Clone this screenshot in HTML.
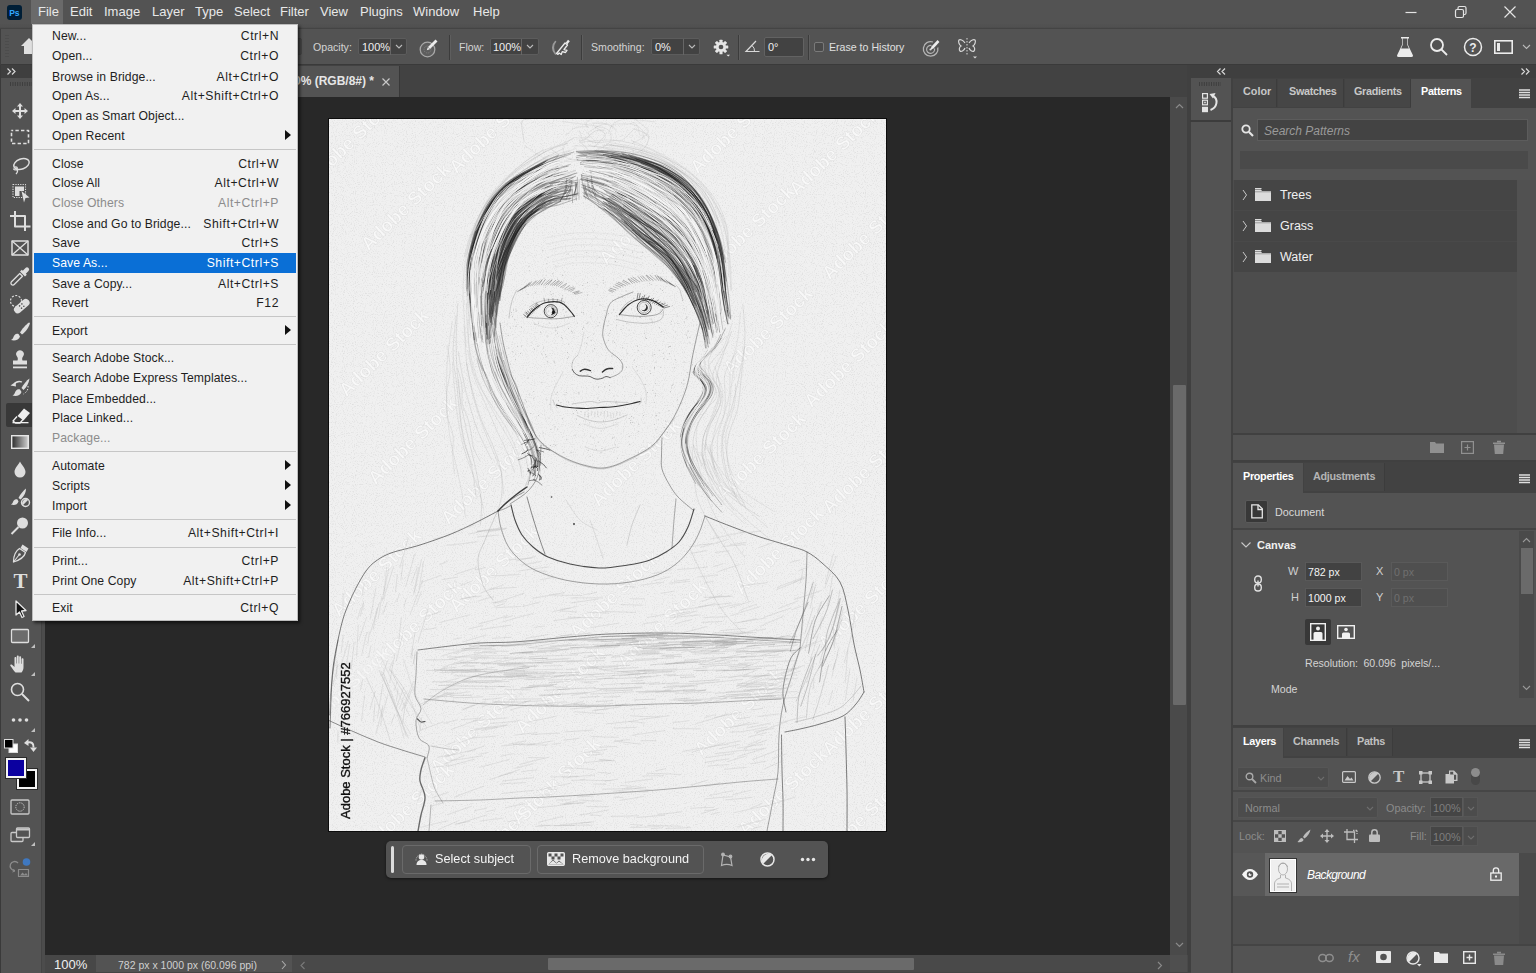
<!DOCTYPE html>
<html><head><meta charset="utf-8"><title>Photoshop</title>
<style>
*{box-sizing:border-box;margin:0;padding:0}
html,body{width:1536px;height:973px;overflow:hidden;background:#535353;font-family:"Liberation Sans",sans-serif;color:#ddd}
.a,#root div,#root span,#root svg{position:absolute}
#root{position:relative;width:1536px;height:973px;overflow:hidden;background:#535353}
.t{white-space:nowrap;font-size:11px;line-height:14px;color:#d4d4d4}
.b{font-weight:bold}
svg{overflow:visible}
/* menubar */
#menubar{left:0;top:0;width:1536px;height:24px;background:#535353}
#menubar .m{top:3px;font-size:13px;line-height:17px;color:#e8e8e8;white-space:nowrap}
#band{left:0;top:24px;width:1536px;height:6px;background:linear-gradient(#525252 0,#505050 55%,#444 70%,#444 100%)}
#optbar{left:0;top:29px;width:1536px;height:36px;background:#535353;border-bottom:1px solid #3a3a3a}
.inp{background:#424242;border:1px solid #5c5c5c;height:17px;border-radius:2px}
.vsep{width:1px;background:#3c3c3c;border-right:1px solid #5e5e5e;box-sizing:content-box}
/* doc area */
#tabrow{left:44px;top:65px;width:1144px;height:32px;background:#424242}
#canvas{left:45px;top:97px;width:1125px;height:858px;background:#282828}
#toolbar{left:0;top:78px;width:45px;height:895px;background:#535353}
#tbhead{left:0;top:65px;width:45px;height:13px;background:#3f3f3f}
/* file menu */
#fmenu{left:32px;top:24px;width:266px;height:597px;background:#f1f1f1;border:1px solid #bdbdbd;box-shadow:2px 2px 3px rgba(0,0,0,.6);font-size:12.2px;color:#1e1e1e}
#fmenu .r{left:1px;width:262px;height:20px;line-height:20px;white-space:nowrap}
#fmenu .r b{position:absolute;left:18px;font-weight:normal;letter-spacing:.08px}
#fmenu .r i{position:absolute;right:17px;font-style:normal;letter-spacing:.55px}
#fmenu .r.d{color:#8c8c8c}
#fmenu .r.h{background:#0a6fd6;color:#fff}
#fmenu .s{left:1px;width:262px;height:1px;background:#c6c6c6}
#fmenu .ar{right:5px;top:4px;width:0;height:0;border-left:6px solid #111;border-top:5.5px solid transparent;border-bottom:5.5px solid transparent}
</style></head><body><div id="root">
<div id="menubar">
<div style="left:31px;top:0;width:32px;height:24px;background:#6a6a6a"></div>
<svg style="left:7px;top:5px" width="15" height="15" viewBox="0 0 15 15"><rect width="15" height="15" rx="3" fill="#001e36"/><text x="2.2" y="11" font-family="Liberation Sans,sans-serif" font-size="8.5" font-weight="bold" fill="#31a8ff">Ps</text></svg>
<div class="m" style="left:38px">File</div><div class="m" style="left:70px">Edit</div><div class="m" style="left:104px">Image</div><div class="m" style="left:152px">Layer</div><div class="m" style="left:195px">Type</div><div class="m" style="left:234px">Select</div><div class="m" style="left:280px">Filter</div><div class="m" style="left:320px">View</div><div class="m" style="left:360px">Plugins</div><div class="m" style="left:413px">Window</div><div class="m" style="left:473px">Help</div>
<svg style="left:1400px;top:4px" width="124" height="16" viewBox="0 0 124 16" fill="none" stroke="#e4e4e4" stroke-width="1.2"><path d="M5.5 8.5h11"/><rect x="55.5" y="5.5" width="8" height="8" rx="1.5"/><path d="M58 5.5v-1.5a1.5 1.5 0 0 1 1.500-1.500h5a1.500 1.500 0 0 1 1.500 1.500v5a1.500 1.500 0 0 1-1.500 1.500h-1.500"/><path d="M104.500 2.500l11 11M115.500 2.500l-11 11"/></svg>
</div>
<div id="band"></div>
<div id="optbar">
<div style="left:0;top:0;width:1px;height:36px;background:#3e3e3e"></div>
<!-- grip + home -->
<svg style="left:5px;top:6px" width="4" height="24"><path d="M1 0v24M3 0v24" stroke="#474747" stroke-width="1" stroke-dasharray="1 2"/></svg>
<svg style="left:21px;top:9px" width="16" height="17" viewBox="0 0 16 17"><path d="M8 0L0 8h3v8h10V8h3z" fill="#e0e0e0"/></svg>
<div class="inp" style="left:291px;top:9px;width:11px;border-color:#444;background:#484848"></div>
<div class="t" style="left:313px;top:11px;font-size:10.6px">Opacity:</div>
<div class="inp" style="left:358px;top:9px;width:49px"></div><div style="left:390px;top:10px;width:1px;height:16px;background:#666"></div>
<div class="t" style="left:362px;top:11px;color:#f0f0f0;font-size:11px">100%</div>
<svg style="left:395px;top:15px" width="8" height="6" fill="none" stroke="#bbb" stroke-width="1.1"><path d="M1 1l3 3 3-3"/></svg>
<svg style="left:417px;top:8px" width="24" height="22" viewBox="417 37 24 22" fill="none"><circle cx="427.500" cy="49.500" r="7.300" stroke="#a8a8a8" stroke-width="1.300" fill="#5e5e5e"/><circle cx="427.500" cy="49.500" r="3.500" stroke="#8a8a8a" stroke-width=".8" stroke-dasharray="1 1"/><path d="M429 48l7.500-7.500" stroke="#ececec" stroke-width="2.800"/><path d="M426.800 50.200l1-3 2 2z" fill="#ececec"/></svg>
<div class="vsep" style="left:449px;top:6px;height:25px"></div>
<div class="t" style="left:459px;top:11px;font-size:10.6px">Flow:</div>
<div class="inp" style="left:490px;top:9px;width:49px"></div><div style="left:521px;top:10px;width:1px;height:16px;background:#666"></div>
<div class="t" style="left:493px;top:11px;color:#f0f0f0">100%</div>
<svg style="left:526px;top:15px" width="8" height="6" fill="none" stroke="#bbb" stroke-width="1.1"><path d="M1 1l3 3 3-3"/></svg>
<svg style="left:548px;top:8px" width="24" height="22" viewBox="548 37 24 22" fill="none"><path d="M555.500 41.500a8.500 8.500 0 0 0 0 12.500a10 10 0 0 1 0-12.500z" fill="#9a9a9a" stroke="#9a9a9a" stroke-width="1.600" stroke-linejoin="round"/><path d="M556.500 53.500l8.500-10.500 2.500 2-3.500 4.500 3 .8-1.500 2.200-3.300-.8-1 2.800-2-1.600-1.200 1.500z" stroke="#ececec" stroke-width="1.300" stroke-linejoin="round"/><path d="M565.500 43l2.500-3.200 1.800 1.500-2.300 3z" fill="#ececec"/></svg>
<div class="vsep" style="left:581px;top:6px;height:25px"></div>
<div class="t" style="left:591px;top:11px;font-size:10.6px">Smoothing:</div>
<div class="inp" style="left:651px;top:9px;width:49px"></div><div style="left:683px;top:10px;width:1px;height:16px;background:#666"></div>
<div class="t" style="left:655px;top:11px;color:#f0f0f0">0%</div>
<svg style="left:688px;top:15px" width="8" height="6" fill="none" stroke="#bbb" stroke-width="1.1"><path d="M1 1l3 3 3-3"/></svg>
<svg style="left:711px;top:8px" width="20" height="20" viewBox="-11 -11 22 22"><g fill="#e6e6e6"><circle r="5.600"/><rect x="-1.700" y="-8" width="3.400" height="16" rx=".6"/><rect transform="rotate(45)" x="-1.700" y="-8" width="3.400" height="16" rx=".6"/><rect transform="rotate(90)" x="-1.700" y="-8" width="3.400" height="16" rx=".6"/><rect transform="rotate(135)" x="-1.700" y="-8" width="3.400" height="16" rx=".6"/></g><circle r="2.600" fill="#535353"/><path d="M6 8.500h4l-2 2z" fill="#e6e6e6"/></svg>
<div class="vsep" style="left:738px;top:6px;height:25px"></div>
<svg style="left:745px;top:11px" width="15" height="13" viewBox="0 0 15 13" fill="none" stroke="#d8d8d8" stroke-width="1.2"><path d="M11 1L1 11.500h13.500"/><path d="M7 5.500a7 7 0 0 1 2.500 6" stroke-width="1"/></svg>
<div class="inp" style="left:764px;top:8px;width:40px;height:20px;border-color:#626262"></div>
<div class="t" style="left:768px;top:11px;color:#f0f0f0">0°</div>
<div class="vsep" style="left:808px;top:6px;height:25px"></div>
<div style="left:814px;top:13px;width:10px;height:10px;border:1px solid #7a7a7a;border-radius:2px;background:#4a4a4a"></div>
<div class="t" style="left:829px;top:11px;font-size:10.600px;color:#e0e0e0">Erase to History</div>
<svg style="left:920px;top:8px" width="24" height="22" viewBox="920 37 24 22" fill="none"><path d="M933 42a7.300 7.300 0 1 0 4.800 5.500" stroke="#b4b4b4" stroke-width="1.300"/><path d="M931.500 45.500a4 4 0 1 0 3 3" stroke="#b4b4b4" stroke-width="1.200"/><circle cx="930.500" cy="49.500" r="1.100" fill="#d8d8d8"/><path d="M932 48l6.500-7" stroke="#ececec" stroke-width="2.600"/><path d="M930.300 49.800l1-2.800 1.800 1.800z" fill="#ececec"/></svg>
<svg style="left:955px;top:7px" width="24" height="24" viewBox="0 0 24 24" fill="none" stroke="#d8d8d8" stroke-width="1.200"><path d="M10 7c-2-3-5-4-6-3s0 5 2 6c-2 1-2 4-1 5s4 0 5-3"/><path d="M14 7c2-3 5-4 6-3s0 5-2 6c2 1 2 4 1 5s-4 0-5-3"/><path d="M12 2v18" stroke-dasharray="1.500 1.500" stroke-width="1"/><path d="M18 20.500h4l-2 2z" fill="#d8d8d8" stroke="none"/></svg>
<!-- right icons -->
<svg style="left:1396px;top:7px" width="18" height="22" viewBox="0 0 18 22"><path d="M5 1h8v1.500h-1.200v6l5 10.500a1.500 1.500 0 0 1-1.400 2h-12.800a1.500 1.500 0 0 1-1.400-2l5-10.500v-6h-1.200z" fill="#ececec"/><path d="M6.800 2.500h4.400v6.300l1.700 3.700h-7.800l1.700-3.700z" fill="#535353"/></svg>
<svg style="left:1429px;top:8px" width="20" height="20" viewBox="0 0 20 20" fill="none" stroke="#ececec" stroke-width="1.800"><circle cx="8" cy="8" r="6"/><path d="M12.500 12.500l5.500 5.500"/></svg>
<svg style="left:1463px;top:8px" width="20" height="20" viewBox="0 0 20 20"><circle cx="10" cy="10" r="8.500" fill="none" stroke="#ececec" stroke-width="1.500"/><text x="10" y="14.500" text-anchor="middle" font-family="Liberation Sans,sans-serif" font-weight="bold" font-size="12" fill="#ececec">?</text></svg>
<svg style="left:1494px;top:11px" width="20" height="15" viewBox="0 0 20 15"><rect x=".8" y=".8" width="17.400" height="12.400" fill="none" stroke="#ececec" stroke-width="1.600"/><rect x="3" y="3" width="3" height="8" fill="#ececec"/></svg>
<svg style="left:1522px;top:15px" width="9" height="6" fill="none" stroke="#bbb" stroke-width="1.1"><path d="M1 1l3.500 3.500 3.500-3.500"/></svg>
</div>
<div id="tabrow">
<div style="left:0;top:1px;width:356px;height:31px;background:#535353;border-right:1px solid #383838"></div>
<div class="t b" style="right:814px;top:9px;font-size:12px;color:#e6e6e6">AdobeStock_766927552.jpeg @ 100% (RGB/8#) *</div>
<svg style="left:338px;top:13px" width="8" height="8" stroke="#c8c8c8" stroke-width="1.2"><path d="M.5.5l7 7M7.500.5l-7 7"/></svg>
</div>
<div id="canvas"></div>
<!-- v scrollbar -->
<div style="left:1170px;top:97px;width:17px;height:858px;background:#4a4a4a"></div>
<div style="left:1187px;top:65px;width:4px;height:908px;background:#404040"></div>
<svg style="left:1175px;top:103px" width="9" height="6" fill="none" stroke="#8a8a8a" stroke-width="1.2"><path d="M1 5l3.500-3.500 3.500 3.500"/></svg>
<svg style="left:1175px;top:942px" width="9" height="6" fill="none" stroke="#8a8a8a" stroke-width="1.2"><path d="M1 1l3.500 3.500 3.500-3.500"/></svg>
<div style="left:1173px;top:385px;width:13px;height:320px;background:#6a6a6a;border-radius:1px"></div>
<!-- status bar -->
<div style="left:45px;top:955px;width:1143px;height:18px;background:#494949"></div>
<div style="left:45px;top:955px;width:51px;height:18px;background:#474747"></div>
<div class="t" style="left:54px;top:957px;font-size:13px;line-height:16px;color:#f0f0f0">100%</div>
<div style="left:96px;top:955px;width:196px;height:18px;background:#535353"></div>
<div class="t" style="left:118px;top:958px;font-size:10.500px;color:#d0d0d0">782 px x 1000 px (60.096 ppi)</div>
<svg style="left:281px;top:960px" width="6" height="10" fill="none" stroke="#aaa" stroke-width="1.1"><path d="M1 1l3.500 4-3.500 4"/></svg>
<svg style="left:300px;top:961px" width="6" height="9" fill="none" stroke="#7a7a7a" stroke-width="1.1"><path d="M4.500 1l-3.500 3.500 3.500 3.500"/></svg>
<svg style="left:1157px;top:961px" width="6" height="9" fill="none" stroke="#8a8a8a" stroke-width="1.1"><path d="M1 1l3.500 3.500-3.500 3.500"/></svg>
<div style="left:548px;top:958px;width:366px;height:12px;background:#6a6a6a;border-radius:1px"></div>
<div style="left:1170px;top:955px;width:17px;height:18px;background:#4f4f4f"></div>
<div style="left:0;top:972px;width:1536px;height:1px;background:#444"></div>
<div style="left:328px;top:118px;width:559px;height:714px;background:#0c0c0c"></div>
<div id="doc" style="left:329px;top:119px;width:557px;height:712px;background:#f0f0f0;overflow:hidden">
<svg id="sk" style="left:0;top:0" width="557" height="712" viewBox="329 119 557 712">
<defs><filter id="gr" x="0" y="0" width="100%" height="100%"><feTurbulence type="fractalNoise" baseFrequency=".9" numOctaves="2" seed="3"/><feColorMatrix values="0 0 0 0 0  0 0 0 0 0  0 0 0 0 0  2 0 0 0 -1"/></filter></defs><rect x="329" y="119" width="557" height="712" filter="url(#gr)" opacity=".1"/>
<g font-family="Liberation Sans,sans-serif" font-weight="bold" font-size="19" fill="#f9f9f9" stroke="#dcdcdc" stroke-width=".45" text-anchor="middle" opacity=".85">
<text transform="translate(351.0 141.0) rotate(-44)" y="6">Adobe Stock</text>
<text transform="translate(406.0 207.0) rotate(-44)" y="6">Adobe Stock</text>
<text transform="translate(384.0 353.0) rotate(-44)" y="6">Adobe Stock</text>
<text transform="translate(413.0 441.0) rotate(-44)" y="6">Adobe Stock</text>
<text transform="translate(494.0 130.0) rotate(-44)" y="6">Adobe Stock</text>
<text transform="translate(486.0 481.0) rotate(-44)" y="6">Adobe Stock</text>
<text transform="translate(644.0 221.5) rotate(-44)" y="6">Adobe Stock</text>
<text transform="translate(750.0 229.0) rotate(-44)" y="6">Adobe Stock</text>
<text transform="translate(735.0 130.0) rotate(-44)" y="6">Adobe Stock</text>
<text transform="translate(834.0 152.0) rotate(-44)" y="6">Adobe Stock</text>
<text transform="translate(867.0 236.0) rotate(-44)" y="6">Adobe Stock</text>
<text transform="translate(768.0 331.0) rotate(-44)" y="6">Adobe Stock</text>
<text transform="translate(849.0 364.0) rotate(-44)" y="6">Adobe Stock</text>
<text transform="translate(761.0 456.0) rotate(-44)" y="6">Adobe Stock</text>
<text transform="translate(867.0 470.0) rotate(-44)" y="6">Adobe Stock</text>
<text transform="translate(636.0 463.0) rotate(-44)" y="6">Adobe Stock</text>
<text transform="translate(376.6 573.0) rotate(-44)" y="6">Adobe Stock</text>
<text transform="translate(417.0 624.0) rotate(-44)" y="6">Adobe Stock</text>
<text transform="translate(494.0 569.0) rotate(-44)" y="6">Adobe Stock</text>
<text transform="translate(475.0 730.0) rotate(-44)" y="6">Adobe Stock</text>
<text transform="translate(556.0 781.0) rotate(-44)" y="6">Adobe Stock</text>
<text transform="translate(614.5 595.0) rotate(-44)" y="6">Adobe Stock</text>
<text transform="translate(662.0 624.0) rotate(-44)" y="6">Adobe Stock</text>
<text transform="translate(739.0 712.0) rotate(-44)" y="6">Adobe Stock</text>
<text transform="translate(779.0 551.0) rotate(-44)" y="6">Adobe Stock</text>
<text transform="translate(863.0 606.0) rotate(-44)" y="6">Adobe Stock</text>
<text transform="translate(867.0 712.0) rotate(-44)" y="6">Adobe Stock</text>
<text transform="translate(783.0 792.0) rotate(-44)" y="6">Adobe Stock</text>
<text transform="translate(863.0 818.0) rotate(-44)" y="6">Adobe Stock</text>
<text transform="translate(409.5 807.0) rotate(-44)" y="6">Adobe Stock</text>
<text transform="translate(515.7 822.0) rotate(-44)" y="6">Adobe Stock</text>
<text transform="translate(345.0 690.0) rotate(-44)" y="6">Adobe Stock</text>
<text transform="translate(560.0 690.0) rotate(-44)" y="6">Adobe Stock</text>
</g>
<g fill="none" stroke-linecap="round">
<path stroke="#111" stroke-width="0.5" opacity="0.7" d="M548.2 174.7c-3.5 1.6-13 4.3-20.7 9.3c-7.7 5-18.4 12.1-25.3 20.5c-6.9 8.4-11.9 20.3-15.9 30c-4 9.7-6.3 18.8-8.1 28.2c-1.7 9.4-2.4 15.9-2.4 28.4c0 12.5 2.1 39 2.5 46.8M557.8 191.8c-2.2 .7-7.7 1.1-13.4 3.9c-5.6 2.8-14.1 6.8-20.5 12.9c-6.4 6.2-12.9 15.7-17.8 24c-4.9 8.2-8.6 17.8-11.3 25.7c-2.8 7.9-3.8 14.1-5 21.7c-1.3 7.6-2.2 19.8-2.6 23.7M575.4 176.2c-2.6 1.3-10.7 6.2-15.8 8.1c-5.1 1.8-9.2 .7-14.8 3.2c-5.6 2.6-12.7 5.9-18.7 11.8c-6 6-12.1 15.7-17.3 23.9c-5.2 8.3-10.8 17.7-14 25.7c-3.2 8.1-4.2 18.8-5.1 22.6M563 196.9c-2.1 .5-7.5 .5-12.5 2.8c-5 2.4-11.7 5.7-17.5 11.5c-5.7 5.8-12.3 14.6-17.1 23.2c-4.9 8.7-9.3 20.7-12.1 28.8c-2.8 8.2-3.5 13.4-4.9 20.2c-1.3 6.9-2.5 17.4-3 20.9M570.8 198.5c-2.7 .2-10.4 .1-15.7 1.5c-5.3 1.3-10.3 2-16.2 6.6c-6 4.7-14.2 12.3-19.6 21.2c-5.5 8.9-9.9 23.2-13.1 32.3c-3.2 9.1-4.1 15.1-6 22c-1.9 7-4.5 16.5-5.4 19.8M568.5 185.3c-2.9 .5-11.3 1.3-17.3 3.2c-6 1.9-12 3.3-18.9 8.1c-6.9 4.9-16.2 12.4-22.4 21.1c-6.1 8.7-11.1 21.7-14.5 31.1c-3.5 9.5-4.4 17-6 25.4c-1.5 8.4-2.8 20.8-3.4 25M546.2 164.8c-2.8 1.9-9.8 7-16.5 11.6c-6.7 4.5-16.7 9.2-23.6 15.6c-7 6.3-13.5 14.3-18.2 22.4c-4.7 8.1-7.7 17.3-10 26c-2.3 8.7-2.9 17.4-4 26.1c-1.1 8.6-2.2 21.6-2.6 25.9M576.8 173c-3.8 1.3-15.1 4.9-22.9 7.9c-7.9 3.1-15.7 3.5-24.4 10.3c-8.7 6.9-21 19.3-28.1 30.6c-7 11.3-10.9 25.6-14.2 37.2c-3.3 11.6-4.8 18.2-5.4 32.2c-.6 13.9 1.5 43 1.8 51.6M578 194c-2.5 .5-9.9 2.2-14.6 2.6c-4.8 .5-8.5-1.3-13.9 .3c-5.5 1.6-12.7 3.9-18.9 9.2c-6.3 5.2-13.6 13.6-18.7 22.2c-5.1 8.5-9.2 20.8-12 29.2c-2.8 8.4-4.1 17.4-4.9 20.9M560.6 201.5c-2.2 1.1-7.3 3.2-13.3 6.9c-5.9 3.7-15.9 7.2-22.4 15.1c-6.5 7.9-12.9 22.6-16.5 32.4c-3.5 9.9-3.1 18.9-4.9 26.7c-1.8 7.9-4.1 11.5-5.6 20.5c-1.5 8.9-2.9 27.6-3.4 33.1M609.5 161.5c3.9 .9 15.1 2.6 23.5 5.3c8.5 2.8 18.5 6.4 27.1 11c8.7 4.6 17.7 9.6 24.8 16.6c7.1 7 13.1 16.7 17.9 25.7c4.7 8.9 7.9 18.9 10.5 28.2c2.6 9.2 4.4 22.7 5.3 27.3M611.7 179.9c4.8 1.9 19.3 5.4 28.8 11.5c9.6 6.1 19.7 16.5 28.4 25c8.6 8.5 17.7 16.6 23.7 25.9c6 9.4 9.4 19.6 12.4 30.2c3 10.7 3.4 24.1 5.5 33.7c2.1 9.6 5.9 20.1 7.1 24.1M576.7 155.8c4.4-.5 16.7-3.9 26.4-3.3c9.8 .7 20.8 2.8 32 7.1c11.1 4.3 24.2 11.1 34.9 18.9c10.7 7.8 21.5 17.7 29.4 28.1c7.8 10.5 13.6 23 17.7 34.8c4.2 11.8 5.9 30.1 7.1 36.1M630.8 157.1c3.1 1 12.4 3.3 18.3 5.9c6 2.7 11.9 6.1 17.5 10.2c5.6 4 11.2 9.2 16.1 14.2c4.9 4.9 9.3 9.9 13.3 15.5c3.9 5.6 7.4 12.1 10.3 18.3c3 6.2 6.1 15.6 7.3 18.8M632.5 163.5c4.7 2.2 18.9 7.5 27.7 13.2c8.8 5.7 17.9 12.8 24.9 21.1c7 8.4 12.7 19.5 17.3 29c4.5 9.6 7.4 19 10.1 28.4c2.7 9.4 4.2 19.1 5.8 28.1c1.6 9.1 3.2 21.8 3.9 26.2M612 173.8c3 1.3 11.1 4.6 17.9 7.7c6.8 3 15.4 7.1 22.8 10.6c7.4 3.4 15 5.8 21.6 9.9c6.6 4.2 13.1 8.7 18.2 15c5.1 6.3 9.2 15.1 12.4 22.5c3.3 7.4 6 18.2 7.1 21.9M606.4 157.9c4.1 .1 15.7-.7 24.5 1.1c8.7 1.7 19 4.9 28 9.4c8.9 4.6 17.8 11.2 25.4 18.1c7.6 6.9 14.4 15.3 20.1 23.4c5.7 8.1 10.7 16.3 14.2 25c3.5 8.7 5.7 22.6 6.8 27.2M608 156.6c3.2 1 12.1 4 18.9 6.1c6.7 2 14.8 2.5 21.9 6.3c7 3.7 13.9 10.4 20.3 15.9c6.4 5.6 12.6 11 18.1 17.2c5.5 6.1 11.2 12 14.9 19.6c3.8 7.6 6.3 21.7 7.6 26M576.4 151.4c4.7-.1 18-1.3 28.5-.6c10.5 .6 22.5 1.1 34.4 4.5c12 3.5 26.2 8 37.2 16.2c10.9 8.1 21.2 20.9 28.4 32.7c7.3 11.9 11.6 25.6 15.2 38.4c3.6 12.8 5.3 32 6.3 38.4M577.1 159.8c4.8 .4 17.9 .6 28.7 2.6c10.8 2 23.4 4.3 36.1 9.4c12.6 5.2 28.8 11.6 39.8 21.5c10.9 9.8 19.6 24.6 25.8 37.7c6.3 13 8.8 27.2 11.6 40.6c2.9 13.4 4.6 33.1 5.5 39.7M592.7 159.9c4 .9 15.2 3.3 24.3 5.8c9.1 2.4 20.2 4.6 30.3 9c10.1 4.5 21.8 9.6 30.3 17.6c8.6 8 15.7 19.9 21.2 30.6c5.6 10.8 8.8 23.1 12 33.7c3.1 10.6 5.7 24.9 6.9 29.9M580.4 162.8c5.3 0 19.8-2.2 31.6-.4c11.8 1.8 26.3 5 39.2 11.5c12.9 6.4 28 15.8 38 27.4c10.1 11.5 17.1 28.4 22.5 42c5.3 13.7 6.8 27.3 9.7 39.8c2.9 12.5 6.4 29.4 7.7 35.2M606.4 204.5c3.9 3.1 14.9 11.5 23.6 18.6c8.6 7.2 19.5 16.4 28 24.4c8.6 7.9 17.3 15.4 23.5 23.5c6.3 8 10.2 15.5 13.8 24.6c3.7 9.1 6.2 21.6 8.4 30.2c2.1 8.6 3.8 17.7 4.6 21.3M625.1 173.8c2.9 1.4 11.5 5.2 17.2 8.4c5.7 3.3 11.7 7.3 17.2 11.1c5.5 3.8 11 7.5 15.8 12c4.7 4.5 9 9.5 12.8 15.2c3.9 5.6 7.2 12.5 10.1 18.6c3 6.1 6.3 14.8 7.6 17.7M631.3 198.2c3.8 2.3 15.9 9.2 23.2 13.6c7.3 4.5 14.6 7.5 20.7 13c6 5.5 11 13.3 15.5 20c4.5 6.7 8.4 13.6 11.4 20.2c3.1 6.6 5.2 12.5 7.2 19.6c2 7.2 3.9 19.6 4.7 23.5M617.7 211.5c4 3.1 17 13.1 24.3 19c7.4 6 13.6 10.8 19.9 16.7c6.2 5.9 12.8 12.4 17.8 18.9c5 6.4 8.7 13.1 11.9 19.9c3.2 6.8 5 13.9 7.3 20.8c2.4 6.9 5.8 17.2 7 20.7M581.2 178.7c3.7 .9 14.5 3.2 22.2 5.8c7.7 2.7 14.5 4.8 23.9 10c9.5 5.2 23.1 13.4 32.8 21.2c9.7 7.8 18.5 16.1 25.3 25.6c6.8 9.4 11.6 20.6 15.6 31c3.9 10.3 6.9 25.9 8.3 31.1M616.5 198.3c3.8 2 15.4 7.2 22.6 12.3c7.3 5 14.7 11.8 21 18.1c6.2 6.4 11.4 13.4 16.6 20c5.3 6.5 11 13 14.8 19.5c3.8 6.5 5.9 12.1 8 19.4c2.1 7.2 3.8 20.1 4.6 24.1M636.2 174.6c2.9 2.2 11.5 9.3 17.3 13c5.8 3.6 12.1 5 17.5 8.8c5.3 3.9 10.5 8.6 14.6 14.2c4.2 5.7 7 13.9 10.4 19.8c3.3 5.9 7.6 9.7 10 15.6c2.4 5.9 3.5 16.4 4.2 19.7M602 195.1c1.6 1.8 5.1 7.1 9.5 10.5c4.5 3.3 11.1 5.4 17.2 9.5c6.1 4.1 13.7 9.8 19.5 15c5.8 5.3 10 11.9 15.1 16.7c5.1 4.7 11.5 6.6 15.7 11.9c4.3 5.3 8.1 16.8 9.8 20.1M608.3 156.9c3.3 .8 12.8 2.7 19.8 5.1c7.1 2.4 15 5.4 22.5 9.2c7.4 3.8 15.4 8.4 22.3 13.7c6.8 5.3 13.3 11.1 18.6 18c5.3 7 9.6 15.9 13.2 23.9c3.6 7.9 7 19.8 8.5 23.7M612.1 184.9c2.2 1.1 8.3 3.9 13.5 6.6c5.3 2.6 12.2 6.2 18.1 9.3c5.8 3 11.6 6 17.1 9.2c5.5 3.1 11.1 5.5 15.8 9.6c4.6 4.1 8.6 9.6 12.3 15c3.6 5.4 7.9 14.7 9.5 17.6M576.9 183.3c-.2 .9-.4 3.5-.9 5.2c-.5 1.8-1.8 4.6-2.1 5.5M571.2 185.7c-.3 1.1-.7 4.6-1.5 6.9c-.9 2.2-3 5.5-3.5 6.6M576.1 183.6c-.1 1.1-.3 4.4-.7 6.6c-.4 2.1-1.4 5.3-1.6 6.3"/>
<path stroke="#333" stroke-width="0.5" opacity="0.65" d="M559.7 181.7c-2.4 .5-9 .6-14.1 3.1c-5.2 2.5-10.6 6.9-16.8 11.7c-6.3 4.7-14.6 9.8-20.6 16.7c-5.9 6.9-11.7 16.5-15.3 24.6c-3.6 8-4.7 16.1-6.4 23.7c-1.8 7.5-3.3 17.7-4 21.3M560.3 201.3c-1.6 .4-5.8 .5-9.9 2.4c-4.2 1.9-9.8 4.6-14.8 8.9c-5.1 4.3-11 9.7-15.6 16.8c-4.5 7.2-8.9 18.5-11.8 26.1c-2.9 7.5-4 13.3-5.5 19.3c-1.4 6-2.4 13.9-2.9 16.6M547.1 196.9c-3.2 2-13.1 6.2-19.4 12.2c-6.2 6-13 15.6-18.2 23.8c-5.2 8.3-9.6 18-12.8 25.8c-3.2 7.7-4.7 13.3-6.2 20.7c-1.5 7.4-2.4 13.5-2.7 23.5c-.3 10.1 .6 30.6 .8 36.7M532.4 180.7c-3.8 2.8-15.7 10.3-22.3 17.2c-6.7 6.9-13.4 15.4-17.8 24.1c-4.3 8.7-6.2 19.5-8.4 28.1c-2.2 8.6-3.8 14.9-4.9 23.3c-1.1 8.4-2.2 15.7-1.7 27.1c.6 11.5 4 34.5 4.8 41.4M571.2 189.8c-2.2 .4-9.2 1.7-13.2 2.1c-4 .5-6.7-.8-10.8 .7c-4.2 1.5-9.3 4.2-14.1 8.3c-4.8 4-10.3 9.5-14.8 15.9c-4.4 6.4-8.5 15.6-12 22.7c-3.4 7-7.3 16.5-8.7 19.8M570.6 190.9c-2.9 1.4-11.2 5-17.5 8.2c-6.3 3.2-13.2 4.5-20.3 10.8c-7.2 6.3-17 16.8-22.5 26.8c-5.5 10-8.4 23.1-10.5 33.1c-2.1 10-1.1 16.9-2 26.9c-.9 10.1-2.8 27.9-3.4 33.5M554.2 196.1c-1.4 .5-5.1 1-8.4 3c-3.2 2.1-7.1 5.6-11 9.1c-3.9 3.6-8.5 7.5-12.2 12.4c-3.8 4.9-7.1 11.3-10.3 17.1c-3.1 5.9-6.4 12.6-8.6 17.9c-2.3 5.3-4.2 11.6-5 14M557.5 157c-2.3 1.8-8.9 8-14 10.9c-5 3-10 3.6-16.3 6.9c-6.4 3.3-16.1 6.7-21.9 13c-5.9 6.2-8.8 17-13.2 24.4c-4.3 7.3-10 12.6-13 19.7c-3.1 7.1-4.4 19-5.2 22.8M576.4 198.8c-2.9 1-11.8 4.1-17.4 6c-5.6 1.8-9.5 .7-15.9 5.2c-6.5 4.5-16.6 12.5-22.8 21.8c-6.2 9.4-11.2 24.6-14.5 34.3c-3.3 9.8-3.6 15.9-5.1 24.3c-1.5 8.5-3.4 22.1-4.1 26.5M547.7 160.2c-2.6 1.4-9.6 5-15.8 8.7c-6.1 3.8-14.5 8.1-21.2 13.6c-6.7 5.5-13.6 12.2-18.8 19.5c-5.2 7.4-9.1 16.6-12.3 24.6c-3.2 8-5.1 15.6-6.8 23.4c-1.7 7.8-3 19.6-3.6 23.5M547.1 174.5c-2.1 1.5-7.3 5.7-12.4 9.2c-5.1 3.5-12.2 7.4-18.1 11.8c-6 4.4-12.5 8.6-17.3 14.7c-4.8 6.1-8.7 14.4-11.4 21.7c-2.8 7.3-3.4 15.3-5 22.1c-1.5 6.9-3.5 15.9-4.2 19M540.2 171.9c-2.4 1.3-8.8 4.7-14 7.8c-5.3 3.2-12.2 6.6-17.3 11.1c-5.2 4.5-9.7 10.1-13.7 15.9c-4 5.9-7.5 12.9-10.3 19c-2.9 6.1-5 11.8-6.9 17.7c-1.8 5.9-3.5 14.9-4.2 17.9M551.6 197.4c-2.4 1.3-9 4.1-14.7 7.7c-5.7 3.7-14 7.3-19.5 14.2c-5.5 6.8-10.5 18.4-13.6 26.9c-3.1 8.5-3.9 16.5-5 23.9c-1.2 7.5-.8 14-1.6 20.8c-.8 6.8-2.6 16.8-3.1 20.2M566.5 199c-2.7 .2-10-1.7-16.1 1.1c-6 2.7-13.3 8.2-20.2 15.4c-7 7.2-16 18.7-21.6 27.8c-5.6 9-9.5 17.6-11.8 26.4c-2.3 8.8-1.1 16.2-2.1 26.3c-1.1 10.2-3.6 28.7-4.3 34.5M571.7 180.4c-3.2 .5-13.1 1.3-19.6 3.3c-6.4 2-12.1 3.7-19.2 8.7c-7.1 5.1-16.5 12.9-23.2 21.7c-6.8 8.8-12.8 21.9-17.2 31.2c-4.3 9.3-6.7 15.9-8.8 24.7c-2.1 8.8-3 23.3-3.7 27.9M562.5 174.2c-3.3 1.2-12.1 3.2-19.8 7.3c-7.7 4.1-18.3 8.8-26.2 17c-7.9 8.3-16 21.9-21.2 32.5c-5.2 10.6-7.9 20.7-10.2 31c-2.4 10.2-3.5 17.7-3.9 30.6c-.3 13 1.4 39.3 1.7 47.1M572.9 177.3c-3.9 1-15.3 2.3-22.9 6c-7.7 3.7-15.2 8.2-23.2 16.2c-8.1 8.1-18.8 21.3-25 32.2c-6.3 10.9-10.2 22.1-12.6 33.3c-2.4 11.2-1.7 20.6-1.9 33.8c-.3 13.2 .4 37.8 .5 45.3M540.8 189.2c-1.7 .9-6.6 3.1-10.1 5.5c-3.4 2.3-7.3 5.2-10.7 8.5c-3.4 3.2-6.7 6.9-9.6 11c-3 4-5.8 8.7-8.4 13.2c-2.5 4.4-5.1 9.4-7 13.5c-1.9 4.2-3.7 9.5-4.4 11.4M628.5 186.6c3.5 1.9 14.2 7.7 20.8 11.7c6.6 4.1 12.8 7.8 18.6 12.3c5.9 4.5 11.8 9 16.5 14.7c4.8 5.7 8.6 13.1 12.1 19.6c3.4 6.4 6.1 12.9 8.4 19.1c2.4 6.3 4.6 15.4 5.5 18.5M581.6 176.8c3.5 1.1 13.9 3.9 21 6.5c7.2 2.7 13.2 4.6 22 9.3c8.7 4.7 21.2 12.4 30.5 19c9.3 6.6 18.1 12.4 25.4 20.6c7.2 8.1 13.4 19 18.1 28.2c4.6 9.3 8.2 22.7 9.8 27.2M605.1 202.7c1.6 .6 5.7-.1 10 3.3c4.2 3.4 10.2 12 15.6 17.3c5.5 5.3 11.6 10.7 17.1 14.5c5.5 3.8 11.4 4.1 15.9 8.5c4.5 4.4 7.5 12.1 11 17.8c3.5 5.8 8.3 13.9 9.9 16.6M589.3 187.3c3.4 2 12 6.8 20.2 12.4c8.2 5.6 19 14.1 28.8 21c9.9 6.9 21.8 11.9 30.3 20.5c8.5 8.6 15.5 21.1 20.7 31.1c5.2 10 7.3 19.4 10.5 28.9c3.2 9.5 7.4 23.5 8.9 28.2M599.4 187.3c3.2 1.7 10.9 5.3 19.5 10.5c8.5 5.1 22.2 13.6 32 20.3c9.8 6.7 19.4 11.3 26.8 19.7c7.4 8.4 13.1 21.1 17.7 30.7c4.7 9.6 7.3 17.7 10.2 26.9c2.9 9.2 6.2 23.6 7.4 28.3M621.7 184.2c3.2 2.1 13 8 19.5 12.4c6.4 4.4 13.4 9.2 19.5 13.9c6.1 4.7 12 8.7 17 14.4c5.1 5.6 9.4 12.6 13.1 19.2c3.8 6.5 7.2 13.5 9.6 20c2.5 6.6 4.4 16.1 5.3 19.3M630.3 193.3c4 2.1 16.7 8.2 24.1 12.8c7.3 4.6 14.1 9.3 20.2 15c6.1 5.6 11.8 12 16.5 18.8c4.7 6.7 8.7 14.6 11.7 21.8c3 7.1 4.3 13.9 6.3 21c1.9 7.2 4.6 18.3 5.6 22M582.4 173.1c3.5 1.1 13.9 4.2 21 6.3c7.2 2.2 13.4 2.3 21.9 6.6c8.5 4.3 20 12.4 29 19.2c8.9 6.7 17.5 13.4 24.6 21.5c7.2 8 13.7 17.9 18.4 26.7c4.8 8.8 8.4 21.7 10 26.1M623.9 223.8c3.2 3.1 13.5 13.5 19.4 18.7c5.8 5.2 10.6 8 15.6 12.6c5 4.7 10.1 9.6 14.3 15.2c4.2 5.5 7.7 12.9 10.8 18.3c3.1 5.3 5.2 9 7.7 13.9c2.5 4.9 6.1 12.8 7.3 15.4M585.8 188.9c2.6 1.5 10.8 7 16.1 9c5.2 2 8.6-.3 15.3 2.8c6.6 3.1 16.6 10.3 24.4 15.8c7.9 5.5 15.4 11.7 22.5 17.4c7 5.7 14.1 10.7 19.9 16.7c5.8 6.1 12.2 16.4 14.7 19.7M581.6 187.3c2.7 1.4 11.1 5.7 16.1 8.1c5 2.4 7.6 2.7 13.8 6.1c6.3 3.4 15.5 9 23.5 14.3c7.9 5.2 16.9 11.2 24.4 17.1c7.4 5.9 14.4 11.5 20.2 18.3c5.8 6.7 12.3 18.4 14.7 22.1M610.5 155.2c3.5 1 13.5 2.8 20.7 5.9c7.2 3 15.1 8.2 22.6 12.6c7.5 4.4 15.6 8.5 22.5 13.7c7 5.2 14 10.1 19.1 17.5c5.2 7.4 8.6 18.4 11.6 27.1c3 8.7 5.4 20.8 6.5 24.9M589.3 162.6c4.8 .6 18.2 .6 29.1 3.5c10.9 3 24.4 7.9 36 14.1c11.7 6.3 24.7 13.5 33.9 23.3c9.2 9.8 16.2 23.6 21.4 35.6c5.1 12.1 7 24.7 9.3 36.9c2.4 12.3 4.2 30.6 5 36.7M617.2 212.7c4.4 3 18.5 11.7 26.3 17.7c7.8 5.9 14.3 11.3 20.4 18.2c6.2 7 11.8 16.5 16.7 23.5c4.9 7 9.4 12 12.9 18.5c3.6 6.5 6.2 13.1 8.3 20.7c2 7.5 3.2 20.6 3.9 24.8M583.2 195.7c2.4 1.7 10.4 7 14.8 10.1c4.3 3.1 5.8 3.5 11.3 8.4c5.5 4.9 14.3 14.4 21.6 21c7.4 6.7 15.6 12.8 22.6 18.8c6.9 6 13.5 11.1 19.1 17.3c5.6 6.3 12.1 16.8 14.6 20.2M613.1 162.7c4.2 1.2 16.1 3.8 25 6.9c8.9 3.1 19.7 6.7 28.7 11.7c8.9 4.9 18 10.6 25 18.2c7 7.6 12.5 18.3 16.9 27.3c4.5 9.1 7.3 17.7 9.7 27.1c2.5 9.3 4.1 24.2 5 29M605.4 191.1c2.2 1.2 7.4 4.3 13.5 7.5c6.1 3.1 15.9 6.4 23 11.3c7.1 4.8 13.5 11.6 19.4 17.7c5.9 6 10.7 12.7 15.8 18.6c5.2 5.9 11.4 10.7 15.1 16.9c3.7 6.1 6 16.8 7.2 20.1M606.4 192.7c2.2 .7 7.6 1.9 13.3 4.1c5.7 2.3 14.2 6.1 20.9 9.5c6.6 3.3 13.3 6.6 19.3 10.7c6 4 11.7 8 16.7 13.5c4.9 5.4 9.2 12.9 12.9 19.2c3.8 6.4 7.9 15.6 9.5 18.7M598.2 206.9c1.7 .9 5.3 2.1 9.8 4.9c4.5 2.8 10.5 6.9 17 11.9c6.5 4.9 15.4 12.6 21.9 17.9c6.6 5.4 12.1 8.8 17.6 14.2c5.4 5.5 10.7 12.9 15.1 18.7c4.4 5.8 9.3 13.5 11.1 16.2M586.5 157.5c4 .5 15.5 1.3 24.3 3c8.7 1.8 18.3 3.8 28.1 7.5c9.8 3.6 21.2 8 30.7 14.3c9.4 6.2 19 14 25.9 23.2c6.9 9.2 11.5 21.5 15.5 32c3.9 10.4 6.8 25.4 8.2 30.5M586.3 159.7c5.2 .7 19.4 1.1 30.8 4c11.4 2.9 25.5 7.3 37.6 13.5c12.2 6.3 25.7 13.9 35.2 24.1c9.5 10.2 16.7 24.7 22 37.1c5.4 12.5 7.5 25.3 10.1 37.7c2.6 12.4 4.8 30.5 5.7 36.6M588.8 193.9c3.2 2.1 11.4 6.4 19.3 12.5c7.9 6.1 18.6 16.1 28 24.1c9.3 8 19.8 15.2 28.1 24c8.2 8.9 15.6 20 21.2 29.1c5.6 9.1 8.7 16.7 12.3 25.6c3.5 8.9 7.5 23 9 27.6M619.5 164.2c3.9 1.7 15.5 5.9 23.5 10.2c8 4.2 16.8 9.5 24.4 15.3c7.6 5.8 15.3 11.8 21.2 19.5c5.8 7.8 10.4 18 14.1 26.8c3.8 8.8 6.2 17.4 8.3 25.9c2.2 8.6 3.9 21.1 4.6 25.3M581 179.8c4 1.5 15.1 5.1 23.7 9c8.5 4 17.4 8.2 27.8 14.6c10.4 6.4 24.5 14.8 34.4 24c9.9 9.2 18.5 20.8 24.8 31.2c6.3 10.5 9.5 20.8 13 31.7c3.4 10.9 6.3 28.2 7.5 33.9M586.7 161c3.5 .4 13.9 .9 20.7 2.7c6.9 1.8 12.8 5.2 20.6 8.2c7.8 3 17.9 5.9 26.4 9.9c8.5 3.9 17.5 7.3 24.6 13.6c7.1 6.3 12.9 15.5 17.9 24c5 8.5 10.1 22.6 12.1 27.1M637.2 167.2c4 2.3 16.5 8.9 24.2 14.1c7.7 5.3 15.6 11.1 22.2 17.6c6.7 6.5 12.8 13.9 17.7 21.4c4.9 7.5 8.9 15.2 11.7 23.4c2.8 8.2 4.1 16.6 5.2 25.5c1.1 9 1.2 23.7 1.5 28.4M612.3 194.7c2.9 1.7 11.2 6.2 17.8 10.3c6.5 4.1 15 9.7 21.6 14.2c6.7 4.4 12.6 7.4 18.2 12.4c5.5 5.1 10.7 11.6 15.1 17.8c4.3 6.2 8.1 12.9 11.1 19.2c2.9 6.3 5.5 15.5 6.5 18.6M609.3 201.2c4 2.5 15.4 9.4 23.8 14.9c8.4 5.5 18.8 11.5 26.7 18c8 6.4 15.1 13.4 21.1 20.8c5.9 7.4 10.7 15.8 14.7 23.6c4 7.9 6.8 15.6 9.3 23.7c2.6 8.1 5 20.9 6 25.1M603.2 203.6c1.8 .6 5.5 1.3 10.8 3.9c5.2 2.5 14 6.6 20.7 11.3c6.6 4.8 12.9 12.7 19.2 17c6.2 4.3 13 4.6 18.5 9c5.5 4.4 10.5 11.4 14.4 17.5c3.8 6.1 7.2 16 8.6 19.2M583.9 183.7c.2 1.1 .5 4.4 1 6.6c.5 2.1 1.9 5.3 2.2 6.3M590.9 171.3c.3 2.1 .7 9 1.5 12.9c.9 3.9 3 8.9 3.6 10.6M485.3 372.2c.9 2.6 3.5 10.8 5.7 16c2.2 5.3 4.7 10.7 7.5 15.6c2.7 4.9 5.9 9.1 8.9 13.5c3 4.5 6.1 8.4 9.3 13.2c3.1 4.8 7.1 10.3 9.7 15.6c2.5 5.3 4.8 13.4 5.7 16.1M485.8 349.7c1 3.9 4 15.9 6.3 23.2c2.3 7.2 4.2 13.9 7.6 20.3c3.4 6.4 9.3 12.2 12.9 18.1c3.6 6 5.9 11.3 8.8 17.6c2.9 6.2 6.4 13.5 8.8 19.9c2.4 6.5 4.8 15.8 5.7 18.9M476.9 343.1c1.3 4.8 4.4 19.9 7.5 28.8c3.1 8.8 6.9 16.6 11 24.1c4.1 7.5 9.2 13.8 13.6 20.8c4.4 6.9 9.3 13.1 13 20.6c3.7 7.6 8.4 16.8 9.4 24.7c1 7.9-2.9 19-3.4 22.8M493.8 349.8c1 3.8 3.6 15.7 6.2 22.8c2.7 7.2 6.7 13.8 9.7 20.3c3 6.4 5.7 12.4 8.6 18.4c2.9 6 5.7 11.6 8.7 17.7c3 6 7.1 12.4 9.1 18.7c2 6.4 2.4 16.1 2.9 19.3M698.1 372.1c1.8 1.7 9 6.4 10.8 9.8c1.8 3.4 1.1 6.9 .1 10.6c-1.1 3.7-3.8 7.3-6.4 11.5c-2.6 4.2-6.3 9-9.1 13.8c-2.8 4.9-6.5 10.1-7.6 15.1c-1.2 5.1-.2 10.2 .7 15.3c.8 5 2.5 10 4.6 15.2c2.1 5.1 6.7 13 8.1 15.5M708.3 353.8c-1.5 1.5-7.5 5.7-8.9 8.9c-1.4 3.1-.9 6.6 .5 10.1c1.4 3.6 6.7 7.5 8 11.2c1.3 3.7 1.1 6.9-.2 10.8c-1.3 3.9-4.8 8-7.8 12.6c-3 4.7-7.5 10-10.2 15.2c-2.8 5.2-5.8 10.7-6.3 16c-.4 5.3 3.2 13.1 3.8 15.7M702.1 360.1c-.5 1.5-4.2 6.2-2.9 9.2c1.2 3 7.9 6 10.3 9c2.3 3 3.5 5.9 3.7 9.1c.1 3.2-1 6.7-2.9 10.1c-2 3.5-6.1 6.8-8.9 10.6c-2.8 3.8-5.8 8.2-8 12.4c-2.3 4.2-4.3 8.5-5.4 12.8c-1 4.3-.6 10.8-.7 13M725.3 328.7c-1.7 3.2-5.9 13.4-10.2 19.1c-4.4 5.8-14.8 9.7-15.6 15.1c-.8 5.5 9.6 11.7 10.9 17.9c1.3 6.2 .2 12.2-3.1 19.4c-3.3 7.3-13.4 15.6-16.6 24c-3.3 8.4-4.7 17.4-2.9 26.2c1.8 8.9 7.9 17.7 13.5 26.7c5.7 9 17 23 20.4 27.5M720.8 334.4c-1.3 2.4-4.2 9.7-7.7 14.4c-3.4 4.6-11.7 8.6-13 13.5c-1.4 5 3.4 10.8 4.8 16.2c1.5 5.3 5.3 10.3 3.7 16.2c-1.6 5.9-9.5 12.1-13.1 19.3c-3.7 7.1-8.1 15.8-8.8 23.8c-.8 8 1.3 16 4.2 24c2.9 8 10.9 20 13 24M705.5 355.4c-.7 .7-1.8 1.3-3.8 4.2c-2 2.8-8.5 8.9-8.3 12.9c.3 4 7.8 7.3 9.8 11c2 3.8 4.1 7.2 2.2 11.6c-1.9 4.3-9.8 8.9-13.4 14.4c-3.6 5.5-6.9 12.4-8.4 18.6c-1.4 6.2-.8 12.1-.2 18.5c.5 6.3 2.9 16.5 3.5 19.8"/>
<path stroke="#222" stroke-width="0.4" opacity="0.7" d="M555.4 189c-2 1-7 3.2-12 6.2c-4.9 3-11.8 6.7-17.7 11.7c-5.9 5-12.5 11.4-17.5 18.2c-5 6.9-9.6 15.7-12.6 22.8c-3 7.1-4.3 13-5.6 19.8c-1.3 6.8-1.8 17.4-2.1 20.9M563.7 158.3c-2.9 1.1-11.6 4.4-17.3 6.5c-5.8 2.2-10.4 3.3-17.3 6.5c-6.9 3.1-17.3 6.9-24.3 12.6c-7.1 5.7-13.3 13.7-18.1 21.7c-4.8 8-8 17.6-10.7 26.2c-2.7 8.6-4.6 21.2-5.5 25.4M544.1 182c-3.4 2.4-13.6 7.7-20.1 14.2c-6.5 6.5-13.3 16.4-18.9 24.8c-5.6 8.3-11.6 16.7-14.9 25.2c-3.4 8.6-4.3 17.2-5.1 25.9c-.9 8.7 .4 15.7 0 26.4c-.5 10.7-2.2 31.7-2.7 38M541.8 194.3c-3 2-12.8 6-18 12.1c-5.2 6.1-8.9 16.6-13.2 24.5c-4.2 7.8-9.5 15.7-12.2 22.7c-2.8 7-3.5 12.6-4.2 19.5c-.7 6.8 .8 14.3 0 21.6c-.7 7.2-3.9 18.2-4.7 21.8M572.1 189.8c-3.3 .7-12.9 1.7-20 4.5c-7 2.8-14.8 4.9-22.4 12.1c-7.7 7.2-17.5 20.8-23.4 31.1c-5.9 10.4-9.1 21.3-12.2 31c-3.1 9.7-5.1 15.3-6.3 27.3c-1.3 11.9-1 36.8-1.2 44.2M565.4 181.2c-3.2 .7-11.8 1.1-19.2 3.9c-7.4 2.7-17.5 5.6-25.4 12.7c-7.8 7.1-16.4 19.4-21.8 29.9c-5.4 10.4-8 22.5-10.3 32.8c-2.4 10.3-3.3 17.2-3.8 29c-.6 11.8 .3 34.8 .3 41.8M540.3 194.5c-2.7 2.5-11 8.8-16.1 14.8c-5 6-10.1 13.9-14.1 21.4c-4 7.6-7.3 17.1-9.9 24.1c-2.6 6.9-4.1 11.8-5.6 17.7c-1.6 5.8-3 10.8-3.8 17.4c-.9 6.6-1 18.4-1.2 22.1M545.1 184.7c-2.3 .9-8.8 3-13.9 5.7c-5.1 2.7-11.8 5.9-16.9 10.4c-5.1 4.6-9.7 10.7-13.6 16.9c-3.9 6.2-7.2 14.2-9.8 20.5c-2.6 6.2-4 11.4-5.8 17c-1.7 5.5-3.7 13.7-4.5 16.4M578.2 193.1c-2.2 .6-9 2.5-13.3 3.6c-4.3 1.2-8.1 1.4-12.7 3.1c-4.7 1.6-9.7 2.9-15.4 6.8c-5.7 4-13.4 9.3-18.8 16.7c-5.4 7.3-10.2 19.3-13.6 27.4c-3.4 8.2-5.6 17.8-6.7 21.4M551.7 168.5c-2.2 .5-8.6 .6-13.5 3.1c-4.9 2.5-10.3 7-15.7 11.8c-5.3 4.8-11.2 11-16.3 16.9c-5.2 6-10.3 12.5-14.3 18.8c-4.1 6.3-7.8 12.3-10 19.2c-2.1 7-2.4 18.7-2.8 22.4M551.4 195.1c-1.4 .5-5.1 1.4-8.7 3c-3.7 1.7-8.7 4.1-12.9 7c-4.3 3-8.8 6.2-12.7 10.6c-3.9 4.5-7.6 10.5-10.8 15.9c-3.2 5.4-6.1 11.5-8.3 16.4c-2.3 4.9-4.4 10.9-5.3 13.1M556.8 200.2c-2.3 .4-8.6-.5-13.8 2.5c-5.1 2.9-11.9 8.4-17.3 15.2c-5.4 6.9-10.9 17.6-15.1 25.7c-4.2 8-8.2 15.3-10.1 22.7c-1.9 7.3-.6 14.6-1.5 21.2c-.9 6.6-3.2 15.5-3.8 18.5M547.4 171.5c-1.6 .8-5.7 2.4-9.3 4.7c-3.7 2.3-8.2 5.7-12.7 9c-4.5 3.2-10 6.7-14.4 10.7c-4.4 4-8.5 8.1-12.1 13.1c-3.6 5-7 11.5-9.5 17.2c-2.5 5.6-4.4 14.1-5.2 16.9M538.5 184.4c-3.5 2.4-14.8 8.1-21.3 14.3c-6.4 6.3-12.7 14.9-17.5 23c-4.9 8-8.8 17.2-11.6 25.3c-2.8 8.1-4 15.4-5.2 23.2c-1.3 7.7-2.1 13.2-2.3 23.4c-.3 10.2 .8 31.4 1 37.7M573.9 152.1c-2.9 .8-11.9 3-17.5 4.9c-5.6 1.9-10.4 3.6-16.2 6.5c-5.9 2.9-12.1 6.2-18.8 10.8c-6.7 4.7-15.2 10.2-21.4 16.9c-6.2 6.7-11.3 15.4-15.6 23.2c-4.3 7.8-8.4 19.8-10.1 23.8M533.2 171.8c-2.9 1.5-11.8 5.2-17.5 8.7c-5.8 3.5-12.1 7.2-17 12.5c-4.8 5.2-8.7 12.5-12.2 18.8c-3.4 6.2-6.1 12.7-8.6 18.7c-2.6 6-4.9 11.3-6.7 17.1c-1.8 5.8-3.6 14.8-4.4 17.8M538.4 175.6c-2.6 1.2-10.4 3.8-15.7 7.1c-5.4 3.2-11.9 7-16.5 12.4c-4.6 5.3-7.4 13.6-11 19.6c-3.7 6-8.4 10.3-10.9 16.3c-2.5 5.9-2.8 13.2-4.1 19.4c-1.3 6.2-2.9 14.9-3.5 17.9M607.6 157.1c4.8 1 18.8 2.8 29 6.2c10.2 3.4 22.2 7.8 32.1 14.3c9.9 6.5 19.9 15 27.4 24.6c7.4 9.5 13 21.8 17.2 32.6c4.3 10.8 6.5 21.3 8.3 32.4c1.8 11 2.2 28.3 2.7 33.9M609.7 196c2.2 1 8 2.9 13.2 6.4c5.3 3.5 12.6 9.5 18.3 14.4c5.7 4.8 10.9 10.5 16 14.9c5.1 4.3 10.2 6.8 14.7 11.3c4.5 4.5 9 10 12.3 15.8c3.4 5.8 6.4 15.7 7.6 18.9M582.1 162.3c4.8 .4 18.2-.1 28.4 2.6c10.3 2.6 21.8 7.3 33.1 13.4c11.4 6.1 25.1 13.8 35.1 23.1c10.1 9.3 18.7 21.4 25.1 32.4c6.4 11 10.2 21.8 13.3 33.6c3.2 11.8 4.7 31.1 5.6 37.4M585.4 179.9c4 1.2 14.9 3.6 23.8 7.3c9 3.7 19.4 8.9 29.8 14.9c10.4 5.9 23.2 12.4 32.6 20.9c9.4 8.5 17.7 20 23.8 30.1c6 10.1 9.1 20 12.5 30.5c3.3 10.6 6.2 27.3 7.4 32.8M609.2 176.4c3.7 1 14 3 22.3 6.3c8.4 3.3 19.1 8.3 27.8 13.5c8.7 5.2 17.5 10.2 24.4 17.6c6.8 7.3 12.2 17.8 16.6 26.5c4.4 8.8 7.3 17.4 9.8 26.2c2.5 8.8 4.4 22.3 5.3 26.7M585.9 163c3.8 .4 15 .1 22.6 2.1c7.6 2.1 14.6 6.5 23.3 10.4c8.7 3.8 19.8 7.8 29.1 12.7c9.3 4.9 19.3 9 26.5 16.7c7.3 7.7 12.8 19.8 17.1 29.7c4.3 9.8 7.3 24.4 8.8 29.3M607.8 177.8c2.3 .8 8.7 2.2 14.2 4.7c5.5 2.5 12.4 6.6 18.6 10.3c6.3 3.6 13 7.7 19 11.8c6 4 12.2 7.7 17.3 12.6c5.1 4.9 9.5 10.8 13.6 16.7c4 5.8 9.1 15.1 10.9 18.1M618.9 208c3.9 2.4 16 10.2 23.3 14.8c7.4 4.6 14.2 7.9 20.5 12.7c6.2 4.9 12 10.2 17 16.3c5.1 6 9.6 13.9 13.2 20.1c3.6 6.3 5.9 11.1 8.4 17.4c2.5 6.3 5.7 17.1 6.8 20.5M607.3 208.1c2.6 1.8 9.8 5.2 16 10.4c6.3 5.2 14.9 14.8 21.3 20.8c6.4 6.1 11.5 10.1 17 15.3c5.6 5.2 11.9 10.4 16.5 15.9c4.6 5.6 8.4 11.1 11.3 17.3c2.9 6.1 5.1 16.4 6.1 19.6M612.5 162.1c2.9 .5 11.2 1.3 17.6 3.3c6.3 1.9 13.6 5.3 20.3 8.4c6.6 3 13.2 6.2 19.6 10c6.3 3.7 13.1 7.2 18.5 12.4c5.4 5.1 9.9 11.9 13.8 18.5c3.9 6.7 8 17.8 9.6 21.4M580.4 164.4c3.2 .5 13 1.9 19.3 2.7c6.4 .8 11.6 .8 18.9 2.3c7.3 1.6 16.5 3.4 24.7 6.8c8.2 3.4 17.1 8.2 24.7 13.7c7.7 5.4 15.1 11.6 21.1 18.9c6.1 7.3 12.7 20.8 15.2 25M629.7 155.4c4.4 1.5 17.7 4.6 26.5 8.6c8.7 4 18.2 8.9 26 15.3c7.8 6.3 15.1 14.2 20.7 22.8c5.6 8.5 9.6 19.1 12.9 28.4c3.3 9.4 5.4 18 7 27.4c1.5 9.4 1.9 24.2 2.3 29.1M583.7 196.2c2.4 1.3 10.2 5.4 14.4 7.5c4.2 2.1 6 1.7 11.1 5c5 3.4 12.3 9.4 19.3 15c7 5.5 16 13 23 18.6c6.9 5.6 12.6 9.4 18.5 15c5.8 5.6 13.6 15.5 16.4 18.6M580.5 179.4c3.7 .8 14.7 2 22.3 4.7c7.7 2.7 14.2 5.8 23.7 11.4c9.5 5.6 23.3 14.7 33.4 22.2c10 7.4 20 13.5 27 22.7c7 9.3 10.9 22.3 14.9 32.9c4.1 10.6 7.8 25.5 9.4 30.6M611.6 173.7c3.3 .4 12.4 .2 19.4 2.5c7.1 2.3 15.5 7.1 22.7 11.3c7.2 4.1 14 9.1 20.6 13.7c6.5 4.6 13.6 7.5 18.7 13.9c5 6.5 8.1 17.6 11.5 25c3.4 7.4 7.5 16 9 19.2M612.4 194.1c2.1 1.2 7.6 4.8 12.8 6.9c5.2 2 12.9 2.5 18.6 5.6c5.6 3.1 10 9.7 15.1 13c5.1 3.2 10.8 3.5 15.6 6.7c4.8 3.1 9.6 7 13.2 12.1c3.6 5.1 7 15.2 8.3 18.2M576.3 157.7c3.1-.6 11.9-3.7 18.7-3.4c6.8 .3 14.2 3 22.1 5c7.9 2.1 16.4 4.4 25.3 7.2c8.9 2.7 19.3 4.3 27.9 9.4c8.5 5.2 16.8 13.3 23.3 21.5c6.5 8.1 13 22.8 15.6 27.3M601.4 162.2c4.6 1.3 17.4 4 27.6 8c10.3 4.1 23.3 9.8 33.8 16.4c10.5 6.6 21.4 13.6 29.2 23.2c7.7 9.7 13.1 23.5 17.4 34.9c4.2 11.5 6 22.8 8.1 33.8c2.1 11.1 3.8 27.2 4.5 32.6M632.9 166.5c4.6 2.3 18.9 8.2 27.7 13.8c8.9 5.5 18.4 11.6 25.4 19.8c7.1 8.1 12.5 19.4 17 29c4.4 9.7 7.1 19.2 9.5 28.8c2.5 9.5 3.9 19.2 5.3 28.5c1.4 9.3 2.4 22.8 2.9 27.4M597.1 165.9c4.2 1.3 15.7 3.5 25.4 7.7c9.7 4.2 22.5 10.6 32.8 17.5c10.3 6.8 20.8 14.1 28.9 23.5c8 9.4 14.6 22.1 19.3 33c4.7 10.8 6.6 21.2 8.8 32.2c2.3 11 3.9 28.2 4.7 33.8M596.7 157.8c4.4 .7 16.7 1.6 26.5 4.5c9.8 2.9 21.8 7.5 32.2 13.1c10.5 5.6 21.9 12 30.6 20.5c8.6 8.5 15.8 20.3 21.2 30.7c5.5 10.4 8.6 20.8 11.3 31.6c2.7 10.9 4.2 27.9 5 33.4M604.1 183.8c3 1.2 11 3 18.2 7.4c7.2 4.4 17.2 12.9 25 19c7.8 6.2 15.2 11.4 21.9 18.1c6.7 6.7 13.5 14.4 18.4 22.2c4.9 7.8 8.4 16.3 11.2 24.5c2.9 8.2 5.1 20.6 6.1 24.7M588.8 155.2c3.2 .5 12.8 1.6 19.5 3.2c6.7 1.6 13.3 3.6 20.8 6.2c7.4 2.7 16.2 5.6 23.9 9.7c7.7 4.1 15.5 8.9 22.4 14.8c6.8 6 13.4 13.2 18.6 20.8c5.2 7.6 10.5 20.6 12.6 24.7M625.4 162.4c3 .9 11.7 3.7 18 5.3c6.2 1.5 13.2 1.2 19.3 3.9c6.1 2.8 11.7 8.2 17.2 12.4c5.5 4.2 11 8.1 15.8 12.7c4.7 4.6 9.4 8.9 12.7 14.9c3.3 6.1 5.9 17.7 7.1 21.2M638 167.8c4.2 2.8 17.3 11 25.5 16.8c8.2 5.9 16.7 11.2 23.7 18.1c6.9 6.9 13.7 14.6 18.1 23.3c4.5 8.7 6.6 19.4 8.7 29c2.2 9.7 2.4 20.4 4 29.1c1.6 8.7 4.5 19.3 5.5 23.1M591.8 182.7c.4 .9 .9 3.7 2.1 5.6c1.1 1.9 4 4.7 4.7 5.7M581.6 174.6c.2 1.8 .6 7.6 1.3 11c.8 3.4 2.7 7.8 3.3 9.3M587 177.7c.3 1.7 .8 7.3 1.7 10.6c.9 3.2 3.3 7.5 3.9 9M571.7 180.9c-.3 1.4-.8 5.6-1.7 8.2c-1 2.6-3.4 6.2-4 7.4M497.2 349.3c1.1 3.6 4.5 14.8 7 21.6c2.5 6.9 5.4 13.1 8 19.2c2.7 6.2 5.2 11.9 7.9 17.6c2.7 5.7 5.5 11 8.2 16.8c2.7 5.8 5.9 12.2 8 18.1c2.1 5.8 3.8 14.3 4.6 17.2M488.8 314.1c.7 5.1 2.5 21.2 4.2 30.7c1.8 9.4 3.6 17.9 6.1 26.1c2.6 8.1 5.8 15.5 9.3 22.7c3.4 7.1 7.7 13.5 11.4 20.1c3.8 6.6 7.8 12.8 11.1 19.6c3.2 6.8 6.9 17.8 8.3 21.4M484.3 331.6c.7 4.5 2.4 19 4.2 27c1.7 8.1 3.8 14.5 6.4 21.1c2.6 6.7 5.8 12.7 9 18.8c3.2 6 6.7 11.7 10.2 17.4c3.5 5.7 7.3 10.9 10.7 16.8c3.4 5.9 7.9 15.4 9.4 18.5M496.3 359.8c1.2 3 4.9 12.4 7.1 18.1c2.2 5.7 3.5 10.6 5.9 15.8c2.4 5.2 5.8 10.2 8.4 15.1c2.6 5 5.1 9.8 7.3 14.8c2.3 5.1 3.8 10.3 6.1 15.5c2.3 5.1 6.3 12.8 7.6 15.4M474.5 304.1c-.2 4.7-2.1 18.8-1.4 28c.7 9.1 3.5 19 5.8 26.8c2.3 7.8 5.8 13.5 8.2 19.9c2.4 6.3 3 12.6 6 18.5c3.1 5.8 8.5 11.3 12.3 16.6c3.8 5.2 8.9 12.4 10.6 14.8M500.6 365c1.1 2.9 4.3 11.7 6.5 17.1c2.3 5.4 4.7 10.4 7 15.4c2.3 4.9 4.7 9.5 6.9 14.4c2.3 4.9 4.4 9.7 6.7 14.8c2.3 5 5.1 10.4 7.1 15.5c2 5.1 4.1 12.5 4.9 15M493.2 317.4c.9 5.3 3.1 21.9 5.3 31.6c2.1 9.8 4.8 18.8 7.7 27.1c2.8 8.3 6.3 15.3 9.5 22.8c3.2 7.5 6.4 14.7 9.6 22.2c3.2 7.4 7 15.3 9.5 22.6c2.6 7.4 4.7 18.1 5.7 21.7M710 351.2c-.9 1-3.1 3.2-5.4 6.1c-2.2 2.9-8.1 7.3-8.2 11.2c-.2 3.9 5.6 8.3 7.5 12.2c1.8 3.8 4.2 6.9 3.8 10.8c-.5 3.9-3.3 7.8-6.5 12.5c-3.1 4.8-9.6 10.4-12.7 15.9c-3 5.6-4.9 11.7-5.4 17.5c-.4 5.8 2.4 14.4 2.8 17.3M696.8 373.4c1.3 2.1 6.9 8.4 8 12.5c1 4.2 .5 7.7-1.6 12.4c-2.2 4.8-7.9 10.2-11.4 16.2c-3.4 5.9-8.1 13-9.4 19.4c-1.2 6.4 .2 12.5 2.1 19.1c1.9 6.6 5.9 13.7 9.4 20.4c3.4 6.7 6.7 13.2 11.4 19.6c4.7 6.5 13.8 16.1 16.6 19.3M701.5 360.2c-.7 1.3-5 5.3-4.2 8.1c.8 2.9 6.8 6 8.9 9c2.2 3 3.5 6 4 9c.5 3 .2 5.7-1 8.9c-1.2 3.2-3.9 6.6-6.3 10.2c-2.3 3.6-5.3 7.6-7.8 11.7c-2.5 4.1-5.5 8.5-7 12.7c-1.5 4.3-1.7 10.8-2.1 12.9M706.4 355.4c-1.3 1.4-6.5 5.3-7.9 8.3c-1.3 3-1.6 6.7-.2 9.8c1.4 3.1 6.9 6 8.6 9.1c1.8 3.1 2.5 6 1.8 9.3c-.6 3.4-3.2 6.9-5.8 10.8c-2.6 3.8-7.1 7.8-9.8 12.3c-2.8 4.5-5.5 9.9-6.8 14.6c-1.2 4.7-.8 11.5-1 13.8"/>
<path stroke="#777" stroke-width="0.5" opacity="0.55" d="M549 160.9c-1.8 1.3-6.7 4.8-10.8 7.7c-4.1 3-8.7 6.3-14 9.8c-5.3 3.4-12.2 6.8-17.7 10.9c-5.4 4.2-10.5 8.8-14.8 14.2c-4.2 5.3-8 11.6-10.6 18c-2.7 6.3-4.6 16.6-5.5 20M575 171.1c-3.7 1.3-14.6 5.2-22.2 8.1c-7.6 3-14.6 3.7-23.4 9.5c-8.8 5.7-21.8 14.9-29.4 24.9c-7.5 10.1-12.5 23.8-15.9 35.2c-3.4 11.4-4.3 19.6-4.6 33.4c-.4 13.7 2.3 40.8 2.7 49M545.9 185.6c-2.9 1.9-11.1 6.5-17.4 11.4c-6.3 4.9-14.4 10.8-20.3 18c-6 7.1-11.3 17.2-15.3 24.9c-3.9 7.7-6.6 13.8-8.6 21.1c-2 7.3-3 13.5-3.4 22.6c-.5 9.2 .6 26.9 .7 32.3M548.6 187.2c-3.1 1.4-11.8 4.4-18.3 8.9c-6.5 4.6-14.8 10.7-20.8 18.4c-6 7.7-11.5 19.2-15.1 27.8c-3.6 8.5-5 15.8-6.7 23.6c-1.7 7.7-3 13.5-3.5 22.9c-.5 9.3 .2 27.7 .2 33.3M562.8 193.7c-2.3 .7-8.3 1.8-13.6 4.4c-5.3 2.6-12.2 5.4-18.3 11.3c-6.1 6-13.3 15.4-18.3 24.3c-4.9 8.9-8.8 20.5-11.3 29c-2.5 8.5-2.6 14.7-3.7 22.1c-1.1 7.4-2.5 18.4-3 22M545 179.9c-2.1 .8-7.7 2.5-12.2 5.1c-4.5 2.5-10.1 6.3-14.8 10.2c-4.7 3.8-9.3 8.2-13.5 12.9c-4.2 4.8-8.4 10.2-11.7 15.5c-3.4 5.3-6.3 10.8-8.4 16.1c-2.2 5.3-3.7 13.3-4.4 15.9M562.9 167.1c-2 1.4-8.3 6.6-12.5 8.3c-4.2 1.8-7.9 .1-12.7 2.1c-4.9 2-11.2 5.3-16.4 9.9c-5.1 4.5-9.7 11.7-14.6 17.3c-5 5.6-11.3 10.1-15 16.4c-3.6 6.3-5.9 17.9-7 21.4M551.4 188.9c-2.1 1.5-7.3 5.1-12.1 9.2c-4.8 4.1-11.6 9.3-16.9 15.5c-5.2 6.1-10.5 14.1-14.7 21.4c-4.1 7.2-8 15.1-10.2 22.1c-2.2 7-2.5 13.1-3 19.8c-.6 6.7-.1 17.1-.1 20.5M563 186.3c-2.4 .9-8.9 2.9-14.4 5.6c-5.4 2.8-11.9 5.2-18.2 10.7c-6.2 5.4-14 13.3-19.4 22c-5.4 8.7-9.8 21.1-12.8 29.9c-2.9 8.8-3.8 15.3-5 22.9c-1.3 7.5-2.2 18.6-2.6 22.4M570.6 191.8c-3 .8-11.8 2.1-18 5.1c-6.2 3.1-11.7 7-18.9 13.3c-7.2 6.3-18.5 14.8-24.3 24.5c-5.8 9.6-8.4 23.4-10.8 33.4c-2.3 9.9-1.8 16.3-3.2 26.2c-1.5 9.8-4.7 27.4-5.6 32.9M540 179.5c-2.5 2.1-9.8 8.4-15.3 12.6c-5.6 4.2-12.7 7.3-17.9 12.9c-5.2 5.5-10.1 13.1-13.4 20.3c-3.3 7.2-5.1 15.6-6.6 22.8c-1.4 7.3-1 14.4-2 20.8c-1 6.3-3.2 14.2-3.9 17.1M556.5 200.6c-1.8 .2-6.4-.2-10.6 1.6c-4.2 1.7-9.9 4.8-14.7 8.8c-4.7 4.1-9.8 9.3-13.9 15.7c-4.2 6.3-7.9 15.8-10.9 22.5c-2.9 6.6-5 12.2-6.9 17.5c-1.9 5.3-3.7 11.9-4.4 14.3M548.6 187.9c-1.9 .6-7.3 1.3-11.8 3.5c-4.6 2.2-10.7 5.2-15.4 9.5c-4.7 4.3-8.8 10.5-12.8 16.3c-4.1 5.7-8.4 12.5-11.6 18.2c-3.2 5.8-5.9 10.8-7.6 16.3c-1.7 5.6-2 14.1-2.4 17M560.4 157.4c-2.4 1.4-9.9 5.3-14.5 8.4c-4.5 3.1-7.4 6.5-12.7 10.3c-5.3 3.8-12.8 7.7-19 12.6c-6.1 4.8-12.7 10.1-17.8 16.4c-5 6.4-9.3 14.2-12.3 21.5c-3 7.3-4.9 18.7-5.8 22.4M553.6 159.7c-3.5 1.8-12.6 5.7-21.2 10.9c-8.5 5.1-21.7 11.5-30.1 20.3c-8.4 8.7-15.4 21.2-20.3 32c-4.9 10.9-7.4 21.9-9.2 33.2c-1.9 11.4-2.3 20.2-1.8 34.8c.5 14.7 3.9 44.1 4.7 53M575.7 170.3c-2.5 .9-10.3 3.3-15.2 5c-5 1.7-9.3 2.9-14.5 5.3c-5.3 2.4-10.9 4.8-17 9.2c-6.1 4.4-14 10-19.6 17.3c-5.6 7.2-10.3 18-14 26.3c-3.8 8.2-7 19.2-8.4 23.1M557.4 204.3c-2.4 .8-8.5 1.3-14.4 5.1c-5.8 3.8-14.8 9.4-20.7 17.7c-5.9 8.4-11.3 23.2-14.6 32.3c-3.3 9.1-3.6 15.2-5.1 22.4c-1.6 7.2-3.2 12-4.4 20.6c-1.3 8.6-2.6 25.8-3.1 30.9M530.6 170.7c-3.9 2.3-16.4 8.1-23.3 13.9c-6.9 5.9-13.2 13.7-18.3 21.3c-5.2 7.7-9.3 16.4-12.4 24.6c-3.1 8.2-5 16.4-6.5 24.6c-1.5 8.3-2.4 14.2-2.4 25c0 10.8 2.1 33.3 2.6 39.9M547.4 174.9c-1.7 1.2-5.9 4.5-9.8 7.1c-3.9 2.5-8.9 4.9-13.6 8.1c-4.8 3.2-11 6-15.1 11c-4 4.9-6.2 12.9-9.4 18.8c-3.1 5.8-6.9 11-9.4 16.4c-2.4 5.4-4.3 13.2-5.1 15.9M539.3 174.4c-3.2 1.7-12.9 5.5-19.3 10.2c-6.4 4.7-13.9 10.8-19.2 17.9c-5.3 7-8.9 16.8-12.5 24.5c-3.6 7.6-7 14.2-9.2 21.4c-2.3 7.1-3.5 13.9-4.1 21.7c-.7 7.7 .1 20.7 .1 24.9M589.2 165.8c3 .8 11.7 2.7 17.6 4.6c6 1.9 11.2 3.5 18 6.8c6.7 3.3 15.3 8.2 22.5 12.9c7.3 4.7 14.7 9.7 21.1 15.3c6.4 5.6 12.2 11.2 17.2 18.3c5 7.1 10.8 20.1 13 24.1M612 195.5c4 2.6 16 9.9 24.3 15.5c8.2 5.6 17.5 11.7 25.2 18c7.7 6.3 15 12.5 21 19.8c5.9 7.3 10.8 16.2 14.6 23.9c3.9 7.7 6.1 14.3 8.6 22.3c2.5 8 5.3 21.2 6.4 25.5M633.5 170.5c3.8 1.3 15.7 4.4 23 7.9c7.3 3.6 14.4 8 20.7 13.2c6.3 5.3 12.1 11.5 17.1 18.3c5 6.7 9.2 15 12.8 22c3.6 7 6.3 13.3 8.7 19.9c2.5 6.7 4.9 16.7 5.9 20M589.9 160.8c3.4 .3 13 .8 20.2 1.9c7.2 1.2 14.6 2.5 22.9 5c8.3 2.5 18.3 5.6 26.9 9.8c8.6 4.2 17.5 9.1 24.7 15.5c7.2 6.4 13.3 14.7 18.3 23c5 8.2 9.6 22.1 11.5 26.5M586.6 197.8c2.6 2 11 8 15.9 11.9c4.9 3.9 6.9 6 13.4 11.6c6.6 5.7 18 16.1 26 22.4c7.9 6.4 14.9 9.6 21.5 15.8c6.6 6.2 13.1 14.5 18 21.2c4.9 6.7 9.4 15.9 11.2 19.1M611.1 156.3c3.6 .8 14 2.6 21.6 4.8c7.6 2.2 16.4 4.8 24.2 8.6c7.8 3.9 15.9 8.6 22.8 14.5c6.8 5.9 13.3 13 18.2 20.9c5 8 8.5 18.2 11.6 26.7c3.1 8.6 6 20.4 7.2 24.5M586.4 171.4c3.1 .9 12.4 3.5 18.6 5.5c6.1 1.9 11.1 3.2 18.4 6.3c7.3 3 17.3 7.2 25.4 11.8c8.2 4.6 16.5 9.6 23.4 15.7c6.9 6.2 12.9 13.7 18.1 21.2c5.2 7.5 10.8 19.9 13 23.8M628.9 196c4.6 3 19 11.8 27.4 17.9c8.4 6.2 16.1 12 22.8 19.2c6.8 7.3 12.8 16.7 17.6 24.3c4.7 7.6 8.1 13.6 11.1 21.5c2.9 8 4.8 17.6 6.5 26.1c1.7 8.5 2.9 20.7 3.5 24.8M578 159.1c4.2 .1 16-.4 24.9 .6c8.9 .9 18.1 2 28.6 5.2c10.4 3.1 23.5 7.6 34.2 13.8c10.7 6.2 22 13.8 30 23.3c8.1 9.4 13.7 22 18.1 33.3c4.3 11.3 6.9 28.7 8.2 34.4M607.1 205.4c2 .9 6.7 2.6 11.9 5.4c5.2 2.8 13.3 7.4 19.4 11.3c6 3.9 11.5 8.1 16.8 12.1c5.3 3.9 10.2 7.4 15 11.6c4.8 4.1 9.7 8.8 13.9 13.5c4.1 4.6 9 11.8 10.8 14.2M607.8 198.7c4 2.1 15.4 7 24.1 12.6c8.6 5.6 19.7 13.3 27.8 21.1c8.1 7.9 14.9 17.4 20.8 25.9c5.9 8.5 10.5 17 14.6 25.1c4.1 8.1 7.3 15.4 10 23.5c2.7 8.2 5.1 21.1 6.2 25.4M625.5 169.1c3.7 1.4 15 5.4 22.3 8.7c7.3 3.3 15.1 6.4 21.8 11.2c6.6 4.7 13 10.3 18.1 17.1c5.1 6.8 9 16 12.6 23.7c3.7 7.7 6.7 15.3 9.3 22.4c2.5 7.1 5.2 16.7 6.2 20.1M586.7 195.9c2.6 2.3 10.8 9.8 15.2 13.6c4.5 3.8 5.7 4.1 11.6 9.2c6 5 17 14.7 24.3 21.2c7.2 6.6 13 12.2 19.4 18c6.4 5.8 13.6 10.6 18.7 16.7c5.2 6.2 10.2 16.9 12.2 20.3M610.2 164.2c3.8 .8 14.7 1.9 22.7 5c8 3.1 17.1 8.5 25.3 13.6c8.2 5.1 16.8 10.5 23.9 17c7.1 6.4 13.8 13.6 18.8 21.7c5 8.2 8.5 18.2 11.2 27.2c2.6 9.1 4.1 22.5 4.9 26.9M623.9 222.3c3.1 2.2 13.1 9.5 19.1 13.4c5.9 3.9 11.3 6.3 16.3 10.2c5.1 3.8 9.6 8.2 13.9 13c4.3 4.8 8.4 10.8 11.8 15.5c3.5 4.7 6.5 8.1 9.1 12.6c2.5 4.5 5.2 12.1 6.2 14.5M586.7 180.2c.3 1.7 .6 6.8 1.4 9.8c.7 3 2.6 7.1 3.1 8.5M584.9 181.5c.1 1.1 .3 4.5 .8 6.7c.4 2.2 1.5 5.3 1.8 6.4M572.8 179.8c-.2 1.9-.6 8.1-1.2 11.6c-.7 3.6-2.4 8.2-2.9 9.8M491.3 317.6c1.2 5.5 4.4 23 7.1 33c2.8 9.9 6.7 18.5 9.6 26.7c2.8 8.2 4.6 15.3 7.5 22.7c2.9 7.4 6.2 14.5 9.8 21.7c3.5 7.2 8.9 14.3 11.6 21.5c2.7 7.3 3.8 18.2 4.6 21.8M499.5 336c.9 3.7 3.8 15.1 5.6 21.9c1.9 6.8 3.7 13.1 5.6 19.1c1.8 5.9 3.5 11.3 5.6 16.7c2.1 5.5 4.5 10.6 7 15.9c2.5 5.3 5.4 10.4 7.8 15.7c2.3 5.3 5.2 13.4 6.2 16.1M495.1 372.1c1 2.7 3.5 11 5.8 16c2.2 4.9 5.1 9.3 7.6 14c2.5 4.6 5.1 9.4 7.4 14c2.3 4.5 4.2 8.5 6.6 13.2c2.4 4.6 5.8 9.7 7.9 14.7c2.2 5.1 4 12.9 4.8 15.5M494.6 318.5c.7 5.2 2.2 21.5 4.2 31.2c2.1 9.8 5.1 18.9 8.1 27.3c3 8.5 6.6 15.8 9.8 23.4c3.2 7.7 6.3 14.9 9.3 22.5c3 7.6 6.6 15.5 8.7 23.2c2.1 7.7 3.3 19.3 4 23.1M702.4 358c-1.3 2.1-8.5 8.4-8.1 12.6c.4 4.2 8.8 8.3 10.5 12.5c1.8 4.3 2.3 8 .2 13c-2.1 5.1-9.2 11-12.9 17.3c-3.7 6.3-8.1 13.8-9.4 20.7c-1.2 7-.3 13.8 1.9 20.9c2.1 7.1 6.8 14.4 11.1 21.6c4.2 7.1 12 17.6 14.4 21.1"/>
<path stroke="#444" stroke-width="0.6" opacity="0.55" d="M552.7 184.7c-3 1.4-11.3 3.6-18.3 8.4c-7 4.8-17.3 11.5-23.7 20.4c-6.4 8.9-11.2 23.1-14.7 33.1c-3.4 10-4.5 18.2-6 26.9c-1.6 8.6-3 14.2-3.5 25.1c-.5 11 .5 33.8 .6 40.5M552.1 174.9c-1.8 .8-6.6 2.9-11.1 5.1c-4.4 2.2-10 4.6-15.6 8c-5.5 3.3-12.8 6.9-17.9 12.2c-5 5.2-9.2 12.7-12.6 19.5c-3.4 6.8-5.9 14.7-8 21.4c-2.1 6.7-3.7 15.8-4.4 18.9M557.9 166.4c-2.6 1.5-9.6 5.4-15.3 9.1c-5.8 3.6-12.6 7.5-19.5 12.8c-6.8 5.2-15.7 11.3-21.7 18.8c-6.1 7.5-11 17.4-14.6 26c-3.6 8.6-5.6 17.1-6.9 25.6c-1.4 8.5-1 21.3-1.2 25.5M559.1 192.3c-2.4 .9-8.3 1.8-14.1 5.2c-5.7 3.3-14 7.8-20.3 14.7c-6.3 7-13.1 17.8-17.6 26.7c-4.5 8.9-7.2 18.5-9.3 26.8c-2.2 8.3-2.5 14.8-3.6 23c-1 8.1-2.3 21.5-2.7 25.8M545.8 165.5c-1.8 .6-6.7 1.7-10.9 3.3c-4.2 1.6-9.3 3.6-14.3 6.3c-5 2.8-11 6.4-15.8 10.3c-4.8 4-9.3 8.5-12.9 13.5c-3.7 5-6.4 11.1-9.1 16.7c-2.6 5.6-5.5 14.1-6.6 17M550.5 193.4c-1.5 .3-5.5 .5-8.9 2c-3.3 1.5-7.5 4.1-11.3 7c-3.8 2.8-7.7 6.5-11.4 10.3c-3.6 3.8-7.1 7.9-10.4 12.4c-3.2 4.5-6.6 9.8-9 14.6c-2.4 4.9-4.3 12.1-5.2 14.5M556.1 177.6c-2.1 .8-7.6 2.4-12.5 4.5c-5 2.2-11 4.8-17.2 8.5c-6.1 3.7-13.9 7.9-19.6 13.8c-5.7 5.8-10.7 14.3-14.6 21.4c-3.9 7.2-6.5 14.3-8.6 21.5c-2.2 7.2-3.5 17.9-4.2 21.5M570.8 154c-4 1.5-15.9 5.6-24.3 9c-8.4 3.4-17 4.9-26.1 11.3c-9.1 6.5-20.8 17.1-28.3 27.3c-7.5 10.1-12.4 22.7-16.7 33.6c-4.2 11-8 18.6-8.7 32.4c-.8 13.7 3.7 41.9 4.5 50.2M564.9 189.8c-2.8 .7-10.2 1.1-16.9 3.9c-6.6 2.8-15.6 5.9-22.9 12.8c-7.3 7-15.6 19.3-21 29c-5.3 9.7-8.4 20.1-11.1 29.2c-2.7 9.1-4 15.1-5.1 25.6c-1.1 10.6-1.1 31.5-1.3 37.8M532.4 169.5c-3.5 2-14.5 7.1-21.1 12.2c-6.7 5.1-13.7 11.7-19 18.4c-5.4 6.7-9.6 14.4-13.1 21.9c-3.5 7.6-6.2 15.6-8.1 23.3c-1.9 7.8-2.9 14.7-3.5 23.1c-.5 8.5 .2 22.9 .3 27.4M567.6 170.9c-3.2 1-12.9 2.5-18.8 5.7c-5.9 3.2-9.9 8.1-16.7 13.4c-6.7 5.3-16.9 10.3-23.6 18.1c-6.8 7.8-13.2 19.3-16.8 28.9c-3.7 9.5-3.6 19.4-5.1 28.4c-1.4 8.9-2.8 21-3.4 25.3M552.9 195.4c-2.3 1.2-8.2 3.8-13.8 6.9c-5.6 3.1-14.1 5.4-19.8 11.5c-5.7 6.1-10.8 16.7-14.4 24.9c-3.6 8.3-5 17.4-7 24.5c-2.1 7.2-3.6 12.2-5.1 18.3c-1.5 6.1-3.3 15.3-3.9 18.4M567.8 185.1c-2.9 1.3-10.5 5.3-17.4 8.2c-6.9 3-16.2 3.4-23.9 9.7c-7.7 6.2-17 17.7-22.4 27.9c-5.4 10.2-7.2 23.6-10 33.3c-2.9 9.6-5.4 14.1-6.9 24.7c-1.5 10.7-1.7 32.6-2.1 39.1M540.3 165c-1.9 1-7 3.5-11.2 6c-4.2 2.4-9.3 5.8-14 8.9c-4.8 3-10.2 5.7-14.6 9.5c-4.3 3.7-8.3 8-11.5 12.8c-3.3 4.9-5.8 11.1-8.1 16.3c-2.3 5.2-5 12.6-6 15.1M541.1 183.5c-2.5 1.3-10 4.3-15.1 7.9c-5.1 3.5-11.2 7.5-15.5 13.2c-4.3 5.6-7.4 14-10.6 20.8c-3.1 6.7-6 13.8-8.3 19.8c-2.3 5.9-4.1 10.4-5.5 15.8c-1.4 5.5-2.3 14.1-2.8 16.9M530.9 170.3c-3.3 1.5-13.5 4.9-19.4 9.2c-6 4.2-11.5 10.4-16.3 16.4c-4.9 5.9-9.1 12.9-12.7 19.3c-3.6 6.4-6.7 12.3-8.8 19c-2.1 6.7-3.1 14.5-4.1 21.3c-1 6.8-1.7 16.2-2.1 19.4M546.9 173.3c-2.8 1.3-10.4 4.3-17.2 8c-6.7 3.8-16.3 8.4-23.2 14.5c-7 6.1-13.4 14.5-18.3 22.1c-4.9 7.7-8.4 15.7-11.1 23.8c-2.7 8-4.3 15.8-5.1 24.6c-.9 8.8-.2 23.6-.2 28.3M539.2 165.1c-3.2 2.1-12.2 7.7-19.1 12.4c-6.9 4.7-16 9.5-22.3 15.9c-6.3 6.4-11.4 14.7-15.3 22.6c-4 8-6.2 17.3-8.5 25.3c-2.4 8.1-4.3 15-5.5 23.2c-1.2 8.3-1.4 22.1-1.7 26.5M551.8 200.6c-2.2 .9-8.4 2.3-13.3 5.3c-4.9 3-11.7 6.5-16.2 12.6c-4.4 6.2-7.6 16.4-10.6 24.2c-3 7.7-5.3 16.2-7.3 22.5c-1.9 6.3-3 10.2-4.3 15.3c-1.3 5-2.8 12.6-3.3 15.1M576.8 184.3c-2.5 .8-10.2 3.2-14.7 4.6c-4.4 1.4-7.7 1.7-12.1 3.8c-4.4 2.2-9 4.8-14.5 8.8c-5.5 4.1-13.1 8.7-18.3 15.5c-5.3 6.9-10 17.4-13.4 25.5c-3.3 8-5.8 19-7 22.8M591.7 173.8c3.5 1.4 12.8 4.9 20.8 8.5c8 3.6 17.6 8.6 27.1 13.3c9.5 4.7 21.3 7.6 29.9 14.7c8.6 7.1 15.8 18.7 21.7 28c5.8 9.4 9.8 19.2 13.6 28.1c3.9 9 7.9 21.5 9.5 25.8M605.9 161.2c5.2 1.1 20 1.9 30.9 6.4c10.9 4.4 24.3 12 34.5 20.3c10.2 8.4 19.5 19.1 26.6 29.8c7 10.7 12.2 22.2 15.7 34.4c3.5 12.1 3.4 27 5.1 38.6c1.8 11.5 4.5 25.8 5.4 30.9M626.1 175.3c2.8 .9 11.3 3.1 17 5c5.8 1.8 12 3.4 17.3 6.3c5.4 2.8 10.2 6.9 14.9 10.8c4.8 3.9 9.4 8.1 13.6 12.4c4.3 4.3 8.5 8.5 11.9 13.5c3.4 4.9 7 13.3 8.4 15.9M623 209.5c2.7 1.4 11 4.7 15.9 8c5 3.3 9.5 7.5 13.5 11.6c4.1 4.1 7.3 9.2 11 12.9c3.6 3.7 7.6 5.9 11.1 9.5c3.5 3.6 7.3 7.6 9.8 12.3c2.6 4.8 4.5 13.6 5.4 16.3M627.4 169.1c3.8 1.4 15.2 4.8 22.5 8.5c7.2 3.6 14.5 8.5 21.2 13.2c6.6 4.7 13.3 9 18.7 15c5.4 6 10.2 13.6 13.9 21c3.7 7.3 6.1 15.9 8.5 23.2c2.3 7.3 4.7 17.3 5.6 20.7M630.7 187.1c4.5 2.8 18.7 11 27 16.7c8.4 5.6 16.4 9.8 23 17c6.7 7.1 12.6 17.1 16.9 25.8c4.3 8.7 6.4 17.7 8.8 26.4c2.5 8.8 4 18 5.8 26.3c1.8 8.2 4.3 19.3 5.1 23.1M623.3 207c3.8 2.7 15.9 11.1 23 16.1c7.1 4.9 13.7 8.5 19.6 13.8c6 5.3 11.3 11.7 16 18c4.8 6.2 9.3 13.1 12.6 19.5c3.3 6.4 4.9 12.1 7.1 18.7c2.2 6.6 5 17.5 6 20.9M602.4 203.1c1.6 .9 5.1 2.2 9.4 5.4c4.4 3.2 10.7 8.9 16.8 13.9c6.1 5 13.8 11.4 19.8 16c5.9 4.6 10.9 6.9 15.9 11.6c5 4.7 10 10.9 14.2 16.5c4.1 5.5 8.9 14.2 10.6 17M578.7 152.9c5.2 .4 20.1-.1 31.3 2.7c11.2 2.8 23.5 7.9 35.7 14c12.1 6.1 26.7 13 37.2 22.5c10.5 9.5 19.7 22.4 26 34.7c6.2 12.2 9.1 25.3 11.5 38.8c2.4 13.6 2.4 35.2 2.8 42.3M603.1 207.8c3 2.2 10.2 6.9 18 13.2c7.8 6.3 20.4 16.8 28.9 24.6c8.5 7.8 15.7 14.5 22.2 22.2c6.5 7.7 12.2 16.1 16.7 24.1c4.6 8 7.9 15.8 10.6 24.1c2.8 8.4 4.8 21.6 5.8 25.9M628.1 203.7c2.3 1.6 9 6.6 13.4 9.5c4.4 3 8.9 5.5 13 8.1c4.1 2.6 8.2 4.8 11.8 7.7c3.6 3 6.7 6.5 9.9 10c3.2 3.6 6.5 7.3 9.3 11.3c2.8 4 6.4 10.5 7.6 12.6M589.3 181.3c2.8 .9 11 3.6 16.4 5.2c5.5 1.7 9.7 1.1 16.2 4.7c6.6 3.5 15.6 11.6 23.2 16.7c7.6 5.1 15.5 8.7 22.3 13.9c6.8 5.2 13.4 10.3 18.4 17.2c5.1 7 9.9 20.4 11.8 24.5M578.8 155.7c4 .2 15.6 .2 23.9 1.5c8.4 1.4 17 3.3 26.5 6.8c9.4 3.4 20.7 7.9 30.3 13.9c9.7 6 20 13.2 27.6 22.2c7.6 8.9 13.6 21.1 18.3 31.5c4.6 10.5 7.9 26 9.5 31.2M595.1 150.6c5.7 1.2 21.4 4.4 33.8 7.3c12.4 3 28.5 3.7 40.8 10.6c12.2 6.9 24.7 18.5 32.8 30.8c8.1 12.3 11.7 29.4 15.7 43c4.1 13.7 6.4 26.2 8.5 38.7c2.1 12.5 3.5 30.3 4.1 36.4M615.7 190.7c4.7 2.6 19.4 9.4 28.7 15.4c9.2 5.9 19 12 26.5 20.4c7.6 8.4 13.7 20.2 18.6 29.9c4.8 9.6 7.4 19.2 10.6 28.2c3.2 9.1 6.4 17.7 8.7 26c2.2 8.3 4.1 19.9 4.9 23.8M608.6 173c2.4 .7 9 2 14.4 4.2c5.3 2.2 11.6 5.7 17.6 8.9c6.1 3.2 12.6 6.7 18.6 10.2c5.9 3.5 11.9 6.4 17 10.7c5.1 4.3 9.6 9.5 13.7 15.2c4 5.6 8.9 15.6 10.6 18.8M630.3 161.9c4.5 1.9 18.6 6.3 27.4 11.2c8.8 5 17.8 11.3 25.4 18.5c7.5 7.3 14.4 16.5 19.7 25.2c5.3 8.7 9.3 17.9 12.3 27.1c3 9.1 4.4 18.1 5.7 27.8c1.2 9.7 1.7 25.2 2 30.2M599.5 167.1c3.3 .9 12.5 2.8 20 5.4c7.5 2.6 16.5 5.9 24.8 10.3c8.3 4.4 17.5 9.7 24.9 16.2c7.4 6.6 14.1 14.8 19.5 23.3c5.5 8.5 9.7 19.2 13.3 27.7c3.6 8.6 6.8 19.8 8.2 23.8M584.2 192.5c2.6 1.5 11.4 5.5 16 8.9c4.5 3.3 5.7 5.9 11.2 11.2c5.4 5.3 14.2 14.4 21.6 20.3c7.3 5.9 15.7 9.8 22.5 15.1c6.8 5.3 13.1 10 18.2 16.8c5.1 6.8 10.2 20 12.2 23.9M581.7 161.1c3.4 0 13.6-.7 20.7 .3c7 1 13.8 2.6 21.6 5.6c7.8 3.1 16.7 7.9 25.1 12.7c8.4 4.7 17.5 9.7 25.2 15.6c7.8 5.9 15.6 12.2 21.4 19.9c5.9 7.7 11.4 21.8 13.7 26.1M606.2 181.1c3.6 1.8 13.2 5.3 21.4 10.6c8.2 5.2 19 14.3 27.6 21c8.6 6.7 17.2 11.2 23.9 19.3c6.7 8 12.1 19.9 16.2 29.1c4.2 9.2 6 17.2 8.6 25.9c2.6 8.7 5.7 22 6.9 26.4M582.8 192.7c3.2 1.9 13.2 7.5 19.3 11.6c6 4.1 9.1 7 17.2 12.9c8.1 5.8 22 15.1 31.3 22.2c9.3 7 17.8 12.3 24.7 20.1c6.9 7.9 12.2 18.1 16.6 27c4.5 8.8 8.5 21.7 10.2 26.1M606.5 157.1c5.1 1.4 19.6 3.9 30.4 8.2c10.8 4.3 24.1 10 34.4 17.6c10.2 7.6 20.3 17.3 27.3 28c7.1 10.7 11.4 24 15 35.9c3.6 11.9 5 23.9 6.8 35.4c1.8 11.5 3.3 28 3.9 33.6M602.6 198.3c3.1 1.6 10.4 4.5 18.7 9.4c8.3 4.8 21.9 13.1 31.1 19.8c9.3 6.8 17.4 12.7 24.5 20.4c7.1 7.8 13.5 17.6 18.2 26c4.8 8.4 7.5 15.7 10.3 24.5c2.8 8.8 5.5 23.6 6.7 28.3M572.5 189.7c0 1.1 0 4.4 0 6.6c0 2.1 0 5.3 0 6.4M588 181.8c.3 1.1 .9 4.5 2.1 6.7c1.3 2.2 4.3 5.4 5.2 6.5M590.9 179.4c.4 2.1 1 8.7 2.3 12.6c1.3 3.8 4.5 8.6 5.4 10.4M577.4 177.5c0 1.4 0 6 0 8.8c0 2.8 0 6.6 0 7.9M585.3 186.1c.2 1 .5 4.2 1.1 6.2c.5 2.1 2 5.2 2.4 6.2M575.6 182.4c0 1.6 .1 6.5 .2 9.4c.2 3 .5 6.9 .6 8.3M493.7 323.8c1.1 3.9 4.6 16.4 6.3 23.6c1.6 7.3 1.6 13.5 3.6 19.8c1.9 6.2 5.4 12.1 8.1 17.6c2.7 5.5 5.8 10.3 7.9 15.5c2.1 5.1 2.6 10.3 4.9 15.4c2.2 5 7.2 12.5 8.7 15M502.5 350.2c.9 3.2 2.7 13 5.1 19c2.4 6.1 7.3 11.9 9.2 17.3c2 5.3 .9 9.8 2.7 14.8c1.7 5 5.5 9.9 7.9 15c2.5 5.1 5.1 10.3 6.8 15.6c1.7 5.3 2.8 13.4 3.3 16.1M483 317.1c1 6.3 3.2 26.9 5.8 37.8c2.6 10.8 6.2 18.9 9.9 27.4c3.8 8.5 8.6 16.1 12.6 23.7c4 7.6 7.7 14.3 11.5 22.2c3.8 7.8 9.2 17.1 11.3 25.1c2.1 8 1.2 19.1 1.4 22.9M495.1 354.8c.7 2.7 2.4 11.3 4 16.5c1.6 5.3 3.5 10.3 5.6 15c2.1 4.8 4.9 8.9 7.1 13.4c2.2 4.4 4.2 9 6.1 13.4c2 4.3 3.5 8.4 5.7 12.7c2.1 4.4 6.1 11.4 7.3 13.6M695.2 370.6c1.3 1.5 5.9 6.1 7.8 9.2c1.9 3.1 3.5 6 3.6 9.2c.1 3.2-1.1 6.1-3.1 9.7c-2.1 3.7-6.4 7.7-9.2 12.1c-2.8 4.4-5.8 9.4-7.6 14.1c-1.9 4.8-3.3 9.7-3.7 14.5c-.3 4.9 .3 9.5 1.8 14.5c1.4 5 5.9 12.8 7.1 15.4M721.5 338.1c-1.8 2.4-6.5 9.5-10.6 14.5c-4 5.1-13.9 10.4-13.8 15.6c.1 5.2 13 10.2 14.4 15.8c1.4 5.7-2.4 11.5-5.9 18.1c-3.4 6.6-12.1 14.1-15.1 21.7c-3 7.6-4 15.9-2.8 23.9c1.1 8 5.4 16.2 9.6 24.2c4.2 8.1 13.1 20 15.7 24M717 345.5c-1.4 1.5-4.9 5.7-8.1 8.9c-3.2 3.3-10.5 7.1-11.1 10.7c-.6 3.6 5.1 7.3 7.5 10.9c2.3 3.6 5.9 6.7 6.5 10.5c.5 3.8-.7 7.9-3 12.2c-2.3 4.2-7.5 8.3-10.7 13.1c-3.3 4.8-6.9 10.6-8.8 15.8c-2 5.2-2.2 13-2.7 15.6M696.6 367.2c1.7 1.7 7.4 6.8 10.1 10.4c2.6 3.5 6 7 5.9 11c-.1 3.9-3.6 8-6.6 12.5c-3 4.5-8.7 9.3-11.6 14.4c-2.8 5.2-4.3 11-5.4 16.4c-1.1 5.4-1.9 10.6-1.4 16c.5 5.5 1.6 11.3 4.1 16.8c2.6 5.4 9.3 13.4 11.2 16.1"/>
<path stroke="#999" stroke-width="0.6" opacity="0.5" d="M574.8 197.3c-2.6 .8-10.8 3.6-15.8 4.8c-5 1.2-8.7-.8-14.2 2.5c-5.5 3.2-12.9 9.7-18.9 17.2c-6 7.6-12.9 19.2-17 27.9c-4.1 8.7-6.1 16.7-7.8 24.5c-1.7 7.7-1.9 18.5-2.2 22.2M562.7 166.1c-3 1.5-11.5 5.2-18.2 8.7c-6.6 3.5-14.3 6.5-21.7 12.4c-7.5 5.8-17 13.6-23.1 22.7c-6.1 9-10.4 21.5-13.5 31.5c-3.1 10-3.8 19-5 28.4c-1.1 9.5-1.6 23.6-2 28.3M578.7 195.2c-2.4 .6-9.8 2.8-14.4 3.7c-4.5 .9-7.8 0-12.9 1.9c-5.1 1.8-11.6 4.2-17.6 9.1c-6 4.9-13.2 12.1-18.4 20.1c-5.3 8.1-9.8 20-13 28.1c-3.1 8.1-4.9 17.1-5.9 20.6M569.8 171.4c-3.2 1.2-12.9 4.2-19 7c-6.1 2.8-10.7 4.9-17.6 9.8c-6.8 5-17 11.5-23.6 19.9c-6.6 8.5-12 21.3-16.1 30.7c-4 9.4-6.1 17.1-8.2 25.6c-2 8.6-3.2 21.4-3.8 25.6M538.2 178.7c-2.2 1.1-8.5 4-13.2 6.7c-4.7 2.7-10.6 5.7-15.1 9.5c-4.5 3.8-8.4 8.3-12 13.2c-3.6 4.9-6.9 11.1-9.6 16.3c-2.8 5.2-5.1 10.1-7.1 14.9c-1.9 4.9-4 12-4.8 14.3M550.3 180.8c-3.1 1.4-11.5 3.9-18.7 8.5c-7.2 4.5-17.6 10.7-24.6 18.6c-7 8-13 19.8-17.3 29c-4.3 9.2-6.4 17.3-8.4 26.1c-1.9 8.8-2.9 15-3.1 26.7c-.2 11.8 1.7 36.6 2 43.9M558.3 167.7c-2.2 1-8.4 3.9-13.3 5.9c-4.9 1.9-10 2.8-16.1 5.9c-6.1 3.1-14.7 6.8-20.5 12.7c-5.7 5.9-10.1 14.6-13.8 22.6c-3.7 7.9-6 17.7-8.5 25.1c-2.4 7.5-5.2 16.2-6.3 19.5M538.8 185.7c-3.7 2.4-15.4 8-22.1 14.3c-6.6 6.4-12.9 15.8-17.9 24c-5 8.1-9.2 16.9-12.1 25c-3 8.1-4.2 15.2-5.4 23.4c-1.1 8.1-1.6 14.6-1.7 25.6c-.1 11 1 33.6 1.2 40.3M576.3 180.6c-3.5 1.2-14 4.2-21.1 7.2c-7 2.9-13.4 4.2-21.2 10.6c-7.9 6.5-19.1 17.4-25.8 28.1c-6.7 10.7-11.3 25-14.4 35.9c-3.1 11-3.3 17.6-4.2 29.9c-.9 12.3-.9 36.5-1.1 43.9M561.5 164.7c-3.2 1.2-11.8 3.9-19 7.1c-7.1 3.2-15.9 6-23.7 12.1c-7.8 6.1-17.1 14.9-23 24.4c-5.9 9.4-9.8 22-12.5 32.4c-2.8 10.4-3.3 19.8-4.2 29.9c-.8 10.1-.7 25.4-.8 30.5M559 201.7c-1.4 .7-4.7 2.5-8.3 4.1c-3.6 1.5-8.2 2.9-13.2 5.4c-5 2.5-12 4.3-16.6 9.7c-4.5 5.3-7.7 15.3-10.8 22.4c-3.1 7-5.3 14.7-7.6 20.1c-2.3 5.4-5.2 10.2-6.2 12.2M570.9 159.4c-3.8 1.3-15.4 4.1-22.7 7.7c-7.3 3.6-13 7.5-21 13.7c-8 6.2-19.7 14.1-27 23.4c-7.3 9.2-13 21.3-16.8 32c-3.8 10.6-4.8 20.7-5.9 31.9c-1.2 11.1-.9 29.1-1 35M603.5 202.9c2.7 1.9 8.9 5.6 16 11.5c7 5.9 18.3 16.6 26.2 23.8c7.9 7.1 14.8 12.1 21.4 19.2c6.5 7.1 13 16.2 17.7 23.4c4.7 7.2 7.4 12.7 10.5 20c3.2 7.2 7.1 19.7 8.5 23.6M631.4 196.1c2.7 2.3 11 10.1 16.3 14.2c5.3 4.1 10.4 7.4 15.5 10.5c5 3.2 10.5 4.2 14.6 8.6c4.2 4.4 7 12.1 10.1 17.8c3.1 5.7 5.9 11.7 8.6 16.3c2.7 4.7 6.3 9.7 7.6 11.7M605.5 154.4c3.9 .9 15.1 3.3 23.5 5.5c8.4 2.2 17.8 4.5 26.9 7.7c9 3.3 19.3 6 27.3 11.7c8 5.6 15.3 13.5 20.8 22.1c5.5 8.6 8.9 20.1 12.1 29.4c3.2 9.3 5.8 22.1 7 26.6M605.6 165.2c3.6 1.1 13.6 3.3 21.4 6.8c7.8 3.5 17.3 8.9 25.5 14.3c8.2 5.3 16.7 11.1 23.7 17.9c7.1 6.8 13.4 14.7 18.6 22.9c5.1 8.3 9.2 17.8 12.3 26.6c3 8.8 4.8 22 5.8 26.4M631 163c2.6 1 10.2 4 15.3 6.2c5.1 2.3 10.3 4.5 15.2 7.3c5 2.8 9.9 5.8 14.4 9.3c4.5 3.6 9 7.6 12.8 11.9c3.9 4.3 7.4 9 10.5 14.1c3.1 5.2 6.6 13.8 8 16.6M604.9 166.1c2.8 .9 10.4 2.7 16.6 5.1c6.1 2.4 13.2 5.8 20.2 9.4c7 3.6 14.9 7.7 21.7 12c6.8 4.4 13.3 8.5 19 14.1c5.7 5.6 10.9 12.6 15.2 19.3c4.3 6.8 8.7 17.6 10.5 21.1M583.2 178.3c3.9 1.2 15.2 3.8 23.8 6.9c8.5 3.2 17.4 6.6 27.6 12.1c10.2 5.5 23.9 12.5 33.6 20.9c9.7 8.3 18.4 18.8 24.7 29c6.3 10.2 9.8 20.9 13 32c3.3 11.1 5.5 29 6.6 34.8M613 167.8c3.5 .7 13.4 1.9 21 4c7.6 2 17 4.5 24.9 8.1c7.9 3.7 15.8 8.1 22.5 13.7c6.7 5.7 12.6 13.1 17.6 20.4c4.9 7.3 8.7 15.9 12.1 23.4c3.4 7.5 6.7 17.8 8.1 21.4M597 193c2.3 .8 8.3 .8 13.9 4.4c5.6 3.6 12.6 11.2 19.7 17.4c7 6.2 15.3 14.1 22.4 19.8c7.2 5.6 14.8 7.6 20.5 14.1c5.8 6.5 10.3 17.2 13.9 25c3.5 7.8 6.3 17.9 7.6 21.5M586.6 192.8c3.3 2.2 12.1 6.8 19.5 12.8c7.3 6 15.7 15.6 24.8 23.2c9.1 7.6 20.9 14.6 29.9 22.4c9 7.8 17.9 16 24 24.4c6.1 8.5 9.4 16.4 12.7 26.1c3.4 9.7 6.2 26.7 7.5 32.1M628.7 179.6c2.4 1.4 9.8 5.6 14.6 8.4c4.8 2.8 9.9 5.4 14.4 8.5c4.5 3.2 8.8 6.5 12.8 10.2c3.9 3.8 7.6 7.8 10.9 12.4c3.4 4.6 6.4 9.9 9 15.2c2.7 5.3 5.8 13.9 7 16.6M614.2 218.4c3.5 2.8 14.3 12.1 20.9 17.1c6.6 5.1 13.2 8.3 18.8 13.1c5.7 4.9 10.6 10.1 15.2 15.8c4.7 5.7 9.1 13 12.8 18.4c3.7 5.4 6.9 8.6 9.6 13.9c2.7 5.3 5.5 14.8 6.7 17.7M600.5 203.8c2.4 1.6 7.4 4.4 14.5 9.4c7 5 19.3 14.3 28 20.6c8.6 6.3 16.8 10 24 16.9c7.1 7 13.9 17.1 18.9 24.8c4.9 7.7 7.4 13.9 10.7 21.6c3.2 7.8 7.3 20.9 8.8 25M619.7 218.8c4.3 3.7 18.1 15.7 25.7 22.4c7.6 6.7 13.8 11.3 20 17.7c6.2 6.5 12.4 14.7 17.3 21.2c4.8 6.4 8.3 11.1 11.8 17.5c3.6 6.4 7.1 13.7 9.5 20.6c2.4 7 4.1 17.6 4.9 21.1M625.9 187.5c4.5 2.6 18.4 11 27.2 16c8.8 5 18.1 7.7 25.5 14c7.3 6.3 13.6 15.7 18.5 23.9c5 8.2 8 17.1 11.1 25.4c3.1 8.4 5.8 16.2 7.7 24.7c1.9 8.5 2.9 22 3.5 26.4M606.1 188.3c3.9 2.1 14.3 7 23.3 12.7c9 5.8 21.6 14 30.7 21.8c9.1 7.7 17.5 15.8 24 24.8c6.5 9.1 11.3 19.7 15.2 29.4c3.9 9.8 5.8 19.6 8.1 29.1c2.2 9.5 4.6 23.1 5.5 27.7M590.9 179.7c.2 1.6 .6 6.9 1.5 10.1c.8 3.1 2.8 7.3 3.4 8.7M566.9 185.1c-.3 1-.7 4.1-1.7 6.1c-.9 2.1-3.3 5.1-3.9 6.1M478.7 358.4c1.7 4 6.8 16.4 10.1 23.9c3.3 7.6 6.1 14.7 9.6 21.2c3.5 6.6 7.2 11.9 11.4 18.2c4.2 6.3 10.3 12.7 13.9 19.8c3.7 7.2 7.5 15.6 7.8 23.2c.2 7.5-5.2 18.4-6.3 22.1M493.3 331.7c1 5.1 3.5 21.5 5.9 30.8c2.4 9.4 5.1 17.4 8.6 25.3c3.4 7.8 8.6 14.6 12.2 21.9c3.6 7.2 6.4 14.1 9.4 21.5c3 7.4 6.7 15.9 8.5 23.1c1.8 7.1 2 16.6 2.4 19.9M483 311.2c.6 5.6 1.4 23.5 3.1 33.6c1.8 10.1 4.4 18.7 7.4 26.9c3.1 8.3 7.2 15.5 11 22.5c3.9 7.1 8.5 13.3 12.4 19.9c3.8 6.7 7.4 12.8 10.6 19.8c3.1 7.1 6.9 18.9 8.2 22.7M491.9 370.8c1.3 3.1 5.1 12.8 7.9 18.6c2.8 5.8 5.9 11.1 8.9 16.4c2.9 5.3 5.7 10.2 8.6 15.5c2.9 5.4 6 10.9 8.7 16.7c2.7 5.8 6.3 12.1 7.6 18c1.4 5.9 .5 14.6 .6 17.5M501.4 366.6c1.2 2.6 4.6 10.8 6.8 15.7c2.1 4.9 4.3 9.2 6.3 13.7c2 4.5 3.7 8.9 5.6 13.3c1.8 4.4 3.6 8.7 5.7 13.2c2.1 4.4 4.8 8.8 6.9 13.4c2.1 4.6 4.8 11.7 5.7 14M485.4 354.6c1 3.7 3.7 15.1 6.3 22c2.7 6.9 6.3 13.2 9.7 19.4c3.4 6.2 7.4 12 10.9 17.7c3.4 5.7 6.6 10.6 9.8 16.6c3.2 6 7.3 12.8 9.3 19.4c2 6.6 2.3 16.6 2.7 20M476.9 358.1c.6 2.3 2.2 9.2 3.6 13.5c1.4 4.4 3 8.4 4.9 12.5c1.9 4 4.3 8.1 6.5 11.9c2.2 3.8 4.4 7.4 6.7 10.9c2.3 3.5 4.8 6.8 7.1 10.1c2.2 3.3 5.4 8.2 6.5 9.8M499.4 349.9c.6 2.3 2.4 9.4 3.9 13.9c1.6 4.6 3.7 9.3 5.2 13.5c1.6 4.3 3.1 8.2 4.3 12.1c1.2 3.9 1.7 7.6 2.9 11.3c1.1 3.8 2.3 7.4 3.8 11.1c1.6 3.7 4.7 9.3 5.6 11.2M499.1 371.5c1.1 2.9 3.9 11.6 6.7 17c2.8 5.4 7.2 10.4 10 15.5c2.7 5.1 4.5 9.8 6.5 14.8c1.9 5.1 2.7 10.5 5.1 15.7c2.4 5.2 6.9 10.6 9 15.7c2.1 5 3 12.1 3.6 14.5M697.6 364.9c0 1.6-1.2 6.4 .3 9.3c1.4 3 6.5 5.6 8.3 8.4c1.8 2.8 2.9 5.4 2.3 8.4c-.5 3-3 5.9-5.4 9.4c-2.5 3.4-6.7 7.4-9.2 11.4c-2.5 3.9-4.2 8.1-5.9 12.4c-1.7 4.4-3.6 9.1-4.4 13.5c-.7 4.4 .1 10.7 .1 12.8M695.8 367.2c1.4 1.9 6.3 7.4 8.6 11.2c2.3 3.9 5.6 7.5 5.1 11.8c-.4 4.2-4.4 8.7-7.8 13.8c-3.3 5.1-9.1 10.9-12.2 16.7c-3.2 5.9-5.8 12.2-6.5 18.3c-.6 6.1 .4 12.1 2.5 18.4c2 6.2 6.1 13.1 9.9 19.3c3.8 6.2 10.7 14.8 12.9 17.7M717.4 343.5c-1.5 1.8-5.7 6.6-9.1 10.9c-3.4 4.3-11.7 9.8-11.4 14.7c.3 5 11.7 9.8 13.3 15c1.6 5.1-.9 9.9-3.9 16c-3 6.1-10.8 13.2-14 20.3c-3.3 7.2-5.7 15.2-5.4 22.7c.2 7.5 3.3 14.8 6.8 22.2c3.5 7.5 11.8 18.9 14.1 22.6M713.5 349.5c-1.5 1.5-6.5 5.6-8.9 8.7c-2.4 3.2-6.2 6.6-5.4 10.3c.7 3.7 8 8.3 10 12.1c2 3.8 2.8 6.9 2.2 10.8c-.6 3.9-2.8 8.2-5.8 12.7c-2.9 4.5-8.6 9.2-11.7 14.3c-3.2 5.2-6.4 11-7.3 16.4c-.9 5.3 1.4 13.2 1.7 15.8M705.6 355c-1.1 1-4.7 2.9-6.3 6.2c-1.5 3.2-4.1 9.1-3.1 13.4c1 4.4 8.5 8.1 9.2 12.7c.7 4.5-1.9 9.1-5 14.7c-3 5.6-10.3 12.3-13.5 19c-3.1 6.7-5.4 13.8-5.4 21c0 7.3 2.3 15.2 5.3 22.6c3 7.3 10.5 18.2 12.6 21.8"/>
<path stroke="#555" stroke-width="0.5" opacity="0.6" d="M548.1 196.4c-1.4 .7-5 2.3-8.1 4.3c-3.1 2-7 4.9-10.7 7.6c-3.6 2.7-7.6 5.1-11 8.4c-3.4 3.4-6.6 7.1-9.4 11.6c-2.8 4.5-5.3 10.6-7.4 15.4c-2 4.7-4 10.9-4.8 13.1M557.1 189.2c-2.1 .5-7.5 .5-12.8 3c-5.3 2.6-12.9 6.9-19 12.3c-6.2 5.5-12.7 12.8-17.7 20.5c-5.1 7.7-9.6 17.8-12.5 25.6c-2.9 7.8-3.5 14.3-5 21.2c-1.4 7-3.2 17.1-3.8 20.5M555.5 198.5c-1.2 .8-3.8 3.1-6.9 4.7c-3 1.6-7.4 2.4-11.5 5c-4.1 2.6-9.4 5.9-13 10.8c-3.7 4.9-5.9 12.3-8.7 18.5c-2.9 6.2-6.3 13.1-8.5 18.5c-2.2 5.5-4 11.8-4.8 14.1M559 189.2c-2.6 .5-9.4 .2-15.8 3.2c-6.4 2.9-16.3 6.6-22.6 14.4c-6.4 7.8-11.1 22.8-15.4 32.5c-4.3 9.8-7.7 17.8-10.4 25.8c-2.7 8-5.1 13.1-5.8 22.2c-.6 9.2 1.5 27.2 1.8 32.6M571.4 175.3c-3.1 1-12.6 4-18.8 6.3c-6.2 2.4-11.4 3.2-18.5 7.9c-7.1 4.6-17.2 11.3-24 19.8c-6.8 8.4-12.6 21.4-16.6 30.9c-4 9.6-5.7 17.8-7.5 26.6c-1.8 8.8-2.8 21.8-3.4 26.2M570.6 182c-2.9 1-11.9 3.7-17.5 5.9c-5.6 2.2-9.6 3.1-16 7.4c-6.5 4.3-16.2 10.2-22.6 18.3c-6.4 8.2-12 21.2-15.9 30.4c-3.9 9.2-5.6 16.8-7.4 24.9c-1.9 8.2-3 20.1-3.6 24.1M540.2 165.8c-3.5 2.2-13.4 7.8-20.9 13.3c-7.5 5.4-17.5 11.8-24.1 19.5c-6.6 7.7-11.5 17.7-15.4 26.8c-3.8 9.1-5.8 18.6-7.7 27.6c-1.9 9.1-3.4 14.9-3.5 26.6c-.1 11.6 2.5 36.1 3 43.4M576.4 185.7c-2.9 .4-12.4 .8-17.6 2.4c-5.2 1.7-8 3.5-13.7 7.2c-5.7 3.8-13.9 8.6-20.7 15.2c-6.8 6.7-15.3 15.7-19.9 24.7c-4.6 9-6 20.6-7.8 29.4c-1.8 8.8-2.7 19.5-3.2 23.4M570.3 187.3c-2.2 .9-8.9 4.2-13 5.5c-4.2 1.3-7.1 .5-11.9 2.2c-4.8 1.7-11.3 4-17 8.1c-5.7 4.1-12.3 9.4-17 16.4c-4.8 7-8.5 18-11.2 25.8c-2.7 7.9-4.2 17.9-5 21.5M546.5 183.2c-1.8 .9-6.7 3.3-10.7 5.9c-3.9 2.7-8.6 6.6-13.3 10c-4.7 3.3-11 5.2-15 10.1c-4 5-6.1 13.8-9.1 19.6c-2.9 5.8-6 10.5-8.4 15.3c-2.4 4.9-4.7 11.4-5.7 13.7M577 180.2c-2.3 .5-9 1.7-13.5 2.8c-4.6 1.1-9.1 2.1-13.8 3.8c-4.6 1.7-8.5 2.9-14.2 6.3c-5.6 3.3-13.7 7.8-19.6 13.7c-6 5.9-11.4 14.5-15.8 21.8c-4.4 7.3-8.8 18.2-10.6 21.9M558.9 202c-2 .9-6.7 2.9-12.3 5.7c-5.5 2.8-15.2 4.1-21.2 10.9c-5.9 6.8-11.2 20.3-14.6 29.8c-3.4 9.4-3.9 19.6-5.8 27c-2 7.4-4.5 10.7-6 17.5c-1.6 6.8-2.7 19.3-3.2 23.1M558.7 170c-2.3 .9-8.8 2.9-13.8 5.2c-4.9 2.4-10 5-16 8.7c-6.1 3.7-14.3 8-20.3 13.7c-6.1 5.7-11.4 13.4-16 20.3c-4.6 6.9-8.5 14.1-11.6 21c-3 7-5.7 17.3-6.8 20.7M559 173.1c-2.5 1-9.3 3.1-15 5.9c-5.7 2.8-12.6 5.8-19.2 10.8c-6.5 5-14.5 11.6-20.3 19.2c-5.8 7.6-10.9 18-14.4 26.4c-3.5 8.4-5 16.3-6.7 24.2c-1.7 7.9-3.1 19.1-3.7 23M570.5 164.3c-3.7 1.2-14.5 4.3-21.8 7.6c-7.3 3.4-13.8 6.2-21.8 12.2c-8.1 6-19.3 14.6-26.6 23.9c-7.3 9.3-13 21.6-17.1 31.8c-4.1 10.2-6.2 18.5-7.6 29.6c-1.4 11.2-.6 30.9-.8 37.1M556.4 194c-1.4 .5-5 1.1-8.3 2.8c-3.2 1.6-7.3 3.9-11.4 7c-4.1 3.1-9 6.9-13 11.7c-4.1 4.8-8 10.9-11.2 17.2c-3.2 6.2-6.1 14-8.1 20.1c-2 6.1-3.3 13.7-4 16.4M548 171.4c-2.8 1.4-10.3 4.6-16.8 8.6c-6.5 4-15.7 9-22.2 15.6c-6.5 6.6-12.2 15.9-16.8 24c-4.6 8.2-7.9 16.8-10.6 24.9c-2.7 8.1-4.7 15.4-5.9 23.6c-1.2 8.3-1.1 21.5-1.3 25.8M544.8 202.8c-2.5 1.7-10.6 5.4-15.4 9.9c-4.7 4.4-9.3 9.9-13.2 16.7c-4 6.7-7.7 16.8-10.3 23.7c-2.5 7-3.8 12.4-5.1 17.9c-1.4 5.5-2.1 10.2-2.9 15.3c-.9 5.1-2 12.7-2.4 15.3M569.8 186c-3.1 1.1-12.1 3.4-18.7 6.3c-6.6 2.9-13.9 4.8-21 11.3c-7.2 6.5-16.2 17.8-21.9 27.9c-5.7 10.1-9.4 22.8-12.2 32.6c-2.8 9.8-3.5 15.7-4.5 26c-1 10.3-1.3 29.8-1.5 35.8M552.8 168.8c-2.6 1.3-9.3 4-15.5 7.5c-6.2 3.4-14.7 7.6-21.7 13.1c-7 5.6-14.5 12.5-20.1 20c-5.6 7.6-10.1 16.9-13.5 25.2c-3.3 8.3-5.2 16.5-6.7 24.8c-1.4 8.2-1.6 20.5-1.9 24.6M564.8 155.6c-3.5 1.4-13.9 4.7-21.1 8.4c-7.3 3.7-14.5 7.4-22.4 13.6c-7.9 6.2-18.1 14.3-24.8 23.4c-6.8 9.2-11.8 21.1-15.6 31.2c-3.8 10.2-5.8 19.4-7.1 29.7c-1.4 10.2-.8 26.6-.9 32M595.6 185.2c3.5 1.4 12.2 3.3 20.7 8.4c8.6 5 20.8 14.8 30.6 21.9c9.8 7.1 20.1 12.4 28.3 20.4c8.1 8.1 15.5 18.5 20.6 28c5.2 9.5 7.6 19 10.2 29.2c2.7 10.1 4.7 26.4 5.7 31.7M595.2 161.1c5.1 1.3 19.3 3.3 30.8 7.9c11.5 4.6 26.4 11.3 37.9 19.7c11.6 8.4 23.3 19.1 31.2 30.7c8 11.7 12.7 26 16.5 39.1c3.8 13.1 4.6 27.6 6.4 39.5c1.9 11.9 4 26.7 4.8 32M624.7 221c4.4 3.2 18.6 12.6 26.3 19.2c7.7 6.5 13.9 13 19.9 20.2c6 7.2 11.9 15.9 16.3 22.9c4.4 7 7.4 11.7 10.2 19.1c2.9 7.3 5.3 17.6 6.8 25.2c1.5 7.6 1.9 16.9 2.3 20.3M588 162.4c3.8 .3 14.7-.1 22.5 1.5c7.8 1.7 15.6 4.2 24.4 8.2c8.7 3.9 19.2 9.6 28.1 15.3c8.9 5.7 18 11.3 25.2 18.9c7.2 7.5 13.2 17.6 17.9 26.4c4.7 8.8 8.5 22.1 10.2 26.6M576.5 152.2c3.9 0 15.1-1 23.6 0c8.4 .9 17.3 2.8 27 5.5c9.7 2.7 21 6 31.2 10.9c10.1 4.8 21.5 10.3 29.9 18.3c8.4 8 15.3 19.3 20.4 29.8c5.2 10.5 8.7 27.7 10.5 33.2M613.7 193.5c3 1.6 11.7 5.7 18.2 9.3c6.6 3.7 14.8 8 21.3 12.5c6.5 4.6 12.5 9.3 17.8 14.8c5.3 5.5 9.9 12.4 14.2 18.3c4.4 6 8.9 11.6 12.1 17.4c3.1 5.8 5.7 14.4 6.9 17.3M609 196.8c3 2.5 10.9 9.9 18.1 15c7.3 5.1 17.6 10.5 25.3 15.5c7.7 5 15 7.9 21 14.5c6.1 6.5 11.1 17 15.3 24.6c4.1 7.5 6.5 14 9.6 20.7c3.1 6.7 7.5 16.4 9 19.7M598 203.8c2.8 2.2 8.2 6.3 16.3 12.8c8.2 6.5 22.8 18.3 32.7 26.4c9.8 8.1 18.8 14.3 26.3 22.1c7.6 7.9 13.8 16.5 19 25.1c5.1 8.6 8.9 17.8 11.8 26.7c2.9 8.9 4.7 22.3 5.6 26.8M601.1 150.7c5.7 1 22.1 2.3 34 6.2c12 3.9 26.4 8.8 37.7 17c11.3 8.3 22.5 20.5 30.1 32.5c7.7 12 12.3 26.1 15.8 39.4c3.5 13.2 3.6 27.8 5.2 40.2c1.5 12.4 3.4 28.6 4.1 34.3M600.2 158.9c3.8 .9 14.2 2.7 22.6 5.5c8.4 2.8 18.5 6.7 27.6 11.5c9.1 4.9 19.1 10.4 27.1 17.5c7.9 7.1 15.1 15.7 20.5 24.9c5.4 9.2 8.9 20.3 11.9 30.2c3 9.8 5 23.9 6 28.7M608.9 213.2c2.2 2.1 8.1 7.9 13.1 12.7c5.1 4.8 12.1 11.7 17.3 16.2c5.3 4.5 9.8 7 14.3 10.7c4.5 3.7 8.8 7.2 12.9 11.6c4.1 4.5 8.3 10.4 11.7 15.1c3.4 4.8 7.3 11.1 8.7 13.4M611.1 209.3c2 1.7 7.3 6.6 12 10.4c4.8 3.7 11.4 8.6 16.4 12.1c5.1 3.6 9.6 6 13.9 9.2c4.3 3.3 7.9 6.5 11.8 10.2c3.9 3.6 7.8 7.8 11.4 11.9c3.5 4 8.2 10.3 9.9 12.4M596.9 154c3.3 .8 12.9 2.7 20 4.6c7 2 14.6 3.9 22.4 7.2c7.7 3.3 16.2 7.5 23.9 12.6c7.7 5 15.7 11 22 17.8c6.4 6.9 11.6 15.1 15.9 23.2c4.4 8.1 8.6 21.2 10.3 25.4M622.3 194.2c4.7 2.5 19.3 10.1 28.2 15.3c8.8 5.2 17.8 9.2 25 16c7.3 6.7 13.6 16.3 18.6 24.4c5.1 8.1 8.5 16 11.7 24.2c3.1 8.3 5.2 17.1 7.2 25.4c2 8.3 4 20.5 4.8 24.6M629.1 163.5c4 1 16 2.8 23.6 6.2c7.6 3.5 15.1 8.9 22 14.3c6.9 5.4 13.7 11.5 19.3 18.1c5.6 6.6 10.2 14.2 14.1 21.3c4 7.2 7.4 13.8 9.6 21.6c2.3 7.7 3.4 20.8 4.1 25M610 203.7c2.5 1.7 9.3 6 15 10.3c5.8 4.2 13.7 10.7 19.7 15.3c6 4.6 11.3 7.8 16.5 12.1c5.1 4.3 9.9 8.7 14.3 13.8c4.4 5.2 8.8 11.8 12.2 17.2c3.4 5.4 6.8 12.7 8.1 15.2M577.9 152.6c3.6-.1 14.2-1.5 21.8-.8c7.6 .8 15.4 2.6 23.9 5.2c8.5 2.7 18 6.6 27.1 10.9c9.1 4.3 19.4 8.1 27.4 15c8 6.8 15.1 16.8 20.8 26.1c5.6 9.2 11 24.4 13.2 29.3M631.6 167.2c3.7 1.7 15.2 6.4 22.4 10.6c7.2 4.2 14.4 9.2 20.7 14.8c6.2 5.6 12.1 11.8 17 18.9c4.8 7.1 8.7 16.1 12 23.7c3.3 7.6 5.7 14.5 7.7 21.8c2.1 7.4 3.8 18.5 4.5 22.2M622 161.1c5.6 2.1 22.8 6.6 33.6 12.4c10.7 5.8 22.2 13.4 31.1 22.3c8.8 8.9 16.6 20.3 22.2 31c5.5 10.8 8.6 21.5 11 33.3c2.3 11.9 1.4 27.2 2.9 37.8c1.5 10.6 4.9 21.5 5.9 25.8M616.4 189.5c4.4 3.1 17.8 12.2 26.1 18.7c8.3 6.5 16.7 13.1 23.8 20.5c7.2 7.4 13.7 16.1 19.1 23.9c5.4 7.8 9.8 15.3 13.5 23c3.7 7.7 6.4 15.1 8.8 23.1c2.4 8 4.7 20.7 5.6 24.9M613.6 164c3.5 1.1 13.1 4.5 20.7 6.5c7.7 1.9 17.4 1.5 25.3 5c7.8 3.4 15.2 9.9 21.8 15.6c6.6 5.7 12.5 12.1 17.8 18.7c5.3 6.5 10.8 12.8 14.1 20.5c3.3 7.8 4.6 21.7 5.5 26M571.5 180.8c-.2 1.2-.7 5-1.5 7.4c-.8 2.3-2.9 5.7-3.5 6.9M583.6 185.2c.1 1.2 .3 4.8 .6 7.1c.2 2.3 1 5.6 1.2 6.7M579.1 179.6c0 1.8 0 7.4 0 10.7c-.1 3.3-.1 7.6-.1 9.2M502.6 373.2c1.4 2.8 5.4 11.7 8.2 17.3c2.8 5.6 6 10.9 8.6 16.2c2.5 5.3 4.4 10.3 6.5 15.6c2.1 5.3 4.1 10.8 6 16.4c2 5.5 4.4 11.5 5.7 16.9c1.4 5.4 2.1 12.7 2.5 15.3M471.9 315.8c.6 5.3 1.8 22.8 3.4 31.7c1.7 8.9 4.2 14.9 6.5 21.6c2.2 6.8 4.5 12.7 7 18.7c2.5 6 4.9 12 7.9 17.4c3 5.4 6.4 10 10.1 15c3.6 5.1 9.8 12.7 11.8 15.2M486.8 349.9c1 3.8 3.7 15.5 6.1 22.7c2.3 7.1 5 13.8 7.9 20.3c3 6.5 6.3 12.5 9.6 18.5c3.3 6 6.8 11.2 10.2 17.3c3.5 6 7.9 12.8 10.5 19.2c2.5 6.4 4.1 15.9 4.9 19M504.3 370.5c.8 1.8 3.8 7.1 4.9 10.5c1.2 3.3 .5 6.5 1.9 9.5c1.4 3 4.7 5.6 6.5 8.5c1.8 2.8 3.4 5.8 4.6 8.7c1.1 3 .9 6 2.3 9c1.5 3 5.3 7.5 6.3 9M489 317.2c.4 5 1.3 21 2.7 30.1c1.3 9.2 2.8 17.1 5.6 24.8c2.8 7.8 8 14.7 11.2 21.6c3.3 6.8 5.6 13 8.3 19.4c2.7 6.4 4.8 12.5 8.1 19.2c3.2 6.6 9.5 17.1 11.4 20.5M485.5 321.9c1.1 6.1 3.7 25.9 6.7 36.6c3.1 10.7 7.5 18.9 11.4 27.4c4 8.5 8.4 15.7 12.4 23.4c3.9 7.7 7.8 14.6 11.2 22.6c3.3 7.9 7.8 17 8.9 25.1c1.2 8.1-1.5 19.5-1.8 23.4M712.8 347.7c-1.3 1.5-4.4 4.9-7.4 8.7c-2.9 3.9-10.6 9.7-10.2 14.3c.4 4.6 11.2 8.4 12.7 13.2c1.5 4.8-.6 9.7-3.5 15.4c-2.8 5.7-10.1 12.1-13.5 18.8c-3.3 6.8-6.2 14.3-6.6 21.6c-.5 7.3 1.1 14.8 3.9 22.1c2.8 7.3 10.8 18.3 12.9 21.9M707.7 350c-.6 1-2.3 4.2-3.5 5.8c-1.2 1.6-2 1.8-3.6 4c-1.7 2.2-6.3 6-6.4 9.3c0 3.2 4.6 6.7 6.2 10.1c1.6 3.3 3.6 6.6 3.4 10c-.1 3.5-1.8 6.6-4.2 10.5c-2.3 3.9-7.2 8.1-10 13c-2.8 4.9-5.8 13.5-7 16.3M698.1 372.3c1.3 .9 5.6 3.5 7.8 5.4c2.3 1.9 4.6 3.8 5.8 5.8c1.2 2 1.5 4.1 1.3 6.4c-.2 2.3-.9 4.8-2.5 7.2c-1.6 2.4-4.6 4.7-7 7.3c-2.3 2.7-5.1 5.7-7.1 8.6c-2 2.9-3.6 5.7-4.8 8.7c-1.2 3-2 7.9-2.3 9.5M707.3 353.6c-1.9 2.2-10.6 8.3-11.5 12.8c-.9 4.4 4.5 9.4 6.2 14c1.7 4.6 5.2 8.4 3.9 13.6c-1.3 5.2-7.8 11-11.7 17.5c-3.8 6.6-9.4 14.6-11.3 21.9c-1.8 7.3-1.9 14.4 .2 22c2 7.6 7.4 16 12.1 23.6c4.8 7.6 13.6 18.5 16.4 22.2M700.8 361.1c-.3 2.2-3.5 9.1-1.9 13.2c1.6 4.1 10.3 7.2 11.3 11.5c1 4.2-2.3 8.9-5.2 13.8c-2.9 5-9.1 10.1-12.2 15.9c-3.1 5.9-5.1 12.9-6.4 19.1c-1.3 6.2-2.7 12-1.2 18.3c1.4 6.3 6 13.1 9.7 19.5c3.7 6.4 10.4 15.7 12.5 18.8M692.7 371.9c.6 .7 2.1 3 3.7 4.6c1.7 1.7 4.9 3.3 6 5.2c1 1.9-.1 4.4 .3 6.2c.4 1.8 2.3 2.9 2.1 4.8c-.2 2-1.5 4.3-3.2 6.7c-1.8 2.3-5.6 4.7-7.3 7.3c-1.7 2.5-1.4 5-3 7.9c-1.5 2.8-5.2 7.6-6.2 9.2"/>
<path stroke="#222" stroke-width="0.6" opacity="0.6" d="M570 198.8c-2.9 .6-10.7 .6-17.3 3.4c-6.7 2.7-15.4 5.6-22.7 13.2c-7.3 7.7-15.9 22.4-21.1 32.5c-5.2 10.1-7.6 19.3-10.2 28.3c-2.5 9.1-3.7 15.1-5.1 26.1c-1.4 11-2.8 33.3-3.3 40M550.7 202c-2.1 1.3-8.3 4.3-12.9 7.9c-4.6 3.7-10.2 8.2-14.9 13.9c-4.7 5.7-9.6 14-13.4 20.4c-3.8 6.5-7.2 12.7-9.4 18.2c-2.3 5.6-3.1 9.9-4.1 15.3c-1 5.4-1.8 14.4-2.1 17.2M541.2 168.9c-2 1.3-7.5 4.6-12.2 7.6c-4.6 3-10.7 6.6-15.7 10.5c-5 3.8-10.1 7.7-14.4 12.5c-4.2 4.8-7.7 10.7-11 16.2c-3.2 5.5-6.2 11.1-8.5 16.7c-2.2 5.7-4.2 14.1-5 17M546.3 206.9c-3.2 1.4-13.9 3-19.4 8.3c-5.6 5.3-9.9 15.5-13.9 23.6c-4 8.2-7.1 18.5-10 25.1c-2.8 6.7-5.8 9.1-7.2 14.9c-1.4 5.8-.8 12.2-1.3 19.8c-.5 7.6-1.5 21.5-1.8 25.8M557.3 185.1c-2.7 1-9.2 2.3-15.8 6.2c-6.6 3.8-16.8 8.9-23.8 16.7c-7 7.8-13.9 20.4-18.4 29.9c-4.6 9.5-6.8 18.4-8.9 27.1c-2.2 8.7-3.3 14.7-4.1 25c-.8 10.4-.6 30.9-.7 37.1M552.2 175.2c-1.6 .7-6.2 2.2-10 4.1c-3.9 1.9-8.4 4.2-13.1 7.3c-4.7 3.1-10.6 6.6-15.1 11.3c-4.5 4.7-8.6 10.9-12.1 17.1c-3.5 6.1-6.5 13.7-9 19.9c-2.5 6.1-4.8 13.9-5.8 16.7M551.4 188.4c-1.6 .4-6 .8-9.7 2.5c-3.8 1.8-8.4 5-13 8.1c-4.6 3-10.2 5.9-14.5 10.5c-4.4 4.5-8.2 10.8-11.5 16.6c-3.3 5.8-5.9 12.7-8.2 18.1c-2.4 5.4-4.8 11.8-5.7 14.2M576.3 194.3c-2.9 .6-11.9 2.3-17.3 3.7c-5.4 1.5-9.2 1.1-15.4 5c-6.1 3.9-15 10-21.3 18.4c-6.3 8.4-12.4 23-16.3 32.3c-3.9 9.4-5.2 16.2-7.3 23.8c-2.1 7.7-4.5 18.4-5.4 22.1M577.4 182.5c-2.7 .4-11.2 .7-16.2 2.1c-5 1.3-8.5 2.9-13.9 6c-5.4 3-11.8 7-18.4 12.2c-6.7 5.2-15.4 11.6-21.5 19c-6.2 7.4-11.9 17.2-15.5 25.4c-3.6 8.2-5 19.7-6 23.7M544.8 200.7c-1.4 1-5.4 3.4-8.2 5.7c-2.8 2.4-5.5 5.7-8.5 8.5c-3 2.7-7.1 4.2-9.6 8c-2.5 3.8-3.5 9.9-5.6 14.6c-2 4.7-4.7 9.4-6.5 13.4c-1.9 4-3.7 8.9-4.5 10.6M564.1 174.4c-2.7 .5-10.5 1.9-16.1 3.2c-5.7 1.3-11.3 1-17.8 4.6c-6.4 3.6-14.8 10.1-20.9 17.1c-6 7-10.9 17.1-15.5 24.9c-4.6 7.7-8.7 14.3-11.9 21.5c-3.2 7.2-6 18-7.2 21.6M552.3 203.2c-2.5 1.2-9.4 3.4-14.8 7.4c-5.3 4.1-12.5 9.5-17.5 16.7c-5.1 7.2-9.7 18.8-12.8 26.7c-3.1 7.8-4.5 14-5.9 20.4c-1.5 6.4-2 11.7-3 18c-.9 6.3-2.4 16.7-2.9 20M554.6 186.9c-1.6 .1-6.2-.7-9.7 .5c-3.5 1.2-7.1 3.5-11.3 6.5c-4.1 3-9.5 7.1-13.7 11.5c-4.2 4.4-7.8 9.5-11.5 14.7c-3.7 5.3-7.6 11.6-10.6 16.8c-3 5.2-6.2 12-7.5 14.5M568.2 166.1c-2.8 .7-11.6 2.4-17.1 4.1c-5.4 1.8-9.7 2.4-15.4 6.3c-5.7 3.9-12.7 10.6-18.7 17c-6 6.4-12.1 14.1-17.2 21.6c-5.1 7.4-10.5 15.4-13.5 23.3c-2.9 7.9-3.6 20.2-4.4 24.2M556.3 185.4c-2 1.2-7.3 3.8-12.3 7.1c-5.1 3.4-12.1 7.2-18.2 12.8c-6 5.5-13.7 12.1-18.2 20.5c-4.6 8.4-6.7 21.5-9.2 29.7c-2.4 8.3-4.1 12.8-5.5 19.6c-1.3 6.8-2.2 17.7-2.7 21.3M554.9 186.7c-1.4 .8-5.1 2.6-8.5 4.5c-3.3 1.8-7.5 3.6-11.8 6.5c-4.3 3-9.7 6.5-13.9 11.1c-4.1 4.7-7.6 10.6-10.9 16.7c-3.3 6-6.5 13.9-8.9 19.9c-2.4 6.1-4.4 13.7-5.3 16.4M566.2 193c-2.4 .6-8.9 2.1-14 4c-5.1 2-10.6 3.2-16.8 7.5c-6.2 4.2-14.6 10.2-20.2 18c-5.7 7.8-10.3 20.3-13.7 28.9c-3.3 8.5-4.6 15.1-6.4 22.2c-1.8 7.1-3.8 16.9-4.6 20.3M544.5 203.4c-3 1.9-12.5 5.9-18 11.6c-5.6 5.7-11 14.6-15.3 22.4c-4.3 7.7-7.9 16.8-10.3 23.9c-2.5 7.1-3.1 12.5-4.4 18.7c-1.2 6.1-2.3 10.8-3.2 18.3c-.9 7.4-1.9 22.1-2.3 26.5M525.2 210.3c-2 2.9-8.6 11-12.3 17.4c-3.6 6.4-7.1 14.7-9.7 21c-2.5 6.2-4.5 11.4-5.8 16.7c-1.3 5.4-1.5 10.2-2 15.5c-.6 5.2-.8 10.1-1.3 15.9c-.4 5.8-1.2 15.9-1.4 19M545.5 194.4c-2.8 1.3-11.1 4-16.6 8c-5.5 4-11.8 9.5-16.6 16.1c-4.8 6.7-9.2 16.7-12.4 23.9c-3.2 7.2-5 13.2-7 19.3c-2 6.1-3.5 11.1-4.7 17.2c-1.3 6-2.2 15.8-2.7 19M525.8 220.3c-1.4 2.2-6 7.9-8.6 12.8c-2.6 5-5.1 11.6-7.1 16.9c-2.1 5.3-3.8 10.4-5 14.9c-1.1 4.4-1.2 7.9-1.9 11.5c-.7 3.6-1.5 6.6-2.2 10.1c-.7 3.4-1.5 8.7-1.8 10.4M527.8 211.1c-2.5 3.2-10.7 12-15.1 19.2c-4.3 7.1-8.3 16.8-11.1 23.8c-2.8 6.9-4.1 12.2-5.6 18c-1.5 5.9-2.4 11-3.3 17.2c-1 6.2-1.9 11.7-2.5 20c-.5 8.2-.7 24.5-.9 29.4M529.5 207.3c-2.8 2.9-11.8 10.3-16.7 17.3c-4.8 7-9.4 17.6-12.5 24.9c-3.2 7.2-4.8 12.5-6.6 18.5c-1.7 6.1-2.8 11.3-4 17.7c-1.1 6.5-2.2 12.1-2.6 20.9c-.4 8.8 .1 26.7 .1 32M521.8 222.2c-1.6 2.4-7 9.1-9.5 14.6c-2.5 5.6-4.1 13.3-5.7 18.7c-1.5 5.3-2.5 9.6-3.7 13.6c-1.1 4-2.7 6.5-3.3 10.3c-.6 3.8-.1 8.5-.3 12.5c-.2 4.1-.8 9.8-1 11.7M516.7 223.1c-1.8 4-8.1 16.5-10.8 23.8c-2.7 7.3-4.2 13.9-5.6 19.8c-1.3 5.9-1.8 10.5-2.6 15.8c-.8 5.2-1.7 9.5-2.2 15.6c-.5 6-.6 13.3-.9 20.8c-.3 7.4-.7 19.8-.8 23.8M519.4 207.9c-1.9 2.3-8.6 8.1-11.7 13.8c-3.2 5.7-5.1 14.6-7.2 20.5c-2.1 5.9-4 9.9-5.5 14.6c-1.5 4.7-2.6 8.9-3.3 13.7c-.6 4.7-.3 10.3-.7 15c-.4 4.8-1.6 11.1-1.9 13.3M539.3 209.4c-2.3 1.9-9.7 6.2-14 11.2c-4.3 5-8.5 12.4-11.9 18.8c-3.4 6.4-6.6 14.1-8.8 19.9c-2.1 5.7-2.8 9.9-4.1 14.7c-1.2 4.7-2.2 9-3.2 13.7c-1 4.7-2.1 12.2-2.5 14.6M558.4 155.3c-2.6 1.1-10.4 3.9-15.7 6.7c-5.3 2.7-9.6 5.8-15.9 9.9c-6.2 4-15.3 8.5-21.6 14.4c-6.3 5.8-11.6 13.4-16.2 20.6c-4.6 7.2-8.3 14.9-11.3 22.5c-3 7.5-5.6 19.1-6.7 22.9M542.5 164.1c-2 1.1-7.1 3.8-11.7 6.8c-4.6 3-10.9 7-15.9 11.2c-5 4.1-9.9 8.4-14.2 13.7c-4.2 5.3-8 12-11.3 17.9c-3.4 5.9-6.2 12-8.5 17.7c-2.4 5.7-4.8 13.7-5.7 16.5M522 178.5c-2.6 1.9-11.1 6.7-15.6 11.1c-4.6 4.4-8.2 10-11.8 15.2c-3.7 5.2-7.1 10.4-10 15.8c-2.9 5.3-5.5 10.7-7.3 16.3c-1.8 5.5-2.3 11.5-3.5 17c-1.1 5.4-2.7 13-3.2 15.6M590.6 157.4c5.3 .4 20.3-1.3 31.6 2c11.4 3.3 24.6 10.6 36.3 17.9c11.7 7.2 24.9 15.2 33.9 25.8c9.1 10.5 16 24.4 20.4 37.6c4.4 13.2 4 28.9 6 41.5c2 12.7 5 28.9 6 34.6M580.7 153.2c4.3-.2 16.7-2.3 25.9-1.5c9.2 .8 19 3.1 29.1 6.3c10.2 3.3 21.8 7.4 32 13.2c10.2 5.9 21.2 13 29.1 22c7.9 9 14 21.2 18.5 32c4.4 10.9 7 27.7 8.4 33.3M603.5 175.5c3 1.5 10.6 5.3 17.8 8.9c7.2 3.7 16.9 8.8 25.3 13c8.4 4.1 17.7 6.3 24.9 12c7.2 5.7 13.3 14.1 18.4 22.2c5.1 8 8.8 18.4 12.4 26.1c3.7 7.6 7.9 16.6 9.4 19.9M581.6 175.2c4.6 1.1 16.7 2.8 27.1 6.7c10.5 4 23.5 9.9 35.4 16.9c11.9 7 26.1 14.7 36 25c9.9 10.3 17.7 24.4 23.3 36.9c5.5 12.4 7.3 25.8 10.1 37.7c2.7 11.9 5.1 28.2 6.1 33.8M594.6 195.4c3.2 1.5 10.4 3.8 19.3 8.7c8.9 4.9 23.6 13.6 34.1 20.7c10.6 7.1 21 13.2 29.1 22c8.1 8.9 14.4 20.9 19.3 31.3c4.9 10.4 7.3 21.1 10 31c2.8 9.9 5.5 23.7 6.6 28.4M614.4 160.2c4.6 1.1 18 3.4 27.5 6.9c9.6 3.6 21 7.9 30 14.2c9.1 6.2 17.9 14.3 24.6 23.4c6.6 9 11.3 20.8 15.1 31.1c3.9 10.2 5.9 20.2 7.8 30.4c1.9 10.1 3 25.4 3.6 30.5M640.1 166c3.1 1.4 12.8 5.2 18.9 8.5c6 3.2 12 6.9 17.5 11.1c5.6 4.3 11.3 8.8 15.7 14.4c4.4 5.5 7.7 12.5 10.9 18.9c3.3 6.4 6.1 13.1 8.4 19.5c2.3 6.4 4.5 15.7 5.4 18.8M584.8 166.9c4.3 .5 16.5 1.1 25.9 3.1c9.4 2 19.9 4.4 30.6 9c10.7 4.6 24 10.6 33.8 18.6c9.7 8 18.1 19.3 24.6 29.6c6.5 10.4 10.8 21.4 14.2 32.3c3.5 11 5.5 27.9 6.5 33.5M629.6 165.8c5.4 2.1 22.2 7.1 32.6 12.8c10.3 5.7 21.6 12.2 29.5 21.3c8 9 13.4 22.2 18 33.1c4.7 10.8 7.6 20.9 9.9 31.8c2.3 11 2.5 23.8 3.8 33.6c1.4 9.9 3.6 21.4 4.4 25.6M622.5 154.3c4.2 1.6 16.9 5.6 25.4 9.4c8.4 3.7 17.5 7.2 25.4 12.9c7.8 5.7 15.8 13 21.8 21.2c6 8.2 10.3 19.1 14.1 28.2c3.8 9 6.7 17.2 8.7 26.3c2 9.1 2.8 23.7 3.3 28.5M583.5 160c4 .4 15.5 .8 23.8 2.1c8.3 1.3 16.8 1.7 26 5.7c9.2 4 20.1 11.6 29.2 18.5c9.1 6.9 18.1 14.5 25.4 22.9c7.3 8.5 14.2 18 18.7 27.8c4.5 9.7 6.7 25.8 8.1 30.9M585 187.8c3.5 2 13.4 7.1 21.4 12.2c7.9 5 16.9 10.9 26.4 18.1c9.5 7.3 21.8 16 30.7 25.2c8.8 9.1 16.6 20.4 22.4 29.9c5.8 9.5 8.9 17.1 12.4 26.8c3.4 9.7 7 26.2 8.4 31.4M589.5 170.7c4.1 1.1 15.3 3 24.6 6.5c9.2 3.6 20.6 8.5 30.8 14.8c10.2 6.2 21.9 13.7 30.6 22.8c8.6 9.1 15.9 21.4 21.4 31.7c5.6 10.3 9 19.7 12 30.3c3 10.7 4.8 28.1 5.8 33.7M581.7 184.8c3.1 1.2 13 4.4 18.8 7.1c5.9 2.7 8.7 4.5 16.1 9c7.5 4.5 19.6 12.7 28.7 18.1c9 5.5 18.1 8.2 25.7 14.6c7.7 6.5 15.2 15.8 20.3 24.1c5.2 8.3 8.8 21.5 10.6 25.7M597 158.2c3 .6 12 2.2 18.4 4c6.5 1.7 13.1 3.7 20.3 6.6c7.2 2.9 15.4 6.4 22.7 10.7c7.4 4.3 15.1 9.1 21.3 15.1c6.2 6.1 11.5 13.7 16 21.4c4.4 7.7 8.8 20.8 10.6 24.9M622.2 190c2.4 1 9.8 3.3 14.7 5.8c4.9 2.6 9.9 6.7 14.6 9.3c4.8 2.7 9.6 4.3 14.1 6.8c4.6 2.5 9.4 4.6 13.2 8.1c3.9 3.5 6.6 8.9 9.8 13.1c3.2 4.1 7.8 9.8 9.4 11.8M621.4 152.8c3.8 1.5 14.9 6 22.7 9.1c7.7 3.2 16.3 5.2 23.9 9.6c7.7 4.4 16 9.7 22.1 16.8c6 7 10.1 17.4 14.3 25.6c4.2 8.2 8.1 15.5 10.8 23.5c2.7 8 4.6 20.5 5.5 24.6M581.1 156.6c4.1-.2 16-1.4 24.7-.9c8.7 .6 17.8 1.3 27.6 4.4c9.8 3 21.5 7.6 31.2 13.9c9.7 6.4 19.4 14.8 26.9 24.1c7.5 9.3 13.2 21.6 17.9 31.8c4.8 10.3 8.7 24.6 10.5 29.5M605.8 199.7c3.7 2.3 13.3 8.7 22 14.2c8.6 5.6 20.9 12.2 29.9 19.1c9 6.8 17.6 13.8 24.1 21.9c6.4 8.2 10.6 18.2 14.7 27c4.1 8.9 7.3 17.4 10 26.1c2.7 8.6 5 21.7 6 26.1M599.2 171.2c3.7 .7 13.3 1.5 21.8 4.2c8.5 2.8 20.2 6.7 29.3 12.4c9.1 5.7 17.8 13.9 25.4 21.9c7.5 8 14.4 17.4 20 26c5.6 8.5 10.5 16.1 13.6 25.5c3.1 9.3 4.2 25.5 5 30.7M637.7 230.8c3 2 12.4 7.8 18 11.6c5.5 3.9 10.4 7 15.3 11.6c4.9 4.7 9.9 11.1 13.8 16.2c3.9 5.2 6.7 9.8 9.4 14.9c2.7 5.1 4.6 10.2 6.7 15.8c2.1 5.5 4.7 14.7 5.7 17.7M614.4 208.5c3.7 2.7 14.8 11 21.8 16.6c7 5.7 14.1 11.4 20 17.3c6 6 11 11.8 15.7 18.4c4.7 6.6 9.1 14.9 12.6 21.2c3.5 6.3 5.9 10.7 8.7 16.6c2.8 6 6.5 15.9 7.8 19.1M623.7 191.5c4 2.6 16.2 10 23.8 15.3c7.5 5.2 15.2 10 21.5 16.2c6.3 6.3 11.7 13.8 16.4 21.2c4.7 7.5 8.7 16.3 11.9 23.6c3.2 7.3 5.2 13.2 7.3 20.4c2.1 7.3 4.3 19.2 5.2 23M635.2 232.8c3.5 2.9 14.3 11.4 20.8 17.4c6.5 6.1 12.9 12.2 18.1 18.7c5.2 6.5 9.5 13.8 13 20.3c3.6 6.5 5.9 12.2 8.5 18.9c2.6 6.7 5.4 14.7 7 21.4c1.7 6.6 2.5 15.4 3 18.5M604.1 190.4c3.2 2.2 11.3 7.4 19.1 13.3c7.9 5.9 19.5 15.1 28.1 22c8.6 6.8 17 11.4 23.6 19.3c6.7 7.8 12.2 19 16.4 27.8c4.2 8.9 6 17 8.7 25.5c2.7 8.5 6.2 21.5 7.5 25.8M633 229.3c3.5 2.8 14.7 11.2 20.9 17c6.2 5.7 11.6 11 16.5 17.5c5 6.4 9.4 14.8 12.9 21.2c3.6 6.4 5.6 11.2 8.4 17.2c2.8 6 6 12.7 8.2 18.9c2.1 6.3 3.9 15.4 4.7 18.5M640.8 202.9c3.1 1.9 12.5 7.9 18.3 11.6c5.9 3.8 11.7 6.8 16.9 11.1c5.2 4.2 10.2 9.4 14.4 14.5c4.3 5.1 8.1 10.6 11 16c3 5.4 5 10.5 6.8 16.4c1.8 5.9 3.6 15.7 4.3 18.8M624.3 201c4.6 3.2 19 13.1 27.5 19.5c8.5 6.3 16.5 11.3 23.3 18.5c6.8 7.3 13.1 16.8 17.7 24.8c4.6 7.9 7 14.7 9.9 22.9c2.8 8.1 5.5 17.9 7.3 26.1c1.8 8.3 2.9 19.4 3.5 23.3M615.5 191.4c4.1 3 16.3 12.1 24.4 18.1c8.1 6 16.9 11.5 24.1 17.9c7.3 6.4 14 12.9 19.5 20.5c5.4 7.7 9.8 17.1 13.1 25.4c3.3 8.4 4.6 16.4 6.7 24.7c2 8.2 4.5 20.8 5.4 24.9M644.3 228c2.3 1.8 9.3 7.3 13.6 10.7c4.4 3.4 8.7 5.7 12.6 9.4c4 3.8 7.9 8.4 11.1 12.9c3.3 4.6 5.8 10 8.3 14.4c2.4 4.3 4.5 7.6 6.4 11.7c1.9 4 4.2 10.3 5.1 12.4M641.2 216.9c2.6 1.9 10.7 7.6 15.5 11.3c4.8 3.8 9 6.6 13.1 11.1c4 4.5 7.5 10.7 11 15.7c3.5 5 7.3 9.7 9.9 14.5c2.7 4.8 4.2 9.6 5.9 14.5c1.7 4.9 3.6 12.5 4.4 15M643.7 239.1c2 1.7 8.3 7 12.2 10.5c3.8 3.5 7.4 6.5 11 10.3c3.5 3.8 7.2 8.2 10.3 12.5c3.1 4.2 6 8.9 8.2 12.9c2.3 4.1 3.7 7.3 5.3 11.3c1.6 4 3.5 10.4 4.2 12.5M621.4 194.4c3.1 1.8 12.4 6.9 18.5 10.4c6.2 3.5 12.5 7.2 18.3 10.8c5.7 3.6 11.3 6.4 16.3 10.7c5 4.3 9.6 9.8 13.6 15c4.1 5.3 7.6 11.2 10.5 16.5c2.8 5.3 5.6 12.9 6.7 15.5M644.3 212.4c3.2 2.6 13.3 10.2 19.4 15.2c6.1 5 12.1 8.7 17 14.8c4.9 6.2 9.1 15 12.2 22.1c3.2 7 4.7 13.9 6.9 20.4c2.2 6.5 4.7 12.1 6.5 18.5c1.9 6.3 4.1 16.4 4.9 19.6M628.4 154.5c5.6 1.9 22.7 5.8 33.4 11.4c10.7 5.5 22.4 12.5 30.9 21.7c8.5 9.1 15.1 21.9 20.1 33.2c5 11.2 7.8 22.7 9.9 34.5c2.1 11.7 1.5 25.3 2.8 35.9c1.4 10.6 4.3 23.2 5.1 27.9M634.7 157.4c4.8 1.7 19.6 5.2 28.9 10.2c9.3 4.9 19.5 11.5 27.1 19.4c7.5 8 13.3 18.9 18.1 28.5c4.8 9.7 8.1 19.4 10.6 29.4c2.6 10.1 3.4 20.9 4.6 30.9c1.2 10 2.3 24.3 2.8 29.1M638.8 157.9c4.3 1.6 17.4 5.2 25.8 9.6c8.4 4.3 17.5 9.8 24.5 16.6c7 6.8 12.8 15.8 17.6 24.3c4.8 8.5 8.2 17.9 11 26.8c2.9 8.9 4.9 17.5 6.2 26.6c1.3 9.1 1.4 23.2 1.7 27.8M620.4 160c4.2 1.4 17 5 25.7 8.6c8.7 3.5 18.4 7 26.6 12.7c8.1 5.7 15.9 13.3 22 21.6c6.2 8.3 10.8 19.3 14.7 28.2c3.9 8.9 6.8 16.1 8.8 25.2c2 9.2 2.5 24.8 3 29.8M648 168c3.6 1.9 14.7 6.7 21.6 11.1c6.9 4.5 14.3 9.2 20 15.4c5.6 6.2 9.8 14.2 13.8 21.7c4 7.4 7.5 15.3 10.1 22.8c2.6 7.4 4.4 14.3 5.7 21.9c1.4 7.5 2.1 19.6 2.5 23.5M644.7 160.5c2.8 .9 11.1 3.1 16.4 5.4c5.3 2.4 10.3 5.5 15.2 8.8c4.9 3.3 9.8 6.6 14.1 10.9c4.2 4.2 7.9 9.3 11.3 14.5c3.3 5.1 6.1 10.9 8.6 16.3c2.5 5.4 5.3 13.4 6.4 16M657.9 170.4c4.4 3 18.8 10.5 26.4 17.8c7.6 7.3 14.1 17 19.2 26.2c5.2 9.2 8.7 19.3 11.6 28.9c3 9.7 4.6 19.3 6 29c1.3 9.6 1.1 20.7 2.2 29.2c1.1 8.6 3.6 18.4 4.3 22M570.1 180.8c-.3 1.1-.7 4.4-1.5 6.6c-.9 2.1-2.9 5.3-3.5 6.3M567.1 185.2c-.3 1.3-.9 5.3-2 7.9c-1.1 2.5-3.9 6-4.7 7.2M566.9 178.5c-.4 2.1-.9 8.8-2.1 12.6c-1.2 3.9-4 8.7-4.8 10.4M503.6 360.4c.6 1.9 2.5 7.4 3.9 11c1.3 3.5 2.7 7 4.1 10.2c1.4 3.3 2.9 6.3 4.1 9.2c1.3 3 2.2 5.7 3.3 8.6c1 3 1.8 6.1 3 9c1.1 3 3.4 7.2 4 8.7M700.4 360.2c-1 1.5-5.9 6-6 9.2c0 3.3 4 7 5.7 10.3c1.7 3.3 4.4 6 4.6 9.4c.1 3.5-1.3 7-3.7 11.1c-2.4 4.2-7.9 8.8-10.9 13.7c-2.9 4.9-5.3 10.4-6.7 15.7c-1.4 5.3-2.2 10.4-1.7 16c.5 5.5 3.8 14.3 4.6 17.1"/>
<path stroke="#333" stroke-width="0.7" opacity="0.5" d="M518.4 214c-1.1 2.1-4.3 8.2-6.5 12.4c-2.3 4.2-4.9 9.2-7.2 13c-2.3 3.8-5.1 6.4-6.8 9.8c-1.8 3.3-2.9 6.9-3.8 10.4c-.9 3.5-.8 7.4-1.6 10.5c-.8 3.1-2.8 6.8-3.4 8.2M539 205c-1.7 1.4-7 5.5-10.6 8.6c-3.7 3.2-8.1 5.8-11.3 10.4c-3.2 4.7-5.5 11.8-7.8 17.3c-2.3 5.6-4.3 11.5-6 15.9c-1.8 4.5-3.6 7-4.6 10.9c-1 3.8-1 10.4-1.2 12.5M521.2 218.4c-1.6 3.5-7 14-9.8 21.1c-2.9 7.1-5.4 15.5-7.3 21.5c-1.9 6-2.9 9.7-4 14.5c-1.2 4.7-2.2 9.2-2.9 14.2c-.7 5-1 9.3-1.2 15.6c-.2 6.3 0 18.5 0 22.2M521.6 211c-1.7 2.4-7.4 8.9-10.7 14.4c-3.3 5.5-6.6 13.1-9.1 18.6c-2.4 5.5-4.1 9.9-5.7 14.5c-1.6 4.5-2.6 8.5-3.9 12.5c-1.3 4.1-2.9 7.7-4 11.9c-1.1 4.2-2.2 11.2-2.7 13.4M544.5 192.4c-2.6 1.4-10.2 4.3-15.5 8.2c-5.2 4-11.2 9.3-15.9 15.6c-4.7 6.2-9 15.1-12.3 22c-3.3 7-5.6 13.3-7.5 19.4c-1.8 6.2-2.7 11.8-3.8 17.6c-1.1 5.8-2.4 14.3-2.8 17.2M510.6 222.9c-1.3 2.2-5.7 8.8-8.1 13.1c-2.5 4.3-5.2 8.8-6.8 12.9c-1.7 4-2.3 7.5-3.2 11.3c-1 3.8-1.7 7.8-2.4 11.5c-.7 3.7-1.1 7-1.8 10.5c-.7 3.6-2.2 8.9-2.6 10.6M536.1 199.5c-3.1 2.4-12.9 8.3-18.2 14.7c-5.3 6.4-9.9 16-13.6 23.6c-3.6 7.5-6.4 15.1-8.5 21.9c-2.1 6.7-3 12.4-4.1 18.7c-1.1 6.3-2.1 11.3-2.6 19.2c-.5 7.8-.5 23.2-.6 27.9M541.8 195.5c-3 2.2-12.7 7.4-18.4 13.3c-5.8 5.8-11.6 14.1-16 21.9c-4.4 7.8-7.8 17.4-10.2 25c-2.4 7.6-3 13.7-4.1 20.6c-1 6.8-1.4 12.3-2 20.3c-.7 8-1.7 23.1-2 27.7M534.5 214.7c-2.2 2.5-9 8.9-13 14.9c-4.1 6-8.2 14.7-11.2 21.1c-3 6.5-5.3 12.4-7 17.8c-1.7 5.3-2.3 9.4-3.2 14.2c-.9 4.7-1.5 9-2.1 14.3c-.6 5.4-1.2 14.8-1.4 17.7M539.2 208.9c-1.9 1.3-7.7 4.8-11.2 8.2c-3.5 3.3-6.7 7.1-9.7 11.9c-3 4.9-6.1 11.6-8.5 17c-2.3 5.3-4.1 10.6-5.5 15.2c-1.4 4.5-2.1 8.1-2.9 12c-.8 3.9-1.6 9.5-1.9 11.4M533.1 211.7c-2.3 2.7-9.6 9.3-13.7 15.9c-4.2 6.5-8.3 16.6-11.2 23.4c-2.8 6.9-4.4 12.3-6.1 17.7c-1.7 5.4-3 9.8-4.3 14.7c-1.2 5-2.3 8.9-3.2 14.8c-.9 5.9-1.7 17.3-2.1 20.7M544.9 162.3c-3.1 1.7-11.2 5.5-18.4 10.1c-7.1 4.7-17.5 10.7-24.5 17.8c-7 7.1-12.8 16.3-17.4 24.8c-4.6 8.5-7.9 17.3-10.3 26.1c-2.5 8.8-3.8 17.1-4.5 26.9c-.8 9.7 0 26.1 0 31.4M533.1 172.8c-2.3 1.4-8.8 5.3-13.5 8.4c-4.6 3.1-10.2 6.3-14.4 10.2c-4.3 3.9-7.6 8.4-10.9 13.4c-3.3 4.9-6.3 11-8.9 16.2c-2.5 5.2-4.7 10.1-6.5 15c-1.8 4.9-3.5 12.1-4.2 14.5M524.6 172.1c-2.5 1.7-10.5 6.3-15.2 10.2c-4.7 3.9-9.1 8.3-13 13.1c-4 4.8-7.7 10.2-10.6 15.6c-3 5.4-5.3 11.4-7.3 16.8c-2.1 5.5-3.6 10.8-5 16.2c-1.3 5.3-2.8 13.3-3.4 15.9M520.1 177.9c-2.8 2-11.8 7.3-16.8 12c-4.9 4.6-9.4 10.3-13.2 15.9c-3.8 5.6-6.9 11.8-9.6 17.7c-2.6 5.9-4.4 11.9-6.2 17.8c-1.8 5.9-3.4 11.9-4.5 17.7c-1 5.9-1.6 14.6-1.9 17.5M537.2 170.3c-2.5 1.5-9.7 5.4-15 9.1c-5.3 3.6-11.8 7.7-16.9 12.7c-5 4.9-9.5 10.9-13.3 17c-3.8 6.1-6.8 13.2-9.3 19.5c-2.5 6.3-4.1 12.3-5.7 18.4c-1.7 6-3.4 15-4.1 18M528.9 174.7c-4 2.8-16.8 10.2-23.8 16.9c-7 6.8-13.5 15.1-18.1 23.6c-4.6 8.5-7.1 18.5-9.5 27.3c-2.4 8.8-3.8 16.5-5 25.5c-1.2 8.9-2.7 16.1-2.1 28.4c.7 12.2 5.1 37.4 6.1 44.9M537.4 166c-2.9 1.3-11.3 4.5-17.2 8.2c-6 3.8-13.1 8.9-18.6 14.5c-5.5 5.6-10.2 12.5-14.3 19c-4.1 6.5-7.8 13.1-10.5 19.9c-2.7 6.9-4.2 14.4-5.8 21.3c-1.5 6.8-2.9 16.6-3.5 19.9M513.8 179.9c-2.1 1.7-8.7 6.3-12.4 10c-3.7 3.8-6.8 8.1-9.8 12.5c-2.9 4.5-5.5 9.6-7.8 14.2c-2.3 4.7-4.3 9.2-6.1 13.7c-1.7 4.6-3 9.2-4.2 13.8c-1.2 4.5-2.4 11.3-2.9 13.6M545 161.7c-2.8 1.3-10.1 4.6-16.6 8.2c-6.6 3.7-15.8 8.1-22.4 13.8c-6.6 5.8-12.3 13.2-17.1 20.6c-4.9 7.3-8.9 15.7-12 23.7c-3 8-5 16.3-6.4 24.2c-1.4 8-1.8 19.7-2.2 23.6M645.5 234.6c3 2.5 12.5 9.1 18.2 14.9c5.7 5.7 11.5 13.1 16.1 19.5c4.5 6.4 7.9 12.6 11.1 18.6c3.2 6.1 5.4 11.5 7.8 17.8c2.4 6.3 5 13.8 6.6 20.1c1.5 6.3 2.3 14.8 2.7 17.7M636.1 210.6c2.4 1.4 9.8 5.7 14.4 8.3c4.6 2.6 9 4.7 13.2 7.3c4.3 2.5 8.5 5 12.3 8.2c3.8 3.3 7.5 7.2 10.7 11.2c3.2 4 6.1 8.8 8.6 12.9c2.4 4.1 5.1 9.8 6.1 11.8M636 237.3c2 1.7 8.2 7.1 11.8 10.3c3.7 3.2 6.9 5.8 10.2 8.9c3.2 3.2 6.2 6.4 9.2 9.8c3 3.5 6.1 7.6 9 11c2.8 3.5 5.7 6.7 8 9.9c2.2 3.1 4.5 7.6 5.5 9.1M609.4 206c3.9 2.2 15.3 7.8 23.3 13.3c8.1 5.4 17.6 12.9 25.1 19.5c7.6 6.5 14.2 12.8 20.2 19.6c6 6.7 12 13.5 16.1 20.9c4 7.4 5.5 15.6 8 23.6c2.4 7.9 5.4 20.2 6.5 24.3M621.5 220.7c3.5 2.4 14.5 10 20.8 14.6c6.2 4.7 11.2 8.5 16.5 13.2c5.2 4.6 10.2 9.7 14.9 14.7c4.6 5 9.5 10.1 13 15.3c3.4 5.1 5.4 9.9 7.7 15.4c2.3 5.6 5.1 14.8 6.1 17.8M610 186.9c3.3 1.5 12.3 5.1 19.7 9.1c7.3 4 16.8 10.1 24.4 15c7.7 5 15.1 8.8 21.4 14.9c6.4 6.1 11.9 14.5 16.5 21.7c4.6 7.3 8.1 14.5 11 21.9c3 7.3 5.6 18.5 6.7 22.2M630.1 213.8c2.4 2.2 10.2 9.3 14.7 13.3c4.5 4 8.5 6.9 12.4 10.6c3.8 3.8 7.3 7.6 10.7 11.9c3.4 4.4 6.5 9.4 9.4 14.1c3 4.6 6 9.4 8.2 13.9c2.3 4.4 4.5 10.6 5.4 12.7M632.2 202.4c2.7 1.9 11.4 7.8 16.6 11.4c5.3 3.6 10.2 6.6 14.8 10.1c4.7 3.6 9.1 6.8 13.2 11.1c4 4.3 7.9 9.8 11.2 14.7c3.3 4.9 6.1 9.8 8.5 14.4c2.5 4.7 5.2 11.4 6.2 13.7M624.4 202.8c2.9 1.5 12 5.8 17.4 9.1c5.5 3.3 10.5 6.7 15.1 10.5c4.6 3.8 8.6 8.4 12.7 12.4c4.2 4 8.7 7.4 12.4 11.8c3.8 4.4 7.5 9.5 10.1 14.6c2.7 5 5 13.3 6 15.9M608.4 186.6c2.9 1.7 10.5 5.9 17.5 9.9c7.1 4.1 17.2 9.6 24.9 14.3c7.7 4.7 15 7.9 21.3 14.1c6.3 6.1 12 15.1 16.6 22.7c4.6 7.6 8 15.7 11.1 22.7c3.1 7.1 6.4 16.3 7.7 19.6M641.5 228.4c1.7 1.7 6.7 7.2 10.1 10.2c3.3 2.9 7 4.3 10 7.4c3 3.1 5.5 7.3 8.1 11.1c2.7 3.7 5.4 7.5 7.8 11.2c2.4 3.7 4.9 7.4 6.7 11.1c1.9 3.7 3.7 9.2 4.5 11.1M646.1 239.2c2.6 1.9 10.6 7.1 15.6 11.5c4.9 4.5 10 9.8 14.1 15.1c4.2 5.3 7.9 11.3 11 16.5c3 5.2 4.9 9.5 7.1 14.7c2.2 5.1 4.1 10.6 5.9 16.2c1.8 5.5 4 14.1 4.8 16.9M611.6 195.5c3.6 2.3 14.3 8.8 22.1 14.2c7.8 5.4 17.3 11.9 24.7 18.1c7.4 6.2 13.9 12.1 19.7 19.3c5.8 7.1 11 16.2 14.9 23.6c4 7.4 6.2 13.4 8.8 20.8c2.7 7.5 5.9 19.9 7.1 23.8M608.3 203.3c3.6 2.8 13.9 11 22 17c8.1 6 18.5 12.7 26.5 18.9c8 6.3 15.7 11.2 21.7 18.5c5.9 7.3 10.1 17.5 14.1 25.5c4 7.9 7 14.3 9.8 22c2.8 7.7 5.9 20.1 7 24.1M655.9 169.3c2.8 1.5 11.8 5.3 17.2 8.8c5.5 3.5 11.1 7.5 15.7 12.4c4.6 4.8 8.4 11.1 12.1 16.9c3.6 5.7 7 11.7 9.7 17.5c2.7 5.8 4.8 11.3 6.6 17.2c1.7 5.8 3.3 15 3.9 18M643.4 163c3.4 1.4 13.7 5.1 20.5 8.6c6.7 3.4 14 7.1 19.9 12c6 5 11.3 11.4 15.7 17.8c4.5 6.4 8.1 13.9 11.2 20.7c3.2 6.9 5.6 13.4 7.6 20.4c1.9 7.1 3.4 18.2 4.1 21.8M611.5 156.9c4.5 1.3 17.6 4.2 27 8c9.3 3.7 20 8.5 29.1 14.4c9.2 6 18.7 12.8 25.7 21.4c7 8.6 12.3 20.4 16.4 30.5c4.2 10.1 6.4 19.9 8.5 30.3c2 10.3 3 26.3 3.6 31.6M641.3 163.4c4.1 1.7 16.6 5.9 24.4 10.3c7.8 4.4 16.2 9.6 22.6 16.1c6.5 6.5 11.6 14.9 16 23c4.4 8.1 7.8 17.3 10.6 25.7c2.8 8.3 4.6 16 6 24.5c1.4 8.4 2.1 21.8 2.5 26.2M641 163.5c3.4 1.6 13.7 5.8 20.4 9.5c6.6 3.7 13.7 7.8 19.6 12.7c6 4.9 11.5 10.4 16.1 16.7c4.7 6.2 8.6 13.9 11.9 20.8c3.3 7 5.7 13.7 7.6 20.7c2 7.1 3.6 17.9 4.3 21.4M612.1 153.7c3.9 .8 15.1 2.5 23 4.9c8 2.3 16.6 5.2 24.8 9.1c8.1 3.9 16.8 8.4 24 14.3c7.1 5.8 13.8 12.9 19 20.8c5.2 7.8 9 17.6 12.1 26.2c3.1 8.7 5.6 21.2 6.7 25.5M623.4 156.1c5.4 1.7 21.7 5.2 32.3 10.1c10.7 4.9 22.8 10.6 31.6 19.2c8.7 8.6 15.6 21.1 20.9 32.2c5.4 11.2 8.3 23.4 10.9 34.9c2.6 11.5 3.2 23.5 4.8 34.1c1.5 10.6 3.8 24.5 4.6 29.5M629.6 155.9c5.1 1.6 20.6 4.9 30.5 9.6c10 4.7 21 10.5 29.2 18.5c8.2 8 14.7 19.3 19.9 29.5c5.1 10.3 8.5 21.1 11 32c2.5 10.9 2.8 22.8 4 33.3c1.3 10.6 3 24.9 3.5 29.9M500.8 352.4c.6 2.2 2 9 3.5 13.4c1.5 4.5 3.9 9.2 5.6 13.4c1.7 4.1 3.1 7.8 4.6 11.5c1.5 3.7 2.7 7.1 4.4 10.9c1.7 3.7 3.9 7.7 5.6 11.3c1.8 3.7 4 9 4.8 10.8M491.5 324.9c.8 4 2.7 16.7 4.5 23.9c1.7 7.2 3.9 13.3 6 19.4c2.2 6.2 4.6 12 6.8 17.4c2.2 5.4 4.3 10.2 6.5 15.3c2.2 5 4.5 10.1 6.7 15.2c2.2 5 5.6 12.4 6.7 14.9M500.8 368.4c1.1 2.6 4.4 10.7 6.6 15.7c2.3 4.9 4.8 9.3 6.9 13.9c2.2 4.6 3.9 9.2 6 13.7c2.1 4.6 4.3 8.9 6.5 13.4c2.2 4.5 4.6 9 6.6 13.7c2 4.7 4.4 12.1 5.3 14.5M704.1 356.3c-1 1.2-5 4-6.2 7.3c-1.1 3.3-1.8 8.5-.8 12.7c.9 4.2 6.4 8 6.4 12.4c0 4.3-3.4 8.4-6.5 13.7c-3.1 5.4-9.3 11.9-12 18.3c-2.8 6.5-4.7 13.5-4.6 20.4c0 7 2.3 14.2 4.8 21.3c2.6 7.1 8.8 17.7 10.6 21.2"/>
<path stroke="#111" stroke-width="0.7" opacity="0.65" d="M538 209.3c-2 1.6-8.5 5.3-12.2 9.1c-3.8 3.7-7.1 8.4-10.4 13.4c-3.2 5.1-6.6 11.9-9.1 17c-2.5 5.2-4.1 9.7-5.7 13.9c-1.5 4.2-2.7 7.4-3.8 11.2c-1.1 3.9-2.4 9.9-2.8 11.9M526.4 199.7c-2.2 1.9-9.6 6.6-13.5 11.4c-4 4.8-6.9 11.8-10.1 17.4c-3.2 5.5-6.7 11-9.1 16.1c-2.4 5-3.9 9.3-5.2 14.1c-1.3 4.8-1.6 10.3-2.6 14.9c-1.1 4.7-2.9 10.8-3.4 13M536.2 211.7c-2.7 2-11.7 6.1-16.2 11.8c-4.6 5.6-8.2 15.2-11.2 22.1c-3 7-4.8 14.1-6.8 19.5c-2.1 5.5-4.2 8.7-5.7 13.5c-1.6 4.7-2.9 9.2-3.6 15c-.7 5.8-.5 16.6-.6 19.9M515.5 217.1c-1.9 3.5-8.1 14-11.4 20.5c-3.2 6.6-6.1 13-8.1 18.8c-2 5.8-2.8 10.7-4.1 15.9c-1.3 5.1-2.8 9.6-3.7 15.2c-.9 5.6-1.4 10.7-1.7 18.5c-.3 7.8-.1 23.6-.2 28.4M542 192.8c-1.9 1.6-7.3 6.3-11.5 9.7c-4.2 3.4-9.5 5.9-13.6 10.5c-4.1 4.6-8.2 10.8-11.1 17c-2.9 6.1-4.8 14-6.5 19.9c-1.7 6-2.5 10.9-3.7 15.7c-1.1 4.8-2.8 11-3.3 13.2M543.9 193.2c-2.5 1.4-9.9 4.5-14.9 8.1c-4.9 3.5-10.4 7.5-14.8 13.1c-4.4 5.5-8.3 13.7-11.5 20.1c-3.3 6.3-5.9 12.6-8 18.2c-2 5.7-3.1 10.6-4.4 15.8c-1.3 5.2-2.7 12.9-3.2 15.5M532.6 211.2c-1.7 2-6.6 7.6-9.9 12.1c-3.4 4.5-7.1 9.8-10.2 14.9c-3 5.2-6.1 10.8-7.9 15.8c-1.8 5.1-2.1 10.2-3 14.5c-.8 4.4-1.2 7.8-2.1 11.6c-.9 3.7-2.8 9-3.4 10.8M531.9 205.6c-2.7 2.4-11.4 8.2-15.9 14.4c-4.6 6.1-8.5 15.5-11.5 22.7c-3 7.2-4.7 14.3-6.5 20.4c-1.7 6.1-3 10.6-4 16c-1.1 5.5-2 10.2-2.5 16.7c-.5 6.4-.5 18.5-.6 22.2M514.7 220.3c-1.3 2.5-5.6 10.2-8.1 15c-2.5 4.9-4.9 10-6.9 14.2c-2 4.2-3.7 7.2-5 10.9c-1.4 3.8-2.2 7.7-3 11.6c-.8 3.8-1.1 7.8-1.7 11.5c-.7 3.8-1.8 9.1-2.1 10.9M525.7 223.9c-1.4 2.4-5.8 9.4-8.5 14.6c-2.6 5.1-5.5 11.3-7.6 16.1c-2.1 4.8-3.9 8.8-5 12.8c-1.2 3.9-1.4 7.3-2 11.1c-.5 3.7-1 7.7-1.5 11.4c-.4 3.7-1 8.9-1.2 10.7M521.3 218.9c-2.3 3.7-9.9 14.8-13.6 21.8c-3.7 7.1-6.6 14.5-8.6 20.8c-2.1 6.2-2.7 11.3-3.8 16.9c-1.1 5.6-1.9 10-2.7 16.5c-.7 6.6-1.3 14.5-1.8 22.7c-.5 8.1-1 21.7-1.2 26.1M541.1 194.9c-3.1 2.1-12.9 7.1-18.5 12.8c-5.6 5.7-10.9 13.7-15.2 21.3c-4.3 7.7-8.3 17.2-10.8 24.6c-2.5 7.4-3.2 13.3-4.3 19.9c-1.1 6.7-1.6 12.2-2.1 19.8c-.5 7.7-.7 21.7-.8 26M545.7 203.1c-2.2 1.8-8.9 6.4-13.3 10.7c-4.4 4.3-9.1 8.9-13.1 15.1c-4 6.3-8.1 15.4-10.7 22.3c-2.6 6.9-3.5 13.4-4.8 19c-1.3 5.6-2.3 9.7-3.1 14.5c-.8 4.8-1.6 12-1.9 14.4M513.2 180.7c-2.9 2.5-12.1 9.4-17 15.2c-4.9 5.9-9 13.3-12.4 20c-3.4 6.6-6 13.2-8.1 20c-2.1 6.7-3.6 13.8-4.7 20.5c-1.1 6.7-1.8 11.9-2 19.6c-.1 7.8 1 22.5 1.2 26.9M543.3 164.1c-3.1 1.7-11.7 5.6-18.7 10.2c-6.9 4.6-16.4 10.2-22.9 17.4c-6.5 7.1-11.5 16.9-16 25.3c-4.4 8.4-7.9 16.7-10.6 24.9c-2.7 8.3-4.2 15.8-5.3 24.8c-1.2 9-1.2 24.2-1.4 29.1M523.9 173.2c-3.8 2.8-16.4 9.9-23 16.9c-6.5 7-12 16.5-16.3 25c-4.4 8.5-7.6 17.6-10 26.2c-2.4 8.5-3.6 16.1-4.5 25.1c-.8 9-1.2 16.7-.4 28.9c.7 12.3 3.9 37.1 4.7 44.5M546.1 161.2c-2.9 1.6-10.6 5.2-17.5 9.5c-6.9 4.2-16.9 9.6-24 16c-7.1 6.4-13.5 14.5-18.5 22.6c-4.9 8-8.4 17-11.3 25.6c-2.9 8.6-4.6 17-5.9 25.9c-1.3 9-1.5 23.1-1.8 27.7M627.8 217.2c2.8 2.6 11.6 10.7 16.8 15.3c5.1 4.6 9.7 7.9 14.1 12.3c4.4 4.4 8.6 9 12.4 14.2c3.8 5.1 7.5 11.5 10.5 16.7c2.9 5.2 5.2 9.8 7.3 14.4c2.1 4.7 4.4 11.2 5.3 13.4M632 230.1c3.5 2.7 14.6 11.1 21.3 16.1c6.6 5 13 8.1 18.4 13.7c5.5 5.6 10.3 13.8 14.1 20.1c3.8 6.2 5.8 11.5 8.7 17.5c2.9 6.1 6.3 12.3 8.5 18.7c2.2 6.4 3.8 16.4 4.6 19.6M621.2 218.9c2.5 2.1 10.2 8.9 15 12.9c4.7 4 9.4 7.6 13.5 10.9c4.1 3.3 7.5 5.7 11.2 9.1c3.7 3.3 7.7 7 11.1 11c3.3 4 6.3 8.7 9 12.8c2.7 4.2 6 10.2 7.1 12.3M608.1 198.2c2.3 1.6 8.2 5.2 14.1 9.5c5.8 4.3 14.7 11.3 21.2 16.5c6.5 5.2 12.4 9.4 17.9 14.6c5.5 5.2 10.6 10.3 15 16.3c4.5 6 8.5 13.6 11.7 19.7c3.2 6.1 6.4 14 7.7 16.8M603.4 201.5c2.1 1.5 6.5 4.4 12.5 9.2c5.9 4.8 15.9 13.5 23.2 19.5c7.3 6 14.4 10.6 20.5 16.6c6.2 6 11.6 12.8 16.4 19.4c4.9 6.6 9.3 13.7 12.7 20.3c3.4 6.6 6.4 15.9 7.7 19.1M624.4 221.8c2.9 2.7 12.1 11.5 17.4 16.2c5.3 4.6 10 7.5 14.4 11.6c4.5 4.1 8.5 8 12.4 12.8c4 4.8 8.1 10.8 11.2 15.9c3.2 5.1 5.4 10 7.6 14.5c2.3 4.6 4.9 10.6 5.8 12.7M648.3 240.9c1.9 .9 7.7 3.1 11.2 5.2c3.5 2.2 6.7 4.8 10 7.9c3.2 3.1 6.5 7.3 9.4 10.8c3 3.5 5.7 7 8.1 9.9c2.5 3 4.7 5 6.7 7.8c1.9 2.8 4.3 7.5 5.2 9M629.6 215.6c3.6 2.2 15.1 9.1 21.9 13.5c6.7 4.3 12.8 7.4 18.4 12.7c5.7 5.3 11.2 12.8 15.5 18.9c4.3 6.2 7.5 12.1 10.5 18c3 5.9 5.3 11.3 7.6 17.4c2.4 6.1 5.4 16.1 6.5 19.3M623.6 205c2.8 2.2 11.3 8.9 16.5 13.4c5.2 4.6 10.3 9.5 15 13.7c4.6 4.2 8.9 7.1 12.9 11.6c4 4.5 7.7 10 11.1 15.3c3.3 5.3 6.4 11.5 8.8 16.6c2.4 5.1 4.7 11.9 5.6 14.3M614.7 190.5c4.7 2.8 19.2 10.8 28.5 16.7c9.3 6 19.2 11.8 27.3 19.2c8.1 7.4 15.6 16.8 21.3 25.4c5.7 8.5 9.6 16.8 12.9 25.9c3.4 9.1 5.3 19.5 7.4 28.6c2 9.1 4 21.7 4.8 26.1M604.7 208.9c2.7 2.3 9.3 7.7 16.4 13.9c7.2 6.2 18.4 16.3 26.2 23.2c7.7 6.9 14.2 11.5 20.4 18.4c6.1 6.9 12.1 16.1 16.5 23.2c4.3 7.1 6.6 12.4 9.7 19.4c3.1 7.1 7.4 19.2 8.9 23M617.6 192.7c2.7 1.4 10.5 5.1 16.2 8.3c5.6 3.2 12 7.2 17.6 10.7c5.5 3.5 10.8 6.6 15.7 10.2c5 3.7 9.7 7.3 13.9 11.9c4.1 4.6 7.9 10.4 11.2 15.5c3.4 5.1 7.2 12.4 8.6 14.9M656.7 166.7c2.9 1.7 11.9 6.6 17.5 10.5c5.5 3.9 11.2 8 15.9 12.8c4.8 4.7 9.1 9.8 12.8 15.7c3.6 6 6.7 13.3 9.1 19.8c2.5 6.4 4 12.9 5.6 18.9c1.7 6.1 3.5 14.7 4.2 17.6M620.5 156.1c5.3 1.9 21.5 5.9 32.1 10.9c10.5 4.9 22.2 10.6 31.2 18.9c8.9 8.3 17 20.1 22.7 30.9c5.7 10.8 8.9 22.4 11.6 33.8c2.7 11.3 3.1 23.5 4.6 34.4c1.6 10.9 3.8 25.7 4.5 30.9M603.2 154.4c3.5 .5 13.4 1.4 20.8 3c7.4 1.7 15.8 3.9 23.7 7.1c8 3.1 16.6 7 24 12c7.4 5 14.7 10.8 20.6 17.9c5.9 7.2 10.6 16.6 14.6 25c3.9 8.3 7.7 20.9 9.2 25.1M609.6 158.2c4.5 1.3 17.6 4.3 27.2 7.8c9.7 3.6 21.2 7.4 30.6 13.4c9.4 5.9 18.9 13.4 26.1 22.5c7.1 9 12.4 21.3 16.6 31.6c4.2 10.3 6.7 19.7 8.7 30.1c2 10.3 2.8 26.7 3.4 32M636.1 159c4.5 1.9 18.5 6.2 27.3 11c8.7 4.8 17.9 10.6 25.1 17.8c7.3 7.2 13.5 16.3 18.3 25.4c4.8 9 7.9 19.2 10.6 28.8c2.6 9.5 3.9 19.1 5.3 28.4c1.4 9.4 2.4 23 2.8 27.6M658.2 171.4c2.3 1 9.5 3.5 13.9 6.3c4.4 2.8 8.4 7.1 12.4 10.5c4.1 3.4 8.4 5.9 11.8 9.9c3.4 4 6.1 9.3 8.6 14.2c2.5 5 4.5 10.8 6.5 15.5c2 4.6 4.8 10.3 5.8 12.4M645.2 162.2c4.6 2.4 19 8.4 27.6 14.3c8.6 5.9 17.3 13 24 21.2c6.6 8.2 11.7 18.7 15.7 28c4.1 9.4 6.7 18.4 8.7 28.1c2 9.8 2.2 20.8 3.3 30.3c1.1 9.6 2.8 22.5 3.4 27M496.6 356.9c.9 2.6 3.6 10.8 5.5 15.8c1.9 5.1 3.9 9.8 6 14.3c2.1 4.5 4.4 8.6 6.4 12.8c2.1 4.1 4 8.2 6 12.3c2 4.1 4 8 6 12.2c2.1 4.1 5.1 10.6 6.1 12.7M495 347.1c.7 2.8 2.6 11.3 4.2 16.6c1.5 5.4 3.3 10.6 5.1 15.5c1.8 4.8 3.8 9.2 5.7 13.7c1.8 4.4 3.7 8.6 5.6 12.9c1.9 4.3 3.9 8.5 5.8 12.9c2 4.3 4.9 10.9 5.8 13.1M693.9 371.8c.8 1.1 3.4 4.4 5.1 6.6c1.6 2.1 3.9 4.2 4.8 6.3c.9 2.1 1.1 4 .7 6.3c-.4 2.3-1.4 4.7-3 7.2c-1.6 2.6-4.6 5.2-6.8 8.1c-2.2 2.9-4.6 5.9-6.4 9.2c-1.9 3.3-3.4 7.1-4.7 10.7c-1.3 3.5-2.5 8.7-3 10.5"/>
<path stroke="#f0f0f0" stroke-width="0.7" opacity="0.85" d="M564.9 181.5c-2.8 1.1-10.6 3.6-17.2 6.5c-6.5 2.8-15 4.2-22.2 10.6c-7.1 6.3-15.1 18-20.5 27.7c-5.5 9.7-9 21.3-12 30.5c-3.1 9.1-5.4 14.9-6.5 24.5c-1.1 9.5-.2 27.4-.2 32.9M572.7 166.2c-3.7 1.3-15.1 4.6-22.4 7.9c-7.3 3.3-13.3 5.9-21.4 11.8c-8.1 5.9-19.7 14.2-27 23.6c-7.3 9.4-12.8 22.1-16.7 32.8c-3.9 10.6-5.5 19.5-6.7 31.1c-1.1 11.6 0 31.9-.1 38.3M553.1 177.4c-2.5 .6-9.6 .5-15.4 3.4c-5.9 2.9-13.2 8.4-19.6 14c-6.4 5.5-13.4 11.9-18.8 19.1c-5.3 7.1-10.3 15.7-13.4 23.6c-3.1 7.8-3.5 15.9-5.2 23.3c-1.7 7.4-4 17.6-4.8 21.1M542.7 180c-1.8 .9-6.6 2.9-10.5 5.4c-3.9 2.5-8.9 5.9-12.8 9.6c-3.9 3.7-7.4 7.8-10.7 12.7c-3.3 4.9-6.4 11.3-9.1 16.7c-2.7 5.4-4.9 11.1-6.9 15.9c-2 4.8-4.3 10.7-5.2 12.8M562.7 167.2c-2.7 .3-10.7 .3-15.8 1.9c-5.1 1.6-9.2 3.5-14.7 7.5c-5.6 4-12.4 10.8-18.6 16.3c-6.2 5.5-13.4 10.3-18.5 16.9c-5 6.5-9.3 14.4-12 22.2c-2.6 7.8-3.2 20.5-3.9 24.6M535.5 183.7c-1.7 1.4-6.5 5.6-10.1 8.4c-3.6 2.8-7.9 5.5-11.5 8.7c-3.6 3.1-7.1 6.1-10.1 10.2c-3 4-5.8 9.1-8 13.9c-2.2 4.9-3.8 10.2-5 15.1c-1.3 4.9-2.1 11.9-2.5 14.2M533 173.3c-1.9 .9-7.2 3.5-11.3 5.5c-4.1 2-9.3 3.7-13.2 6.4c-4 2.7-7.4 5.9-10.5 9.7c-3.1 3.7-5.4 8.6-8 12.7c-2.7 4.1-5.6 8.1-7.9 11.9c-2.4 3.8-5.3 9.1-6.4 10.9M530.1 175.1c-2.1 1.7-8.3 6.3-12.2 10c-3.9 3.7-7.5 8.2-11.2 12.4c-3.7 4.2-7.5 8.4-10.9 12.7c-3.3 4.4-6.8 8.5-9.2 13.2c-2.4 4.8-3.9 10.2-5 15.4c-1.2 5.2-1.6 13.3-1.9 15.9M549.1 167.6c-3.3 1.5-12.2 4.4-20 9.2c-7.7 4.8-19 11.5-26.4 19.8c-7.5 8.2-13.6 20.2-18.2 29.9c-4.6 9.7-7.3 18.8-9.6 28.3c-2.3 9.5-3.8 15.6-4 28.5c-.2 12.8 2.3 40.6 2.8 48.7M567.8 161c-3.4 .7-14.2 1.2-20.7 4.3c-6.5 3.2-10.8 9-18.3 14.4c-7.4 5.4-18.9 10.5-26.2 18.2c-7.3 7.8-13.4 18.3-17.4 28.1c-4 9.9-4.4 21.7-6.4 31.1c-2.1 9.4-4.7 21.1-5.7 25.3M553.2 170.7c-2.6 1-9.3 3-15.4 6.1c-6.1 3.2-14.3 7.2-21 12.9c-6.7 5.7-13.8 13.3-19.1 21.1c-5.4 7.8-9.8 17.3-13.1 25.5c-3.2 8.2-4.8 15.8-6.4 23.7c-1.5 7.9-2.5 19.6-3 23.5M556.9 185.6c-2.1 .9-7.2 3.5-12.7 5.8c-5.6 2.4-14.6 2.9-20.8 8.1c-6.1 5.1-11.6 14.5-16.2 22.7c-4.7 8.3-8.5 19.3-11.8 26.8c-3.4 7.6-6.8 11.6-8.3 18.5c-1.5 6.9-.6 19.2-.8 23M573.3 162.1c-4 1-15.7 3.2-23.8 6c-8 2.8-15.5 4.9-24.5 10.9c-8.9 6-21.6 15.1-29.3 25.1c-7.6 10-12.7 23.4-16.5 34.8c-3.8 11.4-5.6 20.4-6.4 33.6c-.8 13.3 1.4 38.4 1.7 46M542.4 176.5c-2.3 1.6-8.9 5.8-14 9.7c-5.2 3.9-11.6 8.6-16.7 13.9c-5.2 5.4-10.4 11.4-14.2 18.3c-3.7 6.8-5.8 15.8-8.1 22.7c-2.2 6.8-3.9 12.3-5.3 18.3c-1.4 6.1-2.5 15-3 18M556.4 169.9c-3 1.6-10.6 5-18.1 9.4c-7.4 4.5-18.6 9.9-26.7 17.5c-8 7.6-15.8 18.8-21.4 28.2c-5.6 9.3-9.2 18.5-12.1 28c-3 9.5-5 16.1-5.5 28.9c-.5 12.9 2.2 40.1 2.6 48.2M540.7 171.8c-2.4 1.6-9.2 5.7-14.3 9.7c-5.2 3.9-11.7 8.9-16.7 14.2c-5.1 5.3-9.8 11.3-13.7 17.6c-3.9 6.3-7.3 13.4-9.7 20.1c-2.4 6.7-3.5 13.5-4.7 20c-1.1 6.5-1.8 15.9-2.2 19M560.5 185.5c-2 1.2-7.2 4.1-11.8 7.2c-4.5 3-9.8 6.5-15.5 11.1c-5.8 4.6-13.5 9.1-18.9 16.2c-5.4 7.2-10.6 18.2-13.6 26.5c-2.9 8.3-3.2 16.1-4.2 23.5c-1 7.4-1.5 17.4-1.8 20.9M554.8 169.2c-2 .8-7.7 2.7-12.4 4.7c-4.8 2-10.3 3.7-16.1 7.2c-5.7 3.5-13.2 7.7-18.4 13.7c-5.2 5.9-9.3 14.4-12.7 22.1c-3.4 7.6-5.6 16.4-7.7 23.6c-2.1 7.1-4 16.1-4.8 19.4M626.1 183.5c4.1 2.4 16.8 9 24.3 14.4c7.5 5.3 14.4 10.9 20.7 17.4c6.3 6.4 12 13.9 16.9 21.3c4.9 7.4 9.3 15.5 12.4 23.1c3.1 7.7 4.3 14.9 6.1 22.8c1.7 7.8 3.5 20.4 4.2 24.5M623.4 196.6c2.9 1.6 12.1 6.4 17.7 9.7c5.6 3.2 10.9 6.7 16 10c5.1 3.3 10.1 6 14.7 10c4.5 3.9 8.9 8.8 12.6 13.7c3.8 4.9 7.2 10.6 10 15.6c2.9 4.9 5.9 11.8 7.1 14.2M599.3 179c2.2 1.4 8.1 5.5 13.1 8.4c4.9 3 10.4 5.5 16.8 9.1c6.4 3.6 15 7.6 21.4 12.4c6.5 4.8 12.3 10.4 17.5 16.5c5.2 6 9.3 13.5 13.6 20c4.2 6.5 9.9 16 11.9 19.1M594.1 169.3c4 1 14.9 2.5 24 6.1c9.1 3.6 20.6 9.5 30.6 15.7c10 6.1 21 12.5 29.3 21.3c8.3 8.8 15.3 21 20.5 31.4c5.2 10.4 8 20.5 10.7 31c2.7 10.5 4.8 26.6 5.7 31.9M614.6 196.8c2.7 2.1 10.3 7.9 16.1 12.3c5.7 4.5 12.7 10 18.4 14.4c5.7 4.4 11 7.4 15.9 12c4.9 4.5 9.4 9.7 13.5 15.1c4 5.5 7.8 12.1 10.7 17.7c3 5.6 6 13.2 7.2 15.9M621.9 201.2c3.7 2.2 15.6 8.5 22.3 13.3c6.8 4.8 12.7 9.6 18.2 15.2c5.6 5.6 10.5 12.2 15.2 18.5c4.6 6.3 9.2 13.2 12.9 19.1c3.6 5.9 6.4 10.1 8.8 16.2c2.3 6.2 4.4 17.2 5.2 20.6M612.1 192.1c2.3 1.8 8.6 6.8 14 10.8c5.4 4 12.4 9.3 18.3 13.1c5.9 3.9 11.8 6.4 17.1 9.9c5.3 3.4 10.4 6.2 14.7 11.1c4.4 4.8 8 12 11.2 18c3.2 6.1 6.6 15.3 7.9 18.3M592.4 172.5c3.9 1.8 13.9 6.5 23 10.6c9.2 4.1 21.6 8.4 31.9 14.2c10.4 5.8 22 11.7 30.2 20.7c8.3 9 14.2 23.3 19.6 33.4c5.4 10.1 10.1 17 13 27.2c3 10.3 4 28.6 4.8 34.3M633.4 171.6c3 1 12.3 3.1 18 6c5.6 2.9 11 6.9 15.8 11.4c4.9 4.5 9.1 10.8 13.3 15.8c4.2 4.9 8.4 8.8 12 13.9c3.6 5 7.2 10.3 9.6 16.3c2.4 6.1 4.1 16.5 4.9 19.8M601 179.8c3.2 1.4 11.4 4.6 19.4 8.8c7.9 4.2 19.7 9.7 28.5 16.1c8.7 6.5 16.9 14.8 24 22.8c7.2 8 14 16.8 19 25.4c5 8.6 8.1 17 10.9 26.3c2.7 9.2 4.6 24.5 5.5 29.4M628.2 167.2c5 1.8 20.5 6.3 30.2 11c9.7 4.7 19.9 9.9 27.9 17.2c7.9 7.3 14.7 17.5 19.9 26.7c5.3 9.3 8.7 18.9 11.6 28.8c2.8 9.9 3.9 20.7 5.5 30.5c1.5 9.8 3.2 23.6 3.8 28.3M606.8 186.7c3.8 1.4 14.1 4.6 23.1 8.3c9 3.7 21.7 7.9 30.8 14.1c9.2 6.2 17.4 14.3 24 23c6.7 8.8 11.6 20.7 16 29.5c4.5 8.8 8 14.8 10.8 23.5c2.9 8.7 5.2 23.8 6.3 28.6M600.7 181.2c2.7 .7 9.5 1.3 16.2 4c6.7 2.6 16.1 7.5 24 12.1c7.9 4.5 16.1 9.8 23.4 15.2c7.3 5.4 14.4 10.5 20.3 17.2c6 6.6 11.2 15.2 15.2 22.8c4 7.5 7.5 18.8 9 22.5M607.5 163.9c5 1.4 19.5 4.4 30.3 8.4c10.8 3.9 24.3 8.3 34.5 15.3c10.2 7 20.1 16.4 27 26.8c6.9 10.5 11 24 14.4 36c3.3 12.1 3.8 25 5.6 36.2c1.9 11.2 4.7 25.9 5.6 31M590.3 166.8c3.4 .5 13.1 .7 20.4 2.6c7.4 1.9 15.3 4.6 23.6 8.9c8.4 4.3 18.3 11 26.7 16.7c8.4 5.8 16.9 10.4 23.6 17.7c6.8 7.3 12.5 17.1 16.8 26c4.3 9 7.5 23 9 27.6M616.1 165.6c4.9 1.7 19.6 5.7 29.5 10.4c9.8 4.7 21 10.3 29.8 17.8c8.8 7.4 16.8 17 22.8 26.7c6 9.6 10.1 20.8 13.4 31.1c3.3 10.3 4.7 20.5 6.5 30.5c1.8 10 3.6 24.5 4.3 29.4M601 174.1c3.6 1.8 13.2 5.4 21.9 10.7c8.7 5.3 20.9 13.9 30.3 21c9.4 7.2 18.6 13.3 26.1 21.7c7.4 8.5 13.9 19.6 18.7 29.1c4.7 9.5 7.3 18 9.7 27.9c2.4 10 3.8 26.6 4.6 31.9M578.2 166.7c3.3 .4 13 1.3 19.8 2.1c6.9 .9 13 .8 21.1 3c8.2 2.2 18.6 5.9 27.8 10.2c9.3 4.3 19.4 9.4 27.7 15.8c8.3 6.5 16 14.3 22 22.7c6.1 8.4 12.1 23.2 14.5 27.8M488.6 315c.6 4.6 1.8 18.9 3.5 27.4c1.6 8.5 3.9 16.4 6.4 23.8c2.5 7.4 5.7 14.2 8.5 20.6c2.9 6.4 5.8 11.9 8.4 17.8c2.7 5.9 4.7 11.8 7.5 17.8c2.7 5.9 7.6 15.1 9.1 18.2M488.1 352.1c.8 3.1 2.8 12.8 4.7 18.7c1.9 6 4.2 11.5 6.6 16.9c2.5 5.4 5.7 10.6 8.2 15.6c2.6 5 4.8 9.5 7.2 14.4c2.5 4.9 5 9.7 7.5 14.9c2.5 5.2 6.3 13.7 7.5 16.4M499.3 341.5c1.2 3.9 4.8 15.9 7.1 23.1c2.2 7.3 4.2 14.2 6.3 20.6c2.1 6.3 3.8 11.6 6.3 17.4c2.5 5.8 5.9 11.5 8.6 17.3c2.8 5.8 5.9 11.7 8.1 17.6c2.1 6 4 15.1 4.8 18.1M492.5 317.6c1.3 5.7 4.9 24 7.8 34.6c2.9 10.6 6.4 20.1 9.6 29c3.2 8.9 6 16.5 9.4 24.6c3.5 8.1 7.6 15.9 11.2 23.9c3.6 8 8.7 16.4 10.4 24.2c1.8 7.8 0 18.7-.1 22.5M490.5 323c.7 4 2 16.9 4.1 24.1c2 7.2 6.1 12.9 8.3 18.9c2.2 6 3.3 11.8 4.9 17.2c1.6 5.4 2.3 10.2 4.5 15.1c2.2 4.9 5.7 9.6 8.6 14.2c3 4.7 7.5 11.7 9 14M490.7 338.4c.8 4.1 2.8 17.3 4.8 24.9c1.9 7.6 4.2 14.3 6.9 20.8c2.7 6.6 6.3 12.5 9.2 18.4c3 6 5.8 11.6 8.6 17.5c2.7 5.9 5.4 11.7 8.1 18c2.7 6.2 6.5 16.2 7.8 19.5M501.2 347.8c1.1 3.8 4 15.7 6.2 22.8c2.2 7 4.5 13.3 7 19.6c2.4 6.3 5 12 7.5 18c2.5 6.1 4.8 12.3 7.3 18.5c2.5 6.2 5.9 12.4 7.8 18.5c1.9 6.2 3.2 15.3 3.8 18.3M697.6 364.7c-.1 1.7-1.9 7-.2 9.9c1.6 3 8.2 4.9 10.1 7.7c1.9 2.7 2.4 5.6 1.4 8.8c-.9 3.3-4.7 7-7.1 10.6c-2.5 3.7-5.3 7.4-7.6 11.6c-2.3 4.2-4.4 9.2-6.3 13.7c-1.9 4.5-4.7 8.8-5.2 13.3c-.4 4.6 2.2 11.5 2.6 13.8M709.7 351.8c-1.9 1.9-10 7.1-11.2 11.5c-1.1 4.3 2.7 9.7 4.3 14.7c1.6 4.9 6.7 9.5 5.5 14.9c-1.2 5.5-8.7 11.1-12.5 17.8c-3.8 6.8-8.9 15.1-10.5 22.7c-1.6 7.6-1.2 15.2 1.1 23c2.3 7.7 7.6 15.7 12.6 23.6c5 7.8 14.4 19.6 17.3 23.5M697.3 364.8c-.4 1.3-3 5.3-2.1 7.8c.9 2.5 5.4 4.8 7.5 7.1c2 2.3 4.1 4.5 4.6 6.9c.6 2.4-.4 4.9-1.4 7.6c-1.1 2.7-3.1 5.4-5 8.6c-2 3.1-4.6 6.8-7 10.3c-2.3 3.6-5.4 7.4-7 11.1c-1.6 3.8-2.3 9.7-2.8 11.6M710.7 345c-.3 1.1-1.1 4.7-2.1 6.6c-1.1 1.9-2 2.3-4 4.6c-2.1 2.3-6.9 5.7-8.3 9.1c-1.4 3.5-1.2 8-.1 11.6c1.1 3.7 5.7 6.8 6.7 10.2c1 3.4 1.1 6.2-.6 10.2c-1.7 4-6.5 8.8-9.6 13.8c-3 5.1-7.2 13.9-8.7 16.7M713.4 347.7c-1.1 1.3-3.9 4.7-6.8 8c-2.9 3.3-10.3 7.9-10.5 11.8c-.2 3.9 7.3 7.5 9.4 11.6c2.1 4.1 4.2 8.3 3.1 12.9c-1 4.6-6.1 9.1-9.2 14.4c-3.2 5.3-7.3 11.3-9.8 17.3c-2.5 6.1-5.1 12.5-5.1 18.8c-.1 6.4 4 16.2 4.8 19.4M710.9 346.6c-.8 1.4-2.9 5.2-5.2 8.2c-2.2 2.9-7.1 5.6-8.5 9.4c-1.4 3.8-1.1 9.1 .1 13.3c1.3 4.3 7.3 7.6 7.4 12.2c.1 4.5-3.8 9.5-6.8 15.2c-3 5.8-8.9 12.6-11.4 19.3c-2.5 6.7-4.1 13.8-3.6 20.9c.5 7.2 5.5 18.4 6.6 22.1M710.7 353c-2.1 2.1-12.2 8.6-12.4 12.6c-.2 4 8.2 7.4 11 11.4c2.7 4 5.9 8.1 5.5 12.6c-.4 4.6-4.5 9.4-7.8 14.6c-3.3 5.1-9 10.6-12.1 16.2c-3.1 5.5-5.8 11.3-6.5 17.1c-.6 5.8 .3 12 2.5 17.8c2.1 5.8 8.7 14.2 10.4 17M718.8 343.3c-1.6 1.9-7 7.3-10.1 11.5c-3.1 4.2-9.2 8.6-8.5 13.5c.7 4.9 11.4 10.4 12.7 15.7c1.2 5.3-2.3 10.5-5.2 16.4c-3 5.8-9.6 12.1-12.7 18.7c-3 6.7-5.3 14.1-5.6 21.1c-.2 7 1.7 13.7 4.2 20.8c2.5 7 9.2 17.8 11 21.3"/>
<path stroke="#f4f4f4" stroke-width="0.9" opacity="0.9" d="M551.8 168c-2.9 1.6-9.9 5.2-17 9.3c-7.2 4.2-18.3 8.5-25.8 15.5c-7.6 7.1-14.5 17.3-19.4 26.7c-4.9 9.3-7.9 19.8-9.9 29.4c-2.1 9.7-2.3 17.8-2.3 28.6c0 10.8 1.8 30.1 2.2 36.1M570.1 183.5c-3.4 .8-13.1 1.9-20.7 4.8c-7.6 3-16.9 5.5-25 12.9c-8.2 7.4-17.8 21-23.7 31.6c-5.9 10.6-9.1 21.7-11.9 32.1c-2.7 10.4-3.8 17.2-4.5 30c-.8 12.9 .1 39.2 .1 47.1M534.3 179.2c-3.8 2.3-15.8 7.9-22.7 13.6c-7 5.6-13.8 12.7-18.9 20.4c-5.1 7.6-8.8 17-11.6 25.3c-2.8 8.3-3.7 16.7-5.2 24.5c-1.4 7.9-3.1 12.4-3.5 22.8c-.4 10.4 1 33 1.2 39.5M549.2 165.6c-3.1 1.7-11.4 5.3-18.6 10.4c-7.3 5-17.8 11.6-24.9 19.8c-7 8.3-13 19.9-17.4 29.5c-4.5 9.5-7 18.6-9.3 27.8c-2.2 9.2-3.7 16.2-4 27.6c-.4 11.4 1.5 34 1.9 40.8M551.1 174.8c-1.7 .5-6.4 1.2-10.2 3c-3.7 1.8-7.6 4.9-12.3 7.8c-4.8 3-11.4 5.8-16.3 9.6c-4.9 3.8-9.4 8-13.2 13.2c-3.8 5.2-6.8 12.5-9.6 18.1c-2.8 5.7-6.1 13.3-7.3 16M548.6 175.2c-3.1 1.8-11.1 6.2-18.2 11c-7.1 4.9-17.8 10-24.5 18.1c-6.6 8-11.9 20.7-15.5 30.3c-3.7 9.6-4.5 18.5-6.2 27.2c-1.8 8.7-3.7 14.3-4.4 24.9c-.6 10.7 .5 32.6 .6 39.1M549.7 184.5c-2.3 1.2-8.6 3.9-14.1 7.5c-5.4 3.5-13 7.8-18.4 14c-5.4 6.2-10.1 15.4-14.1 23.1c-3.9 7.8-7.3 16.4-9.6 23.6c-2.3 7.3-3.1 13.4-4.1 20c-1 6.5-1.6 16.3-1.9 19.6M541.1 189.1c-1.9 1.2-7.3 4.4-11.3 7.2c-4 2.9-8.7 6-12.5 9.8c-3.8 3.9-7.3 8.3-10.4 13.4c-3 5.1-5.7 11.8-8.1 17.1c-2.3 5.4-4.5 10.4-6.1 15c-1.5 4.6-2.8 10.5-3.3 12.6M543.2 189.7c-1.7 .6-6.8 1.7-10.2 3.6c-3.5 1.9-7 4.9-10.4 7.7c-3.4 2.9-6.8 6.1-10 9.5c-3.3 3.4-6.8 6.6-9.4 10.8c-2.7 4.2-4.8 9.9-6.7 14.5c-2 4.5-4.2 10.5-5 12.6M563.1 176.4c-2.8 .8-11 2.2-17.1 5.2c-6 3-12.7 6.5-19.4 12.6c-6.7 6-14.9 14.9-20.7 23.7c-5.9 8.8-10.7 20.2-14.4 28.8c-3.7 8.7-5.9 15.1-7.8 23.2c-1.9 8.1-3 21.3-3.6 25.6M570.8 156.3c-4.3 1.4-16.8 4.2-25.8 8.3c-8.9 4.1-18.5 8.4-27.8 16.3c-9.2 7.8-20.7 19.8-27.9 30.9c-7.2 11.1-11.8 23.6-15.4 35.6c-3.5 11.9-5.5 20.1-5.8 36c-.2 15.9 3.7 49.4 4.4 59.3M544.3 169.1c-3.5 2.4-13.6 8.2-21.1 14.5c-7.6 6.4-17.3 14.9-24.2 23.6c-6.9 8.6-13.1 18.9-17.3 28.4c-4.2 9.4-6.6 18.1-7.8 28.3c-1.3 10.3-.5 19.8 .3 33.2c.8 13.4 3.9 39.5 4.7 47.3M557.2 185.9c-2.3 .8-8.1 2-13.7 4.7c-5.7 2.6-13.9 5.6-20.2 11.1c-6.3 5.5-12.8 13.7-17.8 21.7c-4.9 7.9-9 18.2-12 26.1c-3.1 7.9-4.6 14.1-6.2 21.3c-1.5 7.2-2.5 18-3 21.7M569.6 171.5c-3.5 1-13.7 3.3-20.8 6.3c-7.1 3-13.9 5.8-21.7 11.9c-7.9 6.1-18.6 15.3-25.2 24.8c-6.6 9.6-11 22.2-14.5 32.4c-3.6 10.1-5.4 17.7-6.7 28.4c-1.3 10.6-.9 29.5-1.1 35.4M563.1 175.7c-2.6 .6-10 2.2-15.6 4c-5.7 1.9-11.4 3.1-18.1 6.9c-6.8 3.8-16.3 8.6-22.4 15.8c-6.1 7.1-10.7 18.3-14.4 27.1c-3.7 8.7-5.6 17.4-7.9 25.3c-2.2 7.9-4.6 18.2-5.6 21.9M586 162.2c3.7 .4 14.7 1.1 22.6 2.8c7.8 1.7 15.3 3.6 24.2 7.2c9 3.6 20.3 9 29.4 14.5c9.1 5.6 18.1 11 25.4 18.7c7.2 7.8 13.4 18.5 18.1 27.7c4.7 9.2 8.5 22.8 10.3 27.3M596.9 169.5c3.3 .5 12.5 .2 19.8 3.1c7.3 2.9 15.8 8.9 23.9 14.3c8.1 5.5 17.1 12.3 24.9 18.4c7.8 6 15.8 10.4 21.8 18c6 7.7 10.8 18.7 14.2 27.8c3.4 9.1 5.2 22.5 6.2 27M613.3 177.6c3.7 1.5 14.5 4.4 22.4 8.7c7.9 4.4 17.3 11.4 24.9 17.3c7.6 6 14.7 11.6 21 18.5c6.3 6.8 12.4 14.8 16.8 22.6c4.4 7.7 7.2 15.2 9.5 23.7c2.3 8.5 3.6 22.7 4.4 27.3M614.9 190.3c3.1 1.6 12.1 5.6 18.7 9.3c6.5 3.7 14.2 8.4 20.6 12.9c6.5 4.5 12.6 8.6 18 14c5.3 5.4 10.1 12.1 14.1 18.5c4.1 6.4 7.4 13.6 10.4 19.8c2.9 6.1 6 14.4 7.2 17.3M583.2 181.5c3.9 1.3 14.8 4.6 23.2 8.2c8.4 3.6 17.1 7.7 27.2 13.2c10 5.6 23.4 12.4 33.2 20.3c9.8 8 18.9 17.8 25.5 27.3c6.6 9.5 10.5 19.1 14.2 29.6c3.8 10.4 6.8 27.5 8.2 33M587.6 155.3c5.4 .9 20.8 1.6 32.5 5.1c11.7 3.6 25.6 8.9 37.6 16.1c11.9 7.2 25.1 15.8 34 27.1c8.9 11.3 15.2 27.2 19.7 40.7c4.5 13.5 5.3 27.7 7.3 40.4c2.1 12.8 4.2 30.1 5 36.1M630.6 166.3c2.8 1 10.9 3.9 16.5 5.6c5.5 1.8 11.4 2.4 16.8 4.9c5.5 2.5 11 6.1 15.8 9.9c4.8 3.9 8.9 8.8 13 13.2c4.1 4.3 8.4 7.9 11.7 12.8c3.2 5 6.5 14.1 7.8 16.9M612.8 172.6c2.4 1.1 9 4 14.5 6.3c5.5 2.2 12.6 3.5 18.5 7.3c5.8 3.8 11.1 10.9 16.4 15.4c5.3 4.5 10.8 7.1 15.6 11.6c4.8 4.4 9.5 8.9 13 15.1c3.5 6.3 6.6 18.7 7.9 22.4M623.2 174.8c4.8 1.6 19.8 5 28.9 9.7c9.2 4.6 18.4 10.6 25.8 18.2c7.4 7.7 13.3 18.8 18.7 27.6c5.4 8.8 10.3 16.7 13.8 25.3c3.4 8.6 5.5 16.7 7 26.2c1.5 9.5 1.6 25.7 1.9 30.8M584.4 174c4.7 1 17.4 2 28.4 5.8c11.1 3.9 25.7 10.2 37.8 17.5c12.1 7.3 25.5 15.6 34.9 26.3c9.3 10.7 16.2 25 21.2 37.7c5.1 12.7 6.6 26.7 9.1 38.3c2.6 11.7 5.3 26.2 6.4 31.5M579.8 171.6c3 .8 12 2.8 17.9 4.4c5.9 1.6 10.9 2.1 17.5 5.1c6.5 3 14.4 7.6 22 12.7c7.7 5.1 16.6 11.6 23.8 17.9c7.2 6.3 13.9 12.5 19.6 19.9c5.7 7.4 12 20.6 14.4 24.7M591.6 173.5c4.6 1.5 16.9 3.8 27.6 9c10.7 5.2 25.5 13.8 36.8 22c11.3 8.3 22.9 16.8 31.1 27.4c8.2 10.6 13.8 24 18.1 36.4c4.3 12.3 5.8 26.5 7.8 37.8c2.1 11.3 3.9 25 4.7 30M636.8 172.5c4.8 2.3 20 8.3 29 14.1c8.9 5.8 17.8 12.6 24.7 20.8c6.9 8.1 12.4 18.7 16.8 28c4.4 9.2 7.3 17.9 9.6 27.6c2.2 9.7 2.4 21.1 3.8 30.4c1.4 9.4 3.8 21.2 4.6 25.5M589.5 162c3.2 0 12.5-.6 19 0c6.4 .7 12.4 1.7 19.7 3.8c7.4 2.1 16.4 5.4 24.2 8.8c7.9 3.5 15.8 7.4 23.1 12c7.2 4.6 14.7 9.2 20.5 15.7c5.8 6.6 11.7 19.8 14.1 23.8M631 175.3c4.9 3 20.3 11.4 29.4 18.4c9.2 7.1 18.3 14.8 25.3 23.9c7 9.1 12.4 20.8 16.8 30.6c4.4 9.7 7.1 17.9 9.4 27.9c2.3 10 3.3 22.3 4.4 31.9c1.1 9.5 2 21.2 2.4 25.4M581.9 162.5c4.3 .3 16.5 .2 25.7 1.5c9.1 1.3 19.2 1.6 29.2 6.2c10 4.7 21.3 14 30.9 21.8c9.6 7.8 19.3 15.6 26.6 24.8c7.3 9.3 13.4 19.7 17.1 30.9c3.7 11.2 4.2 30.2 5.1 36.3M608.9 185.7c4.2 1.9 16.3 5.6 25.3 11.4c9 5.9 20 15.9 28.6 23.8c8.6 7.9 16.6 15 23.1 23.4c6.4 8.4 12.1 17.1 15.7 26.7c3.7 9.7 4.3 21.8 6.2 31.5c2 9.6 4.5 22.1 5.4 26.5M627 197.7c4.7 3.6 19.7 15 28.2 21.9c8.5 6.9 16.1 12.1 22.9 19.5c6.8 7.3 13.7 16.4 18.2 24.7c4.5 8.2 6.4 15.8 8.8 24.9c2.3 9 3.7 20.9 5.2 29.2c1.5 8.4 3.2 17.5 3.9 21M599.6 171.2c2.7 .7 9.8 2.5 16 4.2c6.3 1.7 14 2.8 21.3 6c7.3 3.2 15.7 8.1 22.6 13.3c7 5.2 13.6 11.5 19.4 18c5.8 6.5 10.8 14.1 15.2 20.9c4.5 6.9 9.7 17 11.6 20.4M632 181.7c4.5 2.4 18.7 9.1 27.3 14.4c8.5 5.3 17.1 10.4 23.9 17.6c6.8 7.2 12.5 17 17.1 25.5c4.5 8.6 7.7 17 10.3 25.9c2.6 8.9 3.9 18.7 5.4 27.4c1.6 8.7 3.2 20.7 3.9 24.9M618.7 186.4c4.4 2 17.9 7.5 26.5 12.3c8.7 4.8 17.9 9.5 25.4 16.2c7.5 6.7 14.2 15.5 19.6 23.9c5.3 8.3 9.2 18.1 12.6 26.4c3.4 8.4 5.5 15.8 7.8 23.9c2.2 8.1 4.7 20.7 5.7 24.8M578.6 159.6c4.6 .1 17.5-.5 27.6 .8c10 1.4 21.1 3.4 32.7 7.4c11.6 3.9 26 8.7 36.8 16.6c10.8 7.9 21 19.5 28.2 30.7c7.2 11.2 11.6 24.1 15 36.6c3.3 12.6 4.3 32.3 5.2 38.7M492.7 335.1c.8 4.8 2.7 20 4.9 28.6c2.3 8.6 5.6 15.8 8.5 23.1c2.9 7.2 6.2 13.6 9.1 20.3c3 6.6 5.4 12.8 8.6 19.6c3.2 6.7 8.4 13.8 10.7 20.8c2.2 7 2.1 17.7 2.6 21.2M481.8 315.2c.5 5.4 1.4 23.2 2.8 32.7c1.4 9.6 3.2 16.8 5.8 24.4c2.7 7.6 6.5 14.7 10.3 21.4c3.7 6.7 8.3 12.6 12.2 18.8c4 6.2 8 11.7 11.7 18.1c3.6 6.5 8.4 17.1 10.1 20.5M476.5 308.2c.3 5.4 .3 22.6 1.4 32.2c1.2 9.7 2.8 17.9 5.6 25.6c2.7 7.8 7.9 14.3 11.1 21c3.2 6.6 5 13 8.2 18.9c3.1 5.9 6.8 10.8 10.8 16.6c4 5.8 10.9 15.2 13.1 18.2M482.8 343.1c.5 3.1 1.2 13.1 3 19c1.8 5.9 5.3 11.3 8 16.5c2.6 5.3 5.7 9.9 8 14.8c2.2 4.8 3.2 10 5.4 14.5c2.1 4.5 4.5 8.3 7.5 12.6c2.9 4.3 8.3 10.9 10 13.1M482.9 371.5c1 2.9 3.4 11.7 5.9 17.3c2.6 5.6 6 11.2 9.4 16.3c3.4 5.1 7.5 9.5 11.2 14.3c3.6 4.7 7.4 9 10.6 14.3c3.2 5.3 6.9 11.4 8.7 17.3c1.7 5.8 1.5 15 1.8 18M482.2 326.2c.7 4.8 2.3 20.5 4.1 28.9c1.9 8.4 4.6 14.7 6.9 21.4c2.4 6.7 4.5 13 7.2 19c2.8 6 6.2 11.7 9.5 17.2c3.3 5.6 7.3 10.3 10.5 16.3c3.1 6 7 16.4 8.5 19.7M480.8 325.6c.9 3.8 3.5 16.5 5 23.2c1.5 6.8 2.9 11.9 3.9 17.4c1.1 5.4 .9 10.4 2.3 15.3c1.4 4.9 3.6 9.7 6.2 14.3c2.7 4.6 6.7 9 9.7 13.2c3 4.2 6.8 10.2 8.2 12.3M703.1 358.5c-1.2 1.7-7.6 7-7.4 10.4c.1 3.5 6.4 6.9 8.4 10.3c2 3.4 3.9 6.6 3.7 10.2c-.2 3.7-2.4 7.6-4.9 11.9c-2.6 4.3-7.5 8.9-10.4 13.9c-2.9 5-5.7 10.6-7.1 15.9c-1.4 5.3-2.1 10.5-1.5 15.9c.7 5.5 4.7 13.8 5.6 16.6M709.7 347.7c-.8 1.4-3 5.5-5.1 8.3c-2.1 2.7-6.4 4.5-7.3 8.1c-1 3.6 .2 9.1 1.3 13.5c1.2 4.3 5.6 8 5.5 12.5c-.1 4.6-3 9-6.3 14.7c-3.2 5.7-10.4 12.6-13.2 19.3c-2.9 6.7-4.6 13.7-4 20.8c.6 7 6.4 18 7.7 21.7M699.2 362.5c.1 2.2-.7 8.8 .7 13c1.4 4.1 7.1 7.7 7.9 11.9c.8 4.2-.7 8.2-3.2 13.1c-2.5 4.9-8.6 10.5-12 16.3c-3.4 5.8-7.4 12.4-8.5 18.5c-1.2 6.1-.5 11.9 1.5 18.2c1.9 6.2 6.5 12.9 10 19.3c3.4 6.3 8.8 15.7 10.6 18.8"/>
<path stroke="#fff" stroke-width="0.6" opacity="0.8" d="M535.9 185c-1.6 1.1-5.9 4.6-9.6 6.4c-3.8 1.8-9.1 2.1-12.7 4.4c-3.7 2.3-6.9 5.5-9.4 9.5c-2.5 4.1-3.5 10.6-5.6 15c-2.1 4.5-4.7 8.2-7 11.6c-2.4 3.5-6 7.5-7.2 9M554.3 164.2c-2.9 1.4-10.6 4.4-17.3 8.3c-6.8 3.9-15.7 9.3-23.5 15.3c-7.7 6.1-16.8 12.9-22.8 21c-6 8-10.3 18.1-13.3 27.4c-3 9.3-3.6 19-5 28.5c-1.4 9.5-2.9 23.8-3.4 28.5M546.8 168.6c-2.9 1.7-10.1 6.1-17.4 10.2c-7.2 4-19.5 6.8-26.2 14c-6.8 7.2-10.2 20.1-14.5 29.1c-4.2 9-8.1 16.8-11 24.9c-2.9 8.2-6.1 14.4-6.6 24.2c-.5 9.7 3.1 28.7 3.7 34.4M573.4 159.9c-4.2 .8-16.4 2.1-24.7 5.1c-8.3 2.9-16.2 6-25 12.6c-8.8 6.7-20.6 16.8-28 27.3c-7.5 10.5-12.8 24.3-16.8 35.8c-3.9 11.5-5.9 19.2-7 32.9c-1.2 13.7 .1 40.9 .1 49.1M561.1 181.6c-2.6 1.6-9.1 5.5-15.6 9.3c-6.5 3.7-16.3 6.3-23.6 13.1c-7.2 6.9-15.3 18-20 28c-4.7 9.9-5.8 22.5-8.3 31.7c-2.4 9.3-5.2 13.9-6.4 23.7c-1.1 9.8-.4 29.3-.5 35.2M540.3 180.4c-2.4 1.8-9.1 7.3-14.3 11c-5.3 3.8-12.2 6.3-17.2 11.4c-4.9 5.1-9.4 12.4-12.6 19.4c-3.2 7.1-4.7 16-6.5 22.7c-1.9 6.7-3.2 11.9-4.7 17.5c-1.4 5.6-3.4 13.3-4 15.9M543.6 189.8c-2.1 2-8.1 7.9-13 11.9c-4.9 4-11.8 6.4-16.3 12c-4.6 5.6-8.2 14.4-11.1 21.7c-2.8 7.4-4.1 16.2-5.9 22.5c-1.8 6.2-3.7 9.5-4.8 14.8c-1.2 5.2-1.6 14.1-1.9 16.9M566.2 158.1c-3.8 1.3-15.3 3.4-22.9 7.7c-7.7 4.4-15 10.8-23 18.3c-8.1 7.5-18.6 17.3-25.6 26.9c-6.9 9.5-12.8 19.7-16 30.4c-3.3 10.6-3.4 20.7-3.5 33.5c-.1 12.8 2.5 36 3 43.2M535.5 171.2c-3.8 2.4-15.7 8.3-22.8 14.5c-7.1 6.2-14.4 14.3-19.8 22.6c-5.5 8.2-9.6 18.2-12.7 27c-3.2 8.9-5 17.3-6.3 26.1c-1.3 8.7-1.9 14.8-1.6 26.5c.3 11.7 2.8 36.5 3.3 43.8M548.8 183.9c-1.7 .9-6 2.9-9.9 5.4c-3.9 2.4-8.9 6.1-13.6 9.4c-4.8 3.3-10.6 5.8-14.8 10.5c-4.2 4.8-7.3 11.8-10.3 17.9c-3 6-5.2 13.1-7.5 18.4c-2.3 5.3-5.3 11.2-6.4 13.4M544.9 187.4c-1.4 1.1-5.2 3.8-8.4 6.2c-3.1 2.3-6.8 5.1-10.3 7.9c-3.6 2.8-7.7 5-10.9 8.8c-3.1 3.9-5.6 9.3-8.1 14.4c-2.5 5.1-4.7 11.5-6.7 16.3c-2 4.8-4.4 10.5-5.3 12.6M576.6 170.7c-3 .9-12.2 3.6-18.1 5.5c-5.9 1.8-10.7 2-17.3 5.7c-6.5 3.6-15 9.1-22.1 16.1c-7 7-14.8 16.8-20.2 25.9c-5.3 9.1-9.4 19.3-12 28.5c-2.5 9.3-2.7 22.5-3.2 27M584.9 170c4 1.2 15.2 4.4 23.5 7.5c8.3 3.1 16.8 6.7 26.6 11.2c9.9 4.6 23.3 8.5 32.5 16c9.3 7.4 16.6 18.9 23 28.6c6.5 9.7 11.6 19.8 15.7 29.5c4.1 9.7 7.3 24.1 8.7 29M623.9 199c3.3 1.4 13.5 5.5 19.9 8.8c6.3 3.2 12.5 6.9 18.1 10.7c5.6 3.9 10.8 7.7 15.6 12.4c4.7 4.7 9 10.6 13 15.7c4 5.1 7.9 9.9 10.8 14.8c2.9 5 5.5 12.4 6.6 14.9M599.8 169.3c3 .6 11 1.6 17.7 3.7c6.7 2.1 14.8 5.3 22.5 9.1c7.7 3.8 16.2 8.4 23.6 13.6c7.4 5.2 14.7 10.9 20.7 17.6c5.9 6.8 10.8 15.5 15 23.2c4.2 7.6 8.6 18.9 10.3 22.7M604.3 185.9c3.3 1.6 12.1 4.8 20.2 9.4c8.2 4.6 20 12.1 28.9 18.3c8.9 6.2 17.5 11.3 24.6 18.9c7 7.6 13.1 18.3 17.7 27c4.6 8.7 7.1 16.2 9.7 25.1c2.7 8.9 5.1 23.6 6.1 28.4M610 166.8c4 1.7 15.6 5.5 24.3 9.9c8.7 4.3 19.3 9.9 28 16.1c8.7 6.3 17.5 12.9 24.3 21.3c6.8 8.5 12.2 19.8 16.3 29.3c4.2 9.5 6.3 18.1 8.4 27.6c2.2 9.5 4 24.6 4.7 29.5M618.1 163.2c3.5 .5 14 1.1 21.1 2.9c7 1.9 14.5 4.5 21.3 8.4c6.9 3.9 13.8 9.4 19.8 14.9c5.9 5.5 11.2 11.9 16.1 18c4.9 6.2 9.7 12.6 13.3 19c3.6 6.5 7 16.4 8.4 19.7M604.5 184.3c2.6 1 9.2 2.7 15.9 6c6.6 3.3 16.4 8.6 24.1 13.6c7.6 5 15.2 10.6 21.8 16.4c6.6 5.7 12.5 11.4 17.8 18.2c5.3 6.7 10.5 15.1 14 22.3c3.6 7.3 5.9 17.7 7.1 21.3M635.1 171.3c3.9 2.1 16 8.1 23.6 12.5c7.6 4.5 15.4 8.7 22 14.2c6.7 5.6 13.1 11.7 18 19c5 7.2 8.7 16.3 11.6 24.4c2.9 8.1 4.1 16.2 5.8 24.1c1.7 8 3.6 19.7 4.3 23.6M617.9 182.1c3.8 2.7 15 10.8 22.8 16.3c7.7 5.5 16.5 11 23.7 16.7c7.3 5.8 14.4 10.4 19.9 17.7c5.6 7.3 10.1 17.8 13.4 26.2c3.3 8.4 4.4 16.3 6.6 24.2c2.2 7.9 5.4 19.3 6.5 23.1M613.7 163.7c5.3 1.6 20.9 5 31.6 9.8c10.6 4.9 22.8 11 32.2 19.2c9.3 8.2 17.6 19.6 23.9 30.1c6.3 10.5 10.5 21.5 13.7 32.8c3.3 11.3 4.1 24.1 5.8 35c1.6 10.9 3.3 25.4 3.9 30.5M631.5 185.4c3.8 2.2 15.7 8.3 22.7 13.2c7.1 4.9 13.7 10.1 19.6 16c5.9 5.9 11.2 12.7 15.9 19.5c4.6 6.8 8.7 14.3 11.9 21.1c3.1 6.8 5.3 12.5 7.1 19.7c1.8 7.2 3.2 19.6 3.8 23.5M595.6 166.2c4.3 1.3 15.9 3.8 25.7 8.1c9.9 4.4 22.7 11.4 33.4 18c10.7 6.6 22.1 13.1 30.7 21.9c8.5 8.7 15.4 20.2 20.6 30.6c5.2 10.5 8.1 20.8 10.5 32c2.4 11.2 3.3 29.5 3.9 35.4M581.3 165.5c4.6 .3 17.3-.4 27.4 1.7c10 2.1 21.7 5.1 32.9 10.9c11.2 5.9 24.2 14.9 34.3 24.1c10.1 9.2 19.6 20.3 26.1 31.3c6.5 11 10.1 22.2 12.8 34.6c2.8 12.5 3.1 33.2 3.7 39.9M614 187.4c3.8 1.7 14.7 6.1 22.6 10c8 3.8 17.3 8.5 24.9 13.4c7.7 4.8 15 9.1 21.1 15.6c6.1 6.5 11.4 15.8 15.5 23.4c4.1 7.6 6.7 14.7 9.3 22.2c2.6 7.5 5.4 19 6.5 22.8M597.2 188.2c2.9 1.5 9.9 3.8 17.2 8.5c7.2 4.7 17.7 13.2 26.3 19.7c8.7 6.4 17.8 12 25.4 19c7.7 7.1 15.1 15.5 20.6 23.3c5.5 7.9 9 15.5 12.4 24.1c3.3 8.5 6.3 22.6 7.5 27.1M610.6 185.6c2.6 1.2 9.4 3.7 15.4 6.8c6 3.2 14.1 8.1 20.5 12.3c6.4 4.2 12.2 8.4 17.9 12.9c5.7 4.4 11.4 8.4 16.2 14c4.8 5.5 9 13 12.5 19.2c3.5 6.3 7 15.2 8.5 18.3M613.9 170.4c5.1 1.6 20.1 5 30.5 9.7c10.4 4.8 22.7 10.9 31.9 18.8c9.3 7.8 17.4 18.5 23.6 28.5c6.2 10 10.1 20.9 13.4 31.5c3.4 10.7 4.9 22.1 6.8 32.3c1.9 10.2 3.9 24.2 4.6 29.1M575.9 155.8c5 .7 19.1 1.8 30.2 4.1c11.2 2.4 24.2 4.2 36.8 10c12.6 5.9 28.4 13.9 38.9 24.9c10.6 11 18.5 27.6 24.5 41c6.1 13.4 9 26.2 11.7 39.6c2.7 13.4 3.9 33.8 4.6 40.6M580.3 159.8c5.5 0 20.6-1.8 32.9-.2c12.3 1.7 27.5 3.9 40.9 10.2c13.4 6.3 29.3 15.4 39.4 27.4c10.1 12.1 16.4 29.7 21.2 44.7c4.7 15 4.9 31.8 7.2 45.3c2.3 13.4 5.5 29.3 6.6 35.2M621.2 174.3c2.5 1.1 9.5 3.6 14.6 6.1c5.1 2.5 11.2 5.5 16.1 9c4.9 3.5 9.1 7.9 13.5 12.1c4.3 4.2 8.6 8.4 12.6 12.9c4 4.4 8.1 8.8 11.4 13.7c3.4 4.9 7.3 13.1 8.8 15.7M495.7 340.6c.6 3.1 1.6 12.7 3.3 18.7c1.7 5.9 4.8 11.6 6.9 16.9c2.1 5.3 3.7 9.9 5.6 14.7c2 4.8 3.8 9.6 6.1 14.2c2.3 4.5 5.5 8.6 7.6 13.2c2 4.6 3.8 11.9 4.6 14.2M498.8 371.9c.6 1.9 2.4 7.8 3.7 11.4c1.2 3.7 2.5 7 3.8 10.4c1.3 3.3 2.5 6.5 3.9 9.7c1.4 3.2 3.1 6.5 4.7 9.7c1.6 3.3 3.3 6.5 5 9.7c1.7 3.2 4.2 8 5 9.6M484.3 366.7c.8 3 2.7 12.4 5.2 18.2c2.5 5.8 6.8 11.3 10 16.6c3.2 5.3 6.3 10.3 9.1 15.2c2.9 5 4.9 9.2 7.8 14.5c2.8 5.4 6.8 11.8 9.3 17.7c2.6 5.8 4.8 14.5 5.8 17.4M508.8 372.3c1 2.4 4.2 9.7 6 14.3c1.7 4.5 3 8.4 4.4 12.8c1.4 4.4 2.5 9.2 4.2 13.5c1.6 4.4 3.5 8.5 5.5 12.9c2 4.3 4.8 9 6.7 13.4c2 4.3 4.1 10.4 4.9 12.5M705.1 357.6c-1.3 1.5-7.8 6.2-7.8 9.2c0 3.1 5.6 5.9 8 9.1c2.3 3.1 5.2 6.4 6.1 9.6c.9 3.2 .8 6.2-.8 9.6c-1.5 3.4-5.5 7-8.3 11c-2.9 4-6.5 8.4-8.8 12.9c-2.4 4.5-4.5 9.4-5.5 13.9c-1 4.6-.6 11.1-.7 13.3"/>
<path stroke="#999" stroke-width="0.4" opacity="0.45" d="M567.5 143.2c-4.2 1.3-17.6 4.1-25.5 7.9c-7.9 3.7-15.3 9.2-21.8 14.6c-6.6 5.3-11.7 10.8-17.6 17.6c-6 6.8-12.8 14.5-18.1 23.2c-5.2 8.6-10.3 20.3-13.5 28.8c-3.2 8.4-4.7 18.1-5.7 21.7M558.4 155.4c-2.4 1-9.8 3.8-14.7 6.2c-5 2.4-9.1 4.9-15 8.4c-5.9 3.5-14.3 7.6-20.5 12.8c-6.2 5.2-12.2 11.5-16.9 18.2c-4.7 6.7-8.2 14.9-11.4 22.1c-3.1 7.2-6.1 17.6-7.4 21.2M573.1 138.7c-4.5 2.1-18.7 8.5-26.8 12.7c-8.1 4.3-14.5 7.8-21.7 12.9c-7.3 5.1-15.1 10.8-21.8 17.8c-6.7 6.9-13.4 15.5-18.4 23.9c-5.1 8.4-8.9 18.2-11.8 26.3c-2.9 8.1-4.8 18.6-5.8 22.4M566.8 143.7c-3.5 1.3-15.1 4.7-21.5 8c-6.4 3.3-11 7.6-16.8 11.7c-5.9 4.2-12.2 8.1-18.3 13.4c-6.1 5.3-13.1 11.7-18.3 18.4c-5.2 6.6-9.2 14.5-12.7 21.6c-3.5 7.1-6.8 17.4-8.2 20.9M605.6 148.7c3.1 .8 11.5 3.1 18.5 4.7c7.1 1.5 15.4 2.2 23.5 4.5c8.1 2.3 17.9 5.3 25.2 9.4c7.3 4.1 13.6 9.4 18.8 15.3c5.1 6 8.4 13.1 12.1 20.4c3.8 7.2 8.6 19.4 10.3 23.2M632.2 140.9c4.9 2.2 19.5 8 29.2 13.2c9.6 5.2 19.9 10.7 28.8 18c8.8 7.3 18.1 16.8 24.3 25.9c6.1 9.2 10 19 12.4 29c2.4 9.9 1.4 19.9 2.1 30.6c.7 10.6 1.6 27.8 1.9 33.3M607 144c5.4 1.3 21 4.4 32.2 8.1c11.1 3.7 23.9 7.6 34.6 14.1c10.7 6.4 21.7 14.8 29.4 24.4c7.7 9.7 12.9 22.4 16.6 33.6c3.7 11.2 4.3 22.1 5.6 33.7c1.2 11.5 1.5 29.7 1.8 35.6M598.9 149.2c1.3-.7 6-2.8 8.1-4.6c2-1.9 4.7-3.7 4.2-6.5c-.5-2.8 1-7.5-7.1-10.2c-8.1-2.8-34.7-5.2-41.7-6.3M632.1 143.6c1.8-1.1 8.4-4.2 11-6.4c2.6-2.3 6.4-3.7 4.6-7.1c-1.8-3.4-12.9-10.6-15.4-13.3c-2.4-2.7 .4-2.4 .5-2.8M452.4 362.3c.4 5 1.5 20.4 2.5 30.1c.9 9.7 1.9 19.3 3.3 28.1c1.3 8.8 2.8 16.9 4.8 24.7c2.1 7.9 4.8 14.9 7.4 22.4c2.6 7.5 6.3 15.6 8.5 22.6c2.2 6.9 3.9 16 4.7 19.2M467.6 350.5c1 4 3.3 16.4 5.7 23.9c2.3 7.5 5.6 14.5 8.4 21.3c2.9 6.8 6 13.5 8.7 19.7c2.7 6.3 4.7 11.5 7.5 17.7c2.8 6.3 6.7 13.2 9.5 19.8c2.7 6.6 5.9 16.4 7.1 19.6M464.2 326.2c.4 6.1 1.2 25.5 2.5 36.6c1.3 11 3.2 20 5.5 29.6c2.3 9.5 5.1 18.9 8.1 27.5c2.9 8.6 6.2 15.5 9.5 23.8c3.4 8.3 8.2 17.6 10.5 25.9c2.3 8.4 2.8 20.2 3.3 24.3M447.5 346c.5 3.9 2.7 15.8 2.6 23.7c-.1 7.8-2.8 15.6-3.3 23.3c-.4 7.8-.6 16.2 .5 23.2c1 7 4.8 12.3 5.7 18.8c1 6.5-.5 13.9-.2 20.4c.2 6.4 1.4 15.4 1.7 18.5M732.1 323.7c-1.5 4-4.8 16.4-8.8 24c-4 7.5-14.3 14.1-15.1 21.3c-.7 7.1 9.9 14 10.6 21.5c.8 7.6-3.6 15.4-6.2 23.6c-2.7 8.2-8.5 17.1-9.7 25.7c-1.3 8.6 1.6 21.7 1.9 26M729.2 341.1c-1.6 2.9-6.9 11.5-9.6 17.4c-2.7 5.9-6.9 11.8-6.6 17.7c.3 6 7.8 11.9 8.5 17.8c.7 5.9-1.9 11.9-4.2 17.8c-2.3 5.8-7.5 10.9-9.5 17.2c-2 6.4-2.1 17.4-2.6 20.8M736.7 352c-2 3.6-9.8 15-11.7 21.7c-1.9 6.8 .3 12.2 .2 18.9c-.2 6.6 .5 14.5-.9 20.9c-1.4 6.4-5.4 11.7-7.7 17.5c-2.2 5.8-5.5 11-5.8 17.4c-.2 6.5 3.5 17.7 4.2 21.3M725.4 336.4c-2.8 3.9-14.8 15.6-16.7 23.4c-1.9 7.8 5.9 15.7 5.3 23.4c-.6 7.7-4.8 13.9-9 22.8c-4.2 9-15.1 20.2-16.2 30.7c-1.2 10.5 3.7 21.4 9.5 32.3c5.9 10.9 21.1 27.8 25.4 33.3M692.1 446.8c.8 8.3 .6 34.7 4.9 50.1c4.3 15.4 17.5 35.1 21 42.1M706 443.2c2.5 6 7.2 25.2 14.9 35.7c7.6 10.6 25.7 23.1 30.8 27.7M693.3 444.7c2.9 5.5 8.9 23.4 17.3 33.1c8.4 9.7 27.8 20.9 33.3 25.1M696.5 456.8c2.7 9 8 37.3 16 53.9c8 16.7 26.6 38.4 32 46M700.5 453.8c4.5 7.8 15.2 32.6 26.8 46.8c11.6 14.3 35.6 32.4 42.7 38.9M709 447.7c3.6 7.3 11.6 30.6 21.4 43.9c9.8 13.4 31.1 30 37.4 36M701.3 452.3c2.3 6.6 6.4 27.8 13.6 39.7c7.2 12 24.7 26.5 29.6 31.8"/>
<path stroke="#888" stroke-width="0.4" opacity="0.35" d="M575.6 148.5c-3.4 1.4-13.7 6.1-20.3 8.6c-6.7 2.5-12.9 2.8-19.7 6.2c-6.9 3.4-14.9 8.7-21.6 14.1c-6.6 5.4-12.8 10.8-18.6 18.4c-5.7 7.6-11.5 18.1-15.8 27.2c-4.2 9.1-8.1 22.9-9.7 27.5M543.6 149.4c-3.1 2.1-12.8 8.1-18.7 12.5c-6 4.5-11.6 8.9-17.1 14.1c-5.4 5.2-10.9 10.6-15.7 17.1c-4.7 6.5-9.1 14.5-12.9 21.9c-3.7 7.4-7.2 15.5-9.7 22.4c-2.5 6.9-4.2 15.8-5.1 18.9M546.2 151c-4.6 3-18.9 10.8-27.7 17.9c-8.7 7.2-17.9 15.4-25 25c-7.1 9.5-13 21.8-17.5 32.5c-4.6 10.7-7.7 20.7-9.9 31.7c-2.1 11-3 19.4-3 34.2c0 14.8 2.5 45.6 3 54.7M569.6 150.3c-3.5 1.1-14.3 3.9-20.7 6.6c-6.5 2.6-11.2 5.3-18 9.4c-6.7 4.1-15.6 9.2-22.5 15.4c-7 6.1-13.8 13.6-19.2 21.6c-5.4 7.9-9.7 17.4-13.1 25.9c-3.4 8.6-6.2 21.3-7.4 25.5M579.4 142.2c5.9-.3 23.6-3.1 35.3-1.9c11.7 1.1 24.4 4.5 35 9c10.7 4.6 19.4 11 29.1 18.3c9.6 7.2 21 15.8 28.8 25.5c7.8 9.7 14.8 21.5 18.1 32.6c3.3 11 1.5 28 1.8 33.6M609.6 142.6c5.6 1.1 22.1 3.2 33.4 6.8c11.2 3.6 23.9 8.4 34.2 14.9c10.4 6.5 20.3 14.8 27.7 24.2c7.3 9.3 12.5 21 16.6 31.7c4.1 10.8 6.1 21.1 7.8 32.6c1.7 11.6 1.8 30.6 2.2 36.7M574 146c3.9 .1 15.4 0 23.6 .7c8.2 .6 16.5 1.4 25.5 3.2c9 1.8 19.1 4 28.6 7.6c9.5 3.5 19.8 7.7 28.3 13.6c8.5 5.9 16.6 13.7 22.7 22c6.1 8.3 11.6 23.2 13.9 27.8M588.8 145.3c3.9 .7 15.3 2.6 23.2 4.2c8 1.6 15.7 3.1 24.5 5.4c8.8 2.3 19.3 4.3 28.5 8.5c9.3 4.1 19.5 9.7 26.9 16.4c7.4 6.7 13 15.2 17.5 23.7c4.4 8.4 7.5 22.3 9 26.8M610.3 144.6c5.2 1 20.3 2.9 31 5.9c10.7 3 23.1 6.6 33.3 12.3c10.3 5.7 20.6 13.3 28.3 21.9c7.7 8.5 13.7 19.6 17.7 29.5c4.1 9.9 5.4 19.5 6.7 29.9c1.3 10.5 1 27.2 1.2 32.6M587.9 127.6c-.3-.5-1.4-2.1-1.6-3.1c-.2-.9-.9-1.5 .2-2.4c1-1 3.8-2.6 6-3.3c2.2-.8 5.9-1.2 7.1-1.5M597.8 147.7c0 1 .8 4.2 0 6c-.9 1.8-1 3.6-5.2 4.8c-4.2 1.2-15.2 2.2-19.9 2.6c-4.8 .5-7.2 .2-8.7 .2M588 126.8c-1.2 0-5-.4-7.5-.1c-2.4 .3-5.2 .9-7.3 2c-2 1.2-3.8 3.9-5.1 4.9c-1.3 1-2.3 .9-2.8 1.1M632.5 149.4c.2 1 1.1 4.4 1.1 6c-.1 1.7 .8 2.5-1.6 4c-2.3 1.4-10.6 3.6-12.6 4.7c-2 1 .5 1.5 .6 1.7M608.3 133.6c.5-1.1 1.8-4.9 2.7-6.7c1-1.7 .4-2.6 3-3.8c2.6-1.3 5.9-3.8 12.7-3.9c6.8-.2 23.3 2.3 27.9 2.7M587.8 141.1c2.1 .3 8.3 1.6 12.8 1.4c4.5-.1 10.5-1.6 14.2-2c3.6-.5 4.3 1.3 7.6-.7c3.3-1.9 10-9.3 12-11.2M562 161.3c-2-.1-7.8 .6-12.2-.7c-4.3-1.3-10.5-5.2-13.8-7.2c-3.3-1.9-4.2-3.2-6-4.4c-1.8-1.1-4.1-2-4.9-2.4M594.3 140.4c-.7-.8-3.1-3.4-4.1-4.6c-1-1.2-3.2-1.1-2-2.7c1.3-1.6 6.4-5.3 9.5-6.9c3.2-1.5 7.8-2.1 9.4-2.5M630.4 123.6c1.2 .5 5.8 1.4 7.4 3.3c1.5 1.9 .9 6.7 1.9 8c1 1.4 3.8-.7 4.2 .1c.4 .8-1.6 4.1-2 4.9M590 137.1c-1.9 .2-8.8 .7-11.6 .9c-2.9 .1-3.2-1.4-5.7 .2c-2.6 1.5-8.7 5.8-9.7 8.9c-1.1 3.1 2.8 8.1 3.4 9.7M600.1 141.8c-1.1 .1-3.7 .9-6.3 .3c-2.5-.5-7.3-3-9.2-3.4c-1.9-.4-1.4 2.4-2.2 1c-.9-1.3-2.5-7.5-2.9-9M610.8 127.1c.9-.5 2.2-2.3 5.4-2.9c3.1-.5 10.3-.3 13.5-.4c3.1-.1 2.2-2.8 5.4-.4c3.3 2.4 11.8 12.2 14.1 14.7M458.5 379.4c.2 2.7 1 10.6 1.3 16.1c.3 5.4 .3 11.3 .5 16.6c.3 5.2 .5 10.2 1 15c.6 4.8 1.1 9.2 2.2 13.7c1.1 4.4 3 8.7 4.5 12.9c1.5 4.2 3.8 10.2 4.5 12.2M468.1 319.4c.3 6.3 .1 26.8 1.9 37.7c1.8 10.9 5 19.1 8.9 27.6c3.9 8.6 10.1 16.3 14.7 23.6c4.6 7.3 9 12.9 12.9 20.4c4 7.5 8.5 16.3 11.1 24.6c2.5 8.2 3.6 20.7 4.4 24.8M452.2 321.2c-.8 6.6-3.9 27.1-4.8 40c-1 12.9-1.1 25.4-.8 37.4c.4 12.1 1.3 24.2 2.8 34.9c1.4 10.6 3.9 19.3 5.9 28.8c2.1 9.6 4.6 19.6 6.3 28.7c1.7 9.1 3.3 21.6 3.9 25.9M466.3 303.5c.4 6.7 .8 28.6 2.4 40.4c1.6 11.8 4.1 21.1 7.2 30.6c3.2 9.5 7.6 18.3 11.6 26.5c4 8.2 8.1 14.9 12.3 22.5c4.2 7.6 9.2 14.9 12.9 23c3.7 8 7.8 21.1 9.4 25.3M717.7 376c.8 2.6 4.3 10.5 4.9 16c.7 5.4 .1 10.9-1.1 16.6c-1.2 5.7-4.3 11.7-5.9 17.8c-1.5 6.1-3 12.7-3.3 18.9c-.3 6.2 .2 12.1 1.5 18.3c1.3 6.2 5.2 15.7 6.3 18.8M740.4 312.8c-.5 4.8-1.5 19.6-3.1 28.7c-1.6 9.2-5.4 17.5-6.7 26.1c-1.4 8.7-.2 18-1.2 25.8c-1.1 7.8-3.1 13.7-5.1 20.9c-1.9 7.2-5.4 14.6-6.5 22.4c-1 7.8 0 20.3 0 24.4M735.7 360c-.8 4.5-3.4 18.4-4.5 26.9c-1.1 8.5-.9 16.2-2.3 23.9c-1.5 7.7-5.3 14.5-6.5 22.3c-1.1 7.8-1.4 16.2-.4 24.4c1 8.3 3.3 16.9 6.5 25.1c3.3 8.1 10.9 19.8 13 23.7M735.5 384c-.1 3 .1 12.1-.7 17.8c-.8 5.6-2.7 10.7-4.1 16c-1.4 5.2-3.8 10.2-4.6 15.4c-.7 5.3-.6 10.5 0 16.1c.5 5.6 1.8 11.5 3.5 17.3c1.6 5.8 5.4 14.4 6.5 17.3M700.3 364.1c1.6 2.2 6.7 8.1 9.5 13.3c2.7 5.2 7.4 12.4 7 17.7c-.4 5.2-6.3 8.4-9.6 13.7c-3.3 5.2-8.4 11.1-10.1 17.8c-1.6 6.7-.7 15.6 .1 22.4c.8 6.7 3.9 15.2 4.7 18.2M704.1 444.7c4.4 6.2 15.1 26.2 26.6 37.3c11.5 11 35.5 24.3 42.6 29.2M709.8 445c1.2 5.1 2 21.8 7 30.7c5 8.9 19.1 19 22.9 22.7"/>
<path stroke="#777" stroke-width="0.4" opacity="0.4" d="M563 148.7c-3.4 1.8-14 6.9-20.7 10.6c-6.6 3.7-12.1 6.7-19.3 11.6c-7.1 4.9-17 10.9-23.8 17.9c-6.7 7-12.2 16-16.6 24.1c-4.4 8.2-7.2 16.5-9.7 24.5c-2.5 8-4.3 19.8-5.2 23.8M549.1 155.2c-3.9 2.3-15.1 8-23.5 13.8c-8.4 5.9-19.3 12.5-27 21.2c-7.6 8.7-13.9 20.7-18.8 31.1c-4.9 10.4-8.3 20.5-10.5 31.1c-2.3 10.5-3.3 18-3 32.1c.3 14 3.9 43.3 4.6 52M640.1 151.9c3 1.1 11.9 3.8 17.5 6.3c5.7 2.5 10.9 5.5 16.3 8.8c5.4 3.3 11 6.8 16.1 11c5.1 4.2 10.4 9 14.4 14.1c3.9 5.2 6.7 11 9.3 16.6c2.5 5.7 4.9 14.4 5.9 17.3M602.9 145.3c3.9 .3 15.4 .3 23.2 1.6c7.8 1.4 16.2 3.5 23.8 6.4c7.5 2.9 14.9 6.7 21.5 11.1c6.6 4.5 12.4 9.8 18.2 15.7c5.8 5.9 11.6 12.6 16.6 19.7c5 7.1 11.2 19 13.4 22.8M634 128.9c1.5 .5 6.2 1.8 8.6 3.1c2.5 1.3 6 2 6.2 4.7c.3 2.7-1.9 8.6-4.7 11.6c-2.8 3.1-10.1 5.5-12.2 6.6M592.1 123.1c1.3 0 5.4-.1 7.6 0c2.2 .1 3.7 .1 5.7 .6c2 .5 4.5 1.1 6.3 2.3c1.9 1.3 4 4.4 4.8 5.3M563.1 114.3c-1.9-.3-6.2-2.4-11.6-1.6c-5.4 .8-16.1 4.7-21.1 6.2c-4.9 1.5-7.4-.9-8.5 2.9c-1 3.8 2 16.6 2.3 20M602.4 153.6c-1.2 .8-3.2 3.7-7.1 4.8c-4 1.1-11 2.1-16.7 1.7c-5.7-.4-12.7-2.1-17.4-4.1c-4.7-1.9-8.9-6.4-10.7-7.7M604.1 130.2c-1.6 .2-6.1-.6-9.4 1c-3.3 1.7-8.1 7.5-10.6 9c-2.6 1.6-6.3-2-4.6 .6c1.7 2.5 12.2 12.4 14.7 14.8M594.8 126.9c1.2 .7 5.3 3 7 4.3c1.7 1.4 4 1.7 3.3 3.8c-.6 2-5.3 6.5-7.2 8.5c-1.9 1.9-3.5 2.6-4.2 3.1M466.4 363.1c1.1 5 4 20.1 6.5 29.5c2.5 9.5 5.4 18.9 8.5 27.3c3.2 8.5 7.2 15 10.5 23.3c3.2 8.3 7.4 17.8 9 26.5c1.6 8.8 1.4 18.8 .7 26.1c-.7 7.3-4.1 14.7-5 17.6M456.1 316c-.5 6.2-3.2 25.7-3 37.4c.1 11.8 2.8 22.4 3.9 33.1c1.2 10.6 1.7 21.1 3.1 30.9c1.4 9.7 3.2 18.6 5.2 27.5c2.1 8.8 5.3 16.8 7.1 25.6c1.8 8.9 3.2 22.9 3.8 27.4M457.7 303.6c-.3 8-1.8 32.7-1.5 47.8c.3 15 1.5 29 3.3 42.5c1.8 13.5 4.9 26.5 7.5 38.6c2.6 12.1 5.8 22.6 8.2 34c2.4 11.4 5.2 24.8 6.1 34.5c.8 9.8-.8 20-1 24M476.9 360c1.1 3.3 3.9 13.5 6.6 20c2.8 6.4 6.6 12.8 10 18.7c3.3 6 6.9 11.7 10.4 17c3.4 5.3 6.9 9.2 10.2 15c3.3 5.7 7.3 13 9.7 19.5c2.3 6.5 3.6 16.2 4.3 19.5M457.7 368.5c.7 2.9 3.4 11.4 4.2 17.2c.8 5.8-.6 12.2 .4 17.8c1 5.5 4.2 10.4 5.7 15.5c1.5 5 2.3 9.8 3.2 14.7c1 4.9 1 10 2.5 14.6c1.5 4.6 5.4 10.9 6.5 13.1M458.3 351.6c.6 3.5 2.2 14.2 3.5 21c1.3 6.9 2.7 13.6 4.3 20c1.7 6.5 3.7 12.9 5.4 19c1.8 6 3.4 11.8 5.4 17.2c2.1 5.4 4.5 10 6.9 15.1c2.4 5.1 6.4 12.9 7.7 15.5M704.6 360.1c.3 2.4-.1 9.7 1.7 14.5c1.7 4.8 8.3 9.3 8.9 14.2c.6 5-2.6 10-5.4 15.5c-2.8 5.5-8.6 11.5-11.3 17.8c-2.8 6.2-5.2 13.1-5.4 19.7c-.2 6.6 3.5 16.4 4.2 19.7M744.7 346.8c-.6 5.2-2.4 20.7-3.5 31c-1.2 10.2-1.5 21.2-3.4 30.4c-2 9.2-6.6 16.8-8.5 24.6c-1.8 7.8-2.9 14.5-2.4 22.1c.4 7.7 2.1 15.3 5.2 23.9c3.1 8.6 11.2 23.2 13.4 27.8M731.5 331.7c-1.5 4-6.1 15.9-8.6 23.9c-2.5 8-6.1 16.2-6.5 24c-.4 7.7 5.2 14.8 4.1 22.4c-1 7.7-7.7 15.2-10.3 23.5c-2.6 8.3-5.8 17.6-5.3 26.4c.5 8.8 7 22.1 8.5 26.5M714.9 366.8c.9 3.8 5.1 15.4 5.2 22.8c.1 7.4-2 14-4.7 21.7c-2.8 7.7-9.6 16.2-11.6 24.5c-2 8.4-2.6 17.1-.5 25.7c2 8.5 7.6 17.5 12.7 25.7c5.1 8.2 15 19.4 18 23.3M742.7 304.3c.4 5.8 2.8 22.5 2.2 34.6c-.6 12-3.5 26.3-5.8 37.8c-2.2 11.5-4.8 21.3-7.5 31.2c-2.7 9.8-7.7 18.3-8.7 28.2c-1 9.9 .3 20.9 2.5 31.1c2.2 10.1 8.8 24.8 10.5 29.8M708.3 459.6c2.9 5.4 8.9 22.9 17.3 32.3c8.5 9.5 27.8 20.3 33.4 24.4"/>
<path stroke="#444" stroke-width="0.6" opacity="0.6" d="M537.6 455.2c.4 .8 2 2.9 2.5 4.3c.5 1.4 .4 3.5 .5 4.2M531.9 471.1c.3 .4 1.2 1.6 1.3 2.4c.1 .9-.5 2.1-.6 2.5M533 464.2c.3 .6 1.2 2.3 1.3 3.4c.2 1.2-.5 2.9-.6 3.5M527.5 446.6c.1 .5 .5 1.7 .3 2.6c-.3 .8-1.5 2.1-1.8 2.5M529.6 439.6c-.5 .4-1.9 1.7-3.3 2.5c-1.4 .8-4.4 2.1-5.3 2.5M535.5 443c-.4 .6-1.3 2.5-2.4 3.7c-1.2 1.3-3.7 3.1-4.4 3.8M537.3 452.9c.3 .3 1.5 1.2 1.8 1.8c.3 .7-.2 1.6-.2 1.9M529.5 454c.3 .8 1.5 3.5 1.8 5.2c.2 1.8-.3 4.4-.3 5.3M534.7 456.9c.2 .8 1.4 3.2 1.6 4.8c.2 1.7-.3 4.1-.4 4.9M533.5 446.8c-.3 .3-.6 1.2-1.4 1.8c-.8 .6-2.8 1.5-3.4 1.8"/>
<path stroke="#222" stroke-width="0.7" opacity="0.7" d="M527.8 471.4c.9 .3 3.7 1.4 5 2.1c1.3 .6 2.5 1.7 2.9 2M528.1 439.7c0 .5 .2 1.7-.2 2.6c-.4 .8-1.8 2.1-2.2 2.5M534.1 470.4c.1 .5 .7 1.8 .5 2.7c-.2 .9-1.2 2.2-1.5 2.7M533.3 479.5c.9 .5 3.8 1.9 5.3 2.8c1.4 1 2.7 2.4 3.2 2.8M527.8 455.2c-.6 .4-2.2 1.5-3.8 2.3c-1.5 .8-4.7 1.9-5.7 2.3M527.4 453.3c.8 .6 3.6 2.5 4.8 3.8c1.3 1.3 2.4 3.2 2.9 3.9M536.8 450.1c.4 .4 2.1 1.5 2.7 2.2c.6 .7 .6 1.8 .8 2.1M528.5 440.8c-.2 .2-.4 .7-1.1 1.1c-.7 .4-2.7 1-3.2 1.2M536.1 450c.8 .2 3.5 .7 4.8 1c1.3 .3 2.3 .8 2.8 1M535.3 479.7c-.3 .1-.9 .3-1.9 .4c-1 .2-3.3 .4-3.9 .5M536.3 460c-.3 .6-.9 2.7-1.8 4c-1 1.4-3.2 3.5-3.9 4.1M527.0 317.5l-3.3 -2.9M528.3 316.4l-2.5 -3.3M529.6 315.3l-3.4 -3.1M530.9 314.2l-3.3 -3.0M532.2 313.1l-2.7 -3.7M533.5 312.0l-2.5 -3.6M534.8 310.9l-3.0 -2.8M536.1 309.8l-2.9 -3.3M537.4 308.7l-2.4 -3.2M538.7 307.6l-2.9 -3.3M540.0 306.5l-3.6 -3.2M637.0 299.5l1.0 -6.1M638.9 299.6l1.3 -6.1M640.9 299.9l1.6 -3.3M642.8 300.2l2.0 -5.1M644.7 300.6l2.3 -3.2M646.6 301.1l2.6 -5.0M648.6 301.7l2.9 -3.1M650.5 302.3l3.2 -4.1M652.4 303.0l3.6 -2.3M654.4 303.7l3.9 -3.6M656.3 304.5l4.2 -2.5M658.2 305.3l4.5 -1.8M660.1 306.1l4.9 -2.4M662.1 307.0l5.2 -1.9M664.0 308.0l5.5 -1.5"/>
<path stroke="#111" stroke-width="0.9" opacity="0.7" d="M536.3 465.4c-.3 .2-.5 .6-1.3 .9c-.7 .3-2.7 .8-3.3 .9M539.5 475.1c.3 .4 1.5 1.4 1.7 2.2c.2 .7-.2 1.8-.3 2.2M538.5 474.1c.3 .5 1.4 1.9 1.6 2.9c.1 1-.4 2.5-.5 3M528 468.5c.3 .5 1.7 1.9 2 2.8c.4 .9 0 2.3 .1 2.7M528.4 454.9c.6 .1 2.5 .4 3.2 .6c.7 .3 1 .6 1.2 .7M535.2 460.1c-.1 .8 .1 3.3-.3 4.9c-.5 1.7-2 4.2-2.3 5M534.9 438.9c-.7 .2-2.4 .5-4.1 .8c-1.8 .2-5.2 .6-6.2 .7M539.3 447.6c1.1 .2 4.5 .8 6.3 1.2c1.8 .5 3.6 1.1 4.3 1.3M538.3 460.9c.8 .6 3.7 2.3 5 3.5c1.3 1.2 2.5 2.9 3 3.5M535.9 457.7c.3 .8 1.5 3 1.8 4.6c.3 1.5-.2 3.7-.2 4.5M535.6 466.5c.3 .3 1.6 1.3 1.9 2c.3 .7-.1 1.7-.1 2M528 449.8c-.3 .3-1 1.3-2.1 2c-1 .6-3.4 1.6-4.1 2M537.8 466.3c-.2 0-.5 .3-1.3 .5c-.8 .1-2.7 .4-3.3 .5"/>
<path stroke="#444" stroke-width="0.8" opacity="0.6" d="M500 323c.5 3.2 1.8 13 3 19c1.2 6 2.5 11.2 4 17c1.5 5.8 3 12.2 5 18c2 5.8 4.7 11 7 17c2.3 6 4.7 12.8 7 19c2.3 6.2 4.3 13 7 18c2.7 5 5.5 8.5 9 12c3.5 3.5 7.8 6.3 12 9c4.2 2.7 8.7 5 13 7c4.3 2 8.8 3.7 13 5c4.2 1.3 8.2 2.3 12 3c3.8 .7 7 1.3 11 1c4-.3 8.7-1.5 13-3c4.3-1.5 8.8-4 13-6c4.2-2 8-3.7 12-6c4-2.3 8.2-4.5 12-8c3.8-3.5 7.5-8.3 11-13c3.5-4.7 7-9.7 10-15c3-5.3 5.7-11.2 8-17c2.3-5.8 4.3-11.2 6-18c1.7-6.8 2.7-16 4-23c1.3-7 2.7-13 4-19c1.3-6 3.3-14.2 4-17M541 445c-.2 2.8-.3 11.5-1 17c-.7 5.5-.8 11-3 16c-2.2 5-5.5 9.7-10 14c-4.5 4.3-14.2 10-17 12M662 438c-.1 2.8-.5 11.8-.5 17c0 5.2-.8 9.2 .5 14c1.2 4.8 4.3 10.3 7 15c2.7 4.7 5 8.7 9 13c4 4.3 12.5 10.8 15 13M498 511c.5 2.8 1.3 11.2 3 17c1.7 5.8 3.8 12.7 7 18c3.2 5.3 7.2 9.8 12 14c4.8 4.2 9.5 7.7 17 11c7.5 3.3 17.7 6.8 28 9c10.3 2.2 23.2 3.7 34 4c10.8 .3 21.3-.5 31-2c9.7-1.5 19.3-4 27-7c7.7-3 13.5-6.7 19-11c5.5-4.3 10.2-9.8 14-15c3.8-5.2 6.5-10.5 9-16c2.5-5.5 5-14.2 6-17M510 506c-1 .5-4 2.2-6 3c-2 .8-5 1.7-6 2M807 552c-.2 4.7-.3 17.5-1 28c-.7 10.5-2 23.7-3 35c-1 11.3-2.5 27.5-3 33M800 648c-1.3 4.5-5.2 17.5-8 27c-2.8 9.5-6.8 20-9 30c-2.2 10-3.2 18.8-4 30c-.8 11.2 0 26.2-1 37c-1 10.8-3.2 18.2-5 28c-1.8 9.8-5 25.8-6 31"/>
<path stroke="#777" stroke-width="0.6" opacity="0.5" d="M525.5 413.8c1.4 3 5.6 13 8.3 18c2.7 5 4.2 8.5 7.7 12c3.5 3.5 9.1 6.3 13.3 9c4.2 2.7 7.4 5 11.7 7c4.3 2 10.1 3.7 14.3 5c4.2 1.3 6.9 2.3 10.7 3c3.8 .7 8.3 1.3 12.3 1c4-.3 7.4-1.5 11.7-3c4.3-1.5 10.1-4 14.3-6c4.2-2 6.7-3.7 10.7-6c4-2.3 9.5-4.5 13.3-8c3.8-3.5 6.2-8.3 9.7-13c3.5-4.7 9.4-12.5 11.3-15M517 290c-.7 1.3-2.9 5.2-4 8c-1.1 2.8-1.8 5.7-2.5 9c-.7 3.3-1.2 9.2-1.5 11M676 285c.7 .8 3.2 3.5 4 5c.8 1.5 .5 2.3 1 4c.5 1.7 1.7 5 2 6M572.4 369.5c-.1-.9-.7-3.8-.4-5.5c.3-1.8 1.1-3.6 2-5c.9-1.4 2.9-2.9 3.5-3.5M572 404c1.7-.2 6.7-1.1 10-1.5c3.3-.4 7.3-1.1 10-1c2.7 .1 4 1.5 6 1.5c2 0 3.2-1.3 6-1.5c2.8-.2 7 .3 11 .5c4 .2 10.8 .4 13 .5M577 415.5c1.8 .8 7 3.4 11 4.5c4 1.1 8.7 2 13 2c4.3 0 8.7-.8 13-2c4.3-1.2 10.8-4.2 13-5M553 400c.3 .8 1.2 3.7 2 5c.8 1.3 2.1 2.5 2.5 3M641 398c0 .7 .4 2.8 0 4c-.4 1.2-2.1 2.5-2.5 3M861 686c-1.8 2.2-7.2 9.2-11 13c-3.8 3.8-6.2 7-12 10c-5.8 3-15.8 5.8-23 8c-7.2 2.2-16.7 4.2-20 5"/>
<path stroke="#222" stroke-width="0.5" opacity="0.6" d="M517.5 291.6l4.6 -3.2M526.3 287.1l3.0 -4.5M530.3 286.0l5.4 -4.9M552.2 285.3l6.4 -4.6M554.3 285.5l5.2 -4.4M560.5 287.2l6.0 -3.7M564.7 288.9l4.5 -3.1M568.7 290.6l6.0 -2.5M572.7 292.7l6.3 -1.8M675.5 286.6l-5.7 -3.2M674.5 286.2l-5.5 -3.5M671.3 284.7l-5.0 -4.1M667.7 283.1l-6.2 -4.5M666.1 282.5l-5.5 -4.7M662.8 281.2l-5.0 -5.0M660.9 280.8l-3.4 -5.1M650.2 280.6l-3.9 -5.1M642.1 281.5l-3.9 -4.8M639.7 281.9l-6.7 -4.6M637.2 282.4l-6.3 -4.4M634.8 282.9l-6.4 -4.2M632.4 283.4l-4.0 -4.0M620.6 287.3l-5.5 -2.5M613.9 291.4l-4.7 -1.7"/>
<path stroke="#555" stroke-width="0.6" opacity="0.55" d="M518.7 291.0l6.4 -3.5M532.4 285.6l4.7 -5.0M534.6 285.2l5.5 -5.1M536.7 285.0l5.6 -5.1M539.0 284.9l3.0 -5.2M543.6 284.9l5.8 -5.1M548.1 285.0l3.8 -4.9M558.4 286.4l4.6 -4.0M562.6 288.0l3.6 -3.4M566.7 289.7l6.7 -2.8M570.7 291.6l3.4 -2.1M575.5 294.3l6.2 -1.7M673.0 285.5l-4.2 -3.8M669.4 283.8l-4.0 -4.3M664.5 281.8l-4.2 -4.9M656.1 280.4l-6.2 -5.2M644.7 281.1l-4.3 -4.9M627.5 284.7l-5.0 -3.4M618.2 288.6l-4.9 -2.1M612.5 292.3l-3.8 -1.7M621 310c.8-1 3.2-4.3 5-6c1.8-1.7 5-3.3 6-4"/>
<path stroke="#333" stroke-width="0.6" opacity="0.6" d="M520.3 290.1l5.7 -3.8M522.3 289.0l4.6 -4.1M524.3 287.9l5.3 -4.3M528.3 286.5l3.2 -4.7M541.3 284.8l4.0 -5.2M545.9 284.9l6.0 -5.0M550.2 285.2l5.5 -4.8M556.3 285.9l5.2 -4.2M574.3 293.6l4.7 -1.7M658.7 280.5l-3.6 -5.1M653.2 280.5l-6.6 -5.2M647.4 280.9l-5.0 -5.0M629.9 284.0l-6.5 -3.7M625.2 285.4l-6.8 -3.1M622.9 286.2l-6.1 -2.8M615.9 290.0l-5.8 -1.8M545.0 302.5l-1.0 -4.3M549.0 302.5l-0.5 -3.4M553.0 302.5l0.0 -4.1M557.0 302.5l0.5 -3.2M561.0 302.5l1.0 -3.9"/>
<path stroke="#111" stroke-width="1.2" opacity="0.85" d="M527.3 317c.8-.9 3.1-3.8 4.7-5.5c1.6-1.7 3.4-3.2 5.2-4.5c1.8-1.3 3.9-2.7 5.8-3.5c1.9-.8 3.5-1.1 5.3-1.4c1.8-.3 3.9-.5 5.7-.5c1.9 0 3.7 .1 5.4 .6c1.7 .5 3.2 1.3 4.6 2.3c1.4 1 2.8 2.5 4 3.8c1.2 1.3 2.5 2.9 3.5 4.2c1 1.3 2.3 3.2 2.8 3.8M619.4 314.5c.8-.9 3.1-3.9 4.6-5.5c1.5-1.6 3-3.1 4.7-4.4c1.8-1.3 3.8-2.7 5.8-3.6c2-.9 4.4-1.7 6.5-2c2.1-.3 3.9-.1 6 .2c2.1 .3 4.5 .9 6.4 1.7c1.9 .8 3.5 1.8 5.1 2.8c1.6 1.1 4 2.9 4.8 3.5M556.5 405c1.4 .3 5.4 1.5 8.5 2c3.1 .5 6.3 .8 10 1c3.7 .2 8 .6 12 .5c4-.1 8-.8 12-1c4-.2 8.2-.2 12-.5c3.8-.3 7.5-.9 11-1.5c3.5-.6 7-1.3 10-2c3-.7 6.7-1.7 8-2"/>
<path stroke="#444" stroke-width="0.7" opacity="0.6" d="M527.3 317.3c1.1 .1 4.2 .5 6.7 .7c2.5 .2 5.7 .2 8 .3c2.3 .1 3.9 .4 6 .5c2.1 .1 4.2 .1 6.5 0c2.3-.1 5.2-.2 7.5-.5c2.2-.2 4-.7 6-1c2-.3 5.2-.8 6.3-1M619.4 314.5c1.8 .2 7 1 10.6 1.3c3.6 .3 7.7 .6 11 .6c3.3 0 6.3-.3 9-.6c2.7-.3 5.2-.7 7-1.3c1.8-.6 3-1.6 4-2.5c1-.9 1.6-2.2 1.9-2.7M676 499c-.3 3.5-1.3 12.8-2 21c-.7 8.2-1.7 23.3-2 28"/>
<path stroke="#666" stroke-width="0.6" opacity="0.55" d="M529.7 307c1-.7 3.8-2.9 6.3-4c2.5-1.1 5.9-2 8.6-2.6c2.7-.6 5.2-.8 7.4-.9c2.2-.1 4-.1 6 .3c2 .4 5 1.7 6 2"/>
<path stroke="#999" stroke-width="0.5" opacity="0.45" d="M533.5 323c1.4 .6 5.4 2.7 8.5 3.5c3.1 .8 6.8 1.5 10 1.5c3.2 0 6.1-.7 9-1.5c2.9-.8 6.9-2.9 8.3-3.5M584 332c-.5 2.3-1.9 10-3 14c-1.1 4-2.9 8.3-3.5 10M584 424c2.7 .8 10.3 4.5 16 4.5c5.7 0 15-3.8 18-4.5M585.0 411.9l-0.3 4.9M588.2 412.7l0.2 5.1M591.4 411.1l-0.0 3.9M594.6 412.1l0.2 4.8M597.8 411.0l-0.2 3.9M601.0 411.8l-0.2 3.6M604.2 411.4l-0.0 5.6M607.4 411.4l0.5 5.0M610.6 412.8l0.4 5.3M613.8 412.8l-0.3 4.9M617.0 411.7l-0.3 3.8M620.2 412.3l-0.4 3.3M563 372c-1.2 2.2-5 8.7-7 13c-2 4.3-4.2 8.8-5 13c-.8 4.2 0 10 0 12M633 368c1.3 2 5.8 8 8 12c2.2 4 4.2 8 5 12c.8 4 0 10 0 12M585 447c2.5 .7 9.8 4 15 4c5.2 0 13.3-3.3 16-4M566 500c2.3 3.3 8.8 15 14 20c5.2 5 14.2 8.3 17 10M366.6 677.8c2.1 4.9 8.7 18.9 12.7 29.5c4 10.6 9.3 28.5 11.1 34.1M391.3 670.6c3 4.6 13.1 17.5 18 27.5c5 10 9.7 27.1 11.7 32.5M429.0 696.0q12.0 0.5 24.0 0.6M506.0 670.5q9.4 0.3 18.7 0.2M503.3 674.7q11.3 -0.5 22.7 -0.2M636.4 683.8q11.5 -0.2 23.0 -1.3M733.9 639.6q19.1 -1.5 38.2 -2.0M498.3 686.6q6.0 -0.1 12.0 0.2M635.6 659.4q19.1 -1.0 38.1 -1.4M471.4 658.3q18.2 -0.4 36.4 -0.1M730.3 668.2q22.7 -1.2 45.3 -2.7M729.7 698.2q22.8 -1.3 45.6 -2.6M440.5 670.4q18.8 0.8 37.7 0.7M486.5 672.4q24.1 0.8 48.2 1.2M529.2 656.7q24.2 -1.2 48.5 -1.8M430.0 689.4q9.4 0.5 18.8 0.1M675.1 662.5q15.1 -1.5 30.2 -2.0M506.6 676.1q12.5 0.3 25.1 -0.5M660.9 656.3q6.1 -0.6 12.3 -0.7M537.6 650.4q20.8 -0.7 41.6 -1.7M617.6 671.6q17.3 -0.9 34.6 -1.6M662.1 645.4q13.9 -0.3 27.8 -1.5M497.6 663.9q22.1 -0.2 44.2 -1.3M644.3 672.2q15.3 -0.8 30.6 -1.0M584.7 667.8q6.6 0.1 13.2 -0.5M621.7 671.6q12.1 -0.2 24.2 -1.5M731.7 698.3q13.4 -1.0 26.8 -1.0M715.3 693.2q19.0 -1.4 38.0 -2.0M743.4 689.9q21.7 -0.8 43.3 -1.5M633.1 646.6q22.0 -0.8 44.1 -2.3M759.8 650.4q14.1 -0.6 28.3 -1.5M678.5 700.4q24.1 -1.4 48.3 -2.1M761.6 696.6q10.9 -1.1 21.7 -1.5M470.7 669.3q6.3 -0.4 12.5 0.2M509.2 699.2q16.4 -0.4 32.8 -0.3M666.5 663.7q9.1 -0.8 18.1 -0.7M667.4 675.8q13.2 -0.5 26.3 -0.8M525.2 701.7q11.9 -0.9 23.7 -1.2M508.7 671.1q23.1 0.9 46.3 1.2M548.4 680.1q17.7 -0.2 35.4 -1.3M696.7 670.9q15.8 -1.1 31.5 -1.0M756.6 696.5q7.5 -0.9 15.1 -0.9M461.1 672.2q23.2 -0.4 46.3 -1.3M537.6 704.6q8.0 -0.2 16.0 -0.5M489.2 645.4q21.1 0.1 42.2 -0.4M537.6 662.8q22.4 -1.3 44.8 -2.4M711.4 652.3q18.2 -1.6 36.3 -2.0M590.5 694.1q21.2 -1.0 42.3 -2.3M475.7 682.3q6.7 0.5 13.4 -0.0M652.6 649.1q9.6 -0.3 19.3 -1.0M519.1 653.7q6.8 -0.5 13.6 0.2M726.7 692.0q11.6 -1.2 23.2 -1.4"/>
<path stroke="#666" stroke-width="0.6" opacity="0.5" d="M616.3 319.4c2 .4 7.6 2 11.7 2.6c4.1 .6 9 1.1 13 1.2c4 .1 7.9-.2 11-.7c3.1-.5 5.8-1.1 7.6-2.2c1.8-1.1 2.8-2.8 3.4-4.3c.6-1.6 .4-4.2 .5-5M682.2 645.7q26.6 -0.8 53.3 -1.2M722.9 643.7q36.5 -0.9 73.1 -1.1M510.0 653.6q11.1 -1.3 22.3 -1.8M682.7 641.9q13.9 -0.8 27.7 -1.8M616.9 643.7q10.9 -0.6 21.7 -2.0M712.5 642.4q20.3 -0.7 40.7 -1.3M657.4 638.5q33.2 -0.7 66.4 -1.2M745.8 639.9q13.5 -1.5 27.0 -2.2M568.9 640.3q33.5 -1.1 67.1 -1.4M642.9 648.5q29.5 -1.5 59.0 -1.2M600.2 645.7q33.1 -0.7 66.2 -2.3M601.7 636.7q30.5 -0.5 61.0 -2.5M736.2 652.0q29.6 -1.0 59.2 -1.5M570.9 647.7q24.4 -0.7 48.7 -2.1M621.9 638.5q20.8 -0.8 41.5 -1.3M659.8 648.8q17.4 -1.4 34.8 -1.5M746.9 646.3q13.8 -1.4 27.7 -1.8"/>
<path stroke="#555" stroke-width="0.8" opacity="0.6" d="M633 292c-1.8 .8-7.5 2.9-11 4.5c-3.5 1.6-7.7 3.1-10 5c-2.3 1.9-3.1 4.3-4 6.5c-.9 2.2-.9 3.8-1.6 6.5c-.7 2.7-1.8 6.2-2.4 9.5c-.6 3.3-1.4 7.3-1.3 10.3c.1 3 1 5.2 1.8 7.7c.8 2.4 2 5.2 3.2 7c1.2 1.8 2.4 2.8 3.8 4c1.4 1.2 3.4 2.3 4.8 3.5c1.4 1.2 2.7 2.2 3.7 3.5c1 1.2 2 2.7 2.5 4c.5 1.3 .4 2.8 .2 4c-.2 1.2-.4 2.2-1.4 3.4c-1 1.2-2.9 2.6-4.8 3.6c-1.9 1-5.4 2.2-6.5 2.6M417 652c-.2 3.8-.7 15.8-1 23c-.3 7.2-1.8 14.4-1 20c.8 5.6 5.8 9.5 6 13.7c.2 4.2-4.7 6.9-5 11.8c-.3 4.9 .8 13.2 3 17.5c2.2 4.2 8.7 4.7 10 8c1.3 3.3-1.7 9.8-2 11.8M338 640c-.7 4.2-2.8 16.8-4 25c-1.2 8.2-2.2 15.7-3 24c-.8 8.3-1.2 21.7-1.5 26"/>
<path stroke="#222" stroke-width="0.9" opacity="0.75" d="M572.4 369.5c.4 .6 1 2.5 2.1 3.5c1.1 1 3 2.2 4.7 2.7c1.8 .5 4 .2 5.8 .3c1.8 .1 3.5 .1 5 .5c1.5 .4 2.7 1.6 4 2c1.3 .4 2.5 .8 4 .7c1.5-.1 3.7-.8 5-1.2c1.3-.4 1.8-1.4 3-1.5c1.2-.1 3.3 .9 4 1.1"/>
<path stroke="#111" stroke-width="1.5" opacity="0.85" d="M580.3 371.2c.5-.3 1.7-1.3 2.7-1.6c1-.3 2.3-.3 3.5-.1c1.2 .2 3.2 .9 3.9 1.1M602.5 372c.5-.4 1.9-1.8 3-2.4c1.1-.6 2.3-.8 3.5-1c1.2-.2 3 0 3.6 0"/>
<path stroke="#bbb" stroke-width="0.5" opacity="0.35" d="M545 238c5-.8 19.2-4.3 30-5c10.8-.7 23.3-.3 35 1c11.7 1.3 29.2 5.8 35 7M547 244c4.7-.8 17.5-4.3 28-5c10.5-.7 23.5-.3 35 1c11.5 1.3 28.3 5.8 34 7M549 250c4.3-.8 15.8-4.3 26-5c10.2-.7 23.7-.3 35 1c11.3 1.3 27.5 5.8 33 7M551 256c4-.8 14.2-4.3 24-5c9.8-.7 23.8-.3 35 1c11.2 1.3 26.7 5.8 32 7M553 262c3.7-.8 12.5-4.3 22-5c9.5-.7 24-.3 35 1c11 1.3 25.8 5.8 31 7M555 268c3.3-.8 10.8-4.3 20-5c9.2-.7 24.2-.3 35 1c10.8 1.3 25 5.8 30 7"/>
<path stroke="#999" stroke-width="0.9" opacity="0.4" d="M640 505c-1.3 3.3-5.8 13.3-8 20c-2.2 6.7-4.2 16.7-5 20"/>
<path stroke="#aaa" stroke-width="0.8" opacity="0.35" d="M590 520c1.2 3.3 4.8 13.7 7 20c2.2 6.3 5 15 6 18"/>
<path stroke="#333" stroke-width="0.8" opacity="0.7" d="M527 497c1 3.5 3.8 13.8 6 21c2.2 7.2 5 16 7 22c2 6 4.2 11.7 5 14"/>
<path stroke="#222" stroke-width="1.1" opacity="0.8" d="M511 505c.7 2.5 2.2 10 4 15c1.8 5 4 10.5 7 15c3 4.5 6.7 8.3 11 12c4.3 3.7 8.8 7.2 15 10c6.2 2.8 13.5 5.2 22 7c8.5 1.8 19.3 3.8 29 4c9.7 .2 20.5-1.7 29-3c8.5-1.3 15.7-2.8 22-5c6.3-2.2 11.2-5 16-8c4.8-3 9.3-5.8 13-10c3.7-4.2 6.5-9.5 9-15c2.5-5.5 5-15 6-18"/>
<path stroke="#111" stroke-width="1.4" opacity="0.8" d="M498 511c1.3-1.3 4.8-5.2 8-8c3.2-2.8 7.5-6.3 11-9c3.5-2.7 8.3-5.8 10-7"/>
<path stroke="#333" stroke-width="0.8" opacity="0.6" d="M501 508c1.8-1.5 7.2-6.3 11-9c3.8-2.7 10-5.8 12-7"/>
<path stroke="#333" stroke-width="0.9" opacity="0.7" d="M498 511c-3.8 2-15.2 8.2-23 12c-7.8 3.8-14.8 7.3-24 11c-9.2 3.7-21 7.8-31 11c-10 3.2-21.7 5.3-29 8c-7.3 2.7-10.8 5-15 8c-4.2 3-6.7 5.5-10 10c-3.3 4.5-7.2 11.7-10 17c-2.8 5.3-4.8 9.8-7 15c-2.2 5.2-4.2 9.8-6 16c-1.8 6.2-3.3 12.8-5 21c-1.7 8.2-3.8 18-5 28c-1.2 10-1.5 22-2 32c-.5 10-.8 23.3-1 28M705 516c4.2 1.7 15.8 6.5 25 10c9.2 3.5 20 7.7 30 11c10 3.3 22.2 6.5 30 9c7.8 2.5 11.7 3.2 17 6c5.3 2.8 9.5 6 15 11c5.5 5 13.7 11.2 18 19c4.3 7.8 5.7 17.7 8 28c2.3 10.3 4 24 6 34c2 10 4.3 18 6 26c1.7 8 3.3 18.3 4 22M864 692c-1.3 2-4.5 8-8 12c-3.5 4-7 8.7-13 12c-6 3.3-15.8 5.8-23 8c-7.2 2.2-14.2 3.7-20 5c-5.8 1.3-12.5 2.5-15 3M845 717c.2 5.5 .7 20.8 1 33c.3 12.2 .8 26.5 1 40c.2 13.5 0 34.2 0 41"/>
<path stroke="#888" stroke-width="0.6" opacity="0.45" d="M814.8 615.4c-1.5 3.9-5.4 13.8-9.4 23.2c-3.9 9.3-12 27.3-14.4 32.8M823.2 659.9c-2.2 4.4-9.9 16.4-12.7 26c-2.8 9.7-3.4 26.7-4.1 32.1M840.7 598.4c-1.2 4.6-4 18.7-7 27.3c-3.1 8.7-9.5 20.6-11.4 24.7M819.9 644.4c-2.2 5.7-9.7 25-13.7 34.5c-3.9 9.5-8.4 18.6-10.1 22.4M828.7 664.9c-1.6 5.7-6.7 25.2-9.3 34.3c-2.6 9.1-5.5 17-6.6 20.3M842.2 618.8c-2 4.9-7.7 21.2-11.6 29.5c-3.9 8.2-9.8 16.7-11.8 20.1"/>
<path stroke="#444" stroke-width="0.8" opacity="0.5" d="M808.1 602.3c-1.9 4.5-8.3 18.7-11.3 26.9c-3 8.1-5.4 18.4-6.5 22.1M829.2 595.9c-2.3 4.1-10.4 14.9-13.8 24.4c-3.4 9.6-5.6 27.4-6.8 32.9M842 606.4c-1.3 5.5-5.1 23.3-8.3 33.2c-3.3 10-9.3 22.2-11.2 26.6M837.5 629.8c-2 3.8-9.5 13.7-12.5 22.3c-3 8.7-4.5 24.8-5.4 29.7"/>
<path stroke="#666" stroke-width="0.7" opacity="0.5" d="M840 598.5c-2.1 5.5-10 23.9-12.4 32.5c-2.4 8.7-1.8 16.2-2.2 19.5M812.2 657.9c-2.1 5.9-10.1 24.6-12.6 35.4c-2.6 10.8-2.1 24.5-2.6 29.4M839.4 601.8c-1.6 5.8-6 25.9-9.7 34.9c-3.6 9-10.1 16-12.1 19.2M832.5 590c-1.1 3.7-3.3 14.5-6.6 22.6c-3.2 8.1-10.7 21.8-12.9 26.1M815.5 654.2c-1.2 5-4.9 21.1-7.4 29.7c-2.4 8.7-6.1 18.6-7.4 22.3M813.2 582.4c-1.9 5.7-7.4 24.2-11.4 34.4c-3.9 10.2-10.2 22.3-12.2 26.8"/>
<path stroke="#333" stroke-width="0.9" opacity="0.65" d="M781.5 735c.1 5.8 .2 24.2 .5 35c.2 10.8 .8 19.8 1 30c.2 10.2 0 25.8 0 31M418 650c5.3-.7 21.7-2.8 32-4c10.3-1.2 19.3-2.3 30-3c10.7-.7 22.7-.3 34-1c11.3-.7 23-2 34-3c11-1 21.7-2.2 32-3c10.3-.8 17.2-1.5 30-2c12.8-.5 32-1 47-1c15 0 27.5 .3 43 1c15.5 .7 33.3 2 50 3c16.7 1 41.7 2.5 50 3"/>
<path stroke="#333" stroke-width="0.9" opacity="0.6" d="M800 648c-1.7 2-7.2 5-10 12c-2.8 7-6.3 21.3-7 30c-.7 8.7 2.5 18.3 3 22"/>
<path stroke="#666" stroke-width="0.7" opacity="0.55" d="M427 757.8c.7 2.9 2.7 12 4 17.2c1.3 5.2 2 9.3 4 14c2 4.7 6.7 11.7 8 14"/>
<path stroke="#222" stroke-width="1.2" opacity="0.75" d="M417.5 719c.6 .5 2.2 2.6 3.5 3c1.2 .4 3.3-.4 4-.5"/>
<path stroke="#444" stroke-width="0.9" opacity="0.65" d="M329 720.5c3.8 1.8 14.8 6.9 23 10.5c8.2 3.6 17.7 7.8 26 11c8.3 3.2 16.2 5.5 24 8c7.8 2.5 19.2 5.8 23 7"/>
<path stroke="#333" stroke-width="1.4" opacity="0.7" d="M425 757.8c-.7 2-3.2 8.3-4 12.2c-.8 3.9-1.7 6.5-1 11c.7 4.5 4.8 10.3 5 16c.2 5.7-2.8 12.3-4 18c-1.2 5.7-2.5 13.3-3 16"/>
<path stroke="#666" stroke-width="0.8" opacity="0.55" d="M431 805c-.2 2.2-.7 8.7-1 13c-.3 4.3-.8 10.8-1 13"/>
<path stroke="#777" stroke-width="0.8" opacity="0.5" d="M423 705c2.8-2.2 9.8-8.7 17-13c7.2-4.3 16.8-9.7 26-13c9.2-3.3 18.5-5.1 29-7c10.5-1.9 28.3-3.8 34-4.5"/>
<path stroke="#777" stroke-width="0.7" opacity="0.5" d="M431 746c2.3 .4 9.4 1.8 14 2.5c4.6 .7 11.2 1.2 13.5 1.5"/>
<path stroke="#bbb" stroke-width="0.6" opacity="0.5" d="M381.3 671.3c2.1 5.5 7.7 22.8 12.6 33.3c4.9 10.4 13.9 24.3 16.7 29.1M381 674c2.2 4.8 9 18.2 12.8 29c3.8 10.7 8.5 29.4 10.1 35.3M403.7 659.3c1.9 5.6 6.2 22.9 11 33.7c4.7 10.8 14.5 25.9 17.4 31M380.8 656.5c2.1 4.5 7.8 17.2 12.6 27.1c4.8 9.8 13.5 26.7 16.2 32M716.0 677.5q16.1 -0.5 32.2 -1.8M493.1 701.8q10.7 0.2 21.3 -0.1M746.4 687.6q6.9 -0.7 13.9 -0.9M490.0 694.5q16.5 -0.4 33.0 -0.4M534.4 704.3q7.9 -0.1 15.8 -0.6M720.2 657.6q17.7 -0.4 35.3 -1.8M657.1 670.9q25.0 -1.4 49.9 -2.9M680.0 650.4q23.9 -1.9 47.7 -2.9M515.1 670.4q23.4 -0.9 46.8 -1.1M435.1 649.4q22.6 0.8 45.1 1.0M640.9 633.5q15.8 -1.4 31.7 -2.0M546.1 659.6q12.3 -0.8 24.7 -1.4M601.6 685.0q11.3 -1.1 22.7 -1.6M766.4 680.0q15.3 -1.2 30.6 -1.4M662.2 683.5q8.3 0.1 16.7 -0.9M724.8 649.7q17.9 -1.2 35.8 -2.0M627.9 651.9q21.7 -1.4 43.4 -2.3M583.8 677.2q15.2 -0.5 30.3 -1.7M675.1 693.6q18.5 -1.3 37.1 -1.5M563.1 704.4q7.4 0.0 14.8 -0.8M479.2 677.9q20.6 -1.0 41.2 -1.1M710.1 634.9q23.0 -0.7 46.0 -2.3M625.4 635.9q17.3 -0.3 34.5 -1.8M768.8 693.3q14.1 -1.4 28.2 -1.8M514.7 652.6q20.9 -0.4 41.8 -1.0M667.0 684.0q23.8 -0.2 47.6 -1.5M449.2 688.1q22.5 0.7 44.9 0.9M548.9 695.2q19.4 -1.3 38.9 -2.5M527.0 678.1q8.2 -0.7 16.3 -0.7M757.2 651.6q11.1 -0.9 22.1 -1.0M588.7 674.4q24.8 -1.4 49.6 -1.7M528.1 679.7q11.1 -1.1 22.2 -1.0M753.7 676.3q21.4 -0.5 42.8 -1.4M588.1 705.0q12.4 -0.2 24.9 -1.6M643.1 650.1q22.2 -0.7 44.3 -1.6M749.2 640.5q9.2 -0.4 18.5 -1.2M474.1 655.6q17.3 0.2 34.7 -0.0M571.5 680.4q15.5 -0.9 30.9 -1.0M540.7 694.9q22.3 -0.7 44.7 -2.4M533.1 660.9q17.4 -1.0 34.7 -1.8M592.3 644.5q12.5 -0.5 25.1 -1.0M768.5 657.8q6.7 -0.9 13.3 -0.8M651.8 645.7q16.5 -1.2 33.0 -2.2"/>
<path stroke="#aaa" stroke-width="0.6" opacity="0.5" d="M379.3 670.4c2 4.5 7.1 15.6 12 26.8c4.8 11.3 14.2 34 17 40.8M389.9 669.3c3 5.2 11.9 21.8 18 31.3c6 9.5 15.2 21.4 18.2 25.7M383.6 673.2c1.8 4.6 6.7 17.2 10.5 27.7c3.7 10.4 10.1 29.3 12.1 35.2M747.3 690.6q17.3 -0.8 34.6 -1.8M639.0 693.0q22.7 -1.6 45.4 -2.9M735.3 698.3q19.1 -1.1 38.3 -1.8M649.6 684.5q7.4 -0.7 14.8 -0.8M764.9 661.8q16.1 -0.6 32.1 -1.1M465.1 648.5q15.0 0.5 30.1 0.8M759.6 698.7q11.9 -0.9 23.8 -1.6M738.6 663.5q6.7 -0.2 13.3 -0.6M585.6 648.4q16.2 -0.3 32.4 -1.5M684.3 660.2q7.4 -0.2 14.9 -1.0M529.3 659.3q9.2 -1.0 18.5 -1.1M716.4 645.8q19.7 -1.9 39.5 -2.7M588.4 641.3q7.7 -0.2 15.5 -1.0M579.8 697.9q9.6 -1.3 19.1 -1.3M482.5 651.4q13.0 -0.5 26.0 -0.1M740.2 686.9q18.6 -0.6 37.2 -1.8M662.2 655.1q9.5 -0.1 19.1 -0.7M734.4 670.8q10.2 -1.2 20.4 -1.2M462.7 681.0q18.2 -0.4 36.4 -0.6M750.6 689.4q8.0 0.1 16.0 -0.7M671.0 639.7q9.4 -1.1 18.7 -1.3M656.4 639.8q21.2 -1.1 42.5 -2.9M535.8 641.4q19.5 -1.2 39.0 -1.7M544.5 690.2q12.6 -0.4 25.1 -1.2M632.8 641.6q22.3 -0.9 44.7 -2.9M461.9 648.6q14.9 -0.2 29.9 -0.7M439.7 672.6q23.2 -0.3 46.4 -1.1M637.6 670.3q19.8 -0.3 39.6 -1.4M520.9 688.0q5.8 -0.6 11.5 -0.6M425.8 659.8q15.5 0.3 31.0 -0.5M447.2 689.7q5.6 0.2 11.1 -0.3M631.5 655.6q15.7 -0.7 31.5 -2.1M494.5 702.3q15.6 0.1 31.3 -0.4M528.0 686.8q12.3 -0.7 24.5 -1.2M611.9 661.6q22.4 -0.5 44.9 -2.1"/>
<path stroke="#555" stroke-width="0.7" opacity="0.5" d="M480 645.6c5.7-.1 22.7-.1 34-.7c11.3-.7 23-2.2 34-3.2c11-1.1 21.7-2 32-2.9c10.3-.9 17.2-2 30-2.5c12.8-.5 32-.4 47-.4c15 .1 27.5 .1 43 .7c15.5 .6 33.3 2 50 2.9c16.7 1 41.7 2.4 50 2.9"/>
<path stroke="#555" stroke-width="0.8" opacity="0.55" d="M424 699c7.7 .7 31.7 3 46 4c14.3 1 27 1.5 40 2c13 .5 23 .8 38 1c15 .2 33.8 .3 52 0c18.2-.3 40.3-1.5 57-2c16.7-.5 29.2-.5 43-1c13.8-.5 26.5-1.3 40-2c13.5-.7 34.2-1.7 41-2M435 801c7.5-.2 30.8-.5 45-1c14.2-.5 28.7-1.5 40-2c11.3-.5 14.7-.3 28-1c13.3-.7 33.8-1.8 52-3c18.2-1.2 40.3-2.7 57-4c16.7-1.3 29.2-2.7 43-4c13.8-1.3 27-2.8 40-4c13-1.2 31.7-2.5 38-3"/>
<path stroke="#888" stroke-width="0.5" opacity="0.4" d="M655.9 637.5q22.4 -1.5 44.7 -2.5M594.7 645.8q15.3 -0.5 30.6 -1.8M767.1 670.7q14.3 -0.7 28.5 -2.0M432.7 681.7q21.9 0.6 43.9 0.1M566.9 662.0q18.7 -1.2 37.4 -1.3M614.2 668.8q12.1 -0.8 24.1 -1.2M745.3 660.3q8.5 -0.9 17.0 -0.8M656.4 692.3q24.5 -1.7 49.0 -2.2M460.6 662.3q14.9 0.4 29.7 0.6M702.2 666.4q22.6 -1.4 45.1 -2.1M759.2 699.5q18.9 -0.9 37.8 -2.1M670.1 644.8q15.7 -0.7 31.4 -0.9M550.7 646.0q18.9 -0.1 37.7 -1.2M728.7 666.8q10.8 -1.1 21.6 -1.4M634.1 700.0q10.7 -0.6 21.4 -0.8M691.1 652.6q13.8 -0.5 27.6 -1.5M708.4 648.1q9.9 -0.1 19.7 -0.8M426.6 670.3q21.6 0.6 43.1 0.5M596.4 701.5q8.2 -0.2 16.5 -0.9M719.6 696.5q16.8 -0.6 33.5 -1.6M699.9 664.7q14.7 -0.5 29.5 -1.9M619.1 641.9q9.3 -0.0 18.7 -1.1M464.2 682.3q22.4 -0.5 44.7 -0.7M566.1 669.6q5.5 -0.7 10.9 -0.6M454.0 675.8q18.1 0.8 36.2 0.6M546.2 705.6q5.8 -0.2 11.7 -0.8M737.7 683.9q14.6 -0.8 29.2 -1.3M700.9 658.4q22.7 -0.6 45.4 -1.8M537.5 677.1q20.5 -1.3 41.0 -2.8M582.6 668.8q17.7 -0.9 35.4 -2.3M604.1 678.6q18.6 -0.0 37.2 -1.2M765.8 638.3q15.6 -1.0 31.2 -2.0M522.2 666.7q7.9 -0.8 15.7 -1.0M683.5 691.9q11.0 -1.1 22.0 -1.4M603.8 697.0q8.2 0.1 16.4 -0.5M631.9 637.0q15.5 -1.2 30.9 -1.7M554.5 676.3q11.3 0.0 22.7 -1.1M594.4 688.7q23.8 -0.3 47.7 -1.7M628.2 674.7q21.7 -1.5 43.4 -3.0M599.9 689.5q20.7 -0.7 41.4 -1.7M472.8 676.7q20.0 -0.0 39.9 0.8M447.8 656.9q20.2 -0.1 40.5 0.2M506.1 689.8q12.2 -0.5 24.5 0.1M693.9 638.4q13.0 -0.6 26.0 -1.7M666.4 650.6q10.8 0.1 21.6 -0.7M628.9 644.6q8.4 -0.4 16.8 -0.9M663.2 687.5q16.7 -1.1 33.5 -1.6M689.5 651.6q15.1 -1.0 30.2 -1.5M570.4 653.8q12.8 -1.2 25.5 -1.7M580.2 667.1q24.7 -0.9 49.5 -1.7M499.5 665.6q18.5 0.3 37.0 0.9M475.2 669.9q11.1 -0.4 22.3 -0.2M663.7 675.0q6.1 -0.1 12.2 -0.7M474.4 652.8q11.0 -0.5 22.0 0.2M727.0 661.2q5.5 -0.5 10.9 -0.5M485.4 686.9q9.7 -0.5 19.4 -0.5M726.7 694.7q22.4 -0.2 44.7 -1.4M453.1 697.7q14.8 0.1 29.7 -0.9"/>
<path stroke="#777" stroke-width="0.5" opacity="0.4" d="M746.0 653.6q19.0 -1.5 38.1 -2.5M504.1 675.0q11.6 0.5 23.2 0.4M768.7 646.7q14.1 -1.2 28.3 -1.7M438.7 685.4q24.2 0.9 48.5 0.8M504.8 673.1q16.4 -0.1 32.7 -0.3M443.8 693.0q5.0 0.5 10.0 0.0M650.6 664.8q23.4 -1.9 46.9 -3.0M506.5 662.7q22.9 -0.2 45.7 0.5M559.5 640.6q19.3 -1.3 38.7 -2.0M469.4 646.0q12.8 0.2 25.7 0.1M463.1 665.8q5.6 0.2 11.3 0.3M637.9 671.8q9.2 -1.0 18.5 -1.2M450.4 695.2q10.4 0.3 20.9 0.2M480.8 663.5q21.7 0.1 43.4 0.9M535.9 673.7q21.7 -0.9 43.4 -1.4M665.5 664.4q17.3 -1.6 34.6 -2.3M621.4 683.9q11.7 -0.2 23.4 -1.1M449.4 669.9q13.7 -0.6 27.4 -0.3M529.3 685.6q13.5 -0.5 27.1 -1.1M722.8 670.9q19.3 -1.0 38.6 -2.6M689.3 681.6q15.1 -0.9 30.2 -1.8M715.7 646.5q8.9 -1.0 17.8 -1.2M549.2 682.5q10.0 -0.5 20.0 -1.1M680.4 677.5q7.4 -0.2 14.8 -0.7M632.7 637.0q24.6 -1.5 49.1 -1.8M743.4 676.4q13.0 -0.4 26.0 -1.1M683.9 701.2q8.7 -0.4 17.3 -0.8M710.3 640.6q13.5 -1.3 27.0 -1.8M741.3 657.4q18.6 -1.6 37.2 -2.4M491.1 645.8q11.0 0.0 22.1 0.1M612.6 675.6q16.9 -1.3 33.9 -2.3M769.1 679.3q9.3 -0.9 18.5 -0.6M666.1 656.8q7.7 -0.0 15.5 -0.5M557.4 689.7q19.1 -1.5 38.1 -1.9M674.0 699.1q8.1 -0.3 16.1 -1.0M597.7 678.8q7.7 -0.7 15.4 -0.9M694.2 670.5q6.4 -0.0 12.8 -0.4M588.1 655.9q12.0 -0.1 24.1 -0.9M434.4 669.5q23.0 0.8 46.1 1.3M635.9 691.7q17.5 -0.2 35.0 -1.3M488.9 676.4q23.2 0.2 46.4 0.4M683.3 690.1q5.8 -0.2 11.6 -0.8M615.2 704.8q6.1 0.0 12.1 -0.7M760.0 640.9q17.2 -1.5 34.5 -2.1M503.9 657.9q21.4 0.2 42.9 0.7M737.0 685.8q18.7 -1.3 37.3 -2.1M539.2 695.7q10.6 -0.2 21.2 -1.4M456.9 663.3q10.8 -0.1 21.6 -0.4M603.6 690.9q14.6 0.1 29.2 -1.0M595.1 658.0q5.1 0.4 10.2 -0.4M715.9 670.9q16.6 -0.6 33.1 -1.7M636.5 654.1q11.2 -0.7 22.5 -0.9M522.1 652.6q23.0 -1.7 46.1 -3.0M640.3 676.5q5.3 0.2 10.5 -0.3"/>
<path stroke="#888" stroke-width="0.7" opacity="0.5" d="M594.6 639.9q20.0 -0.7 40.0 -1.2M601.1 641.3q25.1 -0.9 50.3 -1.5M637.6 647.7q15.7 -1.1 31.3 -2.2M715.2 643.6q15.8 -1.1 31.6 -2.2M682.9 644.4q27.0 -0.8 54.0 -2.5M714.8 641.2q12.5 -1.0 25.1 -2.4M680.4 642.8q23.5 -1.4 47.0 -1.4M659.0 642.4q38.6 -0.8 77.2 -1.7M630.4 635.7q18.7 -0.9 37.4 -1.6"/>
<path stroke="#c4c4c4" stroke-width="0.7" opacity="0.6" d="M792.0 609.7q4.3 -1.7 8.6 -3.1M715.0 753.7q15.7 -1.8 31.3 -3.9M402.9 722.1q1.2 -9.4 2.5 -19.5M488.5 531.8q8.5 -1.7 16.9 -2.9M691.3 785.0q8.4 -2.4 16.7 -5.0M592.1 752.1q4.0 0.2 8.0 0.8M563.7 740.1q7.7 -0.6 15.4 -1.8M455.3 796.8q14.2 -5.8 28.4 -10.6M553.7 620.6q13.4 -1.9 26.8 -3.0M442.0 689.2q14.4 -4.7 28.8 -10.0M614.5 741.1q12.9 1.6 25.9 2.9M790.2 562.5q4.8 -1.7 9.6 -2.5M457.9 824.0q14.5 -5.0 29.0 -9.1M398.8 641.1q1.2 -12.0 2.5 -23.5M376.2 733.4q3.3 -13.5 6.7 -27.4M800.2 582.8q1.4 -6.6 2.8 -12.4M337.9 742.8q0.0 -5.6 0.0 -12.0M488.8 576.0q14.9 -0.4 29.9 -1.4M383.1 674.8q2.1 -6.8 4.2 -13.8M373.6 721.7q0.7 -9.4 1.3 -18.0M370.0 709.6q2.5 -8.8 4.9 -17.4M344.9 674.9q2.4 -15.2 4.8 -30.4M531.9 734.5q13.8 -0.9 27.5 -1.4M423.8 629.8q6.2 -0.7 12.4 -2.0M514.7 768.3q9.1 -2.1 18.1 -4.5M711.7 682.4q15.6 -1.4 31.1 -3.1M704.9 762.5q12.0 -2.2 23.9 -3.6M781.7 722.4q11.8 -3.2 23.6 -5.7M731.9 694.9q8.4 -1.0 16.9 -1.4M513.4 744.5q10.6 -0.7 21.3 -0.5M752.2 709.8q5.1 -0.4 10.2 -1.4M740.9 532.9q10.0 -0.6 19.9 -1.9M724.8 727.9q16.7 -2.5 33.5 -4.9M482.0 664.3q9.7 -1.8 19.4 -4.3M611.4 657.4q9.5 -0.7 19.0 -2.0M750.9 808.1q5.2 -2.3 10.4 -4.3M414.5 592.0q3.5 -16.0 7.0 -32.6M389.0 671.2q1.7 -5.1 3.4 -9.5M490.0 683.1q7.9 -1.8 15.8 -3.8M383.4 599.1q5.1 -16.5 10.2 -32.4M424.7 701.8q13.3 -4.1 26.6 -8.1M834.2 647.4q0.5 -5.3 1.1 -10.9M451.8 664.8q13.0 -2.5 26.0 -5.7M370.2 633.3q4.7 -15.1 9.3 -30.7M836.1 616.7q1.8 -13.8 3.7 -26.7M550.9 651.6q11.8 -2.0 23.6 -4.3M651.1 632.0q5.1 0.6 10.3 0.3M713.5 566.6q4.7 -1.1 9.5 -2.8M565.6 802.9q6.1 -0.8 12.2 -2.0M380.8 724.9q0.7 -8.4 1.3 -15.9M726.6 743.5q6.9 -1.3 13.8 -2.6M447.4 814.7q12.2 -4.3 24.3 -8.5M535.8 826.4q7.0 -0.5 14.0 -1.0M746.1 674.2q5.6 -1.8 11.1 -4.4M475.8 728.8q15.0 -2.0 30.1 -3.6M501.5 746.0q10.8 -1.0 21.6 -2.1M581.0 639.7q16.3 1.5 32.7 2.3M489.7 589.2q13.4 -1.3 26.8 -1.8M395.9 709.2q3.9 -11.3 7.9 -22.0M631.9 681.0q5.6 0.1 11.2 -0.6M568.1 617.3q17.0 0.1 34.0 0.6M599.3 669.7q9.4 -0.4 18.9 -0.9M744.1 748.6q11.4 -4.7 22.8 -8.6M614.0 797.1q4.5 -0.1 9.0 0.6M674.4 616.6q11.3 -2.5 22.6 -5.6M699.0 606.6q16.1 -1.9 32.1 -3.6M565.4 731.9q13.5 -0.9 27.0 -1.8M516.3 561.0q9.5 -2.3 19.0 -4.5M611.1 816.4q13.6 -0.2 27.2 -0.6M771.0 693.5q10.5 -4.3 20.9 -8.0M447.3 766.6q13.5 -3.8 27.0 -7.4M637.2 817.4q13.5 -1.0 26.9 -2.3M704.9 798.9q13.9 -1.5 27.9 -2.2M602.9 670.2q15.1 1.0 30.2 2.9M557.3 800.0q6.6 -0.1 13.2 -0.3M737.5 718.8q6.0 -0.5 12.0 -1.6M493.5 603.3q15.2 -4.7 30.4 -10.0M604.7 780.9q6.6 -0.4 13.1 -1.8M636.4 678.6q12.2 -1.6 24.3 -3.1M675.6 623.7q8.1 -2.3 16.2 -4.1M519.5 764.5q14.7 -4.0 29.4 -7.3M801.8 633.8q0.7 -6.9 1.4 -13.7M599.0 760.1q7.9 0.3 15.8 0.6M480.3 629.6q15.4 -2.5 30.7 -4.4M691.3 553.2q7.4 -0.9 14.8 -2.6M753.0 828.5q4.2 -1.3 8.4 -2.0M441.7 656.0q8.5 -2.9 17.0 -5.0M656.2 770.6q4.6 -1.0 9.2 -1.8M614.5 741.1q4.0 -0.7 8.0 -0.6M704.2 597.4q14.2 -0.2 28.4 -1.2M439.6 564.7q4.0 -1.8 7.9 -3.4M446.7 756.5q5.2 -1.7 10.4 -3.9M810.2 608.2q2.4 -10.1 4.8 -20.9M725.7 799.9q13.1 -1.2 26.2 -2.5M532.7 598.3q15.7 -2.8 31.4 -5.6M548.1 789.1q4.1 -0.1 8.2 0.4M542.3 662.1q15.9 -1.0 31.9 -1.2M478.9 624.0q14.5 -3.8 28.9 -8.4M794.2 599.4q13.5 -4.0 27.0 -8.9M698.8 664.3q8.1 -2.5 16.2 -5.0M508.2 560.0q11.8 -1.2 23.6 -1.9M477.4 531.5q12.8 -0.8 25.6 -2.3M418.1 641.8q4.9 -15.7 9.9 -32.4M639.1 719.5q15.0 -1.5 30.0 -3.8M645.7 690.9q16.6 0.6 33.1 1.3M529.7 647.8q15.0 0.7 30.1 0.8M524.2 679.6q10.2 -0.2 20.4 -0.6M735.2 726.8q7.1 -2.1 14.3 -4.3M758.9 716.4q10.0 -1.2 19.9 -2.6M399.8 567.5q4.1 -14.2 8.3 -29.2M437.8 757.4q5.5 -1.2 11.0 -2.8M382.9 613.8q2.0 -5.3 4.0 -11.0M676.2 634.3q15.2 -3.5 30.3 -7.7M441.4 669.0q7.4 -1.4 14.8 -1.7M468.7 628.9q7.1 -1.8 14.2 -3.3M570.2 709.0q10.2 -0.8 20.4 -1.7M559.9 610.9q8.2 0.2 16.4 1.1M502.6 781.1q15.5 -2.0 31.0 -3.4M451.3 673.7q5.2 -2.0 10.4 -3.8M758.8 547.6q7.0 -2.2 13.9 -4.9M460.1 599.5q7.9 -1.7 15.8 -3.5M640.8 740.8q7.6 -0.3 15.3 -0.1M587.0 806.5q10.8 0.5 21.5 0.1M674.5 581.3q7.5 -0.8 15.0 -1.9M584.3 682.6q4.1 -0.0 8.2 0.8M565.8 767.8q14.3 0.5 28.6 1.8M756.4 733.0q15.4 -5.9 30.9 -11.5"/>
<path stroke="#aaa" stroke-width="0.5" opacity="0.5" d="M481.6 730.5q13.2 -2.4 26.4 -5.4M698.3 691.7q4.1 -1.2 8.2 -2.6M396.3 701.2q0.9 -5.8 1.7 -11.9M508.3 679.8q13.8 -1.6 27.6 -2.5M421.8 582.3q9.5 -3.4 19.1 -7.0M648.0 825.2q16.5 0.7 33.0 1.0M612.5 656.3q8.4 -1.4 16.8 -2.6M632.0 735.3q16.4 -2.5 32.9 -4.7M597.9 772.3q6.3 0.3 12.6 1.2M613.3 791.3q16.2 -2.0 32.4 -4.1M737.5 649.5q9.2 -2.1 18.5 -4.8M560.5 609.2q4.7 -0.0 9.5 -1.0M677.4 569.6q14.9 -1.1 29.9 -2.4M724.9 634.6q13.9 -1.4 27.8 -2.4M477.6 536.7q10.5 -0.6 21.0 -1.6M410.7 657.6q2.2 -12.6 4.4 -25.3M454.4 653.4q12.1 -3.3 24.2 -6.2M490.7 723.5q14.7 -1.0 29.5 -2.9M496.3 607.7q12.3 -0.7 24.5 -1.2M377.4 717.9q2.7 -16.9 5.4 -33.0M588.2 612.4q10.2 -0.1 20.4 0.7M819.4 663.2q3.5 -10.9 6.9 -22.8M474.4 810.7q6.0 -1.4 12.0 -2.3M763.6 617.4q13.7 -4.9 27.5 -9.4M749.5 678.1q10.9 -2.2 21.7 -3.5M579.1 799.9q11.5 1.1 22.9 1.3M563.3 825.5q14.4 -0.5 28.8 -0.3M628.7 650.6q15.4 0.6 30.8 1.2M485.8 812.0q4.7 -1.6 9.5 -2.2M776.0 674.8q14.3 -4.4 28.6 -9.5M602.7 611.4q16.3 0.4 32.6 1.0M833.0 637.6q0.3 -5.3 0.6 -10.2M501.7 793.5q16.1 -1.7 32.1 -3.2M537.2 790.4q16.3 -3.8 32.7 -7.0M681.5 652.5q16.0 -3.7 32.0 -8.3M764.0 769.2q9.7 -4.7 19.4 -8.6M631.1 824.5q5.3 0.2 10.6 0.6M378.1 618.7q1.8 -10.5 3.6 -21.5M413.7 663.7q0.7 -6.1 1.4 -12.0M594.8 710.5q13.1 -1.7 26.2 -3.9M820.5 629.1q0.3 -5.8 0.7 -11.2M853.0 701.3q1.9 -11.9 3.9 -23.3M447.6 589.4q4.4 -0.9 8.8 -2.1M444.1 764.1q10.3 -4.2 20.5 -8.8M449.6 659.0q14.9 -3.1 29.8 -5.3M552.9 611.7q11.8 -2.7 23.6 -5.1M602.8 789.2q13.7 -0.0 27.4 -1.0M624.9 782.5q13.9 -2.1 27.7 -3.4M570.9 603.0q13.6 -1.9 27.1 -4.0M489.5 779.7q15.1 -5.0 30.1 -10.1M540.3 675.9q7.1 -0.7 14.1 -2.3M522.8 606.5q8.7 -2.1 17.4 -4.6M832.9 669.7q1.6 -5.0 3.1 -10.3M766.8 690.9q12.3 -4.4 24.5 -8.1M527.7 722.2q14.4 -2.9 28.8 -6.1M520.0 652.7q12.8 0.2 25.6 -0.3M704.8 654.0q12.9 -4.1 25.8 -7.8M715.8 745.5q5.7 -0.7 11.5 -0.8M737.2 634.4q9.7 -2.2 19.4 -5.0M515.2 735.0q10.9 -1.3 21.8 -2.4M730.3 544.6q7.8 -0.9 15.7 -2.2M477.4 530.9q14.6 -1.0 29.2 -2.5M478.0 601.1q7.8 -2.5 15.5 -4.4M844.4 662.4q4.0 -15.0 7.9 -30.4M798.8 570.7q4.6 -1.8 9.2 -3.7M391.4 723.4q1.7 -5.1 3.4 -9.2M494.5 607.0q5.0 -2.0 10.0 -3.3M411.6 582.9q2.8 -7.7 5.6 -15.6M538.1 649.2q16.6 -3.0 33.2 -5.5M715.2 552.4q7.0 -0.7 13.9 -1.6M756.5 630.5q4.3 -0.7 8.6 -1.2M709.4 597.4q10.3 -0.5 20.7 -1.5M836.7 656.2q1.1 -4.4 2.2 -8.2M724.8 769.3q10.7 -1.2 21.5 -1.9M805.1 633.2q4.0 -12.7 8.1 -25.8M550.7 677.9q6.3 -1.3 12.6 -2.4M342.9 609.3q0.1 -7.8 0.3 -15.8M469.2 643.6q5.1 -1.2 10.2 -2.1M342.3 695.4q0.1 -5.0 0.2 -9.7M670.7 617.8q14.8 -1.6 29.7 -2.9M621.2 740.0q4.2 0.3 8.4 -0.3M591.1 736.4q13.7 0.8 27.4 0.9M509.0 744.2q8.3 -1.7 16.6 -3.3M741.6 621.9q7.5 -1.9 14.9 -3.2M810.8 597.5q1.0 -5.5 2.0 -11.3M462.9 642.0q11.4 -3.6 22.9 -7.0M817.1 612.7q1.9 -5.6 3.8 -10.5M773.4 640.2q5.1 -1.8 10.2 -4.1M446.7 545.3q15.3 -1.5 30.6 -3.5M776.8 589.5q14.0 -5.5 28.0 -11.5M583.4 674.2q4.9 0.5 9.9 1.1M641.2 585.2q10.9 -1.6 21.8 -2.9M614.3 728.0q11.0 -0.1 21.9 -0.6M719.2 748.9q10.0 -2.6 19.9 -4.3M470.4 730.7q13.6 -2.1 27.2 -3.7M411.8 658.8q0.6 -5.3 1.1 -10.4M690.4 808.3q11.6 -0.9 23.2 -0.9M473.2 721.0q16.9 -1.9 33.7 -3.1M573.4 704.8q6.8 -0.2 13.7 -0.4M552.1 744.2q4.2 -0.6 8.4 -0.7M461.6 598.5q9.6 -1.7 19.2 -2.5M832.1 676.5q1.2 -6.3 2.3 -12.7M599.8 759.5q5.5 0.2 10.9 0.9M704.4 582.8q4.6 -0.4 9.1 -1.6M383.7 594.2q1.5 -13.3 3.0 -26.7M765.7 806.4q14.7 -4.9 29.3 -9.2M333.0 685.4q2.5 -10.4 4.9 -20.4M483.3 699.6q8.8 -0.4 17.6 -1.7M563.4 777.7q15.6 -1.4 31.1 -2.6M518.8 571.0q15.0 -2.5 30.0 -4.1M653.0 573.5q9.2 -1.8 18.4 -3.8M817.1 615.8q2.4 -7.6 4.8 -14.4M362.0 595.3q1.1 -6.1 2.2 -11.6M534.1 571.2q6.4 -0.4 12.7 0.1M500.6 783.8q12.5 -0.5 25.0 -1.3M538.5 822.2q12.3 -2.8 24.6 -5.9M825.4 583.5q3.9 -14.5 7.9 -29.6M760.4 626.3q11.3 -5.3 22.6 -9.8M748.0 744.9q6.3 -2.4 12.6 -5.2M500.6 672.1q12.8 -3.4 25.7 -7.0M455.4 824.1q7.3 -1.4 14.6 -2.9M468.0 751.6q7.9 -2.8 15.9 -5.5M462.1 710.2q11.5 -4.8 23.0 -8.7M476.7 532.0q12.5 -2.5 25.0 -4.2M594.1 646.4q6.9 -0.5 13.7 -1.4M360.5 616.1q1.2 -6.7 2.5 -12.6"/>
<path stroke="#bbb" stroke-width="0.6" opacity="0.55" d="M451.2 729.5q14.1 -5.0 28.3 -10.6M811.6 599.9q2.0 -7.9 4.1 -15.8M549.3 648.2q14.1 -1.9 28.2 -4.1M739.7 610.5q8.2 -3.6 16.4 -6.2M459.0 742.8q8.0 -2.7 16.0 -6.0M454.8 574.7q10.9 -4.0 21.9 -7.2M396.8 601.5q1.3 -3.6 2.7 -8.0M642.5 653.4q8.2 -0.8 16.5 -0.6M370.1 619.2q3.0 -15.8 5.9 -31.3M824.8 588.1q5.7 -15.4 11.4 -31.7M739.2 732.1q13.9 -2.2 27.7 -5.0M482.0 706.7q8.6 -2.8 17.2 -6.0M416.5 604.8q2.4 -6.5 4.8 -13.3M507.6 821.8q4.9 -0.9 9.8 -1.2M526.4 688.1q13.6 -1.4 27.2 -3.0M737.0 685.3q15.7 -5.8 31.5 -11.7M349.4 702.0q0.4 -7.5 0.8 -14.9M480.9 592.9q11.1 -4.1 22.2 -8.0M708.6 663.0q11.6 -2.7 23.1 -4.5M704.8 717.3q4.7 -1.1 9.3 -2.4M664.2 690.6q4.4 -1.2 8.7 -2.2M773.3 758.4q6.5 -2.5 13.0 -4.5M692.8 751.8q16.2 -4.2 32.4 -9.1M439.4 622.6q15.3 -4.0 30.6 -7.9M643.3 623.7q7.1 -0.7 14.2 -2.0M401.7 710.7q5.9 -15.1 11.9 -29.3M413.7 594.6q2.4 -13.7 4.8 -26.9M630.0 827.5q14.3 -0.1 28.7 -1.0M504.5 646.0q10.6 -0.7 21.1 -1.5M728.6 677.9q9.6 -2.2 19.2 -3.7M630.5 709.2q8.5 -0.2 16.9 -1.2M419.4 732.6q1.1 -7.2 2.2 -15.0M613.5 583.8q8.0 0.1 16.0 0.5M624.5 653.1q15.6 -0.9 31.3 -0.9M368.7 657.4q1.0 -6.1 2.1 -11.5M709.6 795.6q11.6 -2.8 23.2 -4.9M367.9 643.6q0.7 -5.3 1.4 -11.4M528.2 757.5q7.9 0.4 15.9 0.2M434.5 671.9q6.4 -2.5 12.8 -5.3M584.1 762.6q13.8 -1.3 27.6 -2.3M723.2 546.4q11.2 -0.7 22.3 -2.2M654.0 580.5q8.2 -1.7 16.4 -3.7M777.8 587.1q13.3 -5.2 26.7 -10.2M576.6 675.6q13.4 -0.7 26.8 -1.8M619.4 675.8q10.5 -0.7 21.0 -2.1M440.4 682.7q9.3 -2.5 18.5 -4.6M432.3 805.8q5.3 -1.7 10.5 -2.7M361.4 721.0q1.6 -12.6 3.2 -24.9M710.5 698.0q7.4 -0.6 14.8 -2.2M361.8 654.5q2.6 -11.0 5.2 -22.1M500.8 756.4q6.6 -1.9 13.2 -2.8M472.3 737.6q11.7 -0.3 23.4 -1.5M718.5 608.2q10.4 -2.5 20.8 -4.6M357.5 619.4q1.6 -5.4 3.2 -11.2M418.1 800.4q1.8 -5.5 3.7 -11.1M630.0 598.7q7.2 0.3 14.5 0.1M419.1 589.0q2.2 -13.8 4.5 -27.1M730.1 607.7q10.4 -3.2 20.8 -6.3M669.2 649.7q14.0 -2.4 28.0 -4.3M394.2 690.4q1.5 -3.8 2.9 -8.3M580.7 681.9q8.4 -0.0 16.9 -0.3M442.7 667.1q10.6 -3.2 21.3 -7.3M521.7 565.1q9.9 -1.6 19.7 -3.9M521.9 744.8q12.8 0.1 25.5 0.1M669.3 700.0q11.9 0.3 23.7 0.3M592.6 710.5q7.6 -1.0 15.2 -1.4M396.4 660.7q3.0 -12.9 6.1 -25.5M479.1 754.2q4.1 -1.0 8.2 -1.6M593.3 784.0q6.3 0.1 12.6 0.5M743.1 668.0q8.3 -3.1 16.6 -6.7M759.8 690.0q13.1 -5.2 26.3 -9.8M443.8 723.5q6.8 -2.2 13.7 -3.7M619.8 800.4q12.0 -1.8 24.0 -4.0M479.8 821.1q11.2 -1.7 22.4 -2.8M851.6 636.8q1.7 -13.5 3.3 -26.1M737.0 688.6q15.8 -5.3 31.6 -10.7M399.3 709.0q3.0 -7.9 6.1 -16.0M781.4 674.3q8.7 -3.5 17.4 -6.3M447.3 684.8q6.3 -0.8 12.7 -1.4M700.4 547.4q14.1 -4.1 28.1 -8.1M521.8 771.8q7.5 -1.4 14.9 -1.9M562.7 804.3q11.4 -1.2 22.9 -2.3M420.7 730.1q11.2 -4.4 22.5 -8.1M651.3 828.6q5.7 -0.3 11.3 -0.9M732.8 794.8q9.2 -2.7 18.3 -4.6M538.8 825.3q11.4 -0.1 22.7 0.3M561.4 772.4q4.5 -0.1 9.0 0.2M791.7 653.3q15.3 -6.8 30.5 -13.1M710.3 539.1q16.5 -3.5 33.1 -7.2M745.9 750.6q8.4 -1.1 16.7 -1.9M571.4 780.3q6.6 0.1 13.3 -0.5M626.1 787.7q12.6 1.0 25.3 2.2M691.3 705.8q10.2 -3.1 20.5 -5.9M667.5 686.2q12.6 -0.4 25.2 -1.2M702.1 601.3q9.8 -3.3 19.5 -6.4M583.4 752.7q11.7 -1.7 23.5 -3.3M351.2 669.5q1.5 -13.4 3.0 -27.2M459.2 529.2q7.4 -1.7 14.7 -3.8M450.4 760.6q15.5 -1.9 31.0 -4.7M581.0 822.8q4.8 0.1 9.6 -0.7M580.1 779.7q15.4 1.0 30.9 1.0M445.5 702.3q3.9 -0.6 7.9 -1.7M733.8 812.8q16.1 -3.9 32.2 -7.1M660.9 593.2q6.6 -0.7 13.2 -2.1M606.7 723.8q15.7 -1.2 31.4 -3.4M443.6 756.9q16.0 -4.0 31.9 -7.3M747.1 728.0q11.7 -2.2 23.5 -5.0M540.2 579.8q7.7 -1.5 15.5 -2.7M845.2 682.9q1.3 -16.6 2.7 -33.2M703.7 617.7q11.7 -0.6 23.4 -1.0M501.2 646.8q15.2 -3.1 30.5 -5.5M721.0 659.0q9.6 -2.7 19.3 -4.6M362.9 610.0q0.3 -4.1 0.7 -8.4M827.4 606.8q2.6 -15.2 5.3 -31.2M697.7 576.9q9.9 -0.9 19.9 -2.1M479.4 767.3q15.0 -3.6 29.9 -7.9M547.8 703.1q9.2 -0.9 18.5 -1.2M647.6 617.4q8.9 -1.2 17.8 -3.3M748.6 737.1q8.9 -2.2 17.8 -4.4M542.3 795.0q4.6 0.1 9.2 -0.4M738.1 826.8q13.7 -4.1 27.4 -7.5M630.3 715.8q14.6 1.0 29.1 1.0M620.4 785.4q10.3 0.8 20.6 1.9M358.9 640.4q3.8 -12.1 7.7 -23.2M433.2 767.4q7.4 -0.9 14.8 -2.1M549.7 594.9q16.1 0.6 32.3 0.6M591.0 627.5q14.0 -2.1 28.0 -4.3M587.8 755.3q7.4 -0.4 14.8 -1.2M463.3 709.1q5.4 -2.3 10.7 -3.9"/>
<path stroke="#999" stroke-width="0.5" opacity="0.4" d="M373.2 629.4q2.2 -10.5 4.3 -21.7M699.1 662.3q9.5 -1.9 18.9 -3.8M427.7 616.0q6.5 -2.0 13.0 -4.6M694.4 642.8q4.8 -1.0 9.5 -1.2M682.6 751.4q16.5 -3.1 33.1 -5.3M502.7 621.9q15.2 -4.6 30.3 -8.4M620.9 604.6q10.8 -0.0 21.5 0.7M751.0 763.8q7.2 -1.4 14.5 -2.5M340.0 669.1q4.1 -14.4 8.3 -28.2M657.7 814.6q12.2 -1.2 24.4 -2.9M534.1 627.4q4.8 -0.9 9.6 -1.3M498.7 664.8q11.0 -0.3 22.0 -1.1M560.5 635.8q15.3 -1.2 30.6 -2.7M441.2 695.3q14.4 -2.0 28.8 -3.5M579.3 815.1q14.7 -2.2 29.5 -5.2M555.9 636.9q7.8 -1.0 15.5 -2.6M420.6 704.0q13.8 -5.4 27.5 -11.4M484.0 668.7q4.9 -0.9 9.8 -1.3M692.7 654.1q15.9 -0.5 31.8 -0.8M813.1 689.0q0.5 -4.9 0.9 -10.6M805.0 650.6q3.4 -15.0 6.8 -29.7M492.0 602.4q7.0 -0.2 14.0 -0.6M442.0 579.7q7.9 -1.6 15.7 -2.5M672.9 728.7q13.9 -0.1 27.7 0.1M775.0 679.9q12.6 -4.8 25.3 -8.9M647.0 773.3q17.0 0.2 34.0 1.2M590.4 814.9q5.5 0.5 10.9 0.8M704.6 810.5q5.2 -0.3 10.4 -0.9M746.1 684.6q7.8 -2.9 15.5 -6.3M754.9 731.5q9.6 -1.8 19.2 -2.9M730.7 615.6q14.3 -4.6 28.5 -8.7M573.7 704.6q5.3 -0.4 10.7 -1.2M516.5 675.6q14.4 -0.7 28.8 -0.8M583.8 594.7q6.3 -0.6 12.7 -2.2M341.3 733.5q1.6 -7.6 3.1 -15.9M503.5 618.1q4.3 -0.7 8.7 -2.1M395.6 591.7q0.8 -8.1 1.6 -17.0M700.3 607.3q7.3 -2.0 14.7 -3.9M762.0 655.1q13.9 -3.5 27.7 -6.1M628.8 721.5q7.9 0.4 15.8 1.6M714.4 717.6q13.6 -3.1 27.1 -5.3M356.6 655.7q0.9 -15.3 1.7 -30.3M463.0 679.4q9.1 -2.9 18.2 -4.9M389.7 682.6q2.5 -14.1 5.1 -28.5M574.7 711.7q14.4 1.1 28.9 2.1M382.2 600.9q3.3 -16.4 6.6 -32.6M512.7 642.3q15.0 -0.4 29.9 -1.4M341.2 652.6q1.0 -8.6 2.0 -17.7M460.7 585.1q5.2 -1.3 10.4 -3.6M433.9 539.0q7.7 -1.7 15.4 -3.5M695.8 723.8q15.9 -4.7 31.7 -9.6M577.2 796.8q8.1 -0.2 16.2 -0.7M720.5 645.7q11.6 -2.0 23.3 -3.3M461.9 650.3q8.5 -2.8 16.9 -5.6M561.9 706.0q10.6 -2.2 21.2 -4.5M833.6 669.0q2.0 -7.3 4.1 -14.7M492.4 638.3q9.4 -0.5 18.9 -1.1M727.1 761.7q9.7 -3.0 19.5 -5.9M713.1 633.0q15.5 -0.4 31.1 -1.2M537.9 807.8q16.6 -1.6 33.1 -4.1M619.1 791.6q14.5 0.3 28.9 0.3M845.2 700.5q2.4 -16.4 4.8 -32.0M403.9 607.1q1.2 -4.8 2.4 -8.7M405.3 706.3q3.4 -8.4 6.8 -17.2M432.3 797.8q7.9 -2.9 15.8 -5.3M410.3 614.0q4.0 -10.7 8.0 -21.6M453.5 639.2q4.0 -0.5 8.0 -1.4M672.9 722.5q8.1 -0.6 16.2 -1.9M543.8 686.4q11.8 0.9 23.6 0.9M637.1 704.2q8.0 0.3 16.0 0.7M381.9 716.9q2.8 -10.2 5.6 -21.1M791.1 651.7q12.5 -5.0 24.9 -10.2M778.3 608.7q9.8 -3.8 19.6 -7.7M445.5 745.5q4.8 -2.1 9.6 -3.8M642.1 776.1q10.7 -0.5 21.5 -0.4M554.4 825.8q10.0 -0.2 19.9 -0.6M571.4 695.4q15.1 -2.2 30.1 -5.2M689.1 546.8q11.6 -2.0 23.1 -3.3M413.2 664.0q1.0 -4.4 2.0 -9.7M498.5 709.6q16.0 -4.2 32.1 -9.4M711.0 814.4q4.5 -1.5 9.0 -2.1M715.2 661.7q5.0 -0.3 10.0 -1.6M421.0 827.3q13.1 -3.7 26.3 -6.5M730.6 732.3q4.1 -0.5 8.2 -0.7M669.5 615.7q10.1 -2.5 20.2 -4.2M527.5 745.2q12.8 -2.1 25.5 -4.3M510.3 709.9q10.8 -3.1 21.6 -5.2M700.3 650.8q12.2 -2.3 24.5 -4.4M583.5 657.6q4.3 -0.7 8.5 -0.9M757.8 641.5q16.1 -3.4 32.2 -6.3M715.0 701.4q5.4 -1.6 10.8 -3.1M551.1 776.9q13.5 -0.0 26.9 -0.4M400.9 580.0q1.2 -9.7 2.4 -20.0M418.4 592.7q2.2 -6.2 4.3 -12.4M625.1 586.8q5.2 -0.4 10.4 0.1M733.9 623.1q15.6 -2.3 31.2 -5.0M579.9 705.7q14.9 0.7 29.9 1.1M793.1 583.0q4.1 -2.0 8.2 -4.0M671.8 611.2q14.2 -1.9 28.3 -4.0M405.7 586.7q4.5 -16.2 9.0 -32.5M475.0 569.8q5.3 -0.7 10.5 -2.3M560.3 824.8q16.5 -1.6 33.1 -2.9M560.3 803.9q11.6 -0.2 23.3 -0.6M701.5 622.4q10.3 -0.5 20.5 -0.9M599.8 747.2q8.3 -0.2 16.6 -0.7M828.8 704.1q1.9 -6.8 3.8 -13.8M438.4 829.6q10.5 -4.9 21.1 -9.3M629.1 636.0q11.6 -1.5 23.2 -3.8M468.3 534.1q6.5 -1.1 13.0 -2.7M720.5 630.6q12.5 -1.4 25.0 -2.2M718.0 571.7q10.6 -3.7 21.2 -7.0M590.5 667.7q5.7 0.6 11.4 1.2M680.1 687.5q15.4 -2.5 30.8 -5.7M701.2 813.8q8.7 -2.8 17.5 -5.7M752.4 759.6q14.3 -5.2 28.7 -11.0M737.2 748.2q12.8 -2.3 25.6 -3.9M570.9 598.0q15.9 -0.2 31.7 -0.2M526.4 638.4q10.6 -2.2 21.1 -3.7M705.3 757.7q14.5 -2.2 29.0 -4.1M669.0 583.1q10.5 -0.4 20.9 -1.7M723.9 697.8q6.9 -1.3 13.8 -1.9M837.4 629.0q3.0 -9.8 6.0 -20.3M806.6 682.7q1.9 -7.3 3.7 -14.9M461.4 719.6q9.8 -0.4 19.7 -1.7M741.0 586.2q13.2 -2.1 26.4 -3.6M505.7 807.8q9.2 -2.4 18.4 -4.1M360.3 690.2q1.2 -5.1 2.4 -10.4M528.1 647.9q14.5 -2.3 28.9 -5.2M665.7 828.4q12.3 -0.1 24.7 -0.9M544.5 665.7q8.9 0.2 17.8 -0.2M336.6 678.3q0.2 -8.5 0.4 -17.2M707.8 765.9q10.5 -0.7 20.9 -1.3M499.0 776.2q7.2 -2.1 14.4 -3.9M737.7 756.4q14.3 -3.9 28.6 -8.6M810.1 660.5q4.1 -12.7 8.2 -26.4M705.4 786.5q7.1 -1.9 14.1 -3.7M521.1 688.1q8.6 -0.5 17.2 -1.6M494.3 663.2q14.4 -2.8 28.8 -6.4"/>
<path stroke="#888" stroke-width="0.6" opacity="0.5" d="M497 512c-2 4.7-8.8 20-12 28c-3.2 8-6.7 12.5-7 20c-.3 7.5 2.5 18.3 5 25c2.5 6.7 8.3 12.5 10 15"/>
<path stroke="#999" stroke-width="0.6" opacity="0.45" d="M705 516c2.5 4 10 15.8 15 24c5 8.2 10.3 15 15 25c4.7 10 10.8 29.2 13 35"/>
<path stroke="#aaa" stroke-width="0.6" opacity="0.45" d="M690 549c2.5 5.2 9.7 20.8 15 31c5.3 10.2 10.8 21.3 17 30c6.2 8.7 16.7 18.3 20 22"/>
</g>
<path d="M665.7 421.2h.01M542.9 250.7h.01M614.7 342.5h.01M617.0 403.8h.01M659.3 413.0h.01M681.4 382.8h.01M512.8 351.8h.01M587.9 322.4h.01M663.9 358.6h.01M640.2 317.5h.01M538.0 346.5h.01M589.2 361.1h.01M582.8 370.4h.01M561.3 337.4h.01M534.4 349.3h.01M571.1 452.4h.01M549.8 404.4h.01M513.4 309.9h.01M609.6 390.1h.01M659.4 327.8h.01M581.7 312.3h.01M512.6 316.4h.01M656.0 415.4h.01M623.5 255.4h.01M631.5 416.4h.01M583.6 312.7h.01M649.5 283.3h.01M544.0 278.1h.01M588.2 450.4h.01M677.4 399.9h.01M533.8 398.3h.01M609.6 385.5h.01M654.3 424.4h.01M684.6 322.0h.01M552.7 273.8h.01M554.0 361.1h.01M589.8 422.8h.01M535.0 324.5h.01M568.4 318.0h.01M627.0 353.2h.01M566.8 439.7h.01M610.5 330.5h.01M587.8 337.6h.01M515.8 354.2h.01M528.1 294.4h.01M608.2 335.2h.01M547.8 336.0h.01M550.3 291.7h.01M617.6 458.2h.01M660.8 367.4h.01M625.0 251.8h.01M529.8 394.0h.01M587.4 282.6h.01M557.7 279.3h.01M565.3 289.7h.01M586.8 252.4h.01M692.5 364.8h.01M655.6 395.9h.01M555.8 266.0h.01M626.9 323.4h.01M600.0 304.9h.01M587.8 374.6h.01M651.8 319.1h.01M573.3 413.5h.01M614.0 437.7h.01M599.7 322.7h.01M530.8 413.5h.01M567.4 352.6h.01M687.0 317.2h.01M622.8 347.7h.01M637.2 370.9h.01M562.1 298.2h.01M654.7 354.5h.01M593.1 437.9h.01M613.8 309.8h.01M650.0 319.1h.01M590.1 456.5h.01M562.7 295.8h.01M654.4 367.9h.01M547.5 361.8h.01M568.1 254.1h.01M601.0 452.8h.01M569.8 287.3h.01M649.9 370.8h.01M562.3 338.7h.01M594.7 348.7h.01M604.8 449.9h.01M661.1 313.8h.01M595.8 446.0h.01M507.2 357.3h.01M647.5 392.6h.01M592.8 351.0h.01M529.8 315.4h.01M686.1 318.7h.01M508.9 348.1h.01M516.4 311.0h.01M620.3 310.4h.01M638.8 431.6h.01M522.1 414.3h.01M671.7 388.0h.01M669.6 353.6h.01M521.3 346.1h.01M621.7 359.6h.01M510.5 328.1h.01M687.8 372.7h.01M596.6 449.7h.01M636.3 458.6h.01M638.6 424.1h.01M555.8 330.7h.01M601.1 431.0h.01M672.3 305.7h.01M630.8 420.5h.01M572.7 332.1h.01M656.3 415.8h.01M669.0 410.5h.01M568.6 402.1h.01M645.6 337.8h.01M616.7 325.2h.01M626.2 291.0h.01M605.4 317.4h.01M557.5 333.2h.01M563.7 452.4h.01M638.4 452.8h.01M582.8 285.5h.01M690.0 342.9h.01M667.5 432.6h.01M671.0 324.2h.01M587.5 295.2h.01M655.7 383.6h.01M554.9 426.9h.01M632.3 422.4h.01M656.0 429.3h.01M554.7 362.2h.01M541.7 353.9h.01M588.0 416.6h.01M658.3 419.8h.01M511.4 312.6h.01M663.2 353.4h.01M591.6 372.4h.01M543.2 432.9h.01M566.0 312.0h.01M603.4 283.1h.01M571.6 331.3h.01M562.6 407.0h.01M577.3 323.2h.01M684.1 362.0h.01M525.6 315.6h.01M629.1 330.1h.01M664.2 302.1h.01M524.2 317.3h.01M662.4 290.5h.01M630.5 422.8h.01M603.2 280.4h.01M633.8 298.4h.01M675.3 332.0h.01M652.1 321.2h.01M557.8 429.2h.01M616.9 316.1h.01M516.2 326.2h.01M617.3 418.4h.01M644.3 333.4h.01M568.5 328.6h.01M598.1 416.3h.01M581.0 411.5h.01M673.0 384.4h.01M615.6 261.5h.01M543.5 348.0h.01M546.9 263.7h.01M634.3 360.2h.01M568.8 344.3h.01M546.5 447.4h.01M688.2 331.1h.01M629.8 444.5h.01M568.7 357.0h.01M515.9 309.1h.01M672.2 385.5h.01M566.2 392.5h.01M664.2 427.6h.01M603.2 326.3h.01M684.0 380.2h.01M598.0 398.0h.01M604.8 386.7h.01M683.8 384.1h.01M535.7 292.8h.01M517.4 346.4h.01M608.6 313.6h.01M686.6 335.1h.01M622.3 297.3h.01M529.1 314.9h.01M539.3 435.9h.01M669.4 346.5h.01M597.9 325.9h.01M546.7 356.7h.01M528.0 378.1h.01M608.8 321.1h.01M577.7 413.0h.01M538.5 415.5h.01M611.9 356.1h.01M604.9 310.5h.01M596.9 284.4h.01M599.3 400.5h.01M627.3 304.4h.01M656.0 362.1h.01M582.6 329.4h.01M576.6 410.5h.01M586.7 343.4h.01M515.4 359.6h.01M529.0 266.4h.01M621.0 329.4h.01M565.8 305.6h.01M622.1 366.9h.01M548.5 311.1h.01M670.5 391.7h.01M551.1 450.8h.01M645.2 384.4h.01M690.0 337.3h.01M548.1 257.4h.01M681.8 403.2h.01M562.5 418.8h.01M564.4 302.6h.01M659.3 350.3h.01M633.7 417.9h.01M550.9 429.5h.01M635.7 394.2h.01M661.8 303.3h.01M571.9 408.1h.01M529.3 270.7h.01M677.9 323.5h.01M614.0 396.0h.01M526.6 401.8h.01M626.4 367.4h.01M603.4 421.0h.01M650.4 373.6h.01M525.1 312.2h.01M510.5 364.1h.01M674.3 367.8h.01M613.0 341.0h.01M616.1 402.1h.01M579.7 424.4h.01M642.0 354.7h.01M672.1 277.2h.01M609.8 333.3h.01M652.8 355.9h.01M640.0 316.9h.01M543.3 445.1h.01M637.6 346.4h.01M618.2 297.1h.01M646.6 338.5h.01M507.1 324.0h.01M562.4 275.4h.01M553.9 444.5h.01M572.5 362.6h.01M521.6 327.3h.01M682.4 300.5h.01M550.5 445.5h.01M601.9 448.5h.01M675.4 359.8h.01M687.5 337.9h.01M677.2 316.1h.01M652.9 390.4h.01M514.9 319.8h.01M604.2 324.2h.01M631.6 309.0h.01M670.6 346.5h.01M629.2 436.6h.01M684.1 308.6h.01M650.6 311.1h.01M508.2 335.4h.01M660.8 310.0h.01M655.8 393.7h.01M598.5 387.2h.01M636.4 366.7h.01M608.3 340.4h.01M549.2 323.0h.01M629.2 418.5h.01M578.3 392.9h.01M651.2 284.6h.01M590.7 436.2h.01M575.0 435.2h.01M583.7 327.5h.01M520.6 353.5h.01M654.3 402.4h.01M541.9 382.4h.01M579.2 393.0h.01M564.5 315.9h.01M525.6 400.0h.01M615.1 444.7h.01M660.4 288.9h.01M557.3 392.4h.01M545.5 354.7h.01M642.6 252.2h.01M562.0 287.4h.01M643.5 415.5h.01M591.2 340.3h.01M598.9 301.2h.01M588.2 410.1h.01M655.6 264.4h.01M545.6 287.3h.01M556.0 394.1h.01M661.5 331.8h.01M599.2 257.3h.01M565.0 394.9h.01M668.4 347.0h.01M608.1 368.5h.01M540.4 332.2h.01M654.5 367.8h.01M538.6 323.2h.01M593.7 334.1h.01M549.0 418.1h.01M617.8 447.3h.01M551.3 294.7h.01M555.5 445.3h.01M524.0 403.1h.01M632.4 252.1h.01M598.2 442.1h.01M586.9 323.7h.01M590.9 316.9h.01M553.0 308.2h.01M557.4 327.0h.01M549.4 450.1h.01M561.0 402.5h.01M563.1 309.6h.01M576.5 419.1h.01M533.8 391.5h.01M612.5 438.0h.01M671.5 321.3h.01M607.9 325.6h.01M553.1 293.7h.01M667.8 359.5h.01M567.3 358.5h.01M638.2 350.4h.01M546.9 399.9h.01M558.6 400.6h.01" stroke="#777" stroke-width="1" stroke-linecap="round" opacity=".45" fill="none"/>
<circle cx="550.800" cy="311.200" r="6.600" fill="none" stroke="#222" stroke-width="1" opacity=".8"/><circle cx="550.800" cy="311.200" r="5" fill="none" stroke="#666" stroke-width=".6" opacity=".6"/><path d="M551 307.500a3.700 3.700 0 0 1 0 7.400a5 5 0 0 0 0-7.400z" fill="#111" opacity=".85"/><circle cx="553.600" cy="312.300" r="1.700" fill="#111" opacity=".85"/><circle cx="644.200" cy="307.500" r="7" fill="none" stroke="#222" stroke-width="1" opacity=".8"/><circle cx="644.200" cy="307.500" r="5.300" fill="none" stroke="#666" stroke-width=".6" opacity=".6"/><path d="M644.500 304a3.600 3.600 0 1 1-3.200 5.600a3 3 0 0 0 3.200-5.600z" fill="#111" opacity=".85"/><circle cx="551.500" cy="497" r=".8" fill="#444"/><circle cx="574" cy="524" r=".9" fill="#333"/><circle cx="528.500" cy="470.500" r=".7" fill="#555"/>
<text transform="translate(350 819) rotate(-90)" font-family="Liberation Sans,sans-serif" font-size="13" fill="#111" stroke="#111" stroke-width=".35">Adobe Stock | #766927552</text>
</svg>
</div>
<!-- contextual task bar -->
<div style="left:386px;top:841px;width:442px;height:37px;background:#535353;border-radius:5px;box-shadow:0 1px 3px rgba(0,0,0,.5)"></div>
<div style="left:391px;top:846px;width:3px;height:27px;background:#dcdcdc;border-radius:1.500px"></div>
<div style="left:402px;top:845px;width:129px;height:29px;border:1px solid #6a6a6a;border-radius:4px;background:#535353"></div>
<svg style="left:415px;top:852px" width="13" height="14" viewBox="0 0 13 14"><circle cx="6.500" cy="5" r="2.800" fill="#e8e8e8"/><path d="M1.500 13c0-3.500 2-5 5-5s5 1.500 5 5z" fill="#e8e8e8"/><path d="M2.500 4.500a4.500 4.500 0 0 1 8 0M1 8.500a6 6 0 0 1 1-3.500M12 8.500a6 6 0 0 0-1-3.500" fill="none" stroke="#bdbdbd" stroke-width=".9" stroke-dasharray="1.200 1"/></svg>
<div class="t" style="left:435px;top:851px;font-size:12.7px;line-height:16px;color:#f4f4f4">Select subject</div>
<div style="left:537px;top:845px;width:167px;height:29px;border:1px solid #6a6a6a;border-radius:4px;background:#535353"></div>
<svg style="left:547px;top:852px" width="18" height="14" viewBox="0 0 18 14"><rect x=".7" y=".7" width="16.600" height="12.600" rx="1" fill="#e8e8e8" stroke="#e8e8e8" stroke-width="1.400"/><path d="M1.500 1.500h3v3h-3zM7.500 1.500h3v3h-3zM13.500 1.500h3v3h-3zM4.500 4.500h3v3h-3zM10.500 4.500h3v3h-3z" fill="#535353"/><path d="M1.500 12.500l4.500-5 3.500 3.500 2.500-2.500 4.500 4z" fill="#535353"/><path d="M1.500 12.500l4.500-4 3.500 3 2.500-2 4.500 3z" fill="#e8e8e8"/></svg>
<div class="t" style="left:572px;top:851px;font-size:12.7px;line-height:16px;color:#f4f4f4">Remove background</div>
<svg style="left:719px;top:851px" width="15" height="16" viewBox="0 0 15 16" fill="none" stroke="#b4b4b4" stroke-width="1.200"><path d="M2.500 14.500l1.500-10.500 7.500 2 1.500 8.500c-3.500-1.500-7-1.500-10.500 0z"/><circle cx="4" cy="3.500" r="1.300" fill="#b4b4b4"/><circle cx="11.500" cy="5.500" r="1.300" fill="#b4b4b4"/></svg>
<svg style="left:760px;top:852px" width="15" height="15" viewBox="0 0 15 15"><circle cx="7.500" cy="7.500" r="6.500" fill="none" stroke="#e8e8e8" stroke-width="1.500"/><path d="M3 12a6.500 6.500 0 0 1 9-9z" fill="#e8e8e8"/></svg>
<svg style="left:800px;top:857px" width="16" height="5"><circle cx="2.500" cy="2.500" r="1.700" fill="#e8e8e8"/><circle cx="8" cy="2.500" r="1.700" fill="#e8e8e8"/><circle cx="13.500" cy="2.500" r="1.700" fill="#e8e8e8"/></svg>
<div id="tbhead"></div>
<div id="toolbar"></div>
<div style="left:0;top:65px;width:1px;height:908px;background:#3a3a3a"></div>
<div style="left:41px;top:78px;width:4px;height:895px;background:#4c4c4c;border-left:1px solid #444"></div>
<svg style="left:7px;top:68px" width="9" height="7" fill="none" stroke="#d8d8d8" stroke-width="1.2"><path d="M.5.5l3 3-3 3M5 .5l3 3-3 3"/></svg>
<svg style="left:10px;top:82px" width="22" height="4"><path d="M0 2h22" stroke="#3e3e3e" stroke-width="4" stroke-dasharray="1 1.400"/></svg>
<div style="left:6px;top:403px;width:30px;height:24px;background:#383838;border-radius:2px"></div>
<svg style="left:8.0px;top:98.5px" width="24" height="24" viewBox="-12.0 -12.0 24 24" fill="none" stroke="#dedede" stroke-width="1.400" stroke-linejoin="round"><path d="M0-8l3 3.500h-2v3.500h3.500v-2l3.500 3-3.500 3v-2h-3.500v3.500h2l-3 3.500-3-3.500h2v-3.500h-3.500v2l-3.500-3 3.500-3v2h3.500v-3.500h-2z" fill="#dedede" stroke="none"/></svg>
<svg style="left:8.0px;top:125.0px" width="24" height="24" viewBox="-12.0 -12.0 24 24" fill="none" stroke="#dedede" stroke-width="1.400" stroke-linejoin="round"><rect x="-8.500" y="-6.500" width="17" height="13" stroke-width="1.600" stroke-dasharray="3.400 2.200" stroke-dashoffset="1.700"/></svg>
<svg style="left:8.0px;top:154.0px" width="24" height="24" viewBox="-12.0 -12.0 24 24" fill="none" stroke="#dedede" stroke-width="1.400" stroke-linejoin="round"><ellipse cx="1.500" cy="-2" rx="8" ry="5" transform="rotate(-20 1.500 -2)" stroke-width="1.500"/><path d="M-6 1.500c2-1.500 4 0 3 1.500s-3.500 1-3.500-.5M-3.500 3c1.500 1.500 1 3.500-.5 5" stroke-width="1.300"/></svg>
<svg style="left:8.0px;top:181.0px" width="24" height="24" viewBox="-12.0 -12.0 24 24" fill="none" stroke="#dedede" stroke-width="1.400" stroke-linejoin="round"><rect x="-7" y="-8.500" width="12.500" height="13" stroke-width="1.100" stroke-dasharray="1.200 1.200"/><path d="M-5-6.500h9v4.500h-4.500v5h-4.500z" fill="#dedede" stroke="none"/><path d="M1.500-2l8 6.500-4 .5 0 0-1.500 4.500z" fill="#dedede" stroke="none"/></svg>
<svg style="left:8.0px;top:208.5px" width="24" height="24" viewBox="-12.0 -12.0 24 24" fill="none" stroke="#dedede" stroke-width="1.400" stroke-linejoin="round"><path d="M-5-10v15.500h15.500M-10-5h15v15" stroke-width="2"/></svg>
<svg style="left:8.0px;top:236.0px" width="24" height="24" viewBox="-12.0 -12.0 24 24" fill="none" stroke="#dedede" stroke-width="1.400" stroke-linejoin="round"><rect x="-8" y="-7" width="16" height="14" stroke-width="1.500"/><path d="M-8-7l16 14M8-7l-16 14" stroke-width="1.300"/></svg>
<svg style="left:8.0px;top:264.0px" width="24" height="24" viewBox="-12.0 -12.0 24 24" fill="none" stroke="#dedede" stroke-width="1.400" stroke-linejoin="round"><path d="M-8.500 8.500c-1-1-.5-2.200 0-2.700l8.300-8.300 2.700 2.700-8.300 8.300c-.5.500-1.700 1-2.700 0z" stroke-width="1.300"/><path d="M0-4.500l1.800-1.800 1 1 2.700-2.700a2.100 2.100 0 0 1 3 3l-2.700 2.700 1 1-1.800 1.800z" fill="#dedede" stroke="none"/></svg>
<svg style="left:8.0px;top:292.0px" width="24" height="24" viewBox="-12.0 -12.0 24 24" fill="none" stroke="#dedede" stroke-width="1.400" stroke-linejoin="round"><circle cx="-4" cy="-3" r="5.500" stroke-width="1.200" stroke-dasharray="2 1.500"/><g transform="rotate(-40)"><rect x="-9" y="-1" width="18" height="7.500" rx="3.700" fill="#dedede" stroke="none"/><g fill="#535353" stroke="none"><circle cx="-1.500" cy="1.200" r=".8"/><circle cx="1.500" cy="1.200" r=".8"/><circle cx="-1.500" cy="4.200" r=".8"/><circle cx="1.500" cy="4.200" r=".8"/></g></g></svg>
<svg style="left:8.0px;top:319.5px" width="24" height="24" viewBox="-12.0 -12.0 24 24" fill="none" stroke="#dedede" stroke-width="1.400" stroke-linejoin="round"><path d="M9-9.500c-3 2-7 6.500-9 10l2 2c3.500-2.500 7-7 8-11.500z" fill="#dedede" stroke="none"/><path d="M-1.500 2c-3-1-4.500 1.500-5 3s-1.500 2.500-2.500 3c3 1 8 .5 9-3.500z" fill="#dedede" stroke="none"/></svg>
<svg style="left:8.0px;top:348.5px" width="24" height="24" viewBox="-12.0 -12.0 24 24" fill="none" stroke="#dedede" stroke-width="1.400" stroke-linejoin="round"><path d="M-3-4.500a3.800 3.800 0 1 1 6 0c-1 1.500-1 2.500-.5 4h4.500v4h-14v-4h4.500c.5-1.500.5-2.500-.5-4z" fill="#dedede" stroke="none"/><path d="M-7 5.500h14v1.800h-14z" fill="#dedede" stroke="none"/></svg>
<svg style="left:8.0px;top:376.0px" width="24" height="24" viewBox="-12.0 -12.0 24 24" fill="none" stroke="#dedede" stroke-width="1.400" stroke-linejoin="round"><path d="M9.500-9.500c-3 2-6 6-8 9.500l2 2c3-2.500 5.500-7 6-11.500z" fill="#dedede" stroke="none"/><path d="M0 1.500c-3-1-4.500 1.500-5 3s-1.500 2.500-2.500 3c3 1 8 .5 9-3.500z" fill="#dedede" stroke="none"/><path d="M-6-3.500c2-3 5-3.500 8-2.500" stroke-width="1.300"/><path d="M-9.500-2.500l5-3.500.5 4.500z" fill="#dedede" stroke="none"/><path d="M8-2c.5 3-1 6-4.500 8" stroke-width="1" stroke-dasharray="1.500 1.500"/></svg>
<svg style="left:8.0px;top:403.0px" width="24" height="24" viewBox="-12.0 -12.0 24 24" fill="none" stroke="#dedede" stroke-width="1.400" stroke-linejoin="round"><g fill="#f0f0f0" stroke="none"><path d="M-2.500 1l6.500-7.500 6 4.500-6.500 7.500z"/><path d="M-7.500 7h16v1.300h-16z"/></g><path d="M-3 1.500l-4 4.500 2.500 2h4.500l3-3.500" stroke="#f0f0f0" stroke-width="1.300"/></svg>
<svg style="left:11px;top:435px" width="18" height="14"><defs><linearGradient id="gg"><stop offset="0" stop-color="#2a2a2a"/><stop offset="1" stop-color="#d0d0d0"/></linearGradient></defs><rect x=".7" y=".7" width="16.600" height="12.600" fill="url(#gg)" stroke="#e6e6e6" stroke-width="1.400"/></svg>
<svg style="left:8.0px;top:458.0px" width="24" height="24" viewBox="-12.0 -12.0 24 24" fill="none" stroke="#dedede" stroke-width="1.400" stroke-linejoin="round"><path d="M0-8.500c1.500 3.500 5.500 6.500 5.500 10.500a5.500 5.500 0 0 1-11 0c0-4 4-7 5.500-10.500z" fill="#dedede" stroke="none"/></svg>
<svg style="left:8.0px;top:486.0px" width="24" height="24" viewBox="-12.0 -12.0 24 24" fill="none" stroke="#dedede" stroke-width="1.400" stroke-linejoin="round"><path d="M6-9.500c-2.500 2-6 6-7.500 9.500l2 1.500c3-2.500 5.500-6.500 5.500-11z" fill="#dedede" stroke="none"/><path d="M-2.500 1.500c-2.500-1-4 1-4.500 2.500s-1.500 2-2 2.500c3 1 6.500.5 7.500-3z" fill="#dedede" stroke="none"/><circle cx="5.500" cy="4.500" r="4" stroke-width="1.400"/><path d="M2.800 7.300a4 4 0 0 1 5.500-5.500z" fill="#dedede" stroke="none"/></svg>
<svg style="left:8.0px;top:514.0px" width="24" height="24" viewBox="-12.0 -12.0 24 24" fill="none" stroke="#dedede" stroke-width="1.400" stroke-linejoin="round"><circle cx="2.500" cy="-3" r="5.500" fill="#dedede" stroke="none"/><path d="M-1.500 1l-7 7" stroke-width="2"/></svg>
<svg style="left:8.0px;top:541.5px" width="24" height="24" viewBox="-12.0 -12.0 24 24" fill="none" stroke="#dedede" stroke-width="1.400" stroke-linejoin="round"><path d="M2.500-9.500l6 4-2 3.500-6-4z" fill="#dedede" stroke="none"/><path d="M-.5-5.500l6 4c-1 4-4 7-12 9.500c0-6 2-11 6-13.500z" stroke-width="1.300"/><path d="M-6.500 8l5.500-7" stroke-width="1.100"/><circle cx="-.5" cy=".5" r="1.300" fill="#dedede" stroke="none"/></svg>
<div class="t b" style="left:12px;top:570px;width:17px;text-align:center;font-family:'Liberation Serif',serif;font-size:21px;line-height:22px;color:#dedede">T</div>
<svg style="left:8.0px;top:596.5px" width="24" height="24" viewBox="-12.0 -12.0 24 24" fill="none" stroke="#dedede" stroke-width="1.400" stroke-linejoin="round"><path d="M-4-8v14l3.500-3 2.500 5.500 2-1-2.500-5.500 4.500-.5z" fill="#111" stroke="#e8e8e8" stroke-width="1.300"/></svg>
<svg style="left:8.0px;top:624.0px" width="24" height="24" viewBox="-12.0 -12.0 24 24" fill="none" stroke="#dedede" stroke-width="1.400" stroke-linejoin="round"><rect x="-8.500" y="-6.500" width="17" height="13" rx="1" fill="#6c6c6c" stroke-width="1.300"/></svg>
<svg style="left:8.0px;top:652.0px" width="24" height="24" viewBox="-12.0 -12.0 24 24" fill="none" stroke="#dedede" stroke-width="1.400" stroke-linejoin="round"><path d="M-4.500 8.500c-2-2-3.500-4.500-5-6.500-.8-1.200.5-2 1.500-1.300l2.500 2.300v-9c0-1.300 1.800-1.300 1.800 0v5.500h.5v-7c0-1.300 1.900-1.300 1.900 0v7h.5v-6.300c0-1.300 1.900-1.300 1.900 0v6.500h.5v-4.500c0-1.300 1.900-1.300 1.900 0v8c0 2.500-1 4-2 5.300z" fill="#dedede" stroke="none"/></svg>
<svg style="left:8.0px;top:680.0px" width="24" height="24" viewBox="-12.0 -12.0 24 24" fill="none" stroke="#dedede" stroke-width="1.400" stroke-linejoin="round"><circle cx="-2.500" cy="-2.500" r="6" stroke-width="1.600"/><path d="M2 2l7 7" stroke-width="2"/></svg>
<svg style="left:8.0px;top:708.0px" width="24" height="24" viewBox="-12.0 -12.0 24 24" fill="none" stroke="#dedede" stroke-width="1.400" stroke-linejoin="round"><circle cx="-6.500" r="1.800" fill="#dedede" stroke="none"/><circle r="1.800" fill="#dedede" stroke="none"/><circle cx="6.500" r="1.800" fill="#dedede" stroke="none"/></svg>
<svg style="left:31px;top:644px" width="4" height="4"><path d="M4 0v4h-4z" fill="#c0c0c0"/></svg>
<svg style="left:31px;top:672px" width="4" height="4"><path d="M4 0v4h-4z" fill="#c0c0c0"/></svg>
<svg style="left:31px;top:728px" width="4" height="4"><path d="M4 0v4h-4z" fill="#c0c0c0"/></svg>
<svg style="left:31px;top:842px" width="4" height="4"><path d="M4 0v4h-4z" fill="#c0c0c0"/></svg>
<svg style="left:4px;top:739px" width="14" height="14" viewBox="0 0 14 14"><rect x="5" y="5" width="8.500" height="8.500" fill="#fff" stroke="#dcdcdc" stroke-width="1"/><rect x=".5" y=".5" width="8.500" height="8.500" fill="#000" stroke="#dcdcdc" stroke-width="1"/></svg>
<svg style="left:24px;top:739px" width="14" height="14" viewBox="0 0 14 14"><path d="M3.500 3.500c4-1 6.500 1 6 5" fill="none" stroke="#dedede" stroke-width="2"/><path d="M0 4l4.500-4v7z" fill="#dedede"/><path d="M6 8.500h7l-3.500 4.500z" fill="#dedede"/></svg>
<div style="left:17px;top:769px;width:20px;height:20px;background:#000;border:2px solid #f4f4f4;box-shadow:0 0 0 1px #2a2a2a"></div>
<div style="left:6px;top:758px;width:20px;height:20px;background:#0b00a0;border:2px solid #f4f4f4;box-shadow:0 0 0 1px #2a2a2a"></div>
<svg style="left:8.0px;top:795.0px" width="24" height="24" viewBox="-12.0 -12.0 24 24" fill="none" stroke="#dedede" stroke-width="1.400" stroke-linejoin="round"><rect x="-9" y="-7" width="18" height="14" rx="1" stroke="#c8c8c8" stroke-width="1.300"/><circle r="4.200" stroke="#c8c8c8" stroke-width="1" stroke-dasharray="1.300 1"/></svg>
<svg style="left:8.0px;top:823.0px" width="24" height="24" viewBox="-12.0 -12.0 24 24" fill="none" stroke="#dedede" stroke-width="1.400" stroke-linejoin="round"><rect x="-9" y="-2.500" width="12" height="9" rx="1" stroke="#c8c8c8" stroke-width="1.300"/><rect x="-3.500" y="-7" width="13" height="9.500" rx="1" fill="#535353" stroke="#c8c8c8" stroke-width="1.300"/><path d="M-3.500-5.500h13" stroke="#c8c8c8" stroke-width="2"/></svg>
<svg style="left:8.0px;top:856.0px" width="24" height="24" viewBox="-12.0 -12.0 24 24" fill="none" stroke="#dedede" stroke-width="1.400" stroke-linejoin="round"><path d="M-2-5a4.500 4.500 0 1 0-3 7.500" stroke="#8c8c8c" stroke-width="1.300"/><path d="M-7 1.500l2 1.500-2.500 1" stroke="#8c8c8c" stroke-width="1"/><rect x="-1.500" y="1.500" width="10" height="7" stroke="#8c8c8c" stroke-width="1.200"/><path d="M0 7.500l2.500-3 2 2 1.500-1.500 2 2.500z" fill="#8c8c8c" stroke="none"/><circle cx="6.500" cy="-6" r="3.800" fill="#3f78c0" stroke="none"/></svg>
<!-- narrow column -->
<div style="left:1190px;top:65px;width:346px;height:13px;background:#3f3f3f"></div>
<svg style="left:1217px;top:68px" width="9" height="7" fill="none" stroke="#d8d8d8" stroke-width="1.2"><path d="M3.500.5l-3 3 3 3M8 .5l-3 3 3 3"/></svg>
<svg style="left:1521px;top:68px" width="9" height="7" fill="none" stroke="#d8d8d8" stroke-width="1.2"><path d="M.5.5l3 3-3 3M5 .5l3 3-3 3"/></svg>
<div style="left:1191px;top:78px;width:40px;height:895px;background:#535353"></div>
<div style="left:1190px;top:120px;width:41px;height:2px;background:#3c3c3c"></div>
<svg style="left:1199px;top:82px" width="22" height="4"><path d="M0 2h22" stroke="#3e3e3e" stroke-width="4" stroke-dasharray="1 1.400"/></svg>
<svg style="left:1200px;top:90px" width="22" height="24" viewBox="1200 90 22 24"><g fill="none" stroke="#e4e4e4" stroke-width="1.200"><rect x="1202.600" y="93.600" width="4.800" height="4.600"/><rect x="1202.600" y="100.200" width="4.800" height="4.600"/></g><rect x="1204.200" y="101.700" width="1.600" height="1.600" fill="#e4e4e4"/><rect x="1202" y="106.800" width="6" height="5.400" fill="#e4e4e4"/><path d="M1210.500 110c7-2.500 8-11 2.500-14" fill="none" stroke="#e4e4e4" stroke-width="2"/><path d="M1209.500 94l6-1-2.500 5.500z" fill="#e4e4e4"/></svg>
<div style="left:1231px;top:78px;width:2px;height:895px;background:#414141"></div>
<!-- ===== Patterns panel ===== -->
<div style="left:1233px;top:78px;width:303px;height:30px;background:#424242"></div>
<div style="left:1233px;top:79px;width:44px;height:28px;background:#464646;border-right:1px solid #3c3c3c"></div>
<div style="left:1278px;top:79px;width:66px;height:28px;background:#464646;border-right:1px solid #3c3c3c"></div>
<div style="left:1345px;top:79px;width:66px;height:28px;background:#464646;border-right:1px solid #3c3c3c"></div>
<div style="left:1411px;top:79px;width:60px;height:29px;background:#535353"></div>
<div class="t b" style="left:1243px;top:84px;font-size:10.8px;color:#c8c8c8">Color</div>
<div class="t b" style="left:1289px;top:84px;font-size:10.8px;color:#c8c8c8;letter-spacing:-.3px">Swatches</div>
<div class="t b" style="left:1354px;top:84px;font-size:10.8px;color:#c8c8c8;letter-spacing:-.3px">Gradients</div>
<div class="t b" style="left:1421px;top:84px;font-size:10.8px;color:#fff;letter-spacing:-.3px">Patterns</div>
<svg style="left:1519px;top:89px" width="11" height="9"><path d="M0 1h11M0 3.500h11M0 6h11M0 8.500h11" stroke="#e0e0e0" stroke-width="1.300"/></svg>
<div style="left:1233px;top:108px;width:303px;height:72px;background:#535353"></div>
<svg style="left:1241px;top:124px" width="13" height="13" viewBox="0 0 13 13" fill="none" stroke="#e6e6e6"><circle cx="5" cy="5" r="3.700" stroke-width="1.800"/><path d="M8 8l4 4" stroke-width="2.200"/></svg>
<div style="left:1257px;top:119px;width:271px;height:22px;background:#434343;border:1px solid #5c5c5c"></div>
<div class="t" style="left:1264px;top:124px;font-size:12px;font-style:italic;color:#9a9a9a;letter-spacing:0">Search Patterns</div>
<div style="left:1240px;top:151px;width:288px;height:18px;background:#4a4a4a"></div>
<div style="left:1233px;top:180px;width:303px;height:254px;background:#4d4d4d"></div>
<div style="left:1517px;top:180px;width:19px;height:254px;background:#515151"></div>
<div style="left:1234px;top:180px;width:283px;height:92px;background:#454545"></div>
<div style="left:1234px;top:210px;width:283px;height:1px;background:#494949"></div>
<div style="left:1234px;top:241px;width:283px;height:1px;background:#494949"></div>
<svg style="left:1242px;top:189px" width="6" height="12" fill="none" stroke="#c8c8c8" stroke-width="1"><path d="M1 1l3.500 5-3.500 5"/></svg>
<svg style="left:1255px;top:188px" width="16" height="13" viewBox="0 0 16 13"><path d="M0 1.500h6l1 1.500h9v10h-16z" fill="#dcdcdc"/><path d="M0 0.500h6.500" stroke="#dcdcdc" stroke-width="1"/><path d="M0 3.800h16" stroke="#8a8a8a" stroke-width=".8"/></svg>
<div class="t" style="left:1280px;top:187px;font-size:12.5px;line-height:16px;color:#f0f0f0">Trees</div>
<svg style="left:1242px;top:220px" width="6" height="12" fill="none" stroke="#c8c8c8" stroke-width="1"><path d="M1 1l3.500 5-3.500 5"/></svg>
<svg style="left:1255px;top:219px" width="16" height="13" viewBox="0 0 16 13"><path d="M0 1.500h6l1 1.500h9v10h-16z" fill="#dcdcdc"/><path d="M0 0.500h6.500" stroke="#dcdcdc" stroke-width="1"/><path d="M0 3.800h16" stroke="#8a8a8a" stroke-width=".8"/></svg>
<div class="t" style="left:1280px;top:218px;font-size:12.5px;line-height:16px;color:#f0f0f0">Grass</div>
<svg style="left:1242px;top:251px" width="6" height="12" fill="none" stroke="#c8c8c8" stroke-width="1"><path d="M1 1l3.500 5-3.500 5"/></svg>
<svg style="left:1255px;top:250px" width="16" height="13" viewBox="0 0 16 13"><path d="M0 1.500h6l1 1.500h9v10h-16z" fill="#dcdcdc"/><path d="M0 0.500h6.500" stroke="#dcdcdc" stroke-width="1"/><path d="M0 3.800h16" stroke="#8a8a8a" stroke-width=".8"/></svg>
<div class="t" style="left:1280px;top:249px;font-size:12.5px;line-height:16px;color:#f0f0f0">Water</div>
<div style="left:1233px;top:433px;width:303px;height:2px;background:#404040"></div>
<div style="left:1233px;top:435px;width:303px;height:25px;background:#535353"></div>
<svg style="left:1430px;top:441px" width="14" height="12" viewBox="0 0 14 12"><path d="M0 1h5l1 1.500h8v9.500h-14z" fill="#909090"/></svg>
<svg style="left:1461px;top:441px" width="13" height="13" viewBox="0 0 13 13" fill="none" stroke="#909090" stroke-width="1.200"><rect x=".6" y=".6" width="11.800" height="11.800"/><path d="M6.500 3.500v6M3.500 6.500h6"/></svg>
<svg style="left:1493px;top:440px" width="12" height="14" viewBox="0 0 12 14"><path d="M0 2.500h12v1.500h-12zM4 .8h4v1.500h-4zM1 4.500h10l-.8 9.500h-8.400z" fill="#909090"/></svg>
<div style="left:1233px;top:460px;width:303px;height:2px;background:#404040"></div>
<!-- ===== Properties panel ===== -->
<div style="left:1233px;top:462px;width:303px;height:31px;background:#424242"></div>
<div style="left:1233px;top:463px;width:70px;height:30px;background:#535353"></div>
<div style="left:1304px;top:463px;width:81px;height:28px;background:#464646;border-right:1px solid #3c3c3c"></div>
<div class="t b" style="left:1243px;top:469px;font-size:10.8px;color:#fff;letter-spacing:-.3px">Properties</div>
<div class="t b" style="left:1313px;top:469px;font-size:10.8px;color:#b4b4b4;letter-spacing:-.3px">Adjustments</div>
<svg style="left:1519px;top:474px" width="11" height="9"><path d="M0 1h11M0 3.500h11M0 6h11M0 8.500h11" stroke="#e0e0e0" stroke-width="1.300"/></svg>
<div style="left:1233px;top:493px;width:303px;height:35px;background:#535353"></div>
<div style="left:1245px;top:500px;width:23px;height:23px;background:#383838;border:1px solid #5a5a5a;border-radius:2px"></div>
<svg style="left:1251px;top:504px" width="12" height="15" viewBox="0 0 12 15" fill="none" stroke="#e6e6e6" stroke-width="1.300"><path d="M.8.800h6.500l4 4v9h-10.500z"/><path d="M7 1v4.500h4.500"/></svg>
<div class="t" style="left:1275px;top:505px;font-size:10.8px;color:#d8d8d8">Document</div>
<div style="left:1233px;top:528px;width:303px;height:2px;background:#444"></div>
<div style="left:1233px;top:530px;width:303px;height:195px;background:#535353"></div>
<svg style="left:1241px;top:542px" width="10" height="6" fill="none" stroke="#c8c8c8" stroke-width="1.100"><path d="M.5.5l4.500 4.500 4.500-4.500"/></svg>
<div class="t b" style="left:1257px;top:538px;font-size:11px;color:#f0f0f0">Canvas</div>
<svg style="left:1253px;top:575px" width="10" height="17" viewBox="0 0 10 17" fill="none" stroke="#e0e0e0" stroke-width="1.400"><rect x="1.700" y="1" width="6.600" height="7" rx="3.200"/><rect x="1.700" y="9" width="6.600" height="7" rx="3.200"/><path d="M5 5.500v6"/></svg>
<div class="t" style="left:1288px;top:564px;font-size:11px;color:#d0d0d0">W</div>
<div style="left:1305px;top:562px;width:57px;height:19px;background:#424242;border:1px solid #595959"></div>
<div class="t" style="left:1308px;top:565px;font-size:10.600px;color:#f4f4f4">782 px</div>
<div class="t" style="left:1376px;top:564px;font-size:11px;color:#d0d0d0">X</div>
<div style="left:1391px;top:562px;width:57px;height:19px;background:#4f4f4f;border:1px solid #5a5a5a"></div>
<div class="t" style="left:1394px;top:565px;font-size:10.600px;color:#707070">0 px</div>
<div class="t" style="left:1291px;top:590px;font-size:11px;color:#d0d0d0">H</div>
<div style="left:1305px;top:588px;width:57px;height:19px;background:#424242;border:1px solid #595959"></div>
<div class="t" style="left:1308px;top:591px;font-size:10.600px;color:#f4f4f4">1000 px</div>
<div class="t" style="left:1376px;top:590px;font-size:11px;color:#d0d0d0">Y</div>
<div style="left:1391px;top:588px;width:57px;height:19px;background:#4f4f4f;border:1px solid #5a5a5a"></div>
<div class="t" style="left:1394px;top:591px;font-size:10.600px;color:#707070">0 px</div>
<div style="left:1305px;top:619px;width:26px;height:26px;background:#383838;border-radius:2px"></div>
<svg style="left:1310px;top:623px" width="16" height="18" viewBox="0 0 16 18"><rect x=".7" y=".7" width="14.600" height="16.600" fill="none" stroke="#f0f0f0" stroke-width="1.400"/><circle cx="8" cy="5.500" r="2" fill="#f0f0f0"/><path d="M3.500 17v-6.500a1.500 1.500 0 0 1 1.500-1.500h6a1.500 1.500 0 0 1 1.500 1.500v6.500z" fill="#f0f0f0"/></svg>
<svg style="left:1337px;top:625px" width="18" height="14" viewBox="0 0 18 14"><rect x=".7" y=".7" width="16.600" height="12.600" fill="none" stroke="#f0f0f0" stroke-width="1.400"/><circle cx="9" cy="4.500" r="1.800" fill="#f0f0f0"/><path d="M5 13v-4a1.500 1.500 0 0 1 1.500-1.500h5a1.500 1.500 0 0 1 1.500 1.500v4z" fill="#f0f0f0"/></svg>
<div class="t" style="left:1305px;top:656px;font-size:10.600px;color:#d4d4d4;word-spacing:2.5px">Resolution: 60.096 pixels/...</div>
<div class="t" style="left:1271px;top:682px;font-size:10.600px;color:#d4d4d4">Mode</div>
<div style="left:1519px;top:531px;width:15px;height:167px;background:#4a4a4a"></div>
<div style="left:1521px;top:548px;width:12px;height:46px;background:#6a6a6a"></div>
<svg style="left:1522px;top:537px" width="9" height="6" fill="none" stroke="#999" stroke-width="1.100"><path d="M1 5l3.500-3.500 3.500 3.500"/></svg>
<svg style="left:1522px;top:685px" width="9" height="6" fill="none" stroke="#999" stroke-width="1.100"><path d="M1 1l3.500 3.500 3.500-3.500"/></svg>
<div style="left:1233px;top:725px;width:303px;height:2px;background:#404040"></div>
<!-- ===== Layers panel ===== -->
<div style="left:1233px;top:727px;width:303px;height:31px;background:#424242"></div>
<div style="left:1233px;top:728px;width:50px;height:30px;background:#535353"></div>
<div style="left:1284px;top:728px;width:63px;height:28px;background:#464646;border-right:1px solid #3c3c3c"></div>
<div style="left:1348px;top:728px;width:45px;height:28px;background:#464646;border-right:1px solid #3c3c3c"></div>
<div class="t b" style="left:1243px;top:734px;font-size:10.8px;color:#fff;letter-spacing:-.3px">Layers</div>
<div class="t b" style="left:1293px;top:734px;font-size:10.8px;color:#c0c0c0;letter-spacing:-.3px">Channels</div>
<div class="t b" style="left:1357px;top:734px;font-size:10.8px;color:#c0c0c0;letter-spacing:-.3px">Paths</div>
<svg style="left:1519px;top:739px" width="11" height="9"><path d="M0 1h11M0 3.500h11M0 6h11M0 8.500h11" stroke="#e0e0e0" stroke-width="1.300"/></svg>
<div style="left:1233px;top:758px;width:303px;height:187px;background:#535353"></div>
<div style="left:1237px;top:767px;width:92px;height:21px;background:#4c4c4c;border:1px solid #565656;border-radius:2px"></div>
<svg style="left:1245px;top:772px" width="12" height="12" viewBox="0 0 12 12" fill="none" stroke="#a8a8a8"><circle cx="4.500" cy="4.500" r="3.300" stroke-width="1.400"/><path d="M7 7l4 4" stroke-width="1.800"/></svg>
<div class="t" style="left:1260px;top:771px;font-size:10.800px;color:#8c8c8c">Kind</div>
<svg style="left:1317px;top:776px" width="8" height="6" fill="none" stroke="#6e6e6e" stroke-width="1.100"><path d="M1 1l3 3 3-3"/></svg>
<svg style="left:1342px;top:771px" width="14" height="12" viewBox="0 0 14 12"><rect x=".6" y=".6" width="12.800" height="10.800" rx="1" fill="none" stroke="#c8c8c8" stroke-width="1.200"/><path d="M2.500 9.500l3-4.500 2.500 3 1.500-1.500 2 3z" fill="#c8c8c8"/></svg>
<svg style="left:1368px;top:771px" width="13" height="13" viewBox="0 0 13 13"><circle cx="6.500" cy="6.500" r="5.700" fill="none" stroke="#c8c8c8" stroke-width="1.300"/><path d="M2.500 10.500a5.700 5.700 0 0 1 8-8z" fill="#c8c8c8"/></svg>
<div class="t b" style="left:1393px;top:767px;font-family:'Liberation Serif',serif;font-size:17px;line-height:20px;color:#c8c8c8">T</div>
<svg style="left:1419px;top:771px" width="13" height="13" viewBox="0 0 13 13" fill="none" stroke="#c8c8c8"><rect x="2" y="2" width="9" height="9" stroke-width="1.300"/><g fill="#c8c8c8" stroke="none"><rect width="3.500" height="3.500"/><rect x="9.500" width="3.500" height="3.500"/><rect y="9.500" width="3.500" height="3.500"/><rect x="9.500" y="9.500" width="3.500" height="3.500"/></g></svg>
<svg style="left:1445px;top:770px" width="13" height="14" viewBox="0 0 13 14"><path d="M4 .5h5l3.500 3.500v7h-3.500v2.500h-8.500v-9.500h3.500z" fill="#c8c8c8"/><path d="M5.200 1.700h3v3h3v5h-2.200v-5.200h-3.800z" fill="#535353"/></svg>
<div style="left:1471px;top:768px;width:9px;height:17px;border-radius:4.500px;background:#484848"></div>
<div style="left:1471px;top:768px;width:9px;height:9px;border-radius:50%;background:#8c8c8c"></div>
<div style="left:1233px;top:790px;width:303px;height:2px;background:#464646"></div>
<div style="left:1237px;top:797px;width:141px;height:21px;background:#4c4c4c;border:1px solid #565656;border-radius:2px"></div>
<div class="t" style="left:1245px;top:801px;font-size:10.800px;color:#8c8c8c">Normal</div>
<svg style="left:1366px;top:806px" width="8" height="6" fill="none" stroke="#6e6e6e" stroke-width="1.100"><path d="M1 1l3 3 3-3"/></svg>
<div class="t" style="left:1386px;top:801px;font-size:10.800px;color:#8c8c8c">Opacity:</div>
<div style="left:1430px;top:797px;width:33px;height:20px;background:#454545;border:1px solid #5a5a5a"></div>
<div class="t" style="left:1433px;top:801px;font-size:10.800px;color:#7e7e7e">100%</div>
<div style="left:1463px;top:797px;width:15px;height:20px;background:#4c4c4c;border:1px solid #565656"></div>
<svg style="left:1467px;top:806px" width="8" height="6" fill="none" stroke="#6e6e6e" stroke-width="1.100"><path d="M1 1l3 3 3-3"/></svg>
<div style="left:1233px;top:820px;width:303px;height:2px;background:#464646"></div>
<div class="t" style="left:1239px;top:829px;font-size:10.800px;color:#8c8c8c">Lock:</div>
<svg style="left:1274px;top:830px" width="12" height="12" viewBox="0 0 12 12"><rect x=".5" y=".5" width="11" height="11" fill="none" stroke="#bdbdbd"/><path d="M1 1h3.300v3.300h-3.300zM7.700 1h3.300v3.300h-3.300zM4.300 4.300h3.400v3.400h-3.400zM1 7.700h3.300v3.300h-3.300zM7.700 7.700h3.300v3.300h-3.300z" fill="#bdbdbd"/></svg>
<svg style="left:1297px;top:829px" width="14" height="14" viewBox="0 0 14 14"><path d="M13.500.5c-3 1.500-6 4.500-7.500 7.500l1.500 1.500c3-2 5.500-5.500 6-9zM5 9c-2 0-2.500 2-4.500 4 2.500.5 6 0 6-2.500z" fill="#bdbdbd"/></svg>
<svg style="left:1320px;top:829px" width="14" height="14" viewBox="0 0 14 14" fill="#bdbdbd"><path d="M7 0l2.500 3h-1.800v3.300h3.300v-1.800l3 2.500-3 2.500v-1.800h-3.300v3.300h1.800l-2.500 3-2.500-3h1.800v-3.300h-3.300v1.800l-3-2.500 3-2.500v1.800h3.300v-3.300h-1.800z"/></svg>
<svg style="left:1344px;top:829px" width="15" height="14" viewBox="0 0 15 14" fill="none" stroke="#bdbdbd" stroke-width="1.300"><path d="M3 0v10.500h11M0 3h10.500v11"/><path d="M9 1.500l4 0M13 1.500v3.500" stroke-dasharray="1.500 1"/></svg>
<svg style="left:1369px;top:829px" width="11" height="13" viewBox="0 0 11 13"><path d="M2.800 6v-2.500a2.700 2.700 0 0 1 5.400 0v2.500" fill="none" stroke="#bdbdbd" stroke-width="1.500"/><rect y="5.500" width="11" height="7.500" rx="1" fill="#bdbdbd"/></svg>
<div class="t" style="left:1410px;top:829px;font-size:10.800px;color:#8c8c8c">Fill:</div>
<div style="left:1430px;top:826px;width:33px;height:20px;background:#454545;border:1px solid #5a5a5a"></div>
<div class="t" style="left:1433px;top:830px;font-size:10.800px;color:#7e7e7e">100%</div>
<div style="left:1463px;top:826px;width:15px;height:20px;background:#4c4c4c;border:1px solid #565656"></div>
<svg style="left:1467px;top:835px" width="8" height="6" fill="none" stroke="#6e6e6e" stroke-width="1.100"><path d="M1 1l3 3 3-3"/></svg>
<div style="left:1233px;top:853px;width:286px;height:91px;background:#4e4e4e"></div>
<div style="left:1233px;top:853px;width:286px;height:43px;background:#575757"></div>
<div style="left:1265px;top:853px;width:254px;height:43px;background:#696969"></div>
<svg style="left:1242px;top:869px" width="16" height="11" viewBox="0 0 16 11"><path d="M0 5.500c2-3.500 5-5.500 8-5.500s6 2 8 5.500c-2 3.500-5 5.500-8 5.500s-6-2-8-5.500z" fill="#f4f4f4"/><circle cx="8" cy="5.500" r="3.200" fill="#535353"/><circle cx="8" cy="5.500" r="1.500" fill="#f4f4f4"/><circle cx="9" cy="4.500" r="1" fill="#535353"/></svg>
<div style="left:1269px;top:858px;width:28px;height:35px;background:#efefef;border:1px solid #333;outline:1px solid #fff;outline-offset:-2px"></div>
<svg style="left:1271px;top:860px" width="24" height="31" viewBox="0 0 24 31" fill="none" stroke="#9a9a9a" stroke-width=".7"><ellipse cx="12" cy="9" rx="4.500" ry="6"/><path d="M7.500 7c1-5 8-5 9 0M9.500 15v3c-4 1-6 3-6 6v7M14.500 15v3c4 1 6 3 6 6v7M6 24h12M6 27h12"/></svg>
<div class="t" style="left:1307px;top:867px;font-size:12px;line-height:16px;font-style:italic;color:#fff;letter-spacing:-.6px">Background</div>
<svg style="left:1490px;top:867px" width="12" height="14" viewBox="0 0 12 14" fill="none" stroke="#f0f0f0" stroke-width="1.300"><path d="M3.300 6v-2.500a2.700 2.700 0 0 1 5.400 0v2.500"/><rect x=".8" y="6" width="10.400" height="7.200"/><rect x="5" y="8.500" width="2" height="2" fill="#f0f0f0" stroke="none"/></svg>
<div style="left:1519px;top:853px;width:17px;height:92px;background:#4a4a4a"></div>
<div style="left:1233px;top:944px;width:303px;height:2px;background:#444"></div>
<div style="left:1233px;top:946px;width:303px;height:27px;background:#535353"></div>
<svg style="left:1318px;top:953px" width="16" height="10" viewBox="0 0 16 10" fill="none" stroke="#8e8e8e" stroke-width="1.500"><rect x=".8" y="1.500" width="7.500" height="7" rx="3.500"/><rect x="7.700" y="1.500" width="7.500" height="7" rx="3.500"/></svg>
<div class="t" style="left:1348px;top:948px;font-size:15px;line-height:18px;font-style:italic;color:#8e8e8e">fx</div>
<svg style="left:1376px;top:951px" width="15" height="12" viewBox="0 0 15 12"><rect width="15" height="12" rx="1" fill="#e8e8e8"/><circle cx="7.500" cy="6" r="3.300" fill="#535353"/></svg>
<svg style="left:1406px;top:951px" width="16" height="16" viewBox="0 0 16 16"><circle cx="7" cy="7" r="6" fill="none" stroke="#e8e8e8" stroke-width="1.400"/><path d="M2.800 11.200a6 6 0 0 1 8.400-8.400z" fill="#e8e8e8"/><path d="M11 13h4.500l-2.200 2.500z" fill="#e8e8e8"/></svg>
<svg style="left:1434px;top:951px" width="14" height="12" viewBox="0 0 14 12"><path d="M0 1h5l1 1.500h8v9.500h-14z" fill="#e8e8e8"/></svg>
<svg style="left:1463px;top:951px" width="13" height="13" viewBox="0 0 13 13" fill="none" stroke="#e8e8e8" stroke-width="1.400"><rect x=".7" y=".7" width="11.600" height="11.600"/><path d="M6.500 3.500v6M3.500 6.500h6"/></svg>
<svg style="left:1493px;top:951px" width="12" height="14" viewBox="0 0 12 14"><path d="M0 2.500h12v1.500h-12zM4 .8h4v1.500h-4zM1 4.500h10l-.8 9.500h-8.400z" fill="#8a8a8a"/></svg>
<div id="fmenu">
<div class="r " style="top:1.0px"><b>New...</b><i>Ctrl+N</i></div>
<div class="r " style="top:21.0px"><b>Open...</b><i>Ctrl+O</i></div>
<div class="r " style="top:41.5px"><b>Browse in Bridge...</b><i>Alt+Ctrl+O</i></div>
<div class="r " style="top:61.0px"><b>Open As...</b><i>Alt+Shift+Ctrl+O</i></div>
<div class="r " style="top:81.0px"><b>Open as Smart Object...</b></div>
<div class="r " style="top:101.0px"><b>Open Recent</b><div class="ar"></div></div>
<div class="s" style="top:124.0px"></div>
<div class="r " style="top:128.5px"><b>Close</b><i>Ctrl+W</i></div>
<div class="r " style="top:148.0px"><b>Close All</b><i>Alt+Ctrl+W</i></div>
<div class="r d" style="top:168.0px"><b>Close Others</b><i>Alt+Ctrl+P</i></div>
<div class="r " style="top:188.5px"><b>Close and Go to Bridge...</b><i>Shift+Ctrl+W</i></div>
<div class="r " style="top:208.0px"><b>Save</b><i>Ctrl+S</i></div>
<div class="r h" style="top:228.0px"><b>Save As...</b><i>Shift+Ctrl+S</i></div>
<div class="r " style="top:248.5px"><b>Save a Copy...</b><i>Alt+Ctrl+S</i></div>
<div class="r " style="top:268.0px"><b>Revert</b><i>F12</i></div>
<div class="s" style="top:291.0px"></div>
<div class="r " style="top:295.5px"><b>Export</b><div class="ar"></div></div>
<div class="s" style="top:319.0px"></div>
<div class="r " style="top:323.0px"><b>Search Adobe Stock...</b></div>
<div class="r " style="top:343.0px"><b>Search Adobe Express Templates...</b></div>
<div class="r " style="top:363.5px"><b>Place Embedded...</b></div>
<div class="r " style="top:383.0px"><b>Place Linked...</b></div>
<div class="r d" style="top:403.0px"><b>Package...</b></div>
<div class="s" style="top:426.0px"></div>
<div class="r " style="top:430.5px"><b>Automate</b><div class="ar"></div></div>
<div class="r " style="top:451.0px"><b>Scripts</b><div class="ar"></div></div>
<div class="r " style="top:470.5px"><b>Import</b><div class="ar"></div></div>
<div class="s" style="top:494.0px"></div>
<div class="r " style="top:498.0px"><b>File Info...</b><i>Alt+Shift+Ctrl+I</i></div>
<div class="s" style="top:522.0px"></div>
<div class="r " style="top:525.5px"><b>Print...</b><i>Ctrl+P</i></div>
<div class="r " style="top:545.5px"><b>Print One Copy</b><i>Alt+Shift+Ctrl+P</i></div>
<div class="s" style="top:569.0px"></div>
<div class="r " style="top:573.0px"><b>Exit</b><i>Ctrl+Q</i></div>
</div>
</div></body></html>
